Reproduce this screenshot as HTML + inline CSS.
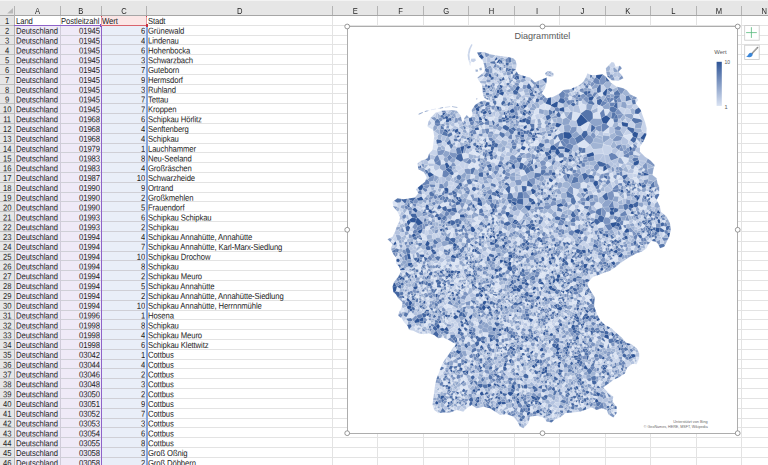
<!DOCTYPE html>
<html lang="de"><head><meta charset="utf-8"><title>Kartendiagramm</title>
<style>
html,body{margin:0;padding:0;}
body{width:768px;height:465px;overflow:hidden;background:#fff;position:relative;font-family:"Liberation Sans",sans-serif;font-size:7.7px;color:#1c1c1c;}
.abs{position:absolute;}
#hdr{left:0;top:0;width:768px;height:15.4px;background:#e6e6e6;}
#topstrip{left:0;top:0;width:768px;height:1px;background:#f3f3f3;}
#rowhdr{left:0;top:15.4px;width:14.3px;height:450px;background:#e6e6e6;}
.ch{transform:scaleY(1.15);position:absolute;top:6.5px;height:9.8px;line-height:9.8px;text-align:center;font-size:7.6px;color:#262626;}
.rh{position:absolute;left:0;width:14.3px;text-align:center;font-size:7.6px;color:#262626;height:9.82px;line-height:12.4px;overflow:hidden;transform-origin:0 4.7px;}
.c{letter-spacing:-0.08px;position:absolute;height:9.82px;line-height:12.6px;white-space:nowrap;overflow:hidden;transform-origin:0 4.7px;}
.d{letter-spacing:-0.11px;}
.r{text-align:right;}
.vl{position:absolute;width:1px;background:#e3e3e3;top:15.4px;height:450px;}
.hl{position:absolute;height:1px;background:#e3e3e3;left:14.3px;width:754px;}
.hvl{position:absolute;width:1px;background:#b4b4b4;top:6.3px;height:9.1px;}
.rhl{position:absolute;height:1px;background:#bdbdbd;left:0;width:14.3px;}
</style></head>
<body>
<div class="abs" style="left:14.3px;top:25.22px;width:86.9px;height:439.78px;background:#efeaf7"></div>
<div class="abs" style="left:101.2px;top:25.22px;width:45.7px;height:439.78px;background:#e9eef8"></div>
<div class="abs" style="left:101.2px;top:15.4px;width:45.7px;height:9.82px;background:#fbe6e6"></div>
<div class="vl" style="left:13.8px"></div>
<div class="vl" style="left:60.1px"></div>
<div class="vl" style="left:100.7px"></div>
<div class="vl" style="left:146.4px"></div>
<div class="vl" style="left:332.0px"></div>
<div class="vl" style="left:377.45px"></div>
<div class="vl" style="left:422.9px"></div>
<div class="vl" style="left:468.35px"></div>
<div class="vl" style="left:513.8px"></div>
<div class="vl" style="left:559.25px"></div>
<div class="vl" style="left:604.7px"></div>
<div class="vl" style="left:650.15px"></div>
<div class="vl" style="left:695.6px"></div>
<div class="vl" style="left:741.05px"></div>
<div class="hl" style="top:24.72px"></div>
<div class="hl" style="top:34.54px"></div>
<div class="hl" style="top:44.36px"></div>
<div class="hl" style="top:54.18px"></div>
<div class="hl" style="top:64.00px"></div>
<div class="hl" style="top:73.82px"></div>
<div class="hl" style="top:83.64px"></div>
<div class="hl" style="top:93.46px"></div>
<div class="hl" style="top:103.28px"></div>
<div class="hl" style="top:113.10px"></div>
<div class="hl" style="top:122.92px"></div>
<div class="hl" style="top:132.74px"></div>
<div class="hl" style="top:142.56px"></div>
<div class="hl" style="top:152.38px"></div>
<div class="hl" style="top:162.20px"></div>
<div class="hl" style="top:172.02px"></div>
<div class="hl" style="top:181.84px"></div>
<div class="hl" style="top:191.66px"></div>
<div class="hl" style="top:201.48px"></div>
<div class="hl" style="top:211.30px"></div>
<div class="hl" style="top:221.12px"></div>
<div class="hl" style="top:230.94px"></div>
<div class="hl" style="top:240.76px"></div>
<div class="hl" style="top:250.58px"></div>
<div class="hl" style="top:260.40px"></div>
<div class="hl" style="top:270.22px"></div>
<div class="hl" style="top:280.04px"></div>
<div class="hl" style="top:289.86px"></div>
<div class="hl" style="top:299.68px"></div>
<div class="hl" style="top:309.50px"></div>
<div class="hl" style="top:319.32px"></div>
<div class="hl" style="top:329.14px"></div>
<div class="hl" style="top:338.96px"></div>
<div class="hl" style="top:348.78px"></div>
<div class="hl" style="top:358.60px"></div>
<div class="hl" style="top:368.42px"></div>
<div class="hl" style="top:378.24px"></div>
<div class="hl" style="top:388.06px"></div>
<div class="hl" style="top:397.88px"></div>
<div class="hl" style="top:407.70px"></div>
<div class="hl" style="top:417.52px"></div>
<div class="hl" style="top:427.34px"></div>
<div class="hl" style="top:437.16px"></div>
<div class="hl" style="top:446.98px"></div>
<div class="hl" style="top:456.80px"></div>
<div class="abs" style="left:14.3px;width:132.6px;top:34.54px;height:1px;background:#cfcfd6"></div>
<div class="abs" style="left:14.3px;width:132.6px;top:44.36px;height:1px;background:#cfcfd6"></div>
<div class="abs" style="left:14.3px;width:132.6px;top:54.18px;height:1px;background:#cfcfd6"></div>
<div class="abs" style="left:14.3px;width:132.6px;top:64.00px;height:1px;background:#cfcfd6"></div>
<div class="abs" style="left:14.3px;width:132.6px;top:73.82px;height:1px;background:#cfcfd6"></div>
<div class="abs" style="left:14.3px;width:132.6px;top:83.64px;height:1px;background:#cfcfd6"></div>
<div class="abs" style="left:14.3px;width:132.6px;top:93.46px;height:1px;background:#cfcfd6"></div>
<div class="abs" style="left:14.3px;width:132.6px;top:103.28px;height:1px;background:#cfcfd6"></div>
<div class="abs" style="left:14.3px;width:132.6px;top:113.10px;height:1px;background:#cfcfd6"></div>
<div class="abs" style="left:14.3px;width:132.6px;top:122.92px;height:1px;background:#cfcfd6"></div>
<div class="abs" style="left:14.3px;width:132.6px;top:132.74px;height:1px;background:#cfcfd6"></div>
<div class="abs" style="left:14.3px;width:132.6px;top:142.56px;height:1px;background:#cfcfd6"></div>
<div class="abs" style="left:14.3px;width:132.6px;top:152.38px;height:1px;background:#cfcfd6"></div>
<div class="abs" style="left:14.3px;width:132.6px;top:162.20px;height:1px;background:#cfcfd6"></div>
<div class="abs" style="left:14.3px;width:132.6px;top:172.02px;height:1px;background:#cfcfd6"></div>
<div class="abs" style="left:14.3px;width:132.6px;top:181.84px;height:1px;background:#cfcfd6"></div>
<div class="abs" style="left:14.3px;width:132.6px;top:191.66px;height:1px;background:#cfcfd6"></div>
<div class="abs" style="left:14.3px;width:132.6px;top:201.48px;height:1px;background:#cfcfd6"></div>
<div class="abs" style="left:14.3px;width:132.6px;top:211.30px;height:1px;background:#cfcfd6"></div>
<div class="abs" style="left:14.3px;width:132.6px;top:221.12px;height:1px;background:#cfcfd6"></div>
<div class="abs" style="left:14.3px;width:132.6px;top:230.94px;height:1px;background:#cfcfd6"></div>
<div class="abs" style="left:14.3px;width:132.6px;top:240.76px;height:1px;background:#cfcfd6"></div>
<div class="abs" style="left:14.3px;width:132.6px;top:250.58px;height:1px;background:#cfcfd6"></div>
<div class="abs" style="left:14.3px;width:132.6px;top:260.40px;height:1px;background:#cfcfd6"></div>
<div class="abs" style="left:14.3px;width:132.6px;top:270.22px;height:1px;background:#cfcfd6"></div>
<div class="abs" style="left:14.3px;width:132.6px;top:280.04px;height:1px;background:#cfcfd6"></div>
<div class="abs" style="left:14.3px;width:132.6px;top:289.86px;height:1px;background:#cfcfd6"></div>
<div class="abs" style="left:14.3px;width:132.6px;top:299.68px;height:1px;background:#cfcfd6"></div>
<div class="abs" style="left:14.3px;width:132.6px;top:309.50px;height:1px;background:#cfcfd6"></div>
<div class="abs" style="left:14.3px;width:132.6px;top:319.32px;height:1px;background:#cfcfd6"></div>
<div class="abs" style="left:14.3px;width:132.6px;top:329.14px;height:1px;background:#cfcfd6"></div>
<div class="abs" style="left:14.3px;width:132.6px;top:338.96px;height:1px;background:#cfcfd6"></div>
<div class="abs" style="left:14.3px;width:132.6px;top:348.78px;height:1px;background:#cfcfd6"></div>
<div class="abs" style="left:14.3px;width:132.6px;top:358.60px;height:1px;background:#cfcfd6"></div>
<div class="abs" style="left:14.3px;width:132.6px;top:368.42px;height:1px;background:#cfcfd6"></div>
<div class="abs" style="left:14.3px;width:132.6px;top:378.24px;height:1px;background:#cfcfd6"></div>
<div class="abs" style="left:14.3px;width:132.6px;top:388.06px;height:1px;background:#cfcfd6"></div>
<div class="abs" style="left:14.3px;width:132.6px;top:397.88px;height:1px;background:#cfcfd6"></div>
<div class="abs" style="left:14.3px;width:132.6px;top:407.70px;height:1px;background:#cfcfd6"></div>
<div class="abs" style="left:14.3px;width:132.6px;top:417.52px;height:1px;background:#cfcfd6"></div>
<div class="abs" style="left:14.3px;width:132.6px;top:427.34px;height:1px;background:#cfcfd6"></div>
<div class="abs" style="left:14.3px;width:132.6px;top:437.16px;height:1px;background:#cfcfd6"></div>
<div class="abs" style="left:14.3px;width:132.6px;top:446.98px;height:1px;background:#cfcfd6"></div>
<div class="abs" style="left:14.3px;width:132.6px;top:456.80px;height:1px;background:#cfcfd6"></div>
<div class="abs" style="left:60.1px;width:1px;top:25.22px;height:439.78px;background:#cfcbd8"></div>
<div id="hdr" class="abs"></div><div id="topstrip" class="abs"></div><div id="rowhdr" class="abs"></div>
<div class="abs" style="left:0;top:14.8px;width:768px;height:1px;background:#a6a6a6"></div>
<div class="abs" style="left:13.700000000000001px;top:6.3px;width:1px;height:459px;background:#b4b4b4"></div>
<svg class="abs" style="left:0;top:0" width="15" height="16"><polygon points="13,8 13,13.5 7.2,13.5" fill="#b9b9b9"/></svg>
<div class="ch" style="left:14.3px;width:46.30px">A</div>
<div class="hvl" style="left:60.0px"></div>
<div class="ch" style="left:60.6px;width:40.60px">B</div>
<div class="hvl" style="left:100.60000000000001px"></div>
<div class="ch" style="left:101.2px;width:45.70px">C</div>
<div class="hvl" style="left:146.3px"></div>
<div class="ch" style="left:146.9px;width:185.60px">D</div>
<div class="hvl" style="left:331.9px"></div>
<div class="ch" style="left:332.5px;width:45.45px">E</div>
<div class="hvl" style="left:377.34999999999997px"></div>
<div class="ch" style="left:377.95px;width:45.45px">F</div>
<div class="hvl" style="left:422.79999999999995px"></div>
<div class="ch" style="left:423.4px;width:45.45px">G</div>
<div class="hvl" style="left:468.25px"></div>
<div class="ch" style="left:468.85px;width:45.45px">H</div>
<div class="hvl" style="left:513.6999999999999px"></div>
<div class="ch" style="left:514.3px;width:45.45px">I</div>
<div class="hvl" style="left:559.15px"></div>
<div class="ch" style="left:559.75px;width:45.45px">J</div>
<div class="hvl" style="left:604.6px"></div>
<div class="ch" style="left:605.2px;width:45.45px">K</div>
<div class="hvl" style="left:650.05px"></div>
<div class="ch" style="left:650.65px;width:45.45px">L</div>
<div class="hvl" style="left:695.5px"></div>
<div class="ch" style="left:696.1px;width:45.45px">M</div>
<div class="hvl" style="left:740.9499999999999px"></div>
<div class="ch" style="left:741.55px;width:45.45px">N</div>
<div class="ch" style="left:787.0px;width:45.45px">O</div>
<div class="rh" style="top:15px;transform:translateY(0.55px) scaleY(1.13) rotate(0.03deg)">1</div>
<div class="rhl" style="top:24.72px"></div>
<div class="rh" style="top:25px;transform:translateY(0.37px) scaleY(1.13) rotate(0.03deg)">2</div>
<div class="rhl" style="top:34.54px"></div>
<div class="rh" style="top:35px;transform:translateY(0.19px) scaleY(1.13) rotate(0.03deg)">3</div>
<div class="rhl" style="top:44.36px"></div>
<div class="rh" style="top:44px;transform:translateY(1.01px) scaleY(1.13) rotate(0.03deg)">4</div>
<div class="rhl" style="top:54.18px"></div>
<div class="rh" style="top:54px;transform:translateY(0.83px) scaleY(1.13) rotate(0.03deg)">5</div>
<div class="rhl" style="top:64.00px"></div>
<div class="rh" style="top:64px;transform:translateY(0.65px) scaleY(1.13) rotate(0.03deg)">6</div>
<div class="rhl" style="top:73.82px"></div>
<div class="rh" style="top:74px;transform:translateY(0.47px) scaleY(1.13) rotate(0.03deg)">7</div>
<div class="rhl" style="top:83.64px"></div>
<div class="rh" style="top:84px;transform:translateY(0.29px) scaleY(1.13) rotate(0.03deg)">8</div>
<div class="rhl" style="top:93.46px"></div>
<div class="rh" style="top:93px;transform:translateY(1.11px) scaleY(1.13) rotate(0.03deg)">9</div>
<div class="rhl" style="top:103.28px"></div>
<div class="rh" style="top:103px;transform:translateY(0.93px) scaleY(1.13) rotate(0.03deg)">10</div>
<div class="rhl" style="top:113.10px"></div>
<div class="rh" style="top:113px;transform:translateY(0.75px) scaleY(1.13) rotate(0.03deg)">11</div>
<div class="rhl" style="top:122.92px"></div>
<div class="rh" style="top:123px;transform:translateY(0.57px) scaleY(1.13) rotate(0.03deg)">12</div>
<div class="rhl" style="top:132.74px"></div>
<div class="rh" style="top:133px;transform:translateY(0.39px) scaleY(1.13) rotate(0.03deg)">13</div>
<div class="rhl" style="top:142.56px"></div>
<div class="rh" style="top:143px;transform:translateY(0.21px) scaleY(1.13) rotate(0.03deg)">14</div>
<div class="rhl" style="top:152.38px"></div>
<div class="rh" style="top:152px;transform:translateY(1.03px) scaleY(1.13) rotate(0.03deg)">15</div>
<div class="rhl" style="top:162.20px"></div>
<div class="rh" style="top:162px;transform:translateY(0.85px) scaleY(1.13) rotate(0.03deg)">16</div>
<div class="rhl" style="top:172.02px"></div>
<div class="rh" style="top:172px;transform:translateY(0.67px) scaleY(1.13) rotate(0.03deg)">17</div>
<div class="rhl" style="top:181.84px"></div>
<div class="rh" style="top:182px;transform:translateY(0.49px) scaleY(1.13) rotate(0.03deg)">18</div>
<div class="rhl" style="top:191.66px"></div>
<div class="rh" style="top:192px;transform:translateY(0.31px) scaleY(1.13) rotate(0.03deg)">19</div>
<div class="rhl" style="top:201.48px"></div>
<div class="rh" style="top:201px;transform:translateY(1.13px) scaleY(1.13) rotate(0.03deg)">20</div>
<div class="rhl" style="top:211.30px"></div>
<div class="rh" style="top:211px;transform:translateY(0.95px) scaleY(1.13) rotate(0.03deg)">21</div>
<div class="rhl" style="top:221.12px"></div>
<div class="rh" style="top:221px;transform:translateY(0.77px) scaleY(1.13) rotate(0.03deg)">22</div>
<div class="rhl" style="top:230.94px"></div>
<div class="rh" style="top:231px;transform:translateY(0.59px) scaleY(1.13) rotate(0.03deg)">23</div>
<div class="rhl" style="top:240.76px"></div>
<div class="rh" style="top:241px;transform:translateY(0.41px) scaleY(1.13) rotate(0.03deg)">24</div>
<div class="rhl" style="top:250.58px"></div>
<div class="rh" style="top:251px;transform:translateY(0.23px) scaleY(1.13) rotate(0.03deg)">25</div>
<div class="rhl" style="top:260.40px"></div>
<div class="rh" style="top:260px;transform:translateY(1.05px) scaleY(1.13) rotate(0.03deg)">26</div>
<div class="rhl" style="top:270.22px"></div>
<div class="rh" style="top:270px;transform:translateY(0.87px) scaleY(1.13) rotate(0.03deg)">27</div>
<div class="rhl" style="top:280.04px"></div>
<div class="rh" style="top:280px;transform:translateY(0.69px) scaleY(1.13) rotate(0.03deg)">28</div>
<div class="rhl" style="top:289.86px"></div>
<div class="rh" style="top:290px;transform:translateY(0.51px) scaleY(1.13) rotate(0.03deg)">29</div>
<div class="rhl" style="top:299.68px"></div>
<div class="rh" style="top:300px;transform:translateY(0.33px) scaleY(1.13) rotate(0.03deg)">30</div>
<div class="rhl" style="top:309.50px"></div>
<div class="rh" style="top:310px;transform:translateY(0.15px) scaleY(1.13) rotate(0.03deg)">31</div>
<div class="rhl" style="top:319.32px"></div>
<div class="rh" style="top:319px;transform:translateY(0.97px) scaleY(1.13) rotate(0.03deg)">32</div>
<div class="rhl" style="top:329.14px"></div>
<div class="rh" style="top:329px;transform:translateY(0.79px) scaleY(1.13) rotate(0.03deg)">33</div>
<div class="rhl" style="top:338.96px"></div>
<div class="rh" style="top:339px;transform:translateY(0.61px) scaleY(1.13) rotate(0.03deg)">34</div>
<div class="rhl" style="top:348.78px"></div>
<div class="rh" style="top:349px;transform:translateY(0.43px) scaleY(1.13) rotate(0.03deg)">35</div>
<div class="rhl" style="top:358.60px"></div>
<div class="rh" style="top:359px;transform:translateY(0.25px) scaleY(1.13) rotate(0.03deg)">36</div>
<div class="rhl" style="top:368.42px"></div>
<div class="rh" style="top:368px;transform:translateY(1.07px) scaleY(1.13) rotate(0.03deg)">37</div>
<div class="rhl" style="top:378.24px"></div>
<div class="rh" style="top:378px;transform:translateY(0.89px) scaleY(1.13) rotate(0.03deg)">38</div>
<div class="rhl" style="top:388.06px"></div>
<div class="rh" style="top:388px;transform:translateY(0.71px) scaleY(1.13) rotate(0.03deg)">39</div>
<div class="rhl" style="top:397.88px"></div>
<div class="rh" style="top:398px;transform:translateY(0.53px) scaleY(1.13) rotate(0.03deg)">40</div>
<div class="rhl" style="top:407.70px"></div>
<div class="rh" style="top:408px;transform:translateY(0.35px) scaleY(1.13) rotate(0.03deg)">41</div>
<div class="rhl" style="top:417.52px"></div>
<div class="rh" style="top:418px;transform:translateY(0.17px) scaleY(1.13) rotate(0.03deg)">42</div>
<div class="rhl" style="top:427.34px"></div>
<div class="rh" style="top:427px;transform:translateY(0.99px) scaleY(1.13) rotate(0.03deg)">43</div>
<div class="rhl" style="top:437.16px"></div>
<div class="rh" style="top:437px;transform:translateY(0.81px) scaleY(1.13) rotate(0.03deg)">44</div>
<div class="rhl" style="top:446.98px"></div>
<div class="rh" style="top:447px;transform:translateY(0.63px) scaleY(1.13) rotate(0.03deg)">45</div>
<div class="rhl" style="top:456.80px"></div>
<div class="rh" style="top:457px;transform:translateY(0.45px) scaleY(1.13) rotate(0.03deg)">46</div>
<div class="rhl" style="top:466.62px"></div>
<div class="c" style="top:15px;transform:translateY(0.55px) scaleY(1.13) rotate(0.03deg);left:16.1px;width:44.199999999999996px">Land</div>
<div class="c" style="top:15px;transform:translateY(0.55px) scaleY(1.13) rotate(0.03deg);left:61.4px;width:39.4px">Postleitzahl</div>
<div class="c" style="top:15px;transform:translateY(0.55px) scaleY(1.13) rotate(0.03deg);left:102.4px;width:43.7px">Wert</div>
<div class="c d" style="top:15px;transform:translateY(0.55px) scaleY(1.13) rotate(0.03deg);left:147.9px;width:184px">Stadt</div>
<div class="c" style="top:25px;transform:translateY(0.37px) scaleY(1.13) rotate(0.03deg);left:16.1px;width:44.199999999999996px">Deutschland</div>
<div class="c r" style="top:25px;transform:translateY(0.37px) scaleY(1.13) rotate(0.03deg);left:60.6px;width:39.0px">01945</div>
<div class="c r" style="top:25px;transform:translateY(0.37px) scaleY(1.13) rotate(0.03deg);left:101.2px;width:44.1px">6</div>
<div class="c d" style="top:25px;transform:translateY(0.37px) scaleY(1.13) rotate(0.03deg);left:147.9px;width:184px">Grünewald</div>
<div class="c" style="top:35px;transform:translateY(0.19px) scaleY(1.13) rotate(0.03deg);left:16.1px;width:44.199999999999996px">Deutschland</div>
<div class="c r" style="top:35px;transform:translateY(0.19px) scaleY(1.13) rotate(0.03deg);left:60.6px;width:39.0px">01945</div>
<div class="c r" style="top:35px;transform:translateY(0.19px) scaleY(1.13) rotate(0.03deg);left:101.2px;width:44.1px">4</div>
<div class="c d" style="top:35px;transform:translateY(0.19px) scaleY(1.13) rotate(0.03deg);left:147.9px;width:184px">Lindenau</div>
<div class="c" style="top:44px;transform:translateY(1.01px) scaleY(1.13) rotate(0.03deg);left:16.1px;width:44.199999999999996px">Deutschland</div>
<div class="c r" style="top:44px;transform:translateY(1.01px) scaleY(1.13) rotate(0.03deg);left:60.6px;width:39.0px">01945</div>
<div class="c r" style="top:44px;transform:translateY(1.01px) scaleY(1.13) rotate(0.03deg);left:101.2px;width:44.1px">6</div>
<div class="c d" style="top:44px;transform:translateY(1.01px) scaleY(1.13) rotate(0.03deg);left:147.9px;width:184px">Hohenbocka</div>
<div class="c" style="top:54px;transform:translateY(0.83px) scaleY(1.13) rotate(0.03deg);left:16.1px;width:44.199999999999996px">Deutschland</div>
<div class="c r" style="top:54px;transform:translateY(0.83px) scaleY(1.13) rotate(0.03deg);left:60.6px;width:39.0px">01945</div>
<div class="c r" style="top:54px;transform:translateY(0.83px) scaleY(1.13) rotate(0.03deg);left:101.2px;width:44.1px">3</div>
<div class="c d" style="top:54px;transform:translateY(0.83px) scaleY(1.13) rotate(0.03deg);left:147.9px;width:184px">Schwarzbach</div>
<div class="c" style="top:64px;transform:translateY(0.65px) scaleY(1.13) rotate(0.03deg);left:16.1px;width:44.199999999999996px">Deutschland</div>
<div class="c r" style="top:64px;transform:translateY(0.65px) scaleY(1.13) rotate(0.03deg);left:60.6px;width:39.0px">01945</div>
<div class="c r" style="top:64px;transform:translateY(0.65px) scaleY(1.13) rotate(0.03deg);left:101.2px;width:44.1px">7</div>
<div class="c d" style="top:64px;transform:translateY(0.65px) scaleY(1.13) rotate(0.03deg);left:147.9px;width:184px">Guteborn</div>
<div class="c" style="top:74px;transform:translateY(0.47px) scaleY(1.13) rotate(0.03deg);left:16.1px;width:44.199999999999996px">Deutschland</div>
<div class="c r" style="top:74px;transform:translateY(0.47px) scaleY(1.13) rotate(0.03deg);left:60.6px;width:39.0px">01945</div>
<div class="c r" style="top:74px;transform:translateY(0.47px) scaleY(1.13) rotate(0.03deg);left:101.2px;width:44.1px">9</div>
<div class="c d" style="top:74px;transform:translateY(0.47px) scaleY(1.13) rotate(0.03deg);left:147.9px;width:184px">Hermsdorf</div>
<div class="c" style="top:84px;transform:translateY(0.29px) scaleY(1.13) rotate(0.03deg);left:16.1px;width:44.199999999999996px">Deutschland</div>
<div class="c r" style="top:84px;transform:translateY(0.29px) scaleY(1.13) rotate(0.03deg);left:60.6px;width:39.0px">01945</div>
<div class="c r" style="top:84px;transform:translateY(0.29px) scaleY(1.13) rotate(0.03deg);left:101.2px;width:44.1px">3</div>
<div class="c d" style="top:84px;transform:translateY(0.29px) scaleY(1.13) rotate(0.03deg);left:147.9px;width:184px">Ruhland</div>
<div class="c" style="top:93px;transform:translateY(1.11px) scaleY(1.13) rotate(0.03deg);left:16.1px;width:44.199999999999996px">Deutschland</div>
<div class="c r" style="top:93px;transform:translateY(1.11px) scaleY(1.13) rotate(0.03deg);left:60.6px;width:39.0px">01945</div>
<div class="c r" style="top:93px;transform:translateY(1.11px) scaleY(1.13) rotate(0.03deg);left:101.2px;width:44.1px">7</div>
<div class="c d" style="top:93px;transform:translateY(1.11px) scaleY(1.13) rotate(0.03deg);left:147.9px;width:184px">Tettau</div>
<div class="c" style="top:103px;transform:translateY(0.93px) scaleY(1.13) rotate(0.03deg);left:16.1px;width:44.199999999999996px">Deutschland</div>
<div class="c r" style="top:103px;transform:translateY(0.93px) scaleY(1.13) rotate(0.03deg);left:60.6px;width:39.0px">01945</div>
<div class="c r" style="top:103px;transform:translateY(0.93px) scaleY(1.13) rotate(0.03deg);left:101.2px;width:44.1px">7</div>
<div class="c d" style="top:103px;transform:translateY(0.93px) scaleY(1.13) rotate(0.03deg);left:147.9px;width:184px">Kroppen</div>
<div class="c" style="top:113px;transform:translateY(0.75px) scaleY(1.13) rotate(0.03deg);left:16.1px;width:44.199999999999996px">Deutschland</div>
<div class="c r" style="top:113px;transform:translateY(0.75px) scaleY(1.13) rotate(0.03deg);left:60.6px;width:39.0px">01968</div>
<div class="c r" style="top:113px;transform:translateY(0.75px) scaleY(1.13) rotate(0.03deg);left:101.2px;width:44.1px">6</div>
<div class="c d" style="top:113px;transform:translateY(0.75px) scaleY(1.13) rotate(0.03deg);left:147.9px;width:184px">Schipkau Hörlitz</div>
<div class="c" style="top:123px;transform:translateY(0.57px) scaleY(1.13) rotate(0.03deg);left:16.1px;width:44.199999999999996px">Deutschland</div>
<div class="c r" style="top:123px;transform:translateY(0.57px) scaleY(1.13) rotate(0.03deg);left:60.6px;width:39.0px">01968</div>
<div class="c r" style="top:123px;transform:translateY(0.57px) scaleY(1.13) rotate(0.03deg);left:101.2px;width:44.1px">4</div>
<div class="c d" style="top:123px;transform:translateY(0.57px) scaleY(1.13) rotate(0.03deg);left:147.9px;width:184px">Senftenberg</div>
<div class="c" style="top:133px;transform:translateY(0.39px) scaleY(1.13) rotate(0.03deg);left:16.1px;width:44.199999999999996px">Deutschland</div>
<div class="c r" style="top:133px;transform:translateY(0.39px) scaleY(1.13) rotate(0.03deg);left:60.6px;width:39.0px">01968</div>
<div class="c r" style="top:133px;transform:translateY(0.39px) scaleY(1.13) rotate(0.03deg);left:101.2px;width:44.1px">4</div>
<div class="c d" style="top:133px;transform:translateY(0.39px) scaleY(1.13) rotate(0.03deg);left:147.9px;width:184px">Schipkau</div>
<div class="c" style="top:143px;transform:translateY(0.21px) scaleY(1.13) rotate(0.03deg);left:16.1px;width:44.199999999999996px">Deutschland</div>
<div class="c r" style="top:143px;transform:translateY(0.21px) scaleY(1.13) rotate(0.03deg);left:60.6px;width:39.0px">01979</div>
<div class="c r" style="top:143px;transform:translateY(0.21px) scaleY(1.13) rotate(0.03deg);left:101.2px;width:44.1px">1</div>
<div class="c d" style="top:143px;transform:translateY(0.21px) scaleY(1.13) rotate(0.03deg);left:147.9px;width:184px">Lauchhammer</div>
<div class="c" style="top:152px;transform:translateY(1.03px) scaleY(1.13) rotate(0.03deg);left:16.1px;width:44.199999999999996px">Deutschland</div>
<div class="c r" style="top:152px;transform:translateY(1.03px) scaleY(1.13) rotate(0.03deg);left:60.6px;width:39.0px">01983</div>
<div class="c r" style="top:152px;transform:translateY(1.03px) scaleY(1.13) rotate(0.03deg);left:101.2px;width:44.1px">8</div>
<div class="c d" style="top:152px;transform:translateY(1.03px) scaleY(1.13) rotate(0.03deg);left:147.9px;width:184px">Neu-Seeland</div>
<div class="c" style="top:162px;transform:translateY(0.85px) scaleY(1.13) rotate(0.03deg);left:16.1px;width:44.199999999999996px">Deutschland</div>
<div class="c r" style="top:162px;transform:translateY(0.85px) scaleY(1.13) rotate(0.03deg);left:60.6px;width:39.0px">01983</div>
<div class="c r" style="top:162px;transform:translateY(0.85px) scaleY(1.13) rotate(0.03deg);left:101.2px;width:44.1px">4</div>
<div class="c d" style="top:162px;transform:translateY(0.85px) scaleY(1.13) rotate(0.03deg);left:147.9px;width:184px">Großräschen</div>
<div class="c" style="top:172px;transform:translateY(0.67px) scaleY(1.13) rotate(0.03deg);left:16.1px;width:44.199999999999996px">Deutschland</div>
<div class="c r" style="top:172px;transform:translateY(0.67px) scaleY(1.13) rotate(0.03deg);left:60.6px;width:39.0px">01987</div>
<div class="c r" style="top:172px;transform:translateY(0.67px) scaleY(1.13) rotate(0.03deg);left:101.2px;width:44.1px">10</div>
<div class="c d" style="top:172px;transform:translateY(0.67px) scaleY(1.13) rotate(0.03deg);left:147.9px;width:184px">Schwarzheide</div>
<div class="c" style="top:182px;transform:translateY(0.49px) scaleY(1.13) rotate(0.03deg);left:16.1px;width:44.199999999999996px">Deutschland</div>
<div class="c r" style="top:182px;transform:translateY(0.49px) scaleY(1.13) rotate(0.03deg);left:60.6px;width:39.0px">01990</div>
<div class="c r" style="top:182px;transform:translateY(0.49px) scaleY(1.13) rotate(0.03deg);left:101.2px;width:44.1px">9</div>
<div class="c d" style="top:182px;transform:translateY(0.49px) scaleY(1.13) rotate(0.03deg);left:147.9px;width:184px">Ortrand</div>
<div class="c" style="top:192px;transform:translateY(0.31px) scaleY(1.13) rotate(0.03deg);left:16.1px;width:44.199999999999996px">Deutschland</div>
<div class="c r" style="top:192px;transform:translateY(0.31px) scaleY(1.13) rotate(0.03deg);left:60.6px;width:39.0px">01990</div>
<div class="c r" style="top:192px;transform:translateY(0.31px) scaleY(1.13) rotate(0.03deg);left:101.2px;width:44.1px">2</div>
<div class="c d" style="top:192px;transform:translateY(0.31px) scaleY(1.13) rotate(0.03deg);left:147.9px;width:184px">Großkmehlen</div>
<div class="c" style="top:201px;transform:translateY(1.13px) scaleY(1.13) rotate(0.03deg);left:16.1px;width:44.199999999999996px">Deutschland</div>
<div class="c r" style="top:201px;transform:translateY(1.13px) scaleY(1.13) rotate(0.03deg);left:60.6px;width:39.0px">01990</div>
<div class="c r" style="top:201px;transform:translateY(1.13px) scaleY(1.13) rotate(0.03deg);left:101.2px;width:44.1px">5</div>
<div class="c d" style="top:201px;transform:translateY(1.13px) scaleY(1.13) rotate(0.03deg);left:147.9px;width:184px">Frauendorf</div>
<div class="c" style="top:211px;transform:translateY(0.95px) scaleY(1.13) rotate(0.03deg);left:16.1px;width:44.199999999999996px">Deutschland</div>
<div class="c r" style="top:211px;transform:translateY(0.95px) scaleY(1.13) rotate(0.03deg);left:60.6px;width:39.0px">01993</div>
<div class="c r" style="top:211px;transform:translateY(0.95px) scaleY(1.13) rotate(0.03deg);left:101.2px;width:44.1px">6</div>
<div class="c d" style="top:211px;transform:translateY(0.95px) scaleY(1.13) rotate(0.03deg);left:147.9px;width:184px">Schipkau Schipkau</div>
<div class="c" style="top:221px;transform:translateY(0.77px) scaleY(1.13) rotate(0.03deg);left:16.1px;width:44.199999999999996px">Deutschland</div>
<div class="c r" style="top:221px;transform:translateY(0.77px) scaleY(1.13) rotate(0.03deg);left:60.6px;width:39.0px">01993</div>
<div class="c r" style="top:221px;transform:translateY(0.77px) scaleY(1.13) rotate(0.03deg);left:101.2px;width:44.1px">2</div>
<div class="c d" style="top:221px;transform:translateY(0.77px) scaleY(1.13) rotate(0.03deg);left:147.9px;width:184px">Schipkau</div>
<div class="c" style="top:231px;transform:translateY(0.59px) scaleY(1.13) rotate(0.03deg);left:16.1px;width:44.199999999999996px">Deutschland</div>
<div class="c r" style="top:231px;transform:translateY(0.59px) scaleY(1.13) rotate(0.03deg);left:60.6px;width:39.0px">01994</div>
<div class="c r" style="top:231px;transform:translateY(0.59px) scaleY(1.13) rotate(0.03deg);left:101.2px;width:44.1px">4</div>
<div class="c d" style="top:231px;transform:translateY(0.59px) scaleY(1.13) rotate(0.03deg);left:147.9px;width:184px">Schipkau Annahütte, Annahütte</div>
<div class="c" style="top:241px;transform:translateY(0.41px) scaleY(1.13) rotate(0.03deg);left:16.1px;width:44.199999999999996px">Deutschland</div>
<div class="c r" style="top:241px;transform:translateY(0.41px) scaleY(1.13) rotate(0.03deg);left:60.6px;width:39.0px">01994</div>
<div class="c r" style="top:241px;transform:translateY(0.41px) scaleY(1.13) rotate(0.03deg);left:101.2px;width:44.1px">7</div>
<div class="c d" style="top:241px;transform:translateY(0.41px) scaleY(1.13) rotate(0.03deg);left:147.9px;width:184px">Schipkau Annahütte, Karl-Marx-Siedlung</div>
<div class="c" style="top:251px;transform:translateY(0.23px) scaleY(1.13) rotate(0.03deg);left:16.1px;width:44.199999999999996px">Deutschland</div>
<div class="c r" style="top:251px;transform:translateY(0.23px) scaleY(1.13) rotate(0.03deg);left:60.6px;width:39.0px">01994</div>
<div class="c r" style="top:251px;transform:translateY(0.23px) scaleY(1.13) rotate(0.03deg);left:101.2px;width:44.1px">10</div>
<div class="c d" style="top:251px;transform:translateY(0.23px) scaleY(1.13) rotate(0.03deg);left:147.9px;width:184px">Schipkau Drochow</div>
<div class="c" style="top:260px;transform:translateY(1.05px) scaleY(1.13) rotate(0.03deg);left:16.1px;width:44.199999999999996px">Deutschland</div>
<div class="c r" style="top:260px;transform:translateY(1.05px) scaleY(1.13) rotate(0.03deg);left:60.6px;width:39.0px">01994</div>
<div class="c r" style="top:260px;transform:translateY(1.05px) scaleY(1.13) rotate(0.03deg);left:101.2px;width:44.1px">8</div>
<div class="c d" style="top:260px;transform:translateY(1.05px) scaleY(1.13) rotate(0.03deg);left:147.9px;width:184px">Schipkau</div>
<div class="c" style="top:270px;transform:translateY(0.87px) scaleY(1.13) rotate(0.03deg);left:16.1px;width:44.199999999999996px">Deutschland</div>
<div class="c r" style="top:270px;transform:translateY(0.87px) scaleY(1.13) rotate(0.03deg);left:60.6px;width:39.0px">01994</div>
<div class="c r" style="top:270px;transform:translateY(0.87px) scaleY(1.13) rotate(0.03deg);left:101.2px;width:44.1px">2</div>
<div class="c d" style="top:270px;transform:translateY(0.87px) scaleY(1.13) rotate(0.03deg);left:147.9px;width:184px">Schipkau Meuro</div>
<div class="c" style="top:280px;transform:translateY(0.69px) scaleY(1.13) rotate(0.03deg);left:16.1px;width:44.199999999999996px">Deutschland</div>
<div class="c r" style="top:280px;transform:translateY(0.69px) scaleY(1.13) rotate(0.03deg);left:60.6px;width:39.0px">01994</div>
<div class="c r" style="top:280px;transform:translateY(0.69px) scaleY(1.13) rotate(0.03deg);left:101.2px;width:44.1px">5</div>
<div class="c d" style="top:280px;transform:translateY(0.69px) scaleY(1.13) rotate(0.03deg);left:147.9px;width:184px">Schipkau Annahütte</div>
<div class="c" style="top:290px;transform:translateY(0.51px) scaleY(1.13) rotate(0.03deg);left:16.1px;width:44.199999999999996px">Deutschland</div>
<div class="c r" style="top:290px;transform:translateY(0.51px) scaleY(1.13) rotate(0.03deg);left:60.6px;width:39.0px">01994</div>
<div class="c r" style="top:290px;transform:translateY(0.51px) scaleY(1.13) rotate(0.03deg);left:101.2px;width:44.1px">2</div>
<div class="c d" style="top:290px;transform:translateY(0.51px) scaleY(1.13) rotate(0.03deg);left:147.9px;width:184px">Schipkau Annahütte, Annahütte-Siedlung</div>
<div class="c" style="top:300px;transform:translateY(0.33px) scaleY(1.13) rotate(0.03deg);left:16.1px;width:44.199999999999996px">Deutschland</div>
<div class="c r" style="top:300px;transform:translateY(0.33px) scaleY(1.13) rotate(0.03deg);left:60.6px;width:39.0px">01994</div>
<div class="c r" style="top:300px;transform:translateY(0.33px) scaleY(1.13) rotate(0.03deg);left:101.2px;width:44.1px">10</div>
<div class="c d" style="top:300px;transform:translateY(0.33px) scaleY(1.13) rotate(0.03deg);left:147.9px;width:184px">Schipkau Annahütte, Herrnnmühle</div>
<div class="c" style="top:310px;transform:translateY(0.15px) scaleY(1.13) rotate(0.03deg);left:16.1px;width:44.199999999999996px">Deutschland</div>
<div class="c r" style="top:310px;transform:translateY(0.15px) scaleY(1.13) rotate(0.03deg);left:60.6px;width:39.0px">01996</div>
<div class="c r" style="top:310px;transform:translateY(0.15px) scaleY(1.13) rotate(0.03deg);left:101.2px;width:44.1px">1</div>
<div class="c d" style="top:310px;transform:translateY(0.15px) scaleY(1.13) rotate(0.03deg);left:147.9px;width:184px">Hosena</div>
<div class="c" style="top:319px;transform:translateY(0.97px) scaleY(1.13) rotate(0.03deg);left:16.1px;width:44.199999999999996px">Deutschland</div>
<div class="c r" style="top:319px;transform:translateY(0.97px) scaleY(1.13) rotate(0.03deg);left:60.6px;width:39.0px">01998</div>
<div class="c r" style="top:319px;transform:translateY(0.97px) scaleY(1.13) rotate(0.03deg);left:101.2px;width:44.1px">8</div>
<div class="c d" style="top:319px;transform:translateY(0.97px) scaleY(1.13) rotate(0.03deg);left:147.9px;width:184px">Schipkau</div>
<div class="c" style="top:329px;transform:translateY(0.79px) scaleY(1.13) rotate(0.03deg);left:16.1px;width:44.199999999999996px">Deutschland</div>
<div class="c r" style="top:329px;transform:translateY(0.79px) scaleY(1.13) rotate(0.03deg);left:60.6px;width:39.0px">01998</div>
<div class="c r" style="top:329px;transform:translateY(0.79px) scaleY(1.13) rotate(0.03deg);left:101.2px;width:44.1px">4</div>
<div class="c d" style="top:329px;transform:translateY(0.79px) scaleY(1.13) rotate(0.03deg);left:147.9px;width:184px">Schipkau Meuro</div>
<div class="c" style="top:339px;transform:translateY(0.61px) scaleY(1.13) rotate(0.03deg);left:16.1px;width:44.199999999999996px">Deutschland</div>
<div class="c r" style="top:339px;transform:translateY(0.61px) scaleY(1.13) rotate(0.03deg);left:60.6px;width:39.0px">01998</div>
<div class="c r" style="top:339px;transform:translateY(0.61px) scaleY(1.13) rotate(0.03deg);left:101.2px;width:44.1px">6</div>
<div class="c d" style="top:339px;transform:translateY(0.61px) scaleY(1.13) rotate(0.03deg);left:147.9px;width:184px">Schipkau Klettwitz</div>
<div class="c" style="top:349px;transform:translateY(0.43px) scaleY(1.13) rotate(0.03deg);left:16.1px;width:44.199999999999996px">Deutschland</div>
<div class="c r" style="top:349px;transform:translateY(0.43px) scaleY(1.13) rotate(0.03deg);left:60.6px;width:39.0px">03042</div>
<div class="c r" style="top:349px;transform:translateY(0.43px) scaleY(1.13) rotate(0.03deg);left:101.2px;width:44.1px">1</div>
<div class="c d" style="top:349px;transform:translateY(0.43px) scaleY(1.13) rotate(0.03deg);left:147.9px;width:184px">Cottbus</div>
<div class="c" style="top:359px;transform:translateY(0.25px) scaleY(1.13) rotate(0.03deg);left:16.1px;width:44.199999999999996px">Deutschland</div>
<div class="c r" style="top:359px;transform:translateY(0.25px) scaleY(1.13) rotate(0.03deg);left:60.6px;width:39.0px">03044</div>
<div class="c r" style="top:359px;transform:translateY(0.25px) scaleY(1.13) rotate(0.03deg);left:101.2px;width:44.1px">4</div>
<div class="c d" style="top:359px;transform:translateY(0.25px) scaleY(1.13) rotate(0.03deg);left:147.9px;width:184px">Cottbus</div>
<div class="c" style="top:368px;transform:translateY(1.07px) scaleY(1.13) rotate(0.03deg);left:16.1px;width:44.199999999999996px">Deutschland</div>
<div class="c r" style="top:368px;transform:translateY(1.07px) scaleY(1.13) rotate(0.03deg);left:60.6px;width:39.0px">03046</div>
<div class="c r" style="top:368px;transform:translateY(1.07px) scaleY(1.13) rotate(0.03deg);left:101.2px;width:44.1px">2</div>
<div class="c d" style="top:368px;transform:translateY(1.07px) scaleY(1.13) rotate(0.03deg);left:147.9px;width:184px">Cottbus</div>
<div class="c" style="top:378px;transform:translateY(0.89px) scaleY(1.13) rotate(0.03deg);left:16.1px;width:44.199999999999996px">Deutschland</div>
<div class="c r" style="top:378px;transform:translateY(0.89px) scaleY(1.13) rotate(0.03deg);left:60.6px;width:39.0px">03048</div>
<div class="c r" style="top:378px;transform:translateY(0.89px) scaleY(1.13) rotate(0.03deg);left:101.2px;width:44.1px">3</div>
<div class="c d" style="top:378px;transform:translateY(0.89px) scaleY(1.13) rotate(0.03deg);left:147.9px;width:184px">Cottbus</div>
<div class="c" style="top:388px;transform:translateY(0.71px) scaleY(1.13) rotate(0.03deg);left:16.1px;width:44.199999999999996px">Deutschland</div>
<div class="c r" style="top:388px;transform:translateY(0.71px) scaleY(1.13) rotate(0.03deg);left:60.6px;width:39.0px">03050</div>
<div class="c r" style="top:388px;transform:translateY(0.71px) scaleY(1.13) rotate(0.03deg);left:101.2px;width:44.1px">2</div>
<div class="c d" style="top:388px;transform:translateY(0.71px) scaleY(1.13) rotate(0.03deg);left:147.9px;width:184px">Cottbus</div>
<div class="c" style="top:398px;transform:translateY(0.53px) scaleY(1.13) rotate(0.03deg);left:16.1px;width:44.199999999999996px">Deutschland</div>
<div class="c r" style="top:398px;transform:translateY(0.53px) scaleY(1.13) rotate(0.03deg);left:60.6px;width:39.0px">03051</div>
<div class="c r" style="top:398px;transform:translateY(0.53px) scaleY(1.13) rotate(0.03deg);left:101.2px;width:44.1px">9</div>
<div class="c d" style="top:398px;transform:translateY(0.53px) scaleY(1.13) rotate(0.03deg);left:147.9px;width:184px">Cottbus</div>
<div class="c" style="top:408px;transform:translateY(0.35px) scaleY(1.13) rotate(0.03deg);left:16.1px;width:44.199999999999996px">Deutschland</div>
<div class="c r" style="top:408px;transform:translateY(0.35px) scaleY(1.13) rotate(0.03deg);left:60.6px;width:39.0px">03052</div>
<div class="c r" style="top:408px;transform:translateY(0.35px) scaleY(1.13) rotate(0.03deg);left:101.2px;width:44.1px">7</div>
<div class="c d" style="top:408px;transform:translateY(0.35px) scaleY(1.13) rotate(0.03deg);left:147.9px;width:184px">Cottbus</div>
<div class="c" style="top:418px;transform:translateY(0.17px) scaleY(1.13) rotate(0.03deg);left:16.1px;width:44.199999999999996px">Deutschland</div>
<div class="c r" style="top:418px;transform:translateY(0.17px) scaleY(1.13) rotate(0.03deg);left:60.6px;width:39.0px">03053</div>
<div class="c r" style="top:418px;transform:translateY(0.17px) scaleY(1.13) rotate(0.03deg);left:101.2px;width:44.1px">3</div>
<div class="c d" style="top:418px;transform:translateY(0.17px) scaleY(1.13) rotate(0.03deg);left:147.9px;width:184px">Cottbus</div>
<div class="c" style="top:427px;transform:translateY(0.99px) scaleY(1.13) rotate(0.03deg);left:16.1px;width:44.199999999999996px">Deutschland</div>
<div class="c r" style="top:427px;transform:translateY(0.99px) scaleY(1.13) rotate(0.03deg);left:60.6px;width:39.0px">03054</div>
<div class="c r" style="top:427px;transform:translateY(0.99px) scaleY(1.13) rotate(0.03deg);left:101.2px;width:44.1px">6</div>
<div class="c d" style="top:427px;transform:translateY(0.99px) scaleY(1.13) rotate(0.03deg);left:147.9px;width:184px">Cottbus</div>
<div class="c" style="top:437px;transform:translateY(0.81px) scaleY(1.13) rotate(0.03deg);left:16.1px;width:44.199999999999996px">Deutschland</div>
<div class="c r" style="top:437px;transform:translateY(0.81px) scaleY(1.13) rotate(0.03deg);left:60.6px;width:39.0px">03055</div>
<div class="c r" style="top:437px;transform:translateY(0.81px) scaleY(1.13) rotate(0.03deg);left:101.2px;width:44.1px">8</div>
<div class="c d" style="top:437px;transform:translateY(0.81px) scaleY(1.13) rotate(0.03deg);left:147.9px;width:184px">Cottbus</div>
<div class="c" style="top:447px;transform:translateY(0.63px) scaleY(1.13) rotate(0.03deg);left:16.1px;width:44.199999999999996px">Deutschland</div>
<div class="c r" style="top:447px;transform:translateY(0.63px) scaleY(1.13) rotate(0.03deg);left:60.6px;width:39.0px">03058</div>
<div class="c r" style="top:447px;transform:translateY(0.63px) scaleY(1.13) rotate(0.03deg);left:101.2px;width:44.1px">3</div>
<div class="c d" style="top:447px;transform:translateY(0.63px) scaleY(1.13) rotate(0.03deg);left:147.9px;width:184px">Groß Oßnig</div>
<div class="c" style="top:457px;transform:translateY(0.45px) scaleY(1.13) rotate(0.03deg);left:16.1px;width:44.199999999999996px">Deutschland</div>
<div class="c r" style="top:457px;transform:translateY(0.45px) scaleY(1.13) rotate(0.03deg);left:60.6px;width:39.0px">03058</div>
<div class="c r" style="top:457px;transform:translateY(0.45px) scaleY(1.13) rotate(0.03deg);left:101.2px;width:44.1px">2</div>
<div class="c d" style="top:457px;transform:translateY(0.45px) scaleY(1.13) rotate(0.03deg);left:147.9px;width:184px">Groß Döbbern</div>
<div class="abs" style="left:14.3px;top:24.82px;width:86.9px;height:1.1px;background:#8f63c9"></div>
<div class="abs" style="left:100.60000000000001px;top:24.82px;width:1.2px;height:450px;background:#8f63c9"></div>
<div class="abs" style="left:100.10000000000001px;top:24.32px;width:2.2px;height:2.2px;background:#7c4fc0"></div>
<div class="abs" style="left:146.1px;top:26.419999999999998px;width:1.5px;height:450px;background:#86a7de"></div>
<div class="abs" style="left:101.2px;top:24.82px;width:45.7px;height:1.4px;background:#d8636d"></div>
<div class="abs" style="left:101.0px;top:15.9px;width:0.7px;height:9.82px;background:#e29aa0"></div>
<div class="abs" style="left:146.4px;top:15.9px;width:0.7px;height:9.82px;background:#e29aa0"></div>
<div class="abs" style="left:100.60000000000001px;top:15.6px;width:1.4px;height:1.2px;background:#cf3e49"></div>
<div class="abs" style="left:145.70000000000002px;top:15.6px;width:1.8px;height:1.2px;background:#cf3e49"></div>
<div class="abs" style="left:145.6px;top:24.32px;width:2.3px;height:2.3px;background:#c9303c"></div>
<div class="abs" style="left:346.7px;top:26.0px;width:389.5px;height:405.7px;background:#fff;border:1px solid #adadad;box-sizing:content-box"></div>
<svg class="abs" style="left:0;top:0" width="768" height="465" viewBox="0 0 768 465">
<defs><filter id="bl" x="-5%" y="-5%" width="110%" height="110%"><feGaussianBlur stdDeviation="5"/></filter></defs><g transform="scale(0.1)" stroke="#fff" stroke-width="1.2" stroke-linejoin="round" filter="url(#bl)">
<path fill="#dae3f3" d="M5066 3630l37 5 0-1-16-31-1 0zM5827 2083l-32-18-21 23 27 9zM5552 2660l-16 13 0 2 28 14 2-18zM4994 1986l-5-15-26-11-2 3-4 26 7 7 15 3 14-10zM4444 1218l-21-13-21 13-2 11 6 17 25-8zM6046 2252l2-8-18-23-27 1-32 27 13 32 48-5zM4343 2077l-21 32 32-4 2-1 5-15zM4821 1192l-4 14 5 12 21 13 13-15-14-26-10-2zM5669 2416l-27-21-17 21 3 3 34 8zM6270 1967l-7-38-25-3-1 1-2 5 9 52 17 2zM4548 2660l-18 5-9 37 20 8 21-9 2-18zM6657 2339l-17-21-12 5 0 49zM4725 1873l-15-30-25 1-9 22 24 34 1 1 16-5zM5096 1490l-43-12-1 20 16 21 26 0zM5313 1196l44-6-8-42-11-8-3 1-24 33zM4740 2577l-2-3-13 0-7 5-4 8 11 10zM6456 2359l-6-19-9-11-2 1-7 4-15 22 4 19 12 4 15-3zM4561 2858l-2 28 13 11 20-12 0-2-25-28zM5764 3971l-15 16 2 14 4 4 24-5zM6178 3379l-14 5 2 14 20 2 1-11zM4950 2391l-24-25-17 16 19 14 20-3zM5193 834l-7 25 14 16 23 4 10-35-8-20-17-7zM5814 3879l-7-16-23 21-1 5 16 8zM4890 850l-15-25-8-3-9 15 20 20 12-4zM4565 3914l28 13 8-16-4-10-6-2zM5420 4035l-3 5 25 31 2-1 15-36-8-9-30 9zM4452 2765l-30 2-4 7 2 8 14 6 19-16zM5921 2644l9 0 4-17-13-8-1 1zM4786 2855l-1-1-30-3-4 4 28 27 7-9zM4445 3053l-11 12-1 6 25 27 24-25-15-27-3 0zM5405 3304l7-15-13-13-13 3-18 17 17 11 13 0zM5208 1253l10-11 2-16-23-6-14 19 5 7zM5912 2565l-13-11-27 10 2 7 9 7 11 4zM4815 1084l5 9 29-2 8-28-8-10-2 0-32 19zM4773 3907l1 10 25 19 9-19-6-11zM5052 3434l-13-9-10 5-1 1 21 32 17 2zM6143 673l34 33 13-46-32 7-5-11zM5262 3487l4-7-27-19-13 15 1 15zM4167 2513l2 6 3 1 53-27-16-18zM4635 3884l-2-3-26 4-10 16 4 10 16 2zM4788 3008l10-9-16-31-17 2-1 30zM5785 2972l-10 11 1 12 26 9 17-10-2-22zM4588 3698l5-7 4-17-20-12-10 20 6 17zM5948 3632l25 10 4-5-2-28-20-2zM5427 4143l-16 12-4 13 26 7 1 1 3-19-1-5-7-9zM4609 1380l-3-8-9-5-23 10-4 8 8 14zM4001 2148l7-26-15-17-19 11 1 1 16 35zM4516 2616l-6 22 14 25 6 2 18-5 4-11-6-26zM5485 3402l-21 16 26 14-4-30zM4984 987l1-2-6-9-33 8 1 18 15 8zM4739 3241l21-8 5-7-17-18-20 14zM4501 1956l-16-7-11 13 15 26 13-1zM6013 3396l-4 18 31 20 5-16zM5724 3399l-6 13 5 12 10 1 8-11-15-15zM6136 2187l-29 12-2 32 58-12-3-14zM6220 3595l10 13 7 0 17-16-2-12-30-17-1 1zM4468 2619l-12-22-4-2-28 30 33 21 2 0zM5290 3922l8-4 5-23-31-14-7 6 16 34zM6032 3377l22 34 30-2 2-16-47-21zM5885 2313l15-12 0-4-11-16-4 0-11 33zM5789 1058l21 75 53-38 0-45-44-15zM6561 1992l-31 13-5 12 24 21 26-22-8-16 2-5zM5789 1058l30-23-4-25-27 0-1 2-3 42zM5815 3151l-6 2-5 26 17 9 12-29zM4849 1289l1-1 2-41-9-11-20 16 5 36zM5150 3559l13 14 18-27-4-8-14-6-15 7zM5768 4026l20 10-6-36-2 0zM4725 1995l-25-48-8-4-5 3-19 42 1 3 51 13zM5319 2196l18 12 2 0 25-14 0-1 1-10-30-12-15 17zM5139 3166l9-36-12-7-14 4-7 17 1 12 22 10zM4710 1741l-2 1-7 46 4 2 40-11 6-25-21-12zM4658 1406l3-13-26-5 2 21 4 5zM4782 2833l-19-7-8 25 30 3zM6052 1157l15-1 32-48-6-17-55-2zM5214 3294l18-16-5-27-14-3-12 3-2 2-6 18 11 19zM5098 973l2 10 32 13 5-9-9-27zM5295 4076l7 17 26 2-2-32-19-3-5 5zM5341 3057l21-10-2-25-12-1zM4509 1489l-19-39-16-4-23 29 0 28 0 1 42 13zM4830 2306l-20 18 0 2 3 4 36 2 2-9zM4436 2674l-5-13-15-7-3 3-6 12 14 22zM5108 746l4 29 10 0 9-31-3-2-14-1zM4670 3400l11 15 18 4 9-8 7-19-15-16-13 0zM4851 1379l-24-8-10 15 8 20 1 0zM5018 3522l-11-10-3 0-10 9 7 10 15 0zM5221 3882l-17-1-10 4-3 32 1 1 20-2 7-4 10-19 2-9zM6493 1978l-4-9-24-3 0 21 6 6zM5001 4085l2 1 17-2 2-9-25-17-7 12zM6044 2706l-11-7-16 10 1 4 8 7 15-5zM5685 2090l42 21 6-1 20-19-11-44-16-3zM4349 1631l-10-32-34-6-25 20 4 19 63 4 2-2zM5863 2419l4 10 12 5 26-14 0-40-26-8zM5298 2726l4 1 20-8 1-2-1-22-8-12-2 0-16 39zM6396 2097l27-4-3-19-37-20-7 11zM5542 1443l52-32-42-16-12 1zM5585 1886l-8-11-25-2-14 16 5 8 41-11zM6393 1821l-10-28-18 10-7 20 12 14 17-7 6-6zM5144 3629l4 16 6 4 12 4 10-4 6-34-11-6zM4344 2932l12 7 14-1 11-23-11-19zM4607 2907l-13 11 9 15 6 0 5-7-3-16zM4794 2546l-29-11-10 15 9 24 16-2zM6365 1803l-29-4 10 23 12 1zM5579 2832l-33 15 26 33 13-10-1-33zM4906 3478l15 13 20-6-7-38-29 21zM6210 2253l8 33 20-11-6-24-3-2zM5719 2582l0 1 21 23 18-13-16-18zM5237 912l-48 14 28 33 28-12 1-16zM5573 1719l-10 16 22 9 13-20-9-11zM5709 3567l17-10-6-14-26 1-2 2zM4101 2147l-9-3-9 5 8 49 1 0 31-23zM5101 3654l-34-4-12 17 14 15 24-8 9-19zM4998 848l32 9 6-2-3-25-12-8zM5425 3997l-14-22-4 1-18 26 27 9zM4682 3255l-13 0-16 17 26 20 8-2zM5366 2686l-18-23-6-1-8 13 24 25zM4549 3152l-19-11-4 2 1 22 3 6 1 0zM6095 2602l-1 1 15 23 1 0 29-13 2-17-11-5zM4418 2834l-7-2-11 15 14 18 24-6-2-12zM6487 2143l20-11-1-13-9-4-13 13zM5061 4068l-35 0-4 7-2 9 9 13 0 1zM4256 2085l-2-12-27 1-1 3 23 13 5-1zM4973 2096l41-8 0-1-16-21-31 16-3 6zM4828 2669l30-5 1-1 3-15-19-22-18 11-6 13zM4217 2600l10 15 2 1 18-7-8-39-11 3zM5076 3937l-16 20 8 36 12 2 10-4 6-34zM4884 3092l-24-15-17 27 21 9 22-5zM5485 2131l-6-10-38 19 22 30 8 1zM5555 3599l-29 6 0 1 3 12 7 5 23-13zM5227 3092l-5-31-31-5 2 5 29 34zM4485 3212l-15-15-5-2-16 2 4 24 19 15zM5237 3926l-6 15 16 7 14-3 1-15-11-9zM4925 681l0 46 9 3 30-11-1-9-34-30zM5678 2719l19 23 12-8 1-4-4-15-4-2-21 1-3 4zM4666 3849l-31 15-2 17 2 3 21 16 24-2 7-6-14-38zM5891 3479l2 27 23-22zM4391 1769l4 1 14-1 13-6 9-54-34-23-40 23-12 40zM5295 3179l39 17 4-28-29-14-14 3-3 9zM5459 3289l19-6-5-19-10-1-6 23zM5647 2994l-8 21 19 3 6-18zM6066 3748l-20 13 4 16 18 9 15-20 0-9zM5442 1231l10-22-35-27-15 6 10 38 7 7zM5733 2521l26-6 1 0 2-18-32 1-4 19zM5954 2128l-41 12 5 36 27 10 11-54zM4661 2405l-36-11-6 29 39 8 5-3zM4661 2837l13-19-17-2zM4121 2273l31-49-44-1-23 31 18 20zM5320 1462l0 1 31-3-6-31-5-4-27 13zM5517 3246l-25-3-4 11 14 26 14 4 20-19zM4613 3587l-36 15 1 31 31-3 2-2zM5979 2576l-15 16-4 27 23 8 22-17-2-16zM5768 3041l3-30-1-5-24 5-12 21 1 3 26 10zM5666 3083l-6 1-3 14 12 4 9-9zM4277 2736l7 3 23-22-21-8zM3990 2588l18-17-16-16-17 0-14 10-3 7 9 11-1 5zM3959 2913l31 6 13-31-33-20zM5515 2296l-5 19 7 7 15-4 2-16zM6496 2011l15 12 14-6 5-12-18-22-1 0-6 2-10 20zM5003 3762l4-2 7-24-23-9-11 19zM4861 2761l-8-13-4-2-12 1-15 14 3 15 21 4 13-7zM4947 3065l6 7 7 0 7-11-13-16-11 6zM5309 1901l12-18 0-14-51-8-2 2-4 44zM5280 2408l1 11 17 9 4-24-4-2zM5557 2633l23-16-20-28-9 41zM4707 3008l-9 49 4 5 20-6 13-18zM4393 2509l-7 13 22 36 27-32 0-4zM5516 3218l-31 5-1 1 0 4 8 15 25 3 6-17zM5511 3409l-9 29 18 7 14-12 0-25zM5459 3289l-2-3-12-6-26 9 20 15zM5658 3936l-14-18-18 9-6 15 29 22 3-1zM6340 1709l41-5 2-11-2-2-32-30-15 35zM4511 2937l-25-5-3 0-1 8 8 10 2 0 10-3zM4482 4044l-6-25-6-2-26 26 3 13 18 6zM5326 995l17 31 13-5 4-29-29 0zM5435 3064l-13-11-13 18 2 3 3 2zM4430 3806l-4 4-3 7 11 11 16-1 9-7-4-13zM4945 2220l-9 26 35 2 1-4-17-25zM6232 2251l27-2 4-6-21-35-7 0-6 41zM5020 1751l0 14 21 11 15-19-7-14-17 0zM5928 1135l1 50 82 3 2-4-14-55-22-12zM5275 1002l6-4 2-17-29-10-3 6 3 24zM5849 3623l6 29 4 1 19-12-5-15zM5417 1274l34 6 1-2 8-29-18-18-23 2-9 27zM5590 4159l-2-1-14 11 4 14 21-8zM4664 3773l-19 8-8 24 14 15 9 4 17-17-3-25zM4691 4041l-18-4-19 15 14 30 29-19zM5462 1621l-8 31 18 22 3 1 45-27-4-8-39-25zM6347 1862l22 18 1 0 8-6-10-33-16 7-5 11zM4146 2539l2 39 25-2-14-44zM5520 3007l23 13 10-2 4-11-5-12-1 0-28 3zM5052 2103l8 18 29 0 15-23-20-24-14-5zM5726 3369l-1-2-5-2-22 6-7 21 30 0zM4362 1402l-24-6-5 37-2 16 37-9zM4962 632l-2 1 6 12 26 9 6-14-14-12zM5115 2581l-18 36 18 6 17-15-2-24-4-4zM5363 3159l6-5 6-19-20-9 5 32zM5448 2215l16 28 27-16 3-11-18-16zM5462 3529l-10 11-6 12 3 14 11 12 39-13 1-2-7-22-24-15zM5879 2372l26 8 20-4 5-15-8-13-19-9-28 20-2 3zM4311 3231l-3-23-1-2-21-5-9 3 10 27zM5714 997l6-27 0-3-29-6-10 14 6 24 14 3zM4181 2449l-19-1-9 10 12 25 24-23zM4274 3040l20 6 9-6-8-18-11 0-7 5zM6084 1723l-4-23-7-10-40 25-2 3 1 18 1 2zM5621 2920l-12 1 1 8 12 12 13-6zM4436 2019l-41 31 25 24 33-15-5-31zM4671 3328l-12-11-21 13-2 25 2 1 28-6zM4805 3036l20-1 2-11-27-25-2 0-10 9 1 18zM4833 2868l20-29-14-4-22 14 5 20zM5145 3685l1 1 23-10-3-23-12-4zM4682 2626l-9 16 0 1 17-6-1-10zM4635 3864l-21-18-1-1-18 22 12 18 26-4zM4944 2183l29 7 2-2-2-15-23-15-13 17zM5327 4035l20 11 2 0 3-18-6-13-18 5zM5778 1541l-5 19 20 2 5-8zM4364 2706l2-9-6-14-6-4-16 7-4 31zM5046 1889l-19 38 8 10 44 1 5-5-33-44zM5041 1148l-16 6-2 19 26 3 2-26zM5554 3162l-9-9-9 7 9 11 7-2zM4222 3278l-8 3-26 20 10 17 25-5 0-35zM4342 1749l2 0 1 0 12-40-19-24-32 6-2 31zM4752 1549l37-15-1-3-29-13-13 18 0 11zM4068 2398l-13-7-14 11-1 23 1 1 32-10zM5158 3731l17-6 5-15-9-7-20 1-6 11 0 4zM3995 2436l-9-29-12-3-16 11 8 28 11 8 13-3 3-3zM5206 2111l-19 47 33 28 22-47zM4719 2510l8-18-17-13-4 0-1 24zM4717 2842l-2-1-26 8 9 31 15 1 9-11zM5552 1321l20 26 5 1 32-18-26-29-11-1zM4892 1295l-1 23 33-5 1-15zM5716 1201l48 7 46-67-1-7-77-17-6 3zM6052 2543l-9 34 11 7 21-18 2-10 0-1-12-14zM4050 2959l-6 8 1 3 25 8-5-19zM5420 1991l3-13-9-23-18 31 10 12 6 0zM5999 3230l1 0 13-17-13-13-1-2-6 5 3 22zM5467 2616l-9-8-13-4-13 9 16 32 15-14zM5182 3305l18 22 3 0 13-19-2-14-10-4zM4416 1886l-14 38 14 14 27-43-1-14zM5347 3269l12-4 16-12 2-16-21-9-14 17 0 21zM5434 2745l21 13 12-20-5-14-10-4-1 0-12 8-5 15zM5592 1578l-8 34 5 5 42-22 1-20zM6074 3613l-4 9 2 16 19-1-5-27zM4126 2037l-9-1-19 9-3 5 5 18 10 1 15-20zM5339 1994l22-19-23-35-16-1-23 22-3 14zM5852 2910l-22-5-8 15 15 38 4 0 6-4 6-39zM5756 892l-11-6-15 30 9 4 20-10zM4455 2774l-2-2-19 16 6 11 6 0 11-14zM4017 2195l-22 4-1 5 16 37 3 0 8-4 10-16zM6092 1270l-62 51 0 1 61 8zM5397 1521l22 24 29-15 2-10-5-3-46-4zM4842 3711l9-14-5-17-21-11-1 0-13 23 27 19zM5223 3018l30 12 10-8-15-17-22 2-4 7zM6346 3621l2-1 1-24-20-6-2 15zM5599 2402l10-28-23-9-13 15 23 22zM5509 3084l3 0-11-44-7-3-7 2-2 31 5 5zM5027 733l-7-4-18 7 12 28 20 3 0-1 4-6zM6471 1941l2 0 16-23-1-3-29-7-6 10zM6106 1780l-12 19 13 24 1 0 30-6 18-25-24-20zM5685 2634l22-12 0-27-32-6-14 13zM4837 2054l32 13 13-16-19-23zM5164 3940l26-13 2-9-1-1-41-15-11 23zM5273 2510l0-1-20-16-19 13-2 9 3 8 37-10zM5200 1022l1-11-13-17-14 3-12 22 10 12 8 2zM4727 2717l11-18-14-9-17 8-2 10 9 9zM4931 3968l-24-17-2 0-10 29 0 1 4 3 32-11zM5531 1299l5 18 6 0 14-25-8-5-16 9zM5552 2549l-7 22 7 12 8 2 7-3 6-12-12-24zM6451 1691l-19-9-17 25 4 7 21 0zM5082 4094l-1-5-42 13 20 22 2 0zM5692 3099l12 8 15-16-6-7-21 14zM4458 3875l-6-13-17 9 9 21 12-8zM5836 3746l1-18-14-14-24 22 23 20zM4332 1270l-34-18-22 7-1 8 57 32zM4431 2661l26-15-33-21-8 3 0 26zM4913 3835l-3 8 7 16 0 1 18-8 4-22-4-7zM5594 1411l8 0-25-54-25 38zM5196 1525l3 4 49 1-7-24-33-19zM4657 2916l20 17 14-50-13-2-19 12zM6278 1881l-4 7 8 18 10-3 3-12-6-10zM5264 3199l-26-1-4 13 10 17zM5360 2289l27-11-2-13-33 12 1 5zM5466 4187l-5-7-8-5-17 3 23 29zM4675 2698l3 10 2 1 25-1 2-10-10-18-5 2zM6113 3353l-25 6 1 31 36-7 1-21zM4724 2227l-9 17 3 21 14 2 32-29-6-15zM4796 1254l-2-1-11 18 10 26 3 1 18-2 7-6zM6043 3446l-6 9 2 15 23 19 6-5 13-46zM5027 2726l23-3 1-2-28-32-4 7 1 21zM5382 2864l11 48 17-3 2-7-11-34-15-8zM5222 2606l12 13 23-14 7-23-17-4-15 7zM4942 3565l-1-1-22-6-15 8 0 1 3 12 23 12 6 0zM5200 2772l22 13 8-17-25-12-1 0zM5978 3608l28 23 10-12-5-29-15-3zM4292 1666l-10-16-34 39 3 9 18 1 24-20zM5083 4083l-2 6 1 5 14 25 7 3 18-15-8-30-27 4zM5692 2853l-15 20-1 3 10 15 2 1 21-31zM5465 1893l-26-4-3 4-7 17 4 5 30 10 12-21zM4336 2651l15 10 24-18 0-11-35 0zM6031 1718l-43-29-23 24 2 8 44 21 21-6zM5193 2289l-6-9-22-8-17 16 5 20 6 5 17 1zM4526 3143l4-2 14-17-20-19-9 15 5 19zM6303 1463l17 17 16-9-5-26-27 10zM4665 3758l-34-16-3 30 17 9 19-8zM4616 2896l-5-10-13 5 1 5 8 7zM5045 1096l5-15-4-15-22-12-6 0-9 11 10 34zM5787 4042l-4 5-8 27 5 7 28-11-1-3zM5163 2936l-15 2-6 14 4 6 23-6 3-9zM4051 2209l19 4 13-14-26-19-13 8zM4619 3938l17 3 3-2 5-13 0-4-25-7zM4899 2535l12-24-39-31-11 27 33 32zM4864 2316l-13 7-2 9 2 11 4 1 8-2 12-16zM5983 3391l-17-17-13 28 10 9 10-3zM5670 2937l1-13-22-18-2 0-1 2-8 27 4 4 23 1zM5184 4073l-7 6-9 29 15 9 15 3 9-41zM5722 1645l26-16-4-15-25-8-7 11zM5345 1429l39-12-3-11-28-5-15 13 2 11zM5044 3493l-20-15-9 12 8 13 18 1 4-5zM6181 2559l-15-12-7 5-11 31 1 6 26 0 9-17zM4403 1155l21-8 2-21-12-17-44 13 1 1zM4394 1079l-2 0-5 9 12-2zM6178 1796l29-35-9-10-28 1-6 39zM4520 2161l-8 39 35 8 16-18-18-38zM6118 4034l-29 2 2 22 2 2 14-1zM4063 2368l23 3 2-30-29 15zM6142 3567l16 23 10-2 16-13 1-3-7-19-10-7-24 17zM4913 1119l4 3 6 0 23-11-5-14-23-3-10 8zM4924 1722l-12-11-18-2-8 13 7 27 16 1zM5375 3654l-5 10 22 18 13-20-6-11zM5837 4046l-21 3-9 18 1 3 10 8 24-25zM5184 2216l37-30-1 0-33-28-10 4-10 37 4 8zM5495 2448l-14 12 3 18 5 5 21-1 5-17-15-17zM5613 1722l-14 2 16 32 14 9 14-19zM4231 2797l-12-14-19 2-6 18 5 10 9 6 23-17zM5930 2742l36 6-5-24-24-3-3 3-5 16zM4990 3723l14-15 2-6-16-21-17 30zM5300 2831l-6-36-23 8-4 18 22 17zM4470 3992l-4 13 4 12 6 2 15 0 11-7-10-30zM4275 3244l-17-13-18 5 2 30 16 1 16-13zM4799 1551l-6-13-4-4-37 15 18 16zM4671 3553l-12 10-1 20 24 15 11-5 6-13-9-23zM4601 2777l-23 8 10 21 22-12-2-15zM4748 1588l17 27 10-4 4-26-8-8zM5146 3388l-19-14-15 7 7 20 23-3zM5500 3603l-16 9 0 20 22 16 1 0 5-14zM5220 3500l2 31 18 0 7-12-3-9-19-14zM5360 2140l23 6 1-1 8-20-23-6-8 7zM5527 1885l11 4 14-16-14-9zM5911 3329l-9-15-21 2-2 2 9 24 18-4zM4736 3377l-11 11 32 31 11-7-1-17-14-18zM5045 3499l-4 5-1 2 6 16 22 5 7-17-2-3zM5887 2995l-9-10-19 1-13 20 22 13 11-3zM4239 1991l22-23 0-11-20-14-20 3-5 19 16 28zM4533 1780l23-15-21-19-14 6-1 25zM4650 3379l0 17 20 4 17-24-11-13-1 0zM5379 1235l-7-42-14-2-12 48 26 6zM5513 1236l3 1 21-13-18-36-1 0-16 37zM4286 2254l-30 13-8 26 5 3 28 8 19-13-1-10zM5977 3963l-45-5-3 16 38 14 3-1 8-23zM4124 2542l-24-8-3 1 13 56 6 3 13-6zM6142 4121l-7-4-17 9-2 3 31 29 5-7zM5966 3374l-1-3-22 4-8 26 18 1zM6518 2156l-9 14 28 10 9-4 0-14zM5784 2153l15 0 17-29-2-6-10-3-18 10zM6343 1890l-2 3-1 9 9 9 24-4-3-27-1 0zM4795 1140l5 27 4 1 23-12 5-15-4-6-17-3zM4182 2665l1 30 2 2 24-7 1-17zM4781 1648l-30-3-8 31 10 12 25 10 18-19-1-10zM4541 3702l4-8 0-5-15-21-15 25 12 16zM4691 2145l23 3 12-8 10-19-31-22-19 10zM4978 2146l6-19-6-4-29 4 1 22zM4478 3037l-11 9 15 27 36 4 10-20 0-2zM4997 1023l14 6 20-27-3-21-43 4-1 2zM5878 3970l13 22 3-1 12-16-10-13-15 3zM4011 2631l-26-9-4 1 2 23 19 0zM5457 2826l-6-27-1-1-30 14 25 31 2 0zM6054 2485l-7-1-20 19-1 1 3 11 29-6zM5814 2118l21-24 0-11-8 0-26 14 3 18zM4659 3314l-20-24-22 12-3 15 24 13 21-13zM4572 1226l-25 5-1 24 42 22 2-1 3-6-4-20zM5667 2786l8 4 17-7 3-19-4-9-1 0-25 10-4 13zM5578 1554l-7-1-20 21 2 30 5 5 26 3 8-34zM5992 1768l-35-16-15 12-1 24 8 17 29 4 16-19zM5394 2745l-17 31 11 12 23-3 7-9-5-17zM5745 4047l0 3 38-3 4-5 1-5 0-1-20-10-1 0zM4188 2950l-13 11-1 18 2 4 5 2 2 0 7-3 6-16-6-16zM4746 1536l13-18 0-8-14-19-19 4-5 13zM6352 995l7 46 6 2-7-10 25-33-13-21zM4550 1348l7-13 0-3-12-17-28-1-1 1-2 5 12 31 15 3zM5266 1600l0-13-5-7-40 1-17 45 28 6zM5202 3705l7 5 22-13-3-31-5-2-28 17zM4944 3528l-19-2-6 32 22 6 4-36zM5962 2696l8 18 17 1 14-19 0-2-30-12-7 8zM5011 2000l16-22-20-2-13 10-1 3zM4433 3158l-15 10 13 26 6 1 2-1zM6331 1177l75 16-22-54-35-1-16 12zM5052 3434l29 5 10-6-8-24-1-1-39 10-4 7zM5850 3447l-14-16-9 1-5 6 3 25 11 5 2-1zM6040 3434l3 12 38-8 4-2 6-7-7-20-30 2-9 7zM4111 2722l1 10 21 4 11-13-18-15-8-1-2 2zM4675 2047l-21-13-4 1-22 45 1 3 35 6 19-28zM4986 843l-37-1-4 20 22 3 19-21zM5137 786l-7 11-1 11 28 9 6-17-24-15zM4468 3346l-1 46 9 4 27-20 1-28-17-14zM5991 958l19 10 25-16-8-23-19-10-28 11zM4231 2517l-39 17 6 12 42-1zM4985 2338l-15-10-12 6 18 8 9-3zM5809 2203l-8 4-5 4 3 30 7 5 14 1 17-15-5-20zM5415 3358l21-7-6-14-24 2-7 9zM6292 2321l-1 2 2 27 37 5-8-32zM6055 3936l-3 6 13 33 20 4 4-5-20-45zM4485 2454l-5-6-43 18 5 16 47 6 5-3 1-2zM5796 2211l-37-5-13 16 10 26 24 5 19-12zM4955 2917l6-31-2-2-19 17 2 18zM4526 2331l-16-7-18 50 9 11 23-8zM4293 2204l18 9 12-26-21-18-12 4-5 9zM4825 1406l-8 7 1 22 13 3 11-22-1-2-15-8zM4545 1414l-1 5 11 16 17 2 17-14-11-14zM4566 2779l-10 16 26 32 6-21-10-21zM4968 2889l39-15-5-21-8-7-40 25 5 13 2 2zM4346 2127l-26 11 0 1 26 23 19-24zM5347 3431l3 5 18 5 15-6-1-16-23-8zM4569 2924l-32-14-4 7 8 23 28-15zM5832 3949l-1 1-2 3 3 25 5 7 15-4-1-21zM4788 1615l-13-4-10 4-16 21 2 9 30 3 18-15zM4955 3528l13 15 11-3 14-19-6-4-23 2zM5678 3250l-1 1 10 29 24-1 8-30-15-7zM6405 2281l24 3 18-16-28-15-17 23 1 3zM5423 2985l13-4 4-11-29-16-12 7-2 2 3 11 10 7zM4807 810l38-45-6-9-61 29 5 15 12 16zM6395 1430l-15 3-14 24 5 16 29 2 0-8 11-16zM4966 2208l1-8-26 1-7 8 11 11 10-1zM5537 4139l-13-4-4 0-2 1 4 40 5 3 20-13zM5070 3339l-34 16 10 27 28-1zM4760 2212l15-15 1-31-23 1-22 21zM5270 4246l13-13 6-24-16-5-4 1-17 18zM4854 2404l7-13-4-22-13-2-3 21zM5464 2694l21 4 1-2-18-28-14 12 0 5zM5426 2169l14-29-14-11-5 2-13 22 0 8zM5460 3846l9 6 28-4-9-24-16 2-12 11zM4798 3938l1-2-25-19-13 12 5 16zM4842 2468l29 8 6-8-10-30-19 3-7 13zM4897 2282l6-7-4-20-28 3 0 16 11 8zM5338 2698l-6-21-18 6 8 12zM6130 2591l11 5 8-7-1-6-11-17-16-6-8 4-1 4zM4628 3772l-23 5-2 5 8 14 23 9 3 0 8-24zM4531 1271l0-1-31-19-5 1-2 2-3 27 7 10 5 4zM5723 1717l-32-15-20 17-6 15 41 12 19-5 1-3zM5533 3191l-27-4-2 2-2 6 16 13zM5814 3812l26 0 11-19 1-3-18-8-19 18zM4318 1231l-20 21 34 18 17-23-2-17zM4063 2312l-10-44-1-1-21 6-5 5 21 42zM4869 2067l-3 15 8 13 10 9 31-21-18-34-15 2zM3977 2451l-16 32 28 10 18-11-17-34zM4452 2830l9 14 13-4-3-20zM4465 3195l2-23-13-7-10 30 5 2zM4622 3971l7 13 19 3 2-2 0-16-14-9-13 5zM5859 3466l6 5 9-4 3-9-12-4zM5536 2474l12-4 3-3-11-20-22 18zM4488 2889l6-5-1-6-31-10-1 1 1 23zM5259 2362l4-26-10-9-16 29 19 11zM5495 2711l-10-13-23 26 5 14 20 2zM5703 2395l2-5-35-22-6 9 12 29zM5376 3493l-17 4-8 26 26 8 9-31zM4552 2649l43-7-2-28-47 8 0 1zM5344 2320l-12-17-28-7-6 4 3 26 21 5zM4251 2669l1 4 7 6 16-7-2-7-18-3zM4083 2315l6 24 31 12 12-15-4-18-38-10zM4792 2919l-15-12-12 14 3 11 15 3 9-15zM4610 2794l6 5 24-4 2-2-1-2-19-18-6-1-8 7zM5246 2277l-22 36 27 9 15-17-18-28zM5148 1561l14 17 37-35 0-14-3-4-10-1zM4698 2522l26-3-5-9-14-7-3 1-6 13zM4065 2720l28 23 11 0 8-11-1-10-35-10zM6362 3567l-3 26 12 19 8 1 13-30 0-14zM4790 2388l-5-3-28 14 1 6 25 19 9-16zM4702 2447l-1-12-2-5-19 1-5 40 15 4 6-2zM6535 2273l24 1 2-1-3-32-9-7-27 10-7 9 3 3zM3983 2646l-2-23-19-11-4 21 18 18zM5900 2297l20-13-17-13-14 10zM5264 3022l-1 0-10 8-10 20 12 13 7-1 3-4 6-26zM4684 2562l-5 5 4 27 6 1 10-7 2-22zM5495 3438l-11 28 13 16 28-16-5-21-18-7zM5691 2846l1 7 17 8 21-1-15-30-13-1zM5642 3866l25-31-15-15-32 31 8 17zM6391 1557l8-13-47-35-18 6-2 30zM5454 2680l-15-8-4 19 3 4 4 0 12-10zM5453 3409l-15 0-14 24 0 5 14 0 18-12 2-7zM5347 2941l19 1 7-26-2-1-12 3-14 20zM4673 4037l18 4 11-24-14-16-25 17zM4763 3256l12 10 19-26-8-13-3-1-18 0-5 7zM5833 2336l-19 10 0 19 23 6 14-10zM4968 2975l0-14-38-12-1 2 27 28zM5730 2860l1 0 26-17-2-22-24-8-16 17zM5368 1341l-6 11 17 19 12-9 2-14zM4952 1054l2 3 6 3 39 7 10-2 9-11-7-25-14-6-32 11zM4268 2123l2 2 13-8 4-18-26-2-2 18zM6550 1870l-23 8-1 24 8 8 7 1 19-36zM4460 3596l-4 25 14 6 18-13zM5014 3394l8-6-11-33-10 6 1 28zM5394 2416l-4 25 11 7 13-2 6-19zM6038 1800l28 7 11-9-3-3-36-22-3 6zM4563 1766l21-22-5-22-41 7-3 17 21 19zM5434 3755l-10-12-4-2-9 34 21 1zM4511 3845l14-2 8-13-13-10-13 16 0 2zM5264 3887l-30-5-3 2-2 9 22 27zM4779 2469l12 19 29-4 2-4-13-21-19-3zM6088 2174l17-25-10-26-32-4-13 54zM4954 2871l40-25-6-18-1 0-37 9-9 23 1 4zM5927 1938l0 7 2 3 41 1 8-20-12-19zM4490 4109l-3-11-13-9-20 21 2 15 1 0zM5401 2448l-11-7-15 21 10 13 9-2 6-6zM6191 1670l14-1 20-28-34-6zM4287 3231l-10-27-5-1-11 10-3 18 17 13zM4968 2889l-7-3-6 31 8 2 18-7zM5381 3595l13 2 14-5 1-7-8-36-16-3-3 3-14 36zM6096 1733l-7 20 17 27 26-8 2-16-15-28zM5701 3516l-7 28 26-1 5-12-18-17-2 0zM5822 3360l4 22 9 2 7-20zM4212 2401l-29-18-12 3-7 13 13 13zM5092 3186l-2 3 4 8 31 8 1 0-7-21-7-4zM6380 2397l20-12-23-30-13 42zM4791 3418l2 25 17 10 7 0 7-20-18-22zM5338 3168l-4 28 6 2 25-12-2-27-3-1-13 1zM5273 2372l10-11-4-10-20 11-3 5zM4637 2885l-5 0-9 11 3 10 14-1zM4272 2406l1-1 2-6-13-39-8-3-33 22-2 20zM5040 3506l1-2-18-1-1 17 7 0zM4582 2828l0-1-26-32-14 6-2 15 38 16zM5837 2958l-15-38-29 12 28 35zM5340 2006l16 23 13 0 9-6-9-47-1-1-7 0-22 19zM5091 807l3-3-13-28-8 31zM6050 2434l6 15 14 1 1-1-14-16zM4923 2148l7 28 7-1 13-17-1-7zM5714 3187l-1 14 12 8 3-1-2-22zM5489 1822l-1 23 29 6 7-5-7-24-23-6zM5423 2469l1-1-5-16-5-6-13 2-1 19zM4666 2662l3 3 7 0 15-11-17-10zM5278 1440l-18-6-11 30 8 9 25-13zM4469 3938l-14 21 39 7 4-7zM5630 1463l-28-50-18 53zM4826 1456l10 10 7 0 6-18-17-9zM5998 1856l-10 34 13 5 24-28-6-11-4-2zM5402 3549l8-1 18-20-2-15-17 2zM5264 3022l7 10 19 12 6 1 12-3 2-15-38-12zM4793 1297l-39 5 13 35 8 3 7 0 14-42zM5930 2742l-1-2-33 4 14 46 23-23 1 0zM5911 3912l-6-24-18-8-13 24 25 16 10-5zM4434 3828l-4 19 23 5-3-25zM4606 3974l8 3 8-6 1-6-4-3-15 5zM5762 2018l6-1 33-16 3-17-43-28-21 7-1 2zM4434 1597l-28 6 4 41 39-3 9-13zM5260 3612l9 15 9 1 11-11-15-13-12 3zM4353 2807l-6-2-11 7 0 29 33 3 0-12zM5880 881l38 10 1-18-19-23-11 4-2 2zM5770 3471l10 6 23-1 3-7-13-17-19 10zM4119 3189l33-31-18-14-24 20 0 17zM4746 1536l-25-28-27 18-7 12 53 13 6-4zM5122 2971l12 3 12-12 0-4-4-6-11-1zM5131 744l13 1 23-29-9-16 1-4-29 19-2 27zM5202 2638l2-4-3-14-14-5-15 17 1 19 3 0zM5737 3459l20 12 2-1-4-18zM5084 2074l28-15-9-23-12-1-24 28 3 6zM5484 2592l8-23-21 13 1 7zM4971 878l-4-13-22-3-3 2 15 25zM4174 2623l-5 1-1 10 13 21 23-13-1-2zM4967 2200l6-10-29-7-3 18zM5960 3727l-8 30 6 7 26-1 9-11-9-17zM6397 1420l-32-33-10 29 25 17 15-3zM4517 2464l-32-10 10 29 14-1zM5303 3721l-15-16-14-3-8 3-4 4-3 26 26 19 24-12zM5530 2702l6-27 0-2-25-17-11 27zM4170 2748l-2 3 6 21 15 0 10-23-6-8zM5619 3210l32 4 2-1-1-13-21-12-13 16zM5806 3245l-20 8 3 17 9 9 15-2 2-13zM4813 2211l-38-14-15 15-2 11 6 15 22 13 27-39zM4201 2847l-3 0-22 11 0 2 0 2 28 11zM4318 1231l29-1 1-1 1-18-42-33-13 21zM4040 3115l2-5-5-29-20-6-8 14zM5513 2201l21-28-14-18-33 22zM4964 719l4 11 19 17 15-11-14-20zM4632 3653l-16-6-10 26 20 10 9-5 3-18zM6360 2226l-6-15-22-11-6 30 18 15zM5282 2872l20 12 16-22-29-14-7 11zM6401 2446l-11-18-13 5 10 17 11 0zM5065 2567l-22-16-10 12 8 15 20-7zM4966 1294l-23 42 49 5 9-23 0-5-33-20zM5354 1089l-10 16-6 35 11 8 38-12 2-2 3-50-2-3-20 0zM3951 2415l-13-9-14 16 3 9 8 7zM4331 1449l-5 41 41 14 13-34-12-30zM5977 1117l22 12 38-41-14-22-21-14-15-1-11 25zM4281 3160l-16-3-15 18 17 16 24-19zM4654 1292l-1 1 19 30 18 2 1-2 0-35zM5903 2328l17-15-20-12-15 12zM4586 3965l4-4-5-10-28 6 0 3 14 8zM5487 2177l33-22-2-9-33-15-14 40 6 5zM4584 2582l-22-3-6 5-10 38 47-8 4-8zM4812 2618l13 19 18-11 3-10-17-17zM5304 4126l21 4 13-18-6-14-4-3-26-2-8 22zM4625 2390l0 4 36 11 6-14-25-20zM4515 4074l-9 10 0 3 2 3 39 18 1-1-16-34zM4894 1596l-1 19 17 13 6-5 0-22-16-12zM6010 3752l7 10 26-4-5-19-21-11zM5556 1737l7-2 10-16-19-7-6 11zM5019 2921l13 14 17 1 0-19-23-16zM4126 3136l-14-23-9 0-19 26 0 1 1 1zM5209 1759l3 3 53-18 0-1-22-40-19-8-22-1-4 16 5 38zM5258 1478l-17 28 7 24 3 4 9 4 29-12-3-12-11-24zM5876 2946l-3 0-26 8-6 4 18 28 19-1 8-24zM5726 2464l-5-13-19-5-10 7-2 6 9 22 14 6zM4686 2381l14 7 7-7 6-27-11-13-15 4-6 15zM4277 2629l0-1-16-10-13 27 7 6 11-3zM4891 2374l-16-17-11 4-2 5 16 11zM6371 3612l-23 8-2 1-5 20 26 1 12-29zM4757 2633l-5 22 4 7 4 1 13-9 3-24-4-1zM4965 1034l32-11-13-36-22 23zM4359 2769l-11 5-8 9 7 22 6 2 18-11-6-26zM4501 2305l-18-6-3 2-18 22 8 21 37-24zM5207 3367l11-15 0-7-15-18-3 0-17 10-6 9zM4408 2894l4-5-2-11-42-6-2 3-1 11 5 9zM4969 2943l-5-9-31-4-3 11zM5258 3569l3-4-7-12-1-2-30 6 0 6 13 10zM4640 2859l4-13-14-11-5 0 0 1 0 1 10 23 1 0zM6306 2475l13 26 13 3 2-1 18-43-1-2-6-3-32 7zM4773 3823l20-24-18-18-14 27zM4609 1945l-33-16-3 2-1 1-4 35 20 6 13-5zM6154 2466l-13-19-6 1-1 6zM6423 2093l2 2 17 3 22-10 6-26-33-13-17 25zM5915 3848l-2 9 8 17 10-1 13-25-20-7zM6301 1402l29-36-8-25-89 14-3 8 57 43zM4736 1813l-13 8-1 7 34 15 11-4 8-16zM5037 3197l-12-18-1 0-14 25 20 4 2-1zM5330 872l12-22-40-41-11 8-2 12 28 46zM4602 1421l32 9 7-10 0-6-4-5-28-1zM5263 3424l-1 16 13 9 33-8 2-10-26-23-2 0-11 6zM4216 2374l5 5 33-22-7-9-34-17-14 7 0 3zM4574 3414l10-1 5-3 0-27-19-3zM5023 2689l28 32 24-29-3-9-49 3zM5109 3269l3 12 26 6-5-26-22 6zM4896 1004l-14-10-7 4 21 12zM4865 1021l30 2 1-11-37-5zM5346 1239l-2 1 0 43 2 1 10 3 14-9 9-20-7-13zM4938 1583l-22 18 0 22 29 2 15-32-1-1zM5154 2401l1 3 21 18 13-1 17-39-21-16-24 14zM4682 598l0 2 11 25 4 28 9 1-3-20 9-4-8-19zM5028 981l4-8-3-16-35-15-15 33 0 1 6 9zM5818 1554l38-26-1-1-40 4-1 18zM4534 3487l6 19 20 8 10-17-2-6-13-6zM5717 2301l24 9 9-10-4-38-40-6-4 4zM5564 3092l-11 11-2 8 1 7 12 18 15-6-5-35-7-5zM4448 2258l-1 8 11 8 15-3 2-4-18-15zM4420 3777l-8 7-3 10 17 16 4-4 3-26-2-1zM5017 3450l-26 4-2 5 11 17 20-7zM5774 882l18 17 2 1 12-13-11-22-15-6-5 2zM6073 3310l16 18 18-9-16-29-5 1zM5154 1917l-14-46-34 0-7 57 22 8zM4623 2896l-7 0-9 7 0 4 4 3 13-1 2-3zM5471 2582l-14-12-15 7 3 27 13 4 14-19zM5173 1440l-5 2-4 10 2 11 33 20 8 1 11-22-10-14zM5594 3172l1 15 23 17 13-16 1-6-25-19zM4802 3127l-3 6-3 9 12 18 17-22 0-2zM5827 1481l27 0 43-36-55-50-72 44-1 3 20 27zM5393 1348l-2 14 26 16 11-21-35-10zM6110 1182l-5 0-41 57 30 28 27-1 20-40-9-36zM4014 2988l11 18 18-4 3-5-7-16-15-2zM5430 2366l-14-27-10-1-2 2-17 28 28 14zM5747 2413l-18 26-1 5 21-1 7-10zM4226 2077l-5 5-1 5 18 19 11-16zM4036 3215l6 10 27 27 8-7 5-33-18-19zM5770 1695l-13-29-30 7 4 22 35 4zM5332 3768l31-3 0-22-14-8-26 12zM5413 2759l5 17 28 2 10-13-1-7-21-13zM6159 2373l20 3 18-9-2-13-15-9-20 7zM5059 815l6 14 30-1-4-21-18 0-14 7zM4633 2290l-8 33 27 4 4-3zM4438 3360l-14-8-12 26 21-3 6 3zM6453 2487l3 3 11-7 14-35-14-8-21 8zM5032 3701l-1-35-3-1-38 16 16 21zM5112 3180l7 4 19-18-22-10-6 4zM5552 2995l5 12 19-5 7-17 0-2-3-5-8-9-2 0-9 4zM4606 3835l28-30-23-9-12 34zM4597 2320l-18-7-6 10 16 23 14-7zM5390 1081l2 3 48 17 10-5 10-58-5-5-10-2-47 27zM5389 2838l-3 22 15 8 19 1 15-22zM4819 2650l6-13-13-19-9-1-12 16 9 14zM5981 3856l20 18 3-1 5-12-6-25-9-6-20 1zM6062 3683l0 6 24 4 7-9-1-14-15-5zM6229 1805l-48-5 4 32 33-1 10-13zM5584 2255l-5-16-32-9-3 30 23 9 11-4zM6093 3684l26 5 3-5 0-13-23-8-7 7zM5070 3876l1 1 1 0 15-38-2-3-34 8-1 1 0 1zM5152 2723l19 4 12-19-17-7zM5051 2184l23-6 0-4-21-37-32 10-4 13zM5284 1460l-2 0-25 13 1 5 17 12 22-16zM5517 3098l36 5 11-11-42-13-9 6zM4464 2652l0 26 13 6 17-7 4-8-10-17zM5030 3208l-7 26 16 6 13-18-20-15zM5602 2901l6-1 3-2 11-21-11-10-26 3-13 10-3 13zM4590 4033l-26 4 8 23 35-7 0-3zM4765 3506l-45 25 0 1 37 10 15-8 6-7zM5935 3904l-1-1-23 9-2 3 23 23 4-9zM4295 2876l-18 15 8 8 25-3 0-1zM6550 2387l-6-23-25 12 8 16zM4738 3656l4 1 15-9 2-2-11-38-2 0-3 1-19 20zM4723 3601l-8-20-16-1-6 13 13 16zM5027 4045l-1 23 35 0 1-1-6-28zM5120 4072l-7 5 8 30 12 4 10-14-17-25zM5391 2499l-8-17-24 11 12 23zM5702 2951l9-11-14-14-17 15 9 9zM5897 2202l0 11 9 17 22-16-30-13zM5532 3523l-11-10-2 0-26 28 7 22 6 0 27-13zM5563 4113l-3-11-17 0-19 33 13 4zM6096 3478l13 4 8-22-11-27-15-4-6 7zM5769 3896l-7 6 8 25 3 0 11-12-13-19zM6091 2440l13 0 11-6-3-13-16-7-7 25zM5347 1510l-17 29 22 11 25-18-20-23zM6384 1723l-2-19-1 0-41 5-9 23 44 14 2-2zM5449 3949l-11-23-18-5-11 9 8 37 16-2zM4083 2149l9-5-5-37-13-12-1 0-27 39 2 8 15 10zM6292 2235l-1-25-41-6-8 4 21 35zM4792 1423l22 15 4-3-1-22-20 0zM6501 2424l13-13-19-20-26 20 1 1zM4882 1466l-5-4-26 17-1 6 5 9 18 4 9-9zM6003 3836l16-4 10-23-23-2-12 23zM4450 3827l3 25 1 1 22-5 3-13-2-7-18-8zM4785 3578l7 6 29-1 8-10-5-21-22 0zM4175 2961l-16-12-14 16 1 2 28 12zM6337 3508l-2 32 17 5 11-17-13-21zM5797 916l19 28 23-10 0-1zM4560 2128l-15 24 18 38 32-2 6-13-2-30-4-6-24-17zM4656 3041l-39 19 3 14 3 2 35-12 4-13zM5818 3555l14 4 14-6-1-29-10-3-32 9zM5403 3116l-2-11-28-10-6 5 18 28 14 2zM6111 3774l-6 4-5 18 28 8 5-4 6-3zM5126 3575l-13 12 6 9 15 6 22-16zM5911 3537l-19 16 16 23 34-5-1-18zM5580 2617l7-2 6-13-8-12-18-8-7 3 0 4zM5004 1558l14-33-5-5-37-7-13 10 3 20 10 14 25 3zM4415 3742l15-2 4-25-19-13-17-2-3 8zM5087 3603l23-16-21-30-3 0-14 18 10 25 4 3zM5746 3011l-13-23-17 6 8 32 10 6zM6447 2268l5-2 1-3-3-13-28-19-5 8 2 14zM5583 3032l-5 4 24 18 3-14zM6030 1816l8-16-3-21-32 11zM5700 2209l-20-35-25 14-2 18 28 8zM4433 3670l12-22-9-17-7-3-12 22-6 17zM4448 2028l5 31 10 5 25-11 6-28-19-11zM4532 3766l31 13 5-25-28-13-10 9zM4526 3608l33-24-2-10-26-6-16 9-7 12 4 14zM5938 2598l2 10 19 11 1 0 4-27-18-2zM6604 2274l44 30 11-7 0-29-21-8-29 5zM5274 3604l4-6 2-19-13-13-6-1-3 4-6 23 10 15zM5713 3752l-10-2-19 17 2 23 2 1 27-1 5-19-3-12zM5450 3255l13 8 10 1 15-10 4-11-8-15-29 17zM5023 1226l12 30 20-7 5-17-4-17-29 3zM4422 3913l1-5-4-7-23-10-16 19 2 5 24 5zM5721 3459l-4 22 23 14 2-3 2-5-11-28-6-3-1 0zM4525 3660l4 5 46-7 2-24-41-8zM4647 3398l-10 27 10 12 19-1 15-21-11-15-20-4zM4952 1880l13 16 21-14-4-19-22-3-8 14zM4456 3253l-25 4-3 21 16 13 25-25-4-11zM5042 680l8 27 6 3 5-29-5-4zM4827 3638l-4-2-18 0-7 10 12 21 14 2 1 0zM4429 3227l-9 5 0 17 11 8 25-4-20-24zM5250 2388l15 12 2-1 13-15-7-12-17-5zM5501 4100l13 2 10-12 1-20-3-8-32 19zM5699 4037l-10 22 23 8 8-8-12-24zM4886 1199l0 4 8 6 25-2 10-4 21-32-4-5-4-2-54 9zM4707 2381l34-9-5-15-23-3zM4856 839l-51-9 15 20 0 3 29 8zM4452 1251l-16 19 6 25 13-3 5-5 7-34-6-4zM4903 2974l14 1 3-2 9-22 1-2-1-6-31-4-12 12zM5186 3196l-11-4-15 15 2 3 10 3 16-4zM5276 3255l16 5 9-6-5-27-20-1-7 7zM5239 3454l23-14 1-16-20-4-20 17zM4728 1678l15-2 8-31-2-9-33-19-20 23zM5306 4044l2-2-2-29-1-1-31 18 0 2zM4356 2104l16 21 13-14-22-22-2 0zM5028 2329l1 0 28-4 18-15-1-3-45-30-2 1-12 29zM4204 2642l-23 13-1 8 2 2 28 8 10-11 2-6 0-6zM4309 2757l-3 32 32-6-25-28zM5890 3815l-29-31-9 6-1 3 27 39zM4510 2324l16 7 22-3-3-41-21-10-23 28 6 15zM4287 3098l9-17 1-2-8-7-10-2-25 24 1 3zM5369 2119l23 6 4-2-1-22-13-11-13 10zM5821 3122l-6 29 18 8 5-1 11-20-18-18-9 1zM4395 2111l-10 0-13 14 1 11 16 8 20-17zM4611 3947l0-4-19-13-8 10 1 11 5 10 1 0zM6383 1793l1-2-17-19-34 3-8 11 2 5 9 8 29 4zM6149 3778l-5-9-31 2-2 3 28 23 10-5zM4663 2600l-10-3-19 20 0 13 15 11 12-6 6-18zM4703 1693l25-15-32-38-4 1-13 45zM5084 2564l4-19-11-18-8-2-26 17 0 9 22 16zM4604 3967l15-5-8-15-20 14 4 3zM5633 2579l3-34-2-6-14-3-13 32 12 9 10 2zM5604 2568l3 0 13-32-10-8-10 5-9 25 0 2zM4860 3736l-18-22-14 31 3 5 20 5zM4492 3982l10 30 4 1 12-5-3-21zM4664 1798l-6-4-30 32 16 19 30-13zM5456 2527l-5 12 13 15 16-21-18-7zM5636 3125l2 23 17-1 11-10 0-5-27-9zM5396 2668l-3-2-17-3 0 10 16 1zM5710 2410l-7-15-27 11-7 10 30 18zM4780 3361l9 12 19 3 6-8-13-29-9-2-5 2zM4908 1494l0-26-26-2 0 23zM4839 2984l13-22-9-12-12 3-13 20 3 8 12 6zM5969 3829l5 2 20-1 12-23-2-3-15-5zM5212 1167l13-19-3-6-15-3-20 13zM4155 3251l-11 19 12 30 11-4 13-23-2-14zM5596 2662l-8-7-1 0-21 16-2 18 1 2 29-1zM4205 3081l-4 6 10 26 10-17zM5615 1756l-30-2-10 19 21 13 32-19 1-2zM5934 4010l3 9 14-1 0-17-10 0zM4660 3637l2 13 10 11 25-20-6-11-16-8zM4527 3962l1 17 18 17 6-2 2-32zM5849 3042l-17 18 2 5 2 3 28 7 15-9 2-11-15-12zM5484 1848l-4 15 19 15 8-2 10-25-29-6zM4897 2335l9-12 1-4-2-3-12-5-1 0-11 14zM5801 2043l-7 11 1 11 32 18 8 0 4-4 5-19-36-21zM5073 3016l6-15 0-1-27 0 11 21zM5335 2151l18-5 7-6 1-14-19-13-18 28zM5082 771l-3-15-11-8-30 12-4 6 15 28 31-19zM5127 3048l-6-8-26-11-4 3 16 29 1 1zM4350 4071l-9-18-16-2 13 37zM4699 3419l7 32 42-18 1-4-41-18zM4961 2802l26 26 1 0 9-12-13-36-26 7zM5676 2406l-12-29-22 6 0 12 27 21zM5511 1061l-4-9-47-14-10 58 36 8 9-8zM4837 1586l9-17-2-3-20-13-19 3-3 24 2 2zM6215 2295l26 22 24-34-1-1-26-7-20 11zM5544 3869l10 36 6 1 13-23-4-10zM4336 3086l-4 1-6 18 24 10 9-14-8-11zM5880 2636l22 19 19-11-1-24zM4622 2665l-10-16-14-3-11 31 23 16 4-2zM5872 1840l-2-6-32-17-31 15 0 44 23 10 35-3zM4134 3144l-2-6-6-2-41 5 25 23zM5602 2748l1 14 32 8 1-1 0-2-11-26-11-4zM4048 2804l28-4 10-15-14-17-3-1-24 12 2 23zM5173 2651l-1-19-20-16-1 1-12 26 25 17zM4149 2676l5 16 29 3-1-30-2-2-31 12zM4962 632l26-39-9-4-31 20 0 1 11 23 1 0zM4631 1591l56-13-3-38-35-10-19 2-11 3-2 2zM5734 3032l-10-6-31-3-3 1 0 29 34 1 11-19zM5138 3287l2 4 15-3-1-33-19 4-2 2zM4669 3255l-9-13-23-1-1 28 6 6 11-3zM6465 2180l2 7 38-17-22-20-2 1zM5855 3327l-2-1-3 1-18 18 18 13 11-1zM4614 2926l-5 7 18 20 6-1 0-27-7-3zM4480 3749l-6 3-2 3 1 15 13 10 5 0 13-8-1-3zM5809 4031l-5 3 12 15 21-3-2-16zM5092 3186l20-6-2-20-18 1-4 7zM5271 1061l-28 23-3 10 22 7 24-19zM6139 3731l-22-18-8 26 28 3zM4818 2062l-43-15-3 16 23 29 22-10zM4785 2356l31 9 7-9-10-26-3-4zM5043 2228l43-15-10-33-2-2-23 6-17 21zM5132 849l9-5-15-33-9 4-8 14zM5065 3472l9 33 19-31-26-8zM5576 3002l-19 5-4 11 14 20 3 1 8-3 5-4 10-15 0-1zM4764 1935l28-29-1-1-31-5-18 14 3 13zM5081 2743l-11 0-8 38 12 10 10-8 4-23zM4983 4111l8 0 12-25-2-1-24 4zM4235 2842l-5 2-5 27 12 10 25-13 4-14-19-10zM4884 2169l-2 18 7 10 24-3 9-14-18-24zM4434 3715l18-8 2-6-4-14-9-5-26 20zM4223 3313l3 28 7 1 22-4-4-23zM4276 3001l13-5 6-18-8-16-2 0-24 13-1 4 9 21zM5557 3594l-2 5 4 11 6 6 15-11 4-10-2-6-5-4zM4942 2864l-1-4-28-19-9 33 33-6zM5973 3211l-5 0-10 20 1 7 2 1 25 1 13-10-3-5zM4788 2145l3-4 1-45-20 1-29 22zM4213 2920l3 16 22 6 12-13-10-11-23-2zM4963 2744l3 5 19 1 9-20-4-11-5-4-18 4zM5385 3379l-10 4 8 34 12-8 0-19zM4722 2925l34 23 12-16-3-11-24-15-12 2zM6148 4090l-8 3-5 24 7 4 25 0 0-31zM4931 3929l10 2 13-27-10-15-4 0-17 20 1 13zM5481 1361l-5 8 3 19 17 15 26-15-11-27zM6644 2229l13-7-4-20-2-2-23 3-5 20zM6107 2459l-13 5-3 4 22 15 8-18-6-5zM4825 1366l-29-3-2 16 18 7 5 0 10-15zM5245 2915l-20-27-17 10-4 16 7 11zM5966 3333l-8 15 8 20 31-11-17-23zM4674 2818l1-1-5-17-7 0-7 15 1 1zM5810 2731l6-10-4-15-3-1-10 1-4 15 5 10zM5588 1702l-10-12-25 12 1 10 19 7 16-6zM5737 2979l21-3-1-29-22-6-4 26zM5182 3615l-6 34 13 4 16-6-16-32zM6304 1868l2 18 11 2 4-5 1-4-1-4-2-4-11-5zM5080 863l-17 27 8 12 29-14 1-6zM5079 3715l21 8 12-16 3-10 0-1-12-7zM4420 3232l-6-4-32 6 0 1 17 26 21-12zM5254 3553l24-33-4-2-27 1-7 12 13 20zM6175 2589l-26 0-8 7-2 17 12 14 35-15zM4571 1472l1-35-17-2-10 19zM5244 3228l0 3 25 2 7-7-2-24-10-3zM4830 2306l21 17 13-7 1-10-15-13-18 8zM5189 2421l-13 1-12 21 8 14 26-2 8-19zM5615 3743l16 24 9-4 5-38-16-11-13 11zM6546 1914l-2 19 15 11 21-6-22-23zM6530 2005l31-13-15-20-19-1-15 12zM5298 1441l-2 10 24 11-7-24-3-2zM4990 3150l-9 20 11 15 4 1 15-12-8-21-10-3zM5202 3841l1-1 23-21 1-4-29-17-8 7-5 33zM4545 3813l27 2 4-1 0-23-13-11-25 20zM6263 1873l-7 16 2 2 16-3 4-7-8-8zM5480 2296l-45-23-8 18 10 26 18 8 25-23zM4191 2725l14-5 10-23-6-7-24 7-1 23zM5331 2914l-1-9-6-8-19-5-23 31 3 3 43-4zM4942 3093l0-7-12-13-8-3-13 8 8 18zM5242 1417l-16 44 23 3 11-30-9-23zM4261 2688l7 10 6 1 3-1 11-12-3-7-10-7-16 7zM5609 3006l11-10-10-10-10 6zM4843 1466l-7 0-19 12 6 13 27-6 1-6zM4463 3676l1-23-19-5-12 22 8 12 9 5zM6397 1863l-15 10 32 30 11-22-12-19zM4611 2315l-14 5 6 19 11 0 7-15zM4635 3678l-9 5-4 29 28-8 2-8-12-16zM5101 2960l-4 10 6 12 14 0 2-10-17-12zM5043 3251l24 13 4-1 13-32-20-14-12 5-13 18zM5374 3470l-12-6-15 1 4 27 8 5 17-4zM5304 1393l-22 14 8 13 16 4 5-7zM6018 2078l7-6-5-26-34-26-26 4-23 33 32 39zM4426 1194l-3 11 21 13 13-1 5-23-6-5zM5128 2743l-14-35-12 4-11 23 23 18 6-1zM4189 3252l-11 7 2 14 34 8 8-3-3-4zM5335 3517l-17 22 21 14 12-30zM6005 2407l10 16 24-7 0-1-21-22zM4377 2674l-17 9 6 14 28-2-1-7zM5608 1149l-6 20 26 24 32-17-21-48zM6489 1918l-16 23 7 1 26-13-1-3zM6047 2455l-8-2 0 19 16-5 0-2zM5722 2629l-15-7-22 12-5 18 20 15 21-7 5-13zM4278 1112l15-5-3-8-15 4zM4392 1079l-14 2 2 8 7-1zM4310 1103l52-11-2-8-52 11zM5920 1751l13-33-22-9-20 38zM4882 3325l-51-2 2 40 29 10 8-2 9-6 6-26zM5354 1595l-7-4-17 1 0 47 3 0 28-24zM4209 2983l9 14 16 0 3-5-2-4-15-19-2-1zM5397 2733l-3 11 0 1 19 14 21-14 0-2-16-12zM4945 1625l16 28 13-1 6-6 16-35-36-18zM4989 3398l0 19 26 4-1-27-12-5zM4934 3645l-18 18 9 12 19 7 9-38zM5309 3742l-24 12-2 28 0 1 18 10 29-15 2-10-9-21-9-4zM5124 3996l-4 35 15 1 8-13zM4487 2849l-13-9-13 4-9 19 9 6 1-1zM6139 995l-37 31 44-2zM5886 2961l-8 24 9 10 5 0 26-12-12-21-2-2zM6251 2505l8-31-25-10-12 17zM4015 3126l25-10 0-1-31-26-9 15zM4240 2918l10 11 18 2 1-8-7-25-13 1zM5761 1956l24-33 0-27-55-18 3 73 7 12zM6331 2161l10-16-1-1 0-1-36-5-13 11 18 14zM4661 2864l1 0 5-18-7-8-1 0-15 8-4 13zM4889 1397l-4-22-7-6-16 10 0 42 12 1zM5308 1314l17 24 18-13-10-14zM4848 2914l7 21 10 0 10-19 0-2-17-6zM4338 1685l-2-25-44 6 1 13 13 12zM5559 2636l28 19 1 0 8-27-1-4-8-9-7 2-23 16zM4369 2844l-33-3-17 11 0 1 7 12 40 10 2-3 4-22zM6052 2692l-20-12 1 19 11 7 9-4zM6144 3563l24-17-7-19-8-6-8 2-15 17zM5107 3241l-11-11-6-1-6 2-13 32 10 6 28 0 2-2zM5413 2511l3-23-7-1-18 12 15 13zM4021 2764l7 4 26-29-1-9-28 1zM5904 3039l13-2-2-10-23-32-5 0-8 21zM5529 1848l12-5 21-23-14-23-15 4-16 21 7 24zM5642 2819l17 0 0-1-11-19-12 1zM4925 3675l-8 19 10 12 4 0 17-10 1-9-5-5zM5230 4131l1 19 20 12 16-4 3-4-1-26-23-12-5 0zM5541 2953l4-19-36 5-2 3 17 23zM4110 3164l-25-23-1-1-21 32 3 13 44-4zM4838 3007l28 3 6-4-10-19-23-3-6 3zM4104 2938l-12 13 9 14 12 4 8-12-12-18zM4755 2550l10-15-4-10-17-8-16 6-2 7 9 21zM5655 3147l3 14 14 7 5-16-11-15zM6223 2420l7 6 23-13-1-10-24-2zM4664 2690l5-25-3-3-16-5-8 8 9 25zM4369 4079l-4 13 9 13 8-4 4-16-13-8zM5204 3501l-2 24 11 12 1 0 8-6-2-31zM5200 3327l-18-22-10-3-8 14 19 21zM5955 3138l-3 21 2 1 23-7-9-18zM6152 2380l-9-3-23 14 3 8 4 6 11 3 15-18zM5076 4133l-15-9-2 0-15 21 23-3 10 4zM6580 1938l12 2 0-25-24-20-10 20zM5916 3802l-26 13-12 17-1 1 1 5 37 10 9-7-6-38zM5953 3402l-18-1-11 5-3 11 32 19 6-4 4-21zM6072 3927l42 36 11-2-42-36-6-6zM5384 1417l-39 12 6 31 0 1 12 3 19-7 14-28zM5318 3690l15 0 9-5 1-1-25-20-9 11 0 1 2 8zM6134 4064l-7-5-13 5 2 6 18 15zM5835 1311l29-3 33-83-2-6-15-4-77 47zM4231 2731l19-13 1-10-11-10-7-2-8 3zM6110 3537l-8 5-4 16 17 16 7-32zM4893 1615l1-19-23 6-4 9zM3924 2422l14-16-10-12-9-1-12 26zM3996 2539l-19-11-2 27 17 0zM4867 3464l-16 19 5 12 12 7 14-6 0-2zM5794 919l0 25 13 9 9-9-19-28zM4534 3935l-10 24 3 3 27 0 3-2 0-3 0-4-13-20zM4710 3764l17-11-3-15-21-5-14 12zM5434 2743l5-15-13-7-8 10zM4946 1052l-19-30-31 1 0 23 18 15zM5546 3854l24-8-2-16-2-1-27 7zM5390 2311l1-5-29-12-10 29 9 11zM4753 3075l8-13-3-9-14-2-4 14 8 12zM4364 4118l19 15 16-3 0-1-27-19zM5310 2681l-7-16-25-3-2 29 2 1zM5490 2334l3-18-13-14-25 23 3 8 15 6zM6211 1579l31 54 15 6 24-25 7-25-4-9-51-15zM5246 1257l23-6 4-5-17-24-34 2-2 2-2 16zM5580 3256l8-7 6-16-21-19-20 19-3 21zM5745 3178l-5-14-14 5 2 14 4 1zM5814 3325l36 2 3-1-8-16-26 4zM5772 2697l7 27 16-3 4-15-13-10-11-1zM6135 1920l7 43 47 1 7-3-3-19-20-20zM3971 2028l-31-21-15 10 7 42 40 9zM4385 3757l20-4 10-11-20-34-3 9-14 38zM4488 2795l-5-16-17 13 2 11zM5003 2671l17 9 18-23-11-15-24 1-8 11zM5755 4013l-13 10-2 13 5 11 22-21z"/>
<path fill="#c7d3e9" d="M5728 3925l8 14 22-1 1-3-18-20-10 4zM5608 2406l22-33-2-2-19 3-10 28zM5860 2181l-5-27-8-1-25 14 1 16 27 4zM5457 4075l19-7 6-27-23-7-15 36zM4508 4090l-2-3-19 11 3 11 2 1 13-8zM6022 1485l14 53 2 2 5 2 43 4 30-19 7-39-17-27-73-19zM5493 3149l24-12-1-11-1-2-30 3-2 1zM4042 3110l29-28-3-17-31 16zM5937 2568l40 4 3-17-1-2-31-13-15 9-4 15zM5229 4008l-27 16 22 34 21-14-10-32zM5013 1803l29-16-1-11-21-11-15 10zM6001 2381l20-3-1-17-22 0-8 9zM5337 2208l-6 24 20 17 18-11-2-3-28-27zM5992 3680l14 1 11-27-9-7-10 8zM4862 775l-17-10-38 45 55-3 6-14zM6403 2279l-1-3-12-18-12-4-16 11 17 23zM5979 2388l-1-16-8-7-27 28 22 5zM5989 3681l3 25 20 12 2 0 14-18-2-4-20-15-14-1zM5557 2802l-17 33 6 12 33-15 0-8zM4900 970l6 23 14 2 4-5-6-25zM5446 2894l-5-11-10-1-19 20-2 7 5 5 10 1zM6372 2195l-18 16 6 15 14 4 11-4 8-16-5-18zM4521 2702l9-37-6-2-26 6-4 8 19 27zM6120 2437l-5-3-11 6 3 19 8 1zM5894 1820l-24 14 2 6 34 21 27-20-1-13zM5119 3409l-1-7-35 7 8 24 8 4zM4374 2331l21 28 16-13 0-15-5-5-31 4zM4882 1695l0-16-15-18-18 11-11 29 0 1 20 5zM4284 2739l-7-3-5-1-26 21 4 6 12 7 29-18zM5506 3333l17-3 5-12-13-19-29 14 0 3zM5269 4205l4-1 3-34-9-12-16 4-5 22zM5680 3583l1 15 7 5 5-2 3-23-2-1zM4609 2071l-49-1-1 3 13 48 46-42zM4050 2230l-8-9-11 0-10 16 22 10zM5279 2351l1-11-17-4-4 26zM5809 4031l8-25-2-5-14 0-5 33 8 0zM4706 3610l-15 20 6 11 1 0 26-12zM5033 830l3 25 10 3 18-9 1-20-6-14zM4576 3241l-33 8-9 26 7 1 38-23zM5742 3579l-32-1 4 16 29-7 1-5zM4739 3253l24 3-3-23-21 8zM5829 3953l2-3-21-10-10 8 7 18zM4561 2768l-3-8-8-7-14 0-10 8 2 20zM6017 3487l2-4-30-24-12 13 1 6 20 17zM5567 1971l44 4-3-32-28-1-2 2zM4373 1361l13-17-43-34-9 0 7 51zM4510 2638l6-22-4-4-29 10 9 23zM5231 3810l7-4 8-25-14-17-16 14zM4251 2708l-1 10 18 11 6-30-6-1zM4611 2446l2-19-20-8-27 22 4 9 21 8zM5206 2492l-5-5-17 6 0 10 3 2 16-3zM5418 2776l-7 9 9 27 30-14-4-20zM4767 1337l-19 8-1 33 5 8 15 0 8-46zM6236 1797l-17-35-12-1-29 35 3 4 48 5zM4632 3653l6 7 24-10-2-13-16-7zM5464 1819l-18 13 5 14 17-4 2-19zM4918 1094l-7-27-7 5-9 28 13 2zM6091 3637l5 6 5 3 19-8 3-6-1-4-32-22-4 4zM5769 3623l4-7-2-13-25-6-2 6 6 24zM5514 1925l-18 6-5 14 15 9 12-11-2-17zM5431 2022l11 3 4-14-10-19-16-1-8 7zM5521 747l-2 18 11 1 10-23-5-6zM5596 3770l-2-13-17-22-17 3-11 24 33 25zM6375 1746l-44-14-2 2 4 41 34-3zM5034 3047l1-8-18-9-3 14 8 8zM4047 2032l-31-29-13 23 10 26 29-3zM4057 2918l2 20 13 3 7-20-9-8zM5537 3828l-16-19-2 0-9 6 0 29 28-9zM5642 3297l16 15 23-4 1-20-35-5zM5213 3248l14 3 4-3 13-17 0-3-10-17-21-1-3 3zM5238 1300l3-8-8-18-25-3-6 9 1 5zM5680 3649l20-6 2-14-17-17-23 15zM5514 3978l-3 1-18 26 7 15 31-17zM4652 1631l-26-21-19 7-13 31 29 41 20 3zM6334 3507l-21 17-1 19 23-3 2-32zM4839 2186l1-2 0-17-52-20-2 7 37 41zM4999 3549l2-18-7-10-1 0-14 19zM5580 3605l13 14 19-2 1-1 0-4-29-17zM4399 3261l-7 25 1 1 35-9 3-21-11-8zM4711 615l25 7 24-16-8-21-42 3-1 25zM4704 611l-4-11-5-50 2-12-19 2-2 10 6 48zM5212 3596l-8 4-2 9 12 6 17-3 3-16zM4941 826l8 16 37 1-1-6-21-29-1-1-12 2zM5704 3107l4 6 18 4 10-19-1-4-16-3zM4546 3996l-7 9 8 30 14 0 3-11-7-28-5-2zM5411 4155l-17-15-14 21 27 7zM5561 2973l9-4 1-24-22-15-4 4-4 19 10 16zM5157 3239l-10-9-14-3-6 15 8 17 19-4 3-2zM4520 1919l6-15-13-14-28-3-1 42zM6277 1267l68 17 3-4 5-42-35-33-35 31zM4923 3909l-17-10-14 23 32 0zM5392 3687l-21 5-4 5-2 8 1 5 2 1 12 2 14-10 0-14zM5716 2413l31-4 4-7-30-31-16 19-2 5 7 15zM4589 1348l0 4 8 15 9 5 18-23-6-20-5 0zM4287 3098l4 15 28-2-23-30zM5605 3885l-1 1 2 28 20 13 18-9 1-3-20-41zM5190 1183l-26 12 17 16 10 1 7-18-6-10zM6307 1660l-46-10-2 7 24 46 25-17zM4400 3942l6-22-24-5-15 20 5 4zM4720 2559l-11 0 9 20 7-5zM4828 1925l-18-13-12 1 1 20 22 2 7-5zM4755 3336l-1 9 7 16 19 0 7-22zM4463 2955l2 15 10 5 10-6 5-19-8-10zM4262 3054l17 16 10 2 5-26-20-6-13 9zM5213 3210l-1-14-8-9-10 2-8 7 2 13 2 3 20 1zM5476 4068l-19 7 7 21 1 1 11-3 9-14zM4312 3236l31 11 7-26-4-10-35 20zM4517 1995l12-6 8-12-8-26-28 5 1 31zM5890 3554l-13 45 1 1 28-12 2-12-16-23zM5083 2396l27 11 5-8-14-24-14-2zM5626 3446l4-8-1-4-42-11-4 4-2 6 7 10 23 10zM4813 539l27 34 16-4-13-46-10-3-16 1zM4659 2893l19-12-16-17-1 0-16 20zM5884 3210l-6 7 1 27 9 10 24-15 1-16-7-6zM5719 3091l16 3 6-18-14-14-15 17 1 5zM4745 1491l12-18-1-5-26-16-21 11 0 12 17 20zM5903 2657l-1-2-22-19-1 1-16 42 26 6 3-1zM5549 1354l-31-18-1 0-6 25 11 27 8 1zM5862 4094l5-2 37-13-44-9zM6087 2470l9 30 18-14-1-3-22-15zM4241 1943l10-23-27-28-10 8 6 45 1 1zM4944 3984l26-28-15-11-6-2-18 25 0 5 2 4zM4874 3545l-7-17-23 14 15 15 12-6zM4863 2342l-8 2 9 17 11-4 1-8zM4265 2044l-5-9-28-15-20 27 14 14 37-15zM5844 3234l-5 19 15 4 7-10-9-18zM4528 3521l12-15-6-19-9-4-23 37zM4963 1523l13-10 3-31-5-8-30-2-14 41 1 1zM4460 3596l28 18 11-1 13-10-4-14-35-26-18 23zM5628 1767l-32 19 5 34 23 9 32-14zM4789 1425l-25 1-1 2 3 21 15 2 1 0 9-10zM4054 2494l11-14-11-25-26 5-15 23 14 13zM5807 2586l-22-9-7 0-10 17 7 18 29 2 11-12zM5511 2063l-4 15 34 38 21 0 8-6 4-44-8-17zM6139 942l1-17-15-14-23 9 1 20zM4373 1361l-32 0 1 6-4 29 24 6 13-10zM5551 2467l-3 3 3 31 3 1 1-1 16-24-1-7-3-2zM4116 2594l0 33 5 6 36-20-22-25-6 0zM5202 3841l2 40 17 1-13-37-5-5zM5259 2251l1-2-8-47-26 43zM6359 1041l-28 4-6 35 26 17 37-23-5-7-18-24zM5325 2519l0 1 14 7 6-4-4-21-8-1zM6019 1856l34-25-23-14-15 12 0 25zM5310 3477l-13 6-10 38 10 8 28-24 0-8zM5020 2455l9-10-15-13-21 21 1 5zM4849 3936l-12-28-12 7 16 35 3-1zM4556 1140l4 37 16 5 33-17-1-7-22-27zM5572 2969l8 9 19-13 0-6-1-2zM4959 2884l-5-13-12-7-5 4-13 26 16 7zM5433 4126l-10-13-24 4-1 4 29 22 2 0 5-10zM5806 887l23-4-12-31-22 13zM5717 2547l6 12 19-11-1-4-8-6-8 0zM5146 3686l5 18 20-1 5-23-7-4zM5341 3310l6-2 8-7 3-6-11-26-5-3-7 2-20 24 4 11 2 1zM5483 3319l5 40 1-1 17-25-20-17zM5896 2744l-12-2-7 2-13 15 5 29 31 12 10-10zM5116 2471l18-25-9-13-13-5-21 10 0 16zM5913 2140l-2-1-24 21 2 15 14 10 15-9zM4579 3253l-38 23 31 16 4 0 17-17 1-2zM4269 3301l9 33 5-1 25 7-5-24-7-8-25-9zM6134 1756l28-14 2-13-11-15-10-2-19 8-5 8zM5608 3291l-12-2-2 0-5 7 1 32 2 5 11-1 18-21 1-3zM5347 3465l15-1 6-23-18-5-8 26zM5459 3080l20 13 2-19zM6218 1831l6 25 13 4 11-5 9-12-29-25zM4954 2390l10-1 9-20-12-17-8-2-6 4zM4594 3273l-1 2 24 27 22-12 3-15-6-6-27-5zM5030 675l1 0 6-10-4-18-14-3-8 25zM4866 2082l-42 6 10 27 40-20zM6193 3655l-13 12 6 21 22-3 10-8-3-23zM4568 3099l3-15-43-27-10 20 1 9 4 7zM5767 2699l-10 10 0 22 17-1 5-6-7-27zM4666 3849l7 5 28-13-1-12-11-18-12-4-17 17zM5864 1541l1 1 65-23 0-26-29-48-4 0-43 36 1 46 1 1zM4997 2601l1-1-25-24-17 6 2 17 21 10zM6381 1691l6-40-3-6-35 13 0 3zM6001 1928l15 34 5 0 40-34-15-17-33 1zM4620 3204l-1 1 17 28 11-13zM5251 3921l11 9 19-9-16-34-1 0-13 33zM4983 2913l32-29-8-10-39 15 13 23zM5062 3749l4 0 11-34-11-11-26 7-3 9zM4922 3070l7-22-2-4-33 0 0 1-1 11 15 21 1 1zM6039 2453l-6-6-14 1-6 20 11 8 14-3 1-1zM4884 2759l-23 2-2 12 7 8 15 6 12-14zM5036 3355l-18-7-7 7 11 33 20 2 4-8zM5142 3810l-12-13-19 15 8 29zM4559 2886l2-28-13-2-23 26 0 7 12 11zM4886 1199l2-26-1-1-25-10-11 8 0 12zM5451 1846l-3 9 22 13 10-5 4-15-16-6zM5426 2721l-1-12-9-3-20 21 1 6 21-2zM6030 1322l3 31 62 8 4-15-8-16zM5448 2939l-34 11-3 4 29 16 8-5 2-20zM5814 1549l1-18-4-4-17 11 5 15zM5633 2507l-23 21 10 8 14 3 3-3 8-28-6-4zM4831 2953l12-3 4-8-19-20-10 4-3 3-1 6zM6151 3598l7-8-16-23-26 8-3 9 17 16zM5814 2365l-4 3 0 25 21 8 6-30zM6600 2442l35-4 2-27-19-32-1 0-15 14-2 4zM4923 3242l20-7 8-14-2-13-17-15-13 1-15 13zM4844 3900l-7 8 12 28 14-16zM4176 2858l22-11-13-18-19 2zM4771 2707l-4 15 9 21 23 7 6-20-4-12-13-11zM5090 3061l-15-16-9 2-5 10 14 21zM6325 2080l9 31 1 0 24-6-1-29-19-7zM4963 569l-6-16-3-1-27 28 18 21zM5929 3628l-6-12-12-3-10 8 0 26 6 7zM4558 2363l-9-35-1 0-22 3-2 46 25 4zM5884 2484l12-20-17-30-12-5-25 24 23 36 13-1zM4594 3411l19 24 9-7-10-26zM5642 1079l2 37 56 7 10-5-31-45zM5003 3153l19-7 2-2-11-34-4 0-4 2-12 38zM5385 2206l20-13-12-17-14-4-6 3-8 8-1 10zM5072 1107l10-6-4-15-28-5-5 15 7 11zM5831 2136l16 17 8 1 5-5 9-22-24-13-15 18zM4111 2685l-1-4-14-15-12-1-6 7 7 26zM5906 3975l19 3 4-4 3-16-2-9-24 0-6 5-4 8zM4298 1860l-29 29 6 22 19 12 20-10-4-39zM5751 4104l-10-10-15 2-6 17 2 11 28-2zM6106 674l-12 39 40-3-3-30zM4372 3939l-5-4-14 2 6 39 4 3 13-6 6-14zM4471 2090l45-6 2-5-6-14-24-12-25 11zM6527 2392l-8-16-4-2-20 6 0 11 19 20 3-3 3 1zM5332 3082l33 19 2-1 6-5 5-19-3-4-37-9zM5604 2568l-13-8-18 10-6 12 18 8zM4851 3186l-25 18 3 8 32 15 7-2-5-34zM5887 2012l-26-5-7 8-8 44 48 0 8-6-6-30zM6415 1734l3-1 1-19-4-7-33-3 2 19zM4710 2479l17-12-25-20-6 26 10 6zM5204 2713l7-1 15-31-3-10-8-1-5 1-3 2-8 36zM4287 3262l-13-8-16 13 14 25 19-13zM4177 1877l-19 15 19 30 17-20zM5363 3159l2 27 14 4 8-7-1-6zM5945 3664l28-14 0-8-25-10-9 28zM6199 3594l-15-19-16 13 18 34 7-3zM5748 947l-9-27-9-4-24 9 18 33zM5128 960l9 27 21-3 8-36-31-4zM6106 674l25 6 12-7 10-17-13-31-23-5-27 30-2 2zM5763 1597l17-4 3-9-15-15-6 28zM5966 2748l-36-6 4 25 36-12zM5038 2657l-18 23 3 6 49-3 3-14-28-14zM5763 3072l-2-27-26-10-11 19 3 8 14 14zM4429 2945l-7-1-16 9 20 20 5 0 6-19zM5329 3712l-12-6-14 15 6 21 5 1zM5922 2520l0 17 11 12 15-9 5-29-18-5zM5874 2274l11 7 4 0 14-10 1-6-20-15-1 0zM4407 2669l-5 2-9 17 1 7 9 10 7-1 10-11 1-2zM6168 3588l-10 2-7 8 5 28 8 3 21-6 1-1zM5425 3002l-2-17-13-4 5 31 2 1zM5110 3959l-14-2-6 34 18 6 14-3-4-26zM4764 2469l15 0 11-13-7-25-31 15-1 2zM4485 3315l3 10 44-16-3-32-3 0-38 25zM5371 2650l0-1-16-21-12-2-6 7-5 14 10 15 6 1zM5887 793l14-13-3-35-23-12-15 38zM4537 2900l-12-11-20 4-1 17 5 7 8 6 16-6 4-7zM4506 4084l9-10-5-13-12-2-12 13zM4548 4107l19-7 2 0-2-31-29-11-6 15zM4204 2873l-28-11 0 19 16 8 13-7 2-4zM4884 2117l-50 2-2 7 17 23 17-2 19-26zM4951 3102l21-11 0-1-12-18-7 0-11 14 0 7zM4406 2953l-3 0-15 27 7 12 11 0 20-19zM6018 2393l21 22 12-10-5-20-24-6zM4448 2705l-14 31 12 5 1-1 15-20-1-6zM4284 3022l11 0 6-12-12-14-13 5zM4823 2195l-37-41-10 12-1 31 38 14zM4661 1393l-3 13 14 14 8-5 4-7-2-5-15-14zM5586 3169l-21 9-7 21 15 15 22-27-1-15zM5844 3824l-6 12 16 14 22-8 2-4-1-5zM6154 1543l32 35 1 0 19-67-17-10zM5365 3186l-25 12 14 17 26-9-1-16zM5023 3503l-8-13-14 3 3 19 3 0zM6304 3446l12 38 10-5 11-20-20-17-9-3zM4682 3118l8-23-30-16-10 14 5 21zM4902 4025l-2 0-10 21 5 9 8 4 15-20-10-11zM5660 3595l21 3-1-15-9-6zM6042 3614l2-9-5-8-3-2-21-7-4 2 5 29 19 5zM6035 3624l-19-5-10 12-2 4 4 12 9 7 1 0 26-9 0-7zM5115 2623l-7 38 6 3 24-21zM5914 2601l19-6-7-25-15 29zM5110 1014l-11-29-19 19 9 15 15 4zM5336 3340l-5 7 3 28 1 0 22-4 3-11-6-18zM4406 2326l1-11-12-21-9-2-11 38zM4615 2759l10-9 0-19-14-2-6 22zM5342 3685l6 16 17 4 2-8-22-14-2 1zM5047 2998l1 1 2 0 14-17-8-13-16 17zM6047 2484l-9-11-14 3 3 27zM5193 2680l-17-2 9 29 8 0zM5819 3314l26-4 2-16-4-8-12-3-4 1-9 24zM4526 1904l5-1 28-26-1-4-27-25-8 6-10 36zM4504 2821l-2 20 35 0-2-19zM5768 2017l-6 1-15 25 47 11 7-11zM5337 2633l6-7-6-27-38 0-2 18zM5484 2617l11-13-11-12-12-3-14 19 9 8zM4960 1121l-14 45 4 5 28 10 17-32-7-31-7-3zM5311 3684l-2-8-29 15-6 11 14 3 10-5zM5143 1313l-11 27 17 11 23-8 4-29-17-12zM4856 3768l-5-13-20-5-8 22 2 1 29-3zM6493 1978l12 7 6-2-6-28-3-2-6 2-7 14zM5099 2324l-8-10-16-4-18 15 6 31 13 10 7 1 16-34zM5974 1349l19-31-32-20-15 35 13 26zM4957 3873l-13 16 10 15 16 3 19-10 0-4zM4069 2231l1-18-19-4-9 12 8 9zM4941 826l10-17-14-14-30 4-1 23 3 4 10 7zM4380 2222l7-19-11-10-22 9-3 4-2 14 2 1zM4287 2246l-1 8 13 27 27-29zM5970 2365l-4-13-1-1-10-3-25 13-5 15 16 17 2 0zM4603 2487l9-2 14-21-15-18-20 12 1 18zM4013 2322l-4 3-14 24 18 20 14-2 21-18-3-28zM4503 3004l-25-21-15 23 19 13 20-14zM5823 3411l-11-22-10-1-10 2-3 3 6 25 27-4zM4356 2335l10 40 26 1 3-17-21-28zM5391 3366l25 15 5-3-6-20-16-10-4 2-3 5zM4960 1860l22 3 12-13-15-28-25 21zM5973 3650l-28 14 5 10 17 9 12-5-2-22zM4908 2731l3-20-25-7-16 13 6 14 17 6zM5609 1330l23 0 11-11-5-64-18-15-31 33-6 28zM5749 3987l-17-4-6 5 1 20 0 1 24-8zM5921 3493l26 11 2-37-3-3-21 1-9 19zM4618 1329l8-9 3-17-39-27-2 1-6 9 1 27 30 16zM5517 3246l19 19 2 0 12-11 3-21-14-10-16 6zM6384 1139l22 54 23 21 18-5-22-59-13-37zM4667 2959l-20 40 7 20 53-11 5-9-2-19-21-29-5-2zM6212 1274l12-12-9-33-31 1-4 28zM5001 3361l-8 0-18 25 14 12 13-9zM5032 973l29 0 16-11-24-36-11 2-13 29zM5235 2523l-1 5 4 14 18-3 15-17 1-9zM5119 3401l-1 1 1 7 11 15 6 2 9-16-2-11-1-1zM6403 1782l33 21 4-3-4-38-27 3zM5834 2405l-37 34 31 19 14-5 25-24-4-10zM4900 1424l8-11-19-16-15 25 1 1zM5851 3960l1 21 5 2 21-13 3-5-13-21zM4442 2482l-5-16-14-9-37 29 7 23 42 13 1 0 7-31zM4489 2488l-47-6 1 9 38 16zM4517 2790l-18-19-11 0-5 7 0 1 5 16 13 14zM5120 2934l-21-3-6 18 8 11 1 0 26-11zM4683 2514l-1 16 14-1 2-7-2-5zM5590 3689l38 14 12-26-37-12-12 18zM5558 3199l7-21-13-9-7 2-9 13 0 6 8 7zM4861 2848l34-6 7-9-4-6-43 9-1 3zM5627 3383l-12-7-22 6 0 30 39-1zM4743 1978l34-3 3-2 2-19-18-19-19-8-10 14zM5488 1791l-28 5 4 23 6 4 19-1 5-6zM5670 3182l12 15 9-1 10-14-1-12-26 1zM5984 2281l-13-32-6-1-25 18-7 20 7 22 2 0 37-6zM4254 2357l8 3 23-17-4-39-28-8-6 52zM5839 2079l-4 4 0 11 10 20 24 13 18-11 1-2-7-17zM5411 2694l11-8 2-12-15-6-3 19zM5413 880l10 26 8 6 19-29 11-43zM4728 2040l13 5 32-5 3-15-3-5-53-16-1 12zM4978 2123l6 4 22-1 12-30-4-8-41 8zM4560 3148l27 21 9-40-30-10-10 9zM6361 1933l18-19-6-7-24 4-2 13 5 6zM4741 2906l24 15 12-14 3-18-2-6-19 5zM4666 2474l-20 0-5 31 21 4 7-5zM5481 2937l-7 16 11 22 20-32zM4382 3915l-2-5-14-16-21-5-3 28-2 15 13 5 14-2zM5597 1667l-21 5 2 18 10 12 32-17 0-1zM5795 3418l-4 15 1 2 30 3 5-6-5-18zM4195 1637l17 7 1-1 7-7-17-24-18 13zM5377 3531l8 15 16 3 1 0 7-34-15-16-8 1zM3971 2028l1 40 3 3 23 7 5-2 10-24-10-26zM5966 1893l-13-13-31 14-7 11 12 33 39-28zM5075 3045l15-13-17-16-10 5-7 11 10 15zM5036 1696l-22-28-24 7 2 24 43-2zM6425 1977l8-28-3-4-24 10 0 2zM5574 3568l-19-11-10 21 12 16 20-9zM6097 2406l26-7-3-8-9-9zM5258 3344l14-6-7-38-3-1-16 17-2 10zM4579 3232l-26-23-19 17 9 23 33-8zM5231 3248l-4 3 5 27 27 17 6-32zM5803 1608l20 2 6-14-1-5-16-15-12 0-2 3zM6478 2336l-28 4 6 19 13-2zM6144 3769l5 9 26-19-1-14-32 5zM6266 3550l20-12-8-36-29 10-8 21zM4594 3445l11 3 8-13-19-24-5-1-5 3zM4945 601l-18-21-19 2 0 34 40-6 0-1zM4922 2746l1 0 22-13 5-19-8-15-26 5-5 7-3 20zM6204 1963l-8-2-7 3-11 53 44-21 6-9zM6344 2259l6 5 12 1 16-11-4-24-14-4-16 19zM5431 3805l6-17-3-11-2-1-21-1-14 5-1 7 8 18zM6456 1961l6 0 9-20-18-23-22 5-1 22 3 4zM5026 622l17 6 14-4 1-1-5-18-29 9zM5472 3826l16-2 6-9-8-13-18 4zM4550 2510l18 23 12-30-10-7zM6197 2427l-1 4 6 16 29 6 3-5-4-22-7-6-13 0zM4839 755l23-31-15-24-10 25-17 13zM5508 3787l-18 3-4 12 8 13 16 0 9-6zM5521 747l-8-6-10 6 15 18 1 0zM4812 2410l3 5 26-4-24-15zM4366 2875l-40-10-5 20 22 11 22-10zM5655 2509l22-3 5-5-2-12-4-3-4 0-13 10-6 12zM4682 3118l-17 46 22 6 31-28 0-3zM6356 2400l11 31 10 2 13-5 5-9-15-22-16 0zM5235 2523l-3-8-20 0-7 14 29-1zM5022 1724l-28 7 3 9 23 11 12-8zM5205 2529l-7 7 38 9 2-3-4-14zM5959 774l2-24-41 0 3 18 25 12zM4518 3912l-22 20 7 14 19-22zM4824 2088l42-6 3-15-32-13-15 2-4 6-1 20zM6120 3318l25 30 2 0 18-17-29-29zM6091 2409l1 0 5-3 14-24-1-1-29 6-1 6zM5663 2876l-3 1-18 14 5 15 2 0 37-15-10-15zM4676 2665l16 17 5-2 1-1-3-23-3-2-1 0zM4878 1369l-3-27-19-11-28 8-3 27 2 5 24 8 7 1 4-1zM5693 4095l6 14 21 4 6-17-18-11-13 7zM5853 1987l35-35-7-9-21 1-22 31zM4709 1463l21-11 3-20-17-13-1 0-11 12 3 30zM5681 3791l5-1-2-23-16-9-16 9 5 11zM6419 2483l-2 0-4 19 8 12 35-24-3-3zM4608 2287l-13-20-26 3-6 13 18 18 25-12zM4663 3934l9 17 8-2 11-11-11-40zM5780 3550l-9-7-24 0-3 13 35 2zM6401 2457l21 3 7-10-27-5-1 1-3 4zM5111 3009l9-18-2-3-14 4zM5421 3378l16 2 5-2 2-24-8-3-21 7zM5388 1568l-2 17 21 25 25-11 1-13-20-27-21 5zM6142 776l5 29 36 4 11-6-3-22-19-17zM4275 2580l19-25-42-9-8 3-3 18zM4961 2802l-3-15-1-1-14-2-20 8 11 27 6 2zM4628 1942l23-13 2-11-20-25-19 4 11 44zM6182 1088l45 50 11 4 2 0 21-55-51-18zM5572 3656l-22 8 2 15 19 13 13 1 6-4 1-6zM6197 2455l-14 10 1 11 27 14 6-6zM5079 1371l-30-10-23 18-3 19 51 16 12-26zM6349 1911l-9-9-15 6 3 14 9 5 10-3zM6091 3290l16 29 7 1 6-2 16-16-19-19-16-8zM6159 2552l-12 1-10 13 11 17zM4849 3451l-20 13 0 4 9 11 6 3 7 1 16-19 0-1zM4520 3820l-6-16-7 1-11 6 11 25zM5715 3899l16 20 10-4 10-12-17-22-7 1zM5345 3683l22 14 4-5-10-24-6 0zM4741 3758l8 15 25 3 15-20 0-18-2-5-25 1zM6152 2380l1 10 20 14 7-2-1-26-20-3zM5002 736l-15 11-6 23 11 3 22-9zM4380 3043l-4 24 6 5 29-21-8-17 0-1zM5476 4163l6 17 11 2 7-7-1-20-18 2zM5540 2758l16 32 14-9-2-26-22-6zM5452 1364l24 5 5-8-3-22-15-15-21 27zM5453 4132l-19 1-5 10 7 9 23-3 3-7zM4651 2127l32 23 8-5-5-36-13-4zM5037 645l20 7 0-28-14 4zM5073 807l8-31-1-1-31 19 0 2 10 18zM5189 3653l3 27 3 1 28-17-14-16-4-1zM4392 3859l5-5-3-15-16-10-22-2-6 23-1 12zM5643 2341l28 24 19-19-7-21-39 15zM5445 3280l4-25-17-1-16 34 3 1zM4218 2427l-2-26-4 0-35 11 2 11 4 6zM5619 2817l-11 8-4 14 9 10 20-12 0-4zM5665 1734l6-15-11-35-1 0-13 7 5 32 10 13zM4637 1409l-2-21-1-2-21-2-4 24zM5496 1931l-10-26-3-2-8 1-12 21 1 10 17 13 10-3zM6111 2700l28-18-13-14-17 23zM6383 1693l35-23-31-19-6 40zM5778 3128l-5-19-12 7 9 20zM6108 2558l5 6 8-4 9-15 0-15-22 6-4 4 0 2zM4265 2044l10 2 14-17-5-35-15 9-9 32zM3958 2355l-30 39 10 12 13 9 7 0 16-11zM5199 3253l2-2-14-19-15-1-9 3-6 5 0 14 2 1zM5187 1152l20-13-13-31-4-2-15 2-1 1 8 43zM4937 4011l10-2-1-23-2-2-11-7-15 25 3 4 5 4zM5671 2999l1-26-7-3-23 4-1 1 0 6 6 13 17 6zM5316 3820l25 26 25-15-3-11-23-13zM4150 2431l11-31-24-5-10 19 6 19zM4807 3955l-9-17-32 7-6 8-1 15 3 3 2 1 29-4zM6173 868l-6-1-46-31-22 41 26 16 47-23zM4792 3337l-6-25-30 0-9 11 8 13 32 3zM4934 3444l1 1 18-1 18-15-21-30-17 4-2 3zM5746 1560l1-36-22-13-12 32 22 26zM5690 2346l-19 19-1 3 35 22 16-19 1-11zM6268 3648l-7 23 12 7 31-25zM4343 2077l18 12 2 0 5-3 21-38-4-6-25-4-20 20-3 10zM5602 4102l30 3 6-5 2-7-1-4-5-10-42 1zM5442 2465l1-20-3-3-21 10 5 16 16 0zM5909 3153l6-24-17-15-8-2-17 21 9 21 14 12 2-1zM5128 648l-6 11 5 23 32 11 8-43-1-2zM6347 2141l28 3-6-31-3-2zM4993 1350l-29 33 0 1 48 28 11-14 3-19zM5659 3376l6 11 17 11 2 0 7-6 7-21-20-23-16 6zM5234 3211l4-13-4-11-22 9 1 14zM5089 1632l-8 22 11 12 22-1 3-17zM5937 3125l-3-1-19 5-6 24 28-1zM4732 3127l-8-34-21-10-13 12-8 23 36 21zM5301 2484l-7-1-21 26 0 1 25 9 14-12 1-5zM5416 3404l16-4 5-20-16-2-5 3-3 5zM5177 2162l-40-11-9 21 17 24 22 3zM4767 1839l5 8 26 9 12-10-33-25-2 2zM4416 2654l0-26-30-17-11 21 0 11 4 6 34 8zM5056 3032l-9-2-12 9-1 8 10 17 17-7 5-10zM5225 1920l-10-62-5-7-34 4 8 67zM4875 2916l-10 19 15 17 6-1 12-12-3-9zM5210 1851l5 7 53 5 2-2 2-48-50 6zM5528 3318l-5 12 8 18 26 1 7-6-14-30zM4551 2749l-1 4 8 7 15-16-4-11zM5060 1801l0 2 5 20 28 22 21-35-20-28zM5620 2996l-11 10-3 6 21 11 6-4zM5278 3598l21 1 1-18-20-2zM6032 1668l-41-4-3 25 43 29 2-3zM4720 3532l0-1-7-16-53-12-3 3 14 47 19 4zM4903 1568l-10-12-29 13-1 1 7 13 29 1zM4388 1952l31-5-3-9-14-14-12-3-13 16zM4820 1093l-5-9-21 4-1 20 10 2 13-6zM4334 2618l-21-11-3 2-2 3 2 39 16 3 10-3 4-19zM4093 2382l-7-11-23-3-9 18 1 5 13 7zM6237 1550l-6-40-25 1-19 67 24 1 22-14zM5294 2623l17 29 21-5 5-14-40-16zM4518 3077l-36-4-24 25 1 4 19 10 41-26zM4979 3198l17 24 11-18-11-18-4-1zM5469 3526l24 15 26-28-25-21-20 11zM4008 2122l22-4 2-28-29-14-5 2-5 27zM5515 3124l-3-12-19-4-8 19zM4632 3729l-10-17-1 0-8 3-19 32 5 4 32-10zM4086 2984l16 23 6-1 8-8 4-15-7-14-12-4zM4722 2799l6-11-5-5-12 0zM5164 3316l8-14-4-9-13-5-15 3-11 21 26 9zM5046 1066l4 15 28 5 10-24-14-10zM4603 3995l4 8 4 0 7-11-7-4zM5508 2349l-18-15-17 5 8 26 11 10zM5820 1558l2 0 42-17-8-13-38 26zM4795 1443l-4-2-9 10 13 2zM5291 3319l-15-19-11 0 7 38 12 2 3-1zM6223 2338l18-20 0-1-26-22-25 5-2 2 23 37zM4340 2783l-2 0-32 6-2 3 8 22 24-2 11-7zM5478 3964l-10 26 25 15 18-26zM4291 3172l-24 19 5 12 5 1 9-3 13-25zM4906 993l-10 11 0 6 4 2-4 0-1 11 1 0 31-1 3-10-10-17zM5639 1609l-27 27 1 2 19 13 10-3 16-24-3-8zM6427 2206l-14-26-23 9-2 3 5 18 26 8zM5814 2118l2 6 14 8 15-18-10-20zM4485 1851l38 3 8-6 5-24-32-14-22 4zM5956 3348l-32 15 19 12 22-4 1-3-8-20zM4868 3502l-6 16 5 10 14-4 7-17-6-11zM5382 1393l-6-14-23 1 0 21 28 5zM4522 3797l-2-18-16-7-13 8 16 25 7-1zM4868 571l-12-2-16 4-21 21 6 6 10 29 26-1 8-5zM4689 3745l14-12-1-24-15-5-9 40zM4699 1219l-8-6-31 8 0 13 6 13 14 7 21-12zM5922 1894l-16-25-37 18 11 19 35-1zM5310 3819l6 1 24-13-1-16-9-13-29 15zM5707 3514l32-14 1-5-23-14-12 7 0 26zM5351 3492l-26 5 0 8 10 12 16 6 8-26zM4854 3988l22 11 12-14-23-13zM6059 2481l-4-14-16 5-1 1 9 11 7 1zM5864 2759l-23-4-23 19-1 11 2 4 3 2 27 6 20-9zM5401 2647l8 11 20-8-12-19-15 7zM4834 3637l13-11 6-18-28-4-3 5 1 27 4 2zM4254 3094l-4-2-14 1-15 37 1 3 16-3 17-28 0-5zM4465 2970l-21 12 2 19 3 4 14 1 15-23-3-8zM5543 4041l41 32 1 0 16-30 1-24 0-1-50 4zM6301 3622l-15-15-29 27 0 4 11 10 36 5 4-3zM5027 703l23 4-8-27-11-5-1 0zM5852 2866l-8 3-13 15-2 18 1 3 22 5 4-1 28-30zM5788 2642l9 22 22-17-15-17zM4778 3460l22 13 10-20-17-10zM4836 1835l-1 3 17 30 7 4 43-11 3-7 2-15-12-5zM4726 3733l-2 5 3 15 14 5 21-24-8-7zM4653 3217l-6-33-27 20 27 16zM5017 3300l9 28 20-14-8-12-6-2zM5620 3548l-7 2-5 20 13 4 1-1 1-23zM6599 2196l5 38 19-11 5-20-13-13zM4611 3988l3-11-8-3-6 7zM3996 2267l4-19-20-7-13 26-1 4zM5359 2918l12-3-12-26-29 16 1 9zM4694 1283l-12-15-24 9-4 15 37-4zM5216 4212l-5 22 6 6 16 0 11-16-16-18zM4459 2556l-24-30-27 32-3 9 2 4 40 17zM5439 2728l12-8-21-13-5 2 1 12zM5553 4169l9-4 6-15-2-6-29-5 10 27zM5468 3666l-2-24-26-12-1 0-1 4 1 15 13 20zM4358 4067l-2 2 13 10 4-2 7-16-3-3zM4576 3292l-4 0-23 38 2 16 24-5 10-33zM6472 2119l4-19-12-12-22 10 10 33 2 2zM4863 3146l8-7-7-26-21-9-3 1-1 9zM6146 725l-12-15-40 3 14 29 19 3zM4756 3286l19-14 0-6-12-10-24-3-11 13 6 10zM5430 2204l-26 39 31 30 29-27 0-3-16-28zM4428 2103l-9-27-22 16-2 19 14 16zM5144 3199l10 7 6 1 15-15-11-18-13 2zM5876 2946l10 15 18-1 3-26-18-8-1 1zM4958 2599l-17 17 10 21 19 1 9-29zM4261 1957l30-17 3-17-19-12-24 9-10 23zM4782 1340l2 0 36-5-6-39-18 2zM5425 2915l-10-1-1 36 34-11 1-7zM4050 2959l-2-18-12-4-13 17 21 13zM5330 2427l6 4 5-1 15-43-7-5-19 1-9 21zM5831 841l-12 0-2 11 12 31 7 2 15-11 1-10zM5572 4121l24-4 2-2 4-13-10-22-7-7-1 0-16 12-8 17 3 11zM4817 3453l12 11 20-13-2-17-23-1zM5541 2354l12-20-21-16-15 4-3 24zM4534 3487l21-2-1-16-6-5-8 0-15 19zM5552 2995l9-22-10-4-12 6 0 9 12 11zM5001 1313l0 5 47 18 21-27-43-27zM5794 3294l-7 8 22 29 5-6 5-11-1-6zM4598 2837l13 24 14-24 0-1zM4642 2793l8-1 13-18-10-17-8 3 0 1-4 30zM4992 654l8 16 10-1 1 0 8-25-3-6-5-2-13 4zM5031 3536l4-4-6-12-7 0-4 2-2 9 4 4 0 1zM4459 3820l18 8 13-16-10-13-21-3-4 11zM6269 1049l56-9-9-38-4-4-57 18-1 1zM4724 2690l0-1-15-13-11 3-1 1 10 18zM5960 3319l-30 11 1 4 25 14 2 0 8-15zM5326 2473l-25 11 12 18 17-4-2-21zM4377 1937l13-16-16-21-8 5-19 36zM5612 2461l23 3 2-1-9-44-3-3-8-1-16 31 2 7zM4872 3843l10-5 18-28 1-13-10-4-25 12 4 37zM5927 2490l-2-22-29-4-12 20 17 21zM5637 2243l-5 3-8 9 2 36 3 2 15 6 6-2 8-26-15-26zM5978 1929l-8 20 15 29 31-16-15-34zM5066 3749l15 13 25-26-6-13-21-8-2 0zM5409 2668l-1-2-12 2-4 6 2 10 12 3zM4949 1225l34-7 1-30-6-7-28-10-21 32zM4793 1978l26-8 0-15-3-3-25-5-9 7-2 19zM5476 2643l19-3-11-23-17-1-4 15zM5170 4176l3 16 20 3 12-16-27-15-7 10zM5813 3347l-7-7-3 1-22 20 11 29 10-2 12-39zM4870 1583l1 19 23-6 6-7-1-5zM5313 1280l-15-37-25 3-4 5-2 30 12 18 18 7zM5338 4112l21 0 18-17-9-17 0-1-18 4-18 17zM5556 1292l7 1 4-21-16-12-5 3 2 24zM5584 2837l1 33 26-3 2-18-9-10zM4849 3950l-5-1-3 1-2 1 6 39 9-2 11-16 0-6zM5145 3685l9-36-6-4-23 18 7 18zM6481 2334l1-1-23-23-2 0-9 5-7 14 9 11 28-4zM4965 2309l10-11-22-17-4 0-13 26 10 8 7 0zM5267 1281l-26 11-3 8 0 2 23 8 18-11zM5680 1632l7 18 30 6 5-11-10-28-21 0zM4871 2565l13-5 1-1 9-20-33-32-31 10-7 17 41 30zM5857 4065l3 5 44 9 1 0 1-10-8-11-9-5-29 2-4 3zM6036 1538l-14-53-92 8 0 26 11 24zM4334 2333l-16 16 6 35 12 10 11-2 19-17-10-40-11-5zM4609 2071l-9-27-39 9-1 17zM4880 981l3-4-22-16-1 22zM5458 1481l42-1 12-26-23-25-44 9-1 2-1 19zM4963 2526l-10-17-41 1-1 1-12 24 41 13zM4462 1130l8 3 26-33-42 4zM4502 1066l-2-4-52 8 2 8 52-8zM5035 3807l26 3 18-14-1 0-31-12zM5358 1191l14 2 30-5-15-52-38 12 8 42zM5394 4140l-2-9-26 3-3 6 6 19 11 2zM4891 2904l9-18-2-7-11-5-14 12 5 23zM6510 2310l5 29 11-12-11-17zM5533 735l-18-19-3 0-3 10 5 8zM4913 2194l-24 3-5 17 6 11 16 14 7 0 13-32zM4381 2915l22 6 1-1 4-26-38 1 0 1zM5735 3958l28 3-5-23-22 1zM5471 2171l-8-1-28 20-6 13 1 1 18 11 28-15 1-24zM4907 3177l3-16-9-8-22 17 1 9 4 3zM4940 3889l-12-7-22 13 0 4 17 10zM5162 2585l-5 2-4 28 28-13 0-12-1-3-3-3zM4949 3943l6 2 18-21-3-17-16-3-13 27zM4376 2193l-3-20-20-4 1 33zM5032 4145l-26-19-16 17 10 7 33-4zM5201 2958l12-29-2-4-7-11-14 5-11 23zM4928 1793l-11 37 37 13 25-21 2-8-29-32-18 5zM5929 2564l4-15-11-12-22 2-1 15 13 11 14 1zM5297 2108l-3-2-10 1-4 8 19 41 24-15zM5402 4052l10 29 4 1 21-6 5-5-25-31zM4138 2747l-8 9 8 19 11 1-1-25zM4529 3277l3 32 17 21 23-38-31-16-7-1zM4890 929l4 9 26 2 9-16-10-10-21-3zM4420 2693l26 10 8-20-18-9-15 17zM5147 3467l-19 5 1 3 25 14 7-6zM6253 2104l0 1 20 46 3 1 15-3 13-11 8-22-31-30zM5444 1396l35-8-3-19-24-5zM5901 3647l-23-6-19 12 21 34 19-6 9-21-1-6zM5291 817l11-8 12-20-14-14-41-10-9 19 11 24zM4772 2063l-17 12 17 22 20-1 3-4zM4156 3300l-12-30-27-4-27 29 2 5 41 8 14 7zM4496 1659l12-3 13-26-28-21-6 0-15 15zM5237 2666l-13 4-1 1 3 10 22 20 10-9-6-27zM6481 1791l2-39-43 5-4 5 4 38zM4301 3010l23-4 1 0 1-4-7-17-24-7-6 18zM5334 2846l0 11 5 6 22 10 21-9 4-4 3-22-1-5-7-8-19-4zM5687 1566l3-13-8-25-38-7-9 11 7 32 36 13zM4663 3164l-14 13 0 4 31 29 22-13-15-27-22-6zM4748 3208l17 18 18 0-9-36-14-10-3 1-4 5zM5632 1038l-52-18-6 49 18 15 41-13zM6460 1857l-5 19 7 14 1 0 30-12 6-11zM6430 1945l1-22-18-12-20 9-3 26 16 9zM5031 1635l20 2 27-25-37-19-20 19zM4723 1138l2 12-14 19 3 2 33-2 6-25zM4090 2308l38 10 17-25-24-20-18 1zM4047 2865l-7 0-8 17 17 15 10-5zM5374 3834l11 33 32-16 2-5-32-17zM4992 1699l-11 14 1 8 12 10 28-7 13-27zM4879 3365l-9 6 6 51 11 7 5 0 1-1 7-9-4-41zM6242 1143l72-6-14-45-34-9-5 4-21 55zM4203 2640l1 2 18 8 5-5 2-29-2-1-25 6zM4591 3899l6 2 10-16-12-18-20 4-1 8zM4571 1474l31-2 5-6-12-41-6-2-17 14-1 35zM5108 3775l16-31-2-4-16-4-25 26 5 16zM5378 3076l19-10 3-21-12-5-5 1-8 10 0 21zM3919 2393l9 1 30-39 0-4-16-18-17 34-26 13zM5303 3090l13 30 15 8 1 0 3-3-5-41zM4821 2283l11 18 18-8 3-12-8-9-19 0zM5797 911l-3-11-2-1-30 12 5 11 20 1 7-4 3-3zM4100 2911l24-6 12-18-5-14-15-9-28 8-2 1-3 9zM4990 2268l-18-16-19 29 22 17 4 0zM5040 3531l6-9-6-16-11 14 6 12zM6107 4104l11 22 17-9 5-24-3-2-25 1zM4850 1288l35-5 4-7-1-25-36-4zM4503 3208l-3-24-12-10-18 23 15 15zM5693 2514l-9 16 11 6 13-17zM5955 2348l-13-40-2 0-4 3-14 37 8 13zM5053 3281l5-2 9-15-24-13-23 20 15 9zM4644 2249l-1-24-14-13-11 1-6 27 14 9 17 1zM4585 1844l0-4-46-18-3 2-5 24 27 25zM4612 2866l-1-1-3 1-16 17 0 2 6 6 13-5 5-11zM4963 710l1 9 24-3 10-12-10-24-12 1zM4998 704l-10 12 14 20 18-7-1-22-4-3zM4444 3892l-3 6 31 20 6-23-22-11zM5021 2413l-9 8 2 11 15 13 11-1 2-25-2-1zM5211 3724l-2-14-7-5-22 5-5 15 16 18zM4258 3012l19 15 7-5-8-21-7-1zM5768 1271l-3 39 34 38 12 2 24-39-32-49-23-3zM6384 2110l19 20 16-12 6-23-2-2-27 4zM6038 3786l-6 11-1 11 20 10 13-7 4-24 0-1-18-9zM4968 3269l-25-34-20 7-11 13 14 19 37 4 3-3zM6124 2465l-3 0-8 18 1 3 12 7 9-9 2-5zM6270 1873l8 8 11 0 2-6-12-14zM5167 3120l-18 10 28 31 6-2 5-34-4-4zM4801 2718l4 12 22 0 6-17-10-4zM4544 3124l12 4 10-9 2-19 0-1-45-6 1 12zM4799 3489l4-6-3-10-22-13-19 8-3 9 7 11zM5700 3946l8-3 9-13-22-19-7 3-1 8zM5539 3223l14 10 20-19-15-15-14-2-7 16zM4741 2487l-11-20-3 0-17 12 17 13zM5700 2667l1 15 1 1 21 11 13-7 4-7 0-3-19-17zM5541 2445l12-10 0-20-35 2-5 9zM6511 2023l-8 33 18 14 21-2 7-30-24-21zM4745 1927l-3-13-25-18-16 5-9 42 8 4 35-6zM5094 941l-9 20 13 12 30-13 7-16zM5803 3087l31-22-2-5-13-9-22 6-8 19 4 6 7 5 1 0zM5220 3405l3-16-14-13-18 28 6 8 12 5zM4994 2040l4 26 16 21 32-39-4-7-30-9-16 5zM6020 2361l3-5 0-9-4-4-21-8-10 11 10 15zM4516 3225l18 1 19-17 0-15-16-10-34 24zM6243 2552l25-6 5-30-22-11-32 26 11 16zM4218 2905l-13-23-13 7-3 17 9 13 15 1 4-4zM5883 2250l1 0 4-13-6-11-10-2-3 20zM5500 2539l-12 21 4 9 18 9 6-7-10-32zM4614 2691l-4 2-9 17 4 14 6 5 14 2 11-4 4-10-2-16zM4920 680l5 1 4-1 19-40-42-5 0 19zM6186 3688l9 18 24 5-11-26zM4479 3835l-3 13 9 13 19 4 7-20-4-7zM5842 2565l-1 0-18 0-10 6-6 15 8 16 15 1 8-5zM6273 1742l4 17 24 27 24 0 8-11-4-41-52-3zM5552 3679l-13 16 14 26 18-29zM5033 830l26-15 0-1-10-18-33 13 5 13zM4531 2458l0-15-50 3-1 2 5 6 32 10zM5157 1382l-8-31-17-11-11 3 0 50 2 1 20 4 10-7zM5358 2700l-24-25-2 2 6 21 2 3 18 0zM4152 2073l-1 3 26 29 4-2 12-32-1-3-30-10zM5342 3266l0-21-18-13-19 22 30 14zM6304 1455l27-10 7-9 0-6-37-28-14 4-6 25zM5691 3963l11 10 28-10 1-3-23-17-8 3-8 10zM5884 2742l12 2 12-31-1-2-21-5-7 6zM4661 2837l-1 1 7 8 16-2 8-22-16-5-1 1zM5560 4102l8-17-43-15-1 20 19 12zM4430 3740l-15 2-10 11 15 24 11 2zM4191 2725l-7-5-12 2-2 26 23-7zM4925 1298l-1 15 14 25 0 1 5-3 23-42-34-7zM4697 538l9-48 20-42-12-8-26 50-10 50zM5384 2145l24 8 13-22-25-8-4 2zM4582 2828l-4 4-9 21 39 13 3-1 0-4-13-24zM4350 1170l16-47-4 1-4 1-49 49zM5115 3696l17-15-7-18-23-8-9 19 10 15zM5888 3342l-2 7 23 23 12-9 0-6-15-19zM4485 3212l-13 24-1 5 37 3 8-19-13-17zM4513 1890l10-36-38-3-16 24 16 12zM5911 1107l65-31 11-25-17-12-21 1-17 11-22 55zM5316 3463l-8-22-33 8-1 27 23 7 13-6zM4962 4019l14-32-1-1-29 0 1 23zM4790 1877l6 9 19-3 7-38-12 1-12 10zM5216 2606l-15 14 3 14 21 2 10-7-1-10-12-13zM4195 1637l-17 18 1 7 14 0 13-10 6-8zM5506 3563l-6 0-1 2 3 35 24 6 0-1 8-24zM6164 3469l21-21 1-3-40-21 1 38 7 10zM6039 3597l5 8 16-3-1-17zM5419 3893l17-5 5-21-19-5-5 29zM5899 3921l-18 17 19 16 6-5zM5970 1000l-11-19-16-9-2-1-20 37 28 32 21-1zM4603 3995l8-7-11-7-1 0-10 7 2 6zM5001 4085l-11-15-6 0-8 18 1 1zM4613 4068l-25 38 45 11 21-21zM4181 2985l-1 35 9 3 9-18-15-20zM5006 4126l-1-8-14-7-8 0-19 15 26 17zM4578 2832l-38-16-5 6 2 19 8 13 3 2 13 2 6-3 2-2zM5344 899l10 9 11 3 16-16 2-11-11-5-29 5zM5014 3826l16-6 3-12-15-13-4 0-8 7 0 1zM5711 2491l2-4-14-6-19 8 2 12 9 5 15-8zM5981 3856l-7-25-5-2-23 19 9 21 6 5zM4296 2554l5 0 20-22 0-6-12-27-1-1-34 5 0 13zM5879 3318l-24 9 6 30 4 4 21-12 2-7zM4172 2520l20 14 39-17 5-19-11-5zM6343 1955l23-4-5-18-9-3-10 20zM4582 1710l41-21-29-41-34 7-3 6 1 26zM4297 1542l61 18 18-9-4-40-5-7-41-14-1 10-33 33-1 3zM4738 2574l2 3 16 5 8-8-9-24-20 1zM6250 1187l-26 32 52 12zM4716 1419l17 13 18-7-9-28-13 2zM5856 1920l-19-4-4 9 7 11 13 1zM5420 3604l39-20 1-6-11-12-40 19-1 7zM4751 2448l1-2-10-22-33-8-10 14 2 5 37 19zM4078 2672l-15 4-15 20 0 4 12 21 5-1 11-8 9-14zM4511 3722l-14-27-6-2-5 6-1 18 16 18 1 0zM5056 2969l8 13 16 4 1-2-7-24-18 8zM5395 922l1-6-15-21-16 16 3 17 8 4zM5299 2156l-5 9 26 23 15-17 0-20-11-10-1 0zM5545 3578l-11 3-8 24 29-6 2-5zM5727 3882l7-1 8-9-16-25-11 2-6 12 1 4zM4698 3641l-1 0-25 20 0 1 21 14 3-1 6-9-1-20zM6082 2634l27-8-15-23-25 21zM4518 2054l28-19-36-16-1 1zM4434 1597l12-26-19-23-47 5 18 45 8 5zM6123 3632l21 0 12-6-5-28-21 2-8 28zM6216 2382l22-13-15-31-12 1-16 15 2 13 14 15zM4762 1878l13-5-3-26-5-8-11 4-9 25zM4643 1693l36-7 13-45-36-11-4 1-9 61zM4924 2320l-17-1-1 4 9 11 13-1zM4188 2950l-6-18-20-3-3 3 0 17 16 12zM4817 1386l-5 0-17 21 2 6 20 0 8-7zM4924 1994l33-5 4-26-50-16zM5754 3115l7 1 12-7 1-1-9-13-16 9zM5206 2382l-17 39 17 15 9 0 20-10-7-33-17-11zM6324 1336l-52-45-39 59 0 5 89-14zM5746 3752l-29 7 3 12 37 0-2-12zM6075 2566l-21 18 1 4 39 15 1-1 2-22zM5648 3467l-3-25-15-4-4 8 15 25zM5564 3343l-7 6 2 30 34 3-8-41zM5232 3759l5-13-26-22-20 19-2 10zM5774 882l-18 10 3 18 3 1 30-12zM5003 2643l24-1 12-18-4-13-31 27zM5172 2964l-11 10 9 17 9-1 11-15 1-5zM5508 2285l-19 1-9 10 0 6 13 14 17-1 5-19zM5490 3932l-5-23-10-8-37 25 11 23 28 4zM5562 1820l19 7 20-7-5-34-21-13-9 1-16 18-2 5zM6445 2202l6-7-16-20-21 4-1 1 14 26zM4435 3871l-18-8 2 38 4 7 18-10 3-6zM4475 2267l-2 4 10 28 18 6 23-28-4-17-4-3-40 9zM4482 3121l-11 25 8 6 15-4 4-9-1-10zM4366 3894l23-20 3-15-43 3-4 27zM4406 4071l-20 14-4 16 25 5 2-1 14-25zM5699 3430l0-16-15-16-2 0-9 22 16 11zM5041 1593l37 19 9 0 11-18 1-27-42-9-15 18zM5737 3245l12 9 26-10 2-21-20-16-3 1zM5485 2698l10 13 16 6 19-11 0-1 0-3-30-19-14 13zM4198 3318l-10-17-21-5-11 4-9 15 36 18 9 2zM5482 3306l4 7 29-14 1-15-14-4-19 7zM4040 3116l4 5 29 7 7-37-9-9-29 28-2 5zM5551 1107l-5 30 15 11 20-29zM5402 1188l15-6 27-27-6-12-49-9-2 2zM5500 4175l22 1-4-40-7 2-12 17zM6605 2129l-8 9 1 21 8 3 24-15 6-6-17-15zM5971 2682l0-11-7-11-16-4-12 16 28 18zM6276 1728l-47-23-8 5 5 46 47-14 4-11zM5009 3110l-10-29-15 1-12 8 0 1 12 21 21 0zM5396 1986l18-31 0-3-9-7-22 8-15 22 1 1zM4802 3292l-27-20-19 14 0 26 30 0zM5705 3488l-12-6-14 2 7 29 15 3 4-2zM4524 2517l-14-1-6 2-14 35 16 16 20-23 2-9zM5953 1880l0-11-20-28-27 20 0 8 16 25zM5226 3819l-23 21 5 5 28 12 12-13zM5830 2603l12 37 37-3 1-1-1-14-2-3-22-19-17-2zM5360 3022l23 19 5-1 2-21-18-8zM5404 1323l-16-15-15 0-8 21 39-5zM4564 2683l-2 18 8 9 31 0 9-17-23-16zM4801 3889l1 17 6 11 17-2 12-7 7-8 2-12-20-20-21 13zM4537 3184l-6-13-1 0-16 2-14 11 3 24zM4603 2933l-17 17 0 5 20 21 21-23-18-20zM5143 1719l0-29-12-3-30 12-7 28 8 12zM6395 2419l13 1 5-5-4-31-9 1-20 12zM4181 2103l21 4 18-20 1-5-28-11zM5124 3744l-16 31 22 9 15-11-1-13zM4824 1553l8-32-7-4-32 21 6 13 6 5zM5944 3599l-34-5 1 19 12 3zM5424 3743l10 12 25-6 2-17-5-3zM4435 3027l-17-3-15 10 8 17 23 14 11-12zM4560 3438l-9-11-5-2-9 5 21 12zM4548 3464l10-22-18 22zM5402 2548l20 18 20-25-16-17zM5384 1417l12 12 2-1 22-42-2-4-36 11-1 13zM5346 965l-15 27 29 0 11-12-4-11-16-8zM5391 2653l10-6 1-9-13-10-18 21 0 1 2 2zM5379 1675l-27 14-12 13-4 11 11 15 58 5 7-34-6-22zM6077 3665l15 5 7-7 2-17-5-3-24 12zM6604 2366l13 13 1 0 9-6 1-1 0-49-32-7-9 10zM5199 1483l-33-20-12 31 7 7zM5035 1256l-12-30-37-2 0 5 8 27 31 13zM4826 2591l3 8 17 17 20-10 5-41-7-1zM5448 2645l-1 4 19 12 10-18-13-12zM5446 3125l-13-5-15 19 27 7 3-15zM5176 2735l-5-8-19-4-7 20 6 9 13 0zM4825 3604l28 4-19-34-5-1-8 10zM4311 2709l1 6 15 8 3-1 4-5 4-31-11-3-5 1zM4363 2475l-30 4-8 10 29 19 17-25zM5442 2541l-20 25 20 11 15-7 8-14-1-2-13-15zM5565 3616l3 9 8 6 17-12-13-14zM4372 4110l2-5-9-13-27-3 4 11 22 18zM6484 2128l13-13-12-14-9-1-4 19zM6008 919l19 10 37-41-34-40-22-1zM4509 2201l-32-19-13 34 8 5 37-19zM4948 1920l17-21 0-3-13-16-36 19 8 22zM5491 2227l-27 16 0 3 17 15 27-7 4-7zM4418 1424l2 23 31 28 23-29-9-19-21-12-23 3zM4041 2426l-1-1-11 2-8 21 7 12 26-5 0-3zM4968 3777l-6-14-4 0-30 18 29 16zM4690 3892l-3 0-7 6 11 40 21 1 3-36zM5086 2463l-25 9 10 15 13 1 6-8zM6140 2148l5 7 40 14 18-4-1-26-20-26-36 17zM5266 3814l6 25 25-5 13-15-9-26-18-10zM4433 3780l7-1 9-23-15-15-4-1 1 39zM6429 1214l-1 1-18 70 14 31 22 15 18 3 3-51-17-66-3-8zM5517 3098l-5 14 3 12 1 2 35-15 2-8zM4420 3109l-4-24-19 3-1 5 7 18 13 0zM5708 2021l-36 6 7 26 37-18zM6053 4024l19 37 19-3-2-22-13-17zM5174 2548l20-12-27-14-16 5 1 6 21 15zM5672 3882l-30-16-14 2-3 6 20 41 23-15zM4117 2694l32-18 0-1-11-14-28 20 1 4zM5194 2536l-7-31-3-2-11 3-6 16zM4801 3339l13 29 19-5-2-40-2-1zM5536 1317l-18 16 0 3 31 18 23-7-20-26-10-4zM5283 3662l-2-4-10-1-15 9 10 39 8-3 6-11zM5252 3592l6-23-22 4-7 11 5 11zM5598 3649l3 4 27-5-16-26zM4206 1652l9 27 14-3-16-33-1 1zM6080 2439l9 0 7-25-4-5-1 0-15 10-2 9zM4900 3419l-7 9 41 16-3-38zM6032 3891l-7 21 30 24 14-7 3-2 5-8-34-34zM4481 2914l7-25-26 3-5 9 7 15 10 3zM5468 3896l-21-34-6 5-5 21zM5143 3399l2 11 19 10 6-14zM4560 1655l34-7 13-31-48-28-16 39zM5233 844l38 8 18-23 2-12-30-9-36 16zM5556 2382l17-2 13-15 2-7-11-27-23 2-1 1-12 20 6 22zM5221 1006l5-11 0-5-17-17-12 4-9 17 13 17zM5780 2253l-24-5-10 14 4 38 30-10zM5341 2959l30-3-5-14-19-1zM5418 1382l-1-4-26-16-12 9-3 8 6 14zM4813 3176l-1 17 14 11 25-18-18-17zM5513 2731l-19 16 3 10 3 2 20-4 3-17zM5979 3678l10 3 3-1 6-25-21 1zM4463 3006l-14-1-1 2 16 39 3 0 11-9 4-18zM4278 1795l14-20-18-36-9-1-12 9 14 28-8 19zM4524 3105l-1-12-4-7-41 26 4 9 15 8 18-9zM5774 3860l8-9-15-26-4 2-15 14 9 21zM4177 3067l-17-1-15 11 5 11 25-1zM5481 2937l-6-10-24 3-2 2-1 7 2 6 24 8zM5881 3965l15-3 4-8-19-16-13 3 0 3zM4702 3197l15 24 11 1 20-14 5-22-41 5zM5272 1137l-12 4-9 18 7 20 3 3 31-25 1-5zM4642 2665l-20 0-8 26 24 10 13-11zM5342 3245l14-17-2-13-14-17-6-2-16 22 6 14zM5536 3265l-20 19-1 15 13 19 22-5 7-8-3-18-16-22zM5594 2690l-29 1-4 9 5 22 9 5 17-13 5-21zM3945 2472l-7-20-4-2-13 2-13 31 2 4zM5417 2609l-6-27-22 5-2 11 8 12zM4962 3461l-9-17-18 1-1 2 7 38 4 1 11-1zM4219 3274l3 4 1 0 4-1 15-11-2-30-5-4-22 4zM4299 2057l-10 2-1 19 5 14 15 3 25-26zM4541 1354l-15-3-36 21 11 23 1 0 33 1 9-12zM4827 3024l11-17-5-20-12-6-21 18zM5265 3263l-6 32 3 4 3 1 11 0 18-13-2-27-16-5zM5740 2613l-2 8 11 7 24-11 1-4zM5842 4053l-24 25 6 15 33-28-1-7zM5837 3254l-6 29 12 3 16-16-5-13-15-4zM4985 2443l8 10 21-21-2-11-22-3zM5593 3954l-8 5 15 54 2 3 22-21 1-8-18-33zM5513 2426l5-9-4-27-20-9-11 30zM4653 2757l3-7 0-2-20-21-11 4 0 19 20 10zM5628 3648l-27 5 2 12 37 12 1 0-4-24zM5891 3385l-17-5-4 30 12 5 4-1zM5547 1944l9 7 22-7 2-2-19-20-2 0zM5485 2975l-11-22-24-8-2 20 27 17 10-4zM4397 3854l-5 5-3 15 7 17 23 10-2-38-3-4zM5042 2882l10-34-4-4-11-4-35 13 5 21 8 10 10 6zM4906 822l-31 3 15 25 19-24zM5688 3603l-3 9 17 17 14-16-6-10-17-2zM5134 2994l-3 18 13 12 16-4 0-18-18-11-4 0zM4472 3918l-31-20-18 10-1 5 9 14 38-1 4-6zM6396 1983l-25 29 0 1 14 13 37-3-3-39-19-3zM5558 1976l0 3 4 24 54-15-5-13-44-4zM4865 2306l9-5 8-19-11-8-18 7-3 12zM5946 2590l18 2 15-16-2-4-40-4zM5093 3674l-24 8-3 22 11 11 2 0 24-26zM6086 3693l5 19 25-3 5-10-2-10-26-5zM5621 2095l16-35-1-1-49 10zM5356 3583l-17-17-12 7 1 22 17 7zM5271 2522l24 42 13-8 0-22-10-15-25-9-1 3zM4984 2989l20-1 2-3 0-27-33-5-5 8 0 14zM5234 2554l2-9-38-9-2 0 4 15 7 9zM5621 2615l-26 9 1 4 24 10 12-13zM4013 2724l12 7 28-1 7-9-12-21-45 2 5 15-1 2zM5780 4094l-29 10-1 18 48-5zM5773 1615l17-1 2-1 1-2-13-18-17 4zM4864 3113l7 26 12-3 7-24-4-4zM5262 1101l4 9 15 7 19-17-4-14-10-4zM4801 2318l-3-9-32-21-12 6-5 16 24 17zM5001 1560l-25-3-17 35 1 1 36 18 3-2zM5385 4012l35 23 1-1-5-23-27-9-4 3zM6070 3260l-17-9-5 17 7 10 11 4zM6237 3608l20 26 29-27-1-4-31-11zM5677 2525l-14-2-6 14 12 13 15-20zM5634 3412l8 0 23-25-6-11-32 7 5 28zM4366 2530l0 2 11 27 28 8 3-9-22-36zM4379 1887l11-5 4-42-12-6-23 2-6 9 0 20zM5039 1818l7 16 19-11-5-20zM4045 2970l-6 11 7 16 18-5 8-12-1-1-1-1zM5861 3448l-4-3-7 2-12 20 21-1 6-12zM4043 2912l-13 7 6 18 12 4 11-3-2-20zM6513 2209l9 35 27-10 0-1-6-12-16-15zM5188 3125l-5 34 24 0 13-9 3-10-7-9zM4883 3769l11-28 0-2-34-3-9 19 5 13zM6130 1882l28-30-20-35-30 6zM6435 2175l9-15-21-11-12 4 3 26zM5794 3680l0 7 13 3 17-13-10-15-7 1zM5112 2428l13 5 30-29-1-3-29-8-10 6-5 8zM5570 2110l-8 6 8 45 32 11 21-41-3-10zM6400 1981l19 3 6-5 0-2-19-20zM6325 1908l-7-2-13 5-1 24 4 6 1-1 19-18zM4909 826l-19 24 0 3 9 7 20-21 0-6zM5518 3208l-16-13-14 14-3 14 31-5 3-7zM5085 961l-8 1-16 11 13 29 6 2 19-19 1-2-2-10zM5164 3585l1-3-2-9-13-14-22 7-2 9 30 11zM5742 1027l15 18 8-26-11-20-1-1-7 4zM4969 2943l3 2 18-20-7-12-2-1-18 7 1 15zM5708 3943l23 17 4-2 1-19-8-14-11 5zM5470 3441l-12 18 1 8 25-1 11-28-3-1zM4330 2722l-3 1-5 24 13 6 21-8 2-7zM4727 2717l-13 0-11 18 10 15 18-24zM4535 1396l-33-1 9 40 11 3 22-19 1-5zM5019 1525l36 25 13-31-16-21zM5371 3692l21-5 0-5-22-18-9 4zM5030 2358l-25 13 0 13 31-1 2-18zM4822 2761l15-14-10-17-22 0-6 20 2 4zM5404 1860l2 11 30 5 4-15-19-11zM4787 2252l-1-1-22-13-32 29 22 27 12-6 19-24zM5171 3843l14-5 5-33-25-7-10 15 14 30zM4064 3193l2-8-3-13-25-14-13 3-10 7-6 9 8 6 19 32zM5795 1518l-12-25-26 28 21 15 3-1zM4340 1898l26 7 8-5 5-13-26-22-8 6zM5110 2495l5 8 17-1 6-17-21-8-6 7zM4901 1436l3 6 11 7 4-8-3-28-8 0-8 11zM5335 3125l15-3 15-21-33-19-2 2zM5350 956l9-22-17-9-11 1 0 14zM5951 3514l-37 10 0 1-3 12 30 16 16-17zM5588 3825l-4-30-1-2-22 14 5 22 2 1zM4975 2188l-2 2-6 10-1 8 15 17 20-30zM5224 2313l22-36-26-9-11 23zM5413 1559l20 27 29-27-14-29-29 15zM4420 3777l-15-24-20 4 7 24 20 3zM5631 4130l12 9 7-6 19-2-3-15-28-16-6 5zM4623 1689l-41 21-3 12 5 22 24 12 40-36-5-27 0-1zM5035 577l6 11 13 5 27-17 4-5-18-4-28-3zM5323 2356l8-8-9-17-21-5-2 4 7 23zM4660 1221l31-8-2-36-49 17-1 8z"/>
<path fill="#b4c3df" d="M4281 2304l4 39 33 6 16-16-28-40-6-2zM5211 2328l13-15-15-22-16-2-17 25 21 18zM4928 1274l-39 2-4 7 7 12 33 3 7-11zM5516 3895l-31 14 5 23 41 15 6-36zM6081 2387l-6-13-14-4-15 15 5 20 4 1 25-13zM4329 3170l-17-2-1 1-8 6 7 18 29-6-1-5zM5233 4240l12 31 25-25-18-23-8 1zM4668 1384l15-8-1-21-28 6zM4953 2281l19-29-1-4-35-2-2 1-1 23 16 11zM4443 2358l-8 2-27 33 6 24 34-12 10-43zM6390 1946l3-26-14-6-18 19 5 18 8 4 7-2zM5801 3087l-1 0-4 26 3 6 22 3 1-1-3-16zM5644 2854l7 1 14-5 4-11-4-8-27 9zM5774 2088l21-23-1-11-47-11-5 4 11 44 9 1zM4902 1861l6 30 8 8 36-19 0-6-47-20zM4943 1401l8 20 5 7 27 11 27-12 2-15-48-28zM5270 4018l21-23-2-4-22-6-8 23zM5072 2848l4-1 8-31-9-10-15 5-12 33 4 4zM5499 1878l-19-15-10 5-5 25 10 11 8-1zM4422 1350l-12 49 11 19 23-3 25-52zM5500 4020l-2 16 24 17 21-12 9-19-9-17-12-2zM4605 2751l6-22-6-5-17 12-1 10 3 8zM4394 1296l10-6 2-39 0-1-33 15-2 26zM4987 3517l6 4 1 0 10-9-3-19-5-4-13 2zM5865 2489l-10 9 5 30 8 6 12-6-2-40zM6446 1331l-22-15-41 15-10 45 32 1zM5141 2844l37 21 11-14-8-22-16-4-25 13-1 4zM5490 2530l10 9 6 0 18-6 0-28-6-4-29 11zM4906 635l-5-8-32-4-8 5 9 40 36-14zM6291 1476l12-13 1-8-23-24-24 20 10 25zM5580 2978l3 5 21-7-5-11zM5153 3382l14 5 14-14-5-7-22 2zM4844 2411l-5 15 9 15 19-3 4-10-15-23-2-1zM5257 2605l-23 14 1 10 7 5 28 5 1-2zM4468 2803l-2-11-9-7-11 14 9 8 10 1zM4147 3111l-15 27 2 6 18 14 16 3 10-16-5-24-2-2zM4309 2652l1-1-2-39-31 16 0 1 13 22 6 3zM5057 1558l-2-8-36-25-1 0-14 33 38 18zM4998 2600l10-6 1-28-1 0-27-4-8 14zM6210 2420l13 0 5-19-12-19-5 0-3 6zM5028 3431l-11 19 3 19 3 3 20-5 6-4zM6617 2379l-13-13-32 2-6 16 36 9zM5398 1428l46 12 1-2-3-40-22-12zM3999 2604l-14 18 26 9 7-5 2-12zM6284 3495l8 0 24-11-12-38-17 9-6 33zM5488 1791l9-13 1-20-64 0 10 31 16 7zM5019 707l1 22 7 4 33-19-4-4-6-3-23-4zM5426 3513l2 15 24 12 10-11-29-22zM5132 2608l-17 15 23 20 1 0 12-26zM5685 4006l13-2 8-19-4-12-11-10-14 8zM4387 4029l-13 17 3 12 3 3 24 6-1-36zM5271 2918l11 5 23-31-3-8-20-12-17 16zM6012 3718l-20-12-30 10-4 6 2 5 24 8zM4621 1222l3-7-2-4-42-4-2 10 31 9zM5278 2662l-8-8-18 11 6 27 18-1zM4780 2572l-16 2-8 8 0 16 11 6 16-3 5-18zM4988 593l10 0 8-19-1-14-22-2-26-5 6 16 16 20zM5107 3061l-16-29-1 0-15 13 15 16zM5562 4165l12 4 14-11-1-2-19-6zM4947 2987l-27-14-3 2-1 34 14 6 17-27zM4359 4045l-4-2-14 10 9 18 6-2 2-2zM4687 3892l3 0 34-36-4-6-19-9-28 13zM4525 1224l16 3 11-47-3 0-15 6-15 29zM5027 2778l35 3 8-38-14-6-27 24-3 13zM5117 2982l1 6 2 3 14 3 4-3-4-17-12-3-3 1zM5790 3916l0 16 22-10 3-7-10-7zM5646 1489l-61 2 18 39 32 2 9-11zM5676 3222l-5-8-18-1-2 1-5 25 11 12 20 0 1-1zM5543 1897l-5-8-11-4-8 2-1 13 8 8 14 0zM4191 3092l1 19 19 3 0-1-10-26zM5727 4009l-4 20 17 7 2-13zM5366 2942l5 14 5 5 21 2 2-2-14-45-12 0zM5524 3874l19-7 3-13-7-18-1-1-28 9-6 7 2 6zM4654 4052l-3-2-38 15 0 3 41 28 13-13 1-1zM4543 2957l-4 8 2 5 15 15 6-1 12-24-22-5zM6121 1266l-27 1-2 3-1 60 8 16 47-20 5-28-10-17zM5401 3640l-11-11-23 3 8 22 24-3zM6011 1742l-44-21-10 31 35 16zM4644 1845l-16-19-11 2 4 34 18 2zM4761 3808l14-27-1-5-25-3-19 28 2 4 0 1zM5867 4026l13 2 7-4 4-7-10-18-15 1-5 18zM6027 1366l6-13-3-31 0-1-12-9-25 6-19 31zM4448 2705l-2-2-21 14 5 19 4 0zM5536 3056l31-18-14-20-10 2-19 25 8 10zM5253 2327l-2-5-27-9-13 15 20 29 6-1zM4613 3238l-13-17-21 11-3 9 3 12 15 20 15-9zM4599 3568l-8-27-6 0-27 25-1 8 2 10 1 1zM4331 4001l-3 25 22 2 17-21-2-3zM5516 3218l7 11 16-6-2-10-18-2zM4930 3015l1 2 28 18 15-8-4-16-6-1zM4930 1563l36-20-3-20-32-9-8 20zM6061 1928l11 3 50-27 0-3-51-43-26 19 1 34zM6115 3574l1 1 26-8 2-4-14-23-8 2zM5173 1266l3 11 26 3 6-9 0-18-20-7zM4760 3045l-16-9-6 3 6 12 14 2zM5151 4154l-28 9 10 4 11 13 9-13zM6466 2258l28 6 11-11-19-20-4-1zM4859 3557l-3 14 12 13 18-15-15-18zM5338 1035l5-9-17-31-5-1-22 21 0 19 17 9zM5212 2515l20 0 2-9-10-7-1 0-12 11zM4910 1143l28 17-15-38-6 0zM4324 2452l14-15-7-19-34 9 0 9zM5476 2430l19 18 5 0 13-22-30-15-3 1zM4611 3464l-2 10 10 39 38-7 3-3 4-19-22-23zM4625 2835l-1-14-7-6-35 13 16 9 27-1zM4511 3153l16 12-1-22-6-4-6 5zM6346 3621l-19-16-26 17 7 28 12-10 21 1zM6038 1540l-48 71 67 24-14-93zM6177 1088l5 0 28-19 4-47-37 4-2 2zM4237 2889l0-8-12-10-18 7-2 4 13 23zM4055 3025l22-9-13-24-18 5-3 5zM4223 3313l-25 5-6 17 34 6zM4786 1174l-2 0-25 12-8 22 35 2 6-9zM4626 1256l2 2 26 7 12-18-6-13-34 21zM4548 2660l16 23 23-6 11-31-3-4-43 7zM5026 3328l-9 15 1 5 18 7 34-16 5-7-1-8-7-6-21-4zM6189 1500l-33-25-33 13-7 39 38 16 35-42zM5941 922l28 0 1-40-49 10zM4794 1379l-17 11 18 17 17-21zM6156 1639l22-20 8-41-77 30 30 32zM4261 3049l13-9 3-13-19-15-2 1-4 30zM4628 2584l-25 22 31 11 19-20-4-9zM5585 3341l8 41 22-6 4-12-15-31-1-1-11 1zM6542 2068l-21 2-4 12 1 26 12 8 11 0 15-39zM4430 3740l4 1 29-11 0-5-11-18-18 8zM4711 2783l12 0 6-14-15-7-4 21zM5940 3125l15 13 13-3-1-2-7-20zM5984 2638l-1-11-23-8-1 0-6 8-6 26 1 3 16 4zM5493 745l1-9-14-19-19 36 13 6 4 1zM5661 2683l20 12 20-13-1-15-20-15-7 2zM4504 2962l-7 9 11 13 13-20-6-4-3-1zM4531 3876l-4 1-7 32 35-2 0-11zM4488 3174l12 10 14-11-12-12zM5092 3161l-3-17-6-8-27 10 0 1 5 16 27 5zM4653 3022l1-3-7-20-41-15-8 10 11 36zM4862 2366l2-5-9-17-4-1-15 14 8 10 13 2zM4880 3179l-17 12 5 34 3 2 26-20-13-25zM5460 4117l5-2 0-18-1-1-21 4 0 1 1 6zM5382 3881l-4 3-1 2 0 22 9 21 23 1 11-9-1-28-2-2zM5909 1315l4-73-16-17-33 83 9 10zM6086 1546l-43-4 14 93 5 6 15-5 31-28zM5226 3007l22-2 5-19-17-9-13 7 0 2zM4762 3734l25-1 2-8-1-11-25-23-13-1-2 1-3 7 2 14 7 15zM5251 977l3-6-7-21-2-3-28 12-8 14 17 17zM4697 2211l16-4 9-19-4-5-49 0 19 25zM6256 1889l-20 2-6 6 8 29 25 3 2-1 5-11-12-26zM5728 2444l-7 7 5 13 43 15 2-7-22-29zM5312 2507l-14 12 10 15 17-14 0-1zM4917 2975l-14-1-15 11-6 20 15 10 19-6zM4397 1686l-2-26-46-26-2 2-11 24 2 25 19 24zM4593 1270l33-14 0-1-5-33-12 4-20 24zM4828 925l3 20 25-1 7-19-4-7zM4017 2195l7-7-3-31-20-9-10 4 9 18-5 29zM4775 2047l-2-7-32 5 10 30 4 0 17-12zM6153 3679l13 21 2 0 18-12-6-21-12-5-4 1zM4746 3608l-12-35-19 8 8 20 20 8zM6159 1677l12-10-15-28-17 1-12 29 11 9zM3994 2204l-2 13-12 24 20 7 10-7zM6409 1835l29-14-3-15-42 15 0 3zM4832 1951l-13 4 0 15 29 15 1-15zM4816 3994l-3 23 13 11 10-10 6-23 0-2-22-3zM5653 3213l18 1 11-17-12-15-10 2-8 16zM4898 2461l18 18 32-10-2-22-43 3zM5399 1816l-3-5-43-20-5 53 16 3 15-5zM5959 3238l-28 24-1 9 16 17 28-13-13-36zM5451 4025l1-21-27-7-9 14 5 23zM5906 3217l7 6 22-4 3-27-11-9-6-1zM4752 1386l-10 11 9 28 12 3 1-2 9-36-6-4zM4377 2263l6 26 3 3 9 2 28-11 1-11-3-6-39-8zM6371 3491l-4-8-13-10-8 9 7 19zM4371 2483l-17 25 0 3 12 19 20-8 7-13-7-23zM5317 3706l12 6 2-1 2-21-15 0-2 15zM5098 831l-4 17 29 16 9-15-23-20zM4939 3129l-5-5-15-1-3 7 16 31 1 0 6-31zM4353 2169l-6-4-19 20 23 21 3-4zM5036 3891l-1 1 6 11 38 25 5-7-13-44-1-1zM4156 2897l5 8 28 1 3-17-16-8zM6439 2018l-12 7 10 24 33 13 9-6-6-31-10-8zM4549 3330l-17-21-44 16-1 9 17 14 47-2zM6363 3528l-11 17 5 20 5 2 30 2 0-36-4-9zM5202 3525l-15 0-10 13 4 8 9 3 23-12zM5030 857l-12 30 1 4 7 7 27-13-7-27-10-3zM6185 3495l-31 2-1 24 8 6 27-12 3-11zM5989 3799l15 5 4-23 0-1-3-1-21 12zM5744 3603l-24 12 13 21 13-4 4-5zM5208 1271l25 3 13-17-28-15-10 11zM5210 2671l-34-20-3 0-9 9 3 13 9 5 17 2 14-7zM5122 1086l9-2 10-21-7-13-38 5-8 7zM4889 3938l16 13 2 0 24-22-7-7-32 0-6 3 1 9zM4368 1440l12 30 25-5 15-18-2-23zM4862 1162l25 10 5-26-8-15-12-9-18 18zM5545 1966l-14-1-7 4 2 13 32-3 0-3-2-4zM5624 3269l-3-4-19-4-6 28 12 2zM4753 1144l1-1 7-38-3-3-37 22 2 14zM5225 2636l-1 34 13-4 5-32-7-5zM4148 3227l-34 24 3 15 27 4 11-19-4-21zM5832 2212l5 20 12 2 11-16-16-10zM5415 3012l-13 0-2 2 7 28 11 0 2-2 2-21-5-6zM6137 3742l-28-3-7 4 11 22 26-18zM6081 2470l-10-12-16 7 0 2 4 14 14-1zM5524 2965l-17-23-2 1-20 32 0 3 1 1 31-1 7-9zM5198 3567l-8-18-9-3-18 27 2 9 31-5 2-3zM5714 3594l-4 9 6 10 4 2 24-12 2-6-3-10zM4496 1208l-10 14 9 30 5-1 25-27-6-9-11-6zM5303 1475l9 0 8-12 0-1-24-11-12 9 13 14zM4651 1360l5-28-30-12-8 9 6 20 25 11zM5484 3176l20 13 2-2 6-17-22-14-5 3-2 11zM5830 1886l-23-10-22 20 0 27 21 11 27-9 4-9zM5087 1687l5-21-11-12-16 4-15 22-2 14 1 1zM5234 3596l-3 16 11 11 18-11 2-5-10-15-18 3zM5067 1450l-19 15 5 13 43 12 20-19 0-4zM4673 2642l-12-7-12 6 1 16 16 5 8-18-1-1zM5715 2994l-22 29 31 3-8-32zM4453 2947l-16 7-6 19 13 9 21-12-2-15zM4172 2722l-14-1-1 26 11 4 2-3zM4956 3485l-11 1-1 42 1 0 10 0 9-9 2-29zM5323 3932l14-8 1-2-3-28-13-11-19 12-5 23zM4189 2772l11 13 19-2 15-30-3-4-32 0zM4300 2466l24-14-27-16-10 21zM4298 1252l20-21-24-32-11 18-7 42zM6215 1229l5-9-17-32-21 0-6 37 8 5zM5078 1086l4 15 14 7 26-22-34-24zM5419 3846l2-2 3-10-21-23-16 18zM5839 1570l-17-12-2 0-8 18 16 15zM5552 4022l50-4 0-2-2-3-44-36-13 28zM5780 2939l-23 8 1 29 17 7 10-11zM5271 1061l15 21 10 4 19-15 1-28-17-9-5 2-23 22zM4700 2236l15 8 9-17-11-20-16 4-1 13zM6274 2446l0 23 7 5 25 1 7-13-9-25zM6405 2281l-2-2-24 9-5 10 5 13 28-4zM6644 2176l7 24 2 2 25-13-11-22-12-10zM6399 1544l-8 13-9 22 2 20 5 6 74 9 14-28-27-19-32-32zM4112 2444l-11 13 0 6 26 12 13-18-9-20zM5839 3009l-20-15-17 10 0 19 16 8 19-16zM4457 2901l-12-2-5 3-5 10 1 13 5 3 9 2 14-14zM4609 1226l-31-9-6 9 17 24zM5347 3402l-23 9-6 15 29 5 12-20-3-6zM4465 4062l-18-6-20 24 27 30 20-21 2-16zM5774 882l1-21-37 15 7 10 11 6zM6355 1416l-17 14 0 6 28 21 14-24zM6026 2720l-8-7-20 26 0 5 30-11zM6329 1734l2-2 9-23-6-13-26-10-25 17-7 25 1 3zM4919 3123l15 1 16-18 1-4-9-9-25 3-4 18zM5588 4158l2 1 16-8 0-9-13-5-5 5-1 14zM5802 3388l10 1 14-7-4-22-8-11zM4572 4060l-5 9 2 31 19 6 25-38 0-3-6-12zM4616 2772l6 1 23-12 0-1-20-10-10 9zM4737 2320l-19-1-16 22 11 13 23 3 5-16zM4320 3111l-1 0-28 2-1 1 0 15 7 7 17 1 9-4zM4721 1508l5-13-17-20-22 13 7 38zM4237 2221l8-41-9-17-14-6-43 21 50 50zM4903 736l15 30 20 4 8-8-12-32-9-3zM5390 1903l-16-15-17 14 2 21 5 2 24-5zM4555 3896l0 11 3 7 7 0 26-15-17-20zM4708 1279l-14 4-3 5 0 35 37-30zM4735 1250l12 12 29-22-29-28-4 1zM4193 2071l28 11 5-5 1-3-1-13-14-14-9 1-11 20zM5205 3647l4 1 8-15-3-18-12-6-13 6zM4791 2633l-10-3-5 0-3 24 18 2 9-9zM5475 1675l-3-1-18 25 5 23 24 2 10-27zM5135 944l-6-32-14-3-24 19 3 13zM5247 3397l-1-10-6-2-17 4-3 16 19 4zM4623 4037l5-14-2-8-4-1-13 4-2 32zM5483 2822l-26 4-10 17 12 15 10 3 18-27 0-7zM5670 3422l-26-8 9 24 11 1zM4153 2458l-13-1-13 18 8 18 25 8 5-18zM4832 1730l-1 36 37 0 1-4-9-21zM5991 3884l-3 15 21 22 16-9 7-21-28-18-3 1zM4504 3865l4 6 19 6 4-1 9-12-15-21-14 2zM6543 2221l6 12 16-26-13-5zM6087 4006l-2-27-20-4-35 19-3 27 26 3 23-5zM5260 2249l39-14-4-21-34-17-8 3-1 2zM4687 2345l15-4 16-22-7-8-39-1-6 11zM4220 2969l15 19 2-18zM4046 2134l-16-16-22 4-7 26 20 9 27-15zM4815 2585l11 6 38-27-41-30-7 3-3 2zM4376 3164l2-3-9-29-18-2-12 10 1 2 24 22zM5878 834l1-4-7-14-19 4-2 5 12 22zM5372 3011l18 8 10-5 2-2-9-23-20 10zM5068 1519l-13 31 2 8 42 9 20-20-4-10-21-18zM5724 958l-18-33-5-2-19 10 9 28 29 6zM5422 3019l17-2-2-16-12 1-8 11zM4478 1320l-1 14 1 6 36-20 2-5-11-13zM6147 3462l-30-2-8 22 5 8 35-6 5-12zM4216 2937l0-1-3-16-15-1-16 13 6 18 2 0 19-2zM5134 3602l10 27 27-20-7-24-8 1zM5643 3105l-8-11-12-4-17 18 3 15 27 2 3-2zM4284 1632l-4-19-30-21-3 2-19 40 18 14 34-5zM4773 2351l-15 17 27 16 0-28zM6184 2092l-2 21 20 26 51-34 0-1-13-13zM5502 1543l0 6 10 8 5 0 37-21-3-8-35-4zM5526 3606l-24-6-2 3 12 31 17-16zM5313 1196l-5 5-3 35 39 4 2-1 12-48-1-1zM5296 3045l-6-1-25 14-3 4 21 9zM4790 3064l15-28-16-10-6 5-2 3 0 24zM6250 3674l-3 0-4 3 2 18 15 9 1-4zM4570 2931l-1-6-28 15-1 8 3 9 9-2zM5348 2802l14 19 19 4 7-37-11-12-25-1zM5783 2153l18 54 8-4 14-20-1-16-18-13-5-1-15 0zM5441 2140l-1 0-14 29 9 21 28-20zM5466 2661l2 4 42-11 0-4-15-10-19 3zM5651 3818l1 2 15 15 6 1 14-9 1-36-2-1-5 1-28 20zM4683 2514l-7-10-7 0-7 5 5 24 7 4 8-7zM4684 1540l3-2 7-12-7-38-19-6-19 48zM5342 2080l10-9-6-29-31 6-3 8 0 2zM4566 1533l-6-41-40-9-11 6-16 28 3 4zM4777 2907l15 12 10-16-22-14zM5392 1564l21-5 6-14-22-24-18 11zM5610 2528l23-21-32-5zM5487 2834l-18 27 8 8 4 1 25-16-1-4zM5747 1524l10-3 26-28 6-24-20-27-31 13-22 44 9 12zM5183 1417l-10 23 35 8 6-24-10-12zM5789 3501l12 13 15-18-13-16zM5772 3507l-15-14-15-1-2 3-1 5 8 21 11 0 11-7zM5169 1985l14-63-29-5-33 19 15 38zM5702 2544l-6 16 22 18 5-19-6-12-14-3zM5784 3884l23-21 1-8-10-5-16 1-8 9zM4938 770l-1 25 14 14 12-2 14-36-17-9-14 0zM5780 3500l-13-15-10 8 15 14zM4753 3186l4-5-31-24-14 34zM6283 1236l35-31 0-8-65-33-3 23 26 44zM5905 2420l-26 14 17 30 29 4 2-2 15-30 0-1-8-13zM4782 1954l9-7 8-14-1-20-6-7-28 29zM6521 1955l6 16 19 1 3-16-22-12zM6127 1397l-27-15-65 47-3 11 1 2 73 19 27-52zM5492 2569l-4-9-23-4-8 14 14 12zM4066 2444l27 6-9-29-7-1zM4377 2559l-11-27-23 12 6 29zM5296 3227l8-7-16-26-14 8 2 24zM4339 1599l19-39-61-18 8 51zM5105 780l7-5-4-29-29 10 3 15zM5650 2297l20 4 13-33-25 3zM4892 3429l10 36 3 3 29-21 1-2-1-1-41-16zM5361 2336l0-2-9-11-8-3-22 11 9 17 21 1 9-11zM5147 4050l-15 19 29 12 16-2 7-6-11-25zM5347 1510l-11-12-16-2-24 32 18 14 16-3zM4504 1810l32 14 3-2 4-7-10-35-13-3-8 5zM4794 2796l25-7 6-13-3-15-21-7-13 21 3 19zM5218 1051l-1-9-17-20-20 11 14 28 9 2zM4882 758l-20 17 6 18 36 2 2-16zM5703 1046l-15 6-9 21 31 45 16 2 6-3 2-51-27-19zM4110 2788l6 24 23 2-17-30zM4483 2932l-9-13-10-3-14 14 3 17 10 8 19-15zM5975 3609l2 28 27-2 2-4-28-23zM4459 1220l-2-3-13 1-13 20 21 13 9-2zM4253 2296l-5-3-18 0-3 2-14 36 34 17zM4654 1361l28-6 2-3 7-26-1-1-18-2-16 9-5 28zM4048 2941l2 18 15 0 8-16-1-2-13-3zM5723 4029l4-20 0-1-21 2 3 24zM5997 3357l2 1 12-22-12-19-19 17zM5091 2035l-17-41-4-3-5 2-23 48 4 7 21 15zM6104 2524l4 12 22-6 4-7-3-8-20-2zM6179 720l-7 5 0 39 19 17 28-28-2-3-29-30zM5377 3908l-39 14-1 2 31 27 18-22zM4158 1979l8 6 50-20 5-19-1-1-39-10-28 36zM5484 2478l-22 7-7 10 24 11 2 0 8-23zM4933 3161l4 3 14-2 7-13-19-19zM6266 1083l34 9 25-12 6-35-6-5-56 9zM5970 3987l18 28 28 10 10-3 1-1 3-27-5-13-32-22-15 5zM4320 2024l27-6 5-24-17-16-26 22 5 19zM4836 1814l-10-44-33-3-4 33 45 17zM4996 4049l1 9 25 17 4-7 1-23-11-10zM5584 1612l-26-3-27 44 5 6 30 2 24-40-1-4zM6037 3849l-18-17-16 4 6 25zM5411 2582l11-16-20-18-10-3-10 34 7 8zM5530 2737l15 7 9-18-18-8zM5244 3510l18-19 0-4-35 4-2 5zM5421 792l-21 8-10 5 6 39 66-6 0-2zM5367 1645l12 30 27 2 8-14-16-38-20 2zM4651 2915l6 1 2-23-14-9-6 0-2 1 3 20zM6190 1886l3 3 13 1 8-30-35-10zM4992 773l-11-3-4 1-14 36 1 1 27-5 5-22zM5231 3612l-17 3 3 18 24-1 1-9zM5507 2899l-3 1-2 3 7 36 36-5 4-4 1-14zM4246 2692l-6 6 11 10 17-10-7-10zM5161 1501l-7-7-20-1-19 44 4 10 13 3 33-40zM4975 3834l-2 4 22 15 17-17-1-3-27-5zM4626 2906l-2 3 2 13 7 3 18-10-11-10zM4359 1836l-6-14-17-15-41 14 1 21 57 3zM5592 2295l34-4-2-36-40 0-6 10zM4029 2427l-7-3-27 12-2 9 28 3zM5660 3595l-7 3-3 21 4 5 8 3 23-15 3-9-7-5zM5464 3418l-6 1-2 7 14 15 22-4-2-5zM5726 2517l4-19-17-11-2 4 8 28zM5259 3735l3-26-31-12-22 13 2 14 26 22zM5150 1764l5 37 50-9 7-30-3-3-57 1zM4292 1666l44-6 11-24-63-4-4 11 2 7zM4929 680l34 30 13-29-9-8zM5441 4118l16 4 3-5-16-10zM4930 4039l9 7 17-7 11-12-5-8-15-10-10 2zM4008 2571l-18 17 9 16 21 10 7-6-12-38zM6248 2581l-26 17-2 22 30-20 14-9zM5815 3915l3-1 12-28-16-7-15 18 6 11zM4127 2475l-26-12-15 17 19 32 30-19zM5211 2510l12-11-11-9-6 2-3 10zM4516 1315l1-1 20-30-6-13-29 24 3 7zM4713 2207l11 20 34-4 2-11-29-24-9 0zM5451 3852l9-6 0-9-18-18-2-1-16 16-3 10zM4160 2501l-25-8-30 19-5 22 24 8 22-3 13-7 10-13-2-6zM5040 3760l-4 6 2 10 9 8 31 12 8-18-5-16-15-13-4 0zM5525 1112l21-13 2-21-37-17-16 35zM6073 3613l-16 4-10 19 23-14 4-9zM5699 3205l3 14 2 3 18-5 3-8-12-8zM4649 2540l-23-16-11 7 6 25 28 7zM5100 3437l30-13-11-15-20 28zM5726 2647l-5 13 19 17 12-9 2-13-4-7zM4599 3104l3-19-20-11-11 10-3 15 0 1zM4220 2087l-18 20 21 24 15-19 0-6zM4220 1636l8-2 19-40-39 14-5 4zM5558 4189l20-6-4-14-12-4-9 4zM6114 3963l-25 11-4 5 2 27 12 2 29-10 5-31-8-6zM4872 1783l-5 11 28 40 12 5 10-9 11-37zM4419 2916l-12 4 14 12 15-7zM5322 2947l11 16 3 1 5-5 6-18-2-3-15-9zM6187 3483l-23-14-10 3-5 12 5 13 31-2zM6203 1302l30 48 39-59 2-21-50-8-12 12zM4897 2346l4 5 1 0 10-9 3-8-9-11-9 12zM5089 2121l12 19 35 8 6-33-23-18-15 1zM5722 2706l10 9 12-8-8-20-13 7zM5493 1988l-14 16 2 18 20 21 20-38-2-5zM5181 2487l-20-6-6 2 2 12 16 11 11-3 0-10zM5936 2311l4-3-7-22-13-2-20 13 0 4 20 12zM3991 3137l22-8 2-3-15-22-8 13-4 19zM5404 1932l14-19-13-12-15 2-2 17zM6228 3708l-5 5 0 2 8 7 22 2 5-14zM5604 2976l5 1 12-9-5-10-17 1 0 6zM4601 2777l7 2 8-7-1-13-10-8-15 3-1 3zM5349 4046l19 31 0 1 19-23-14-12zM5953 4065l-26-9-21 13-1 10 12-4 29 15zM4490 2553l-8-3-23 6-12 32 5 7 4 2 50-18 1-3-1-7zM5171 4174l7-10-1-12-13-8-6-1-7 11 2 13zM6124 1720l-11-22-33 2 4 23 12 10 23-5zM5155 1733l43-23 4-16-13-14-36 3-10 7 0 29 11 14zM5677 3152l-5 16 2 3 26-1 2-2-9-18zM5144 3760l1 13 18 9 22-12 1-13-28-10zM5074 1414l3 10 31 3 15-33-2-1-35-5zM4910 1143l-18 3-5 26 1 1 54-9-4-4zM4340 3932l-6 46 25-2-6-39zM4533 1455l-13 28 40 9 11-18 0-2-26-18zM4923 2746l10 8 27 2 6-7-3-5-18-11zM4423 2457l-12-32-24 1-28 19 4 30 8 8 15 3zM4728 2604l17 3 11-9 0-16-16-5-15 20zM4753 3075l-5 2-2 5 16 28 9-3 13-21zM5770 2565l23-24-2-6-21-5-12 28zM4394 1840l20-3-5-68-14 1-13 64zM4950 2837l37-9-26-26-21 19zM4211 3114l-19-3-19 10 5 24 41-6 3-6-1-3zM5782 2841l6-6-6-21-16-6-11 13 2 22zM5690 3024l3-1 22-29-16-11-16 22zM5008 3602l3-12-35-8-9 16 10 17zM5209 3417l-12-5-24 23 4 9 20 8 19-18zM6154 2466l8-7-15-15-6 3zM5609 3123l-2 6 6 24 22-2 3-3-2-23zM5708 2518l-2-20-15 8 2 8 15 5zM5434 1949l-20 3 0 3 9 23 26-8-8-19zM3977 2451l-11-8-28 9 7 20 14 11 2 0zM4724 3664l-8 21 1 1 31 5 2-1-8-33-4-1-9 3zM5359 3265l-12 4 11 26 10 1 18-17zM4533 3830l4 0 3-3 5-14-7-13-16-3-8 7 6 16zM5049 2936l4 4 9-1 15-26-6-5-22 9zM5035 3892l-21 18 14 20 3-1 10-26zM4991 4111l14 7 24-21-9-13-17 2zM5993 3203l-20 8 23 14zM5626 3772l-30-2-14 17 1 6 1 2 25 7 8-1 9-15zM5851 3793l-11 19 4 12 33 9 1-1zM4977 3615l-10-17-21 2-3 9 10 35 25-19zM5834 3782l18 8 9-6 1-28-26-10-14 10-3 10zM5006 1891l-4 28 25 8 19-38-21-12zM4970 2638l-19-1-2 2 5 41 31-29zM6066 3282l-11-4-10 6 7 21 15-21zM5029 2277l12-25-3-9-29-6-12 30 30 11zM4195 1637l-10-12-10 8 3 22zM5004 3050l10-6 3-14-6-12-27 15 2 10zM5753 3694l-15 10 9 23 18-2 2-26-4-2zM6277 2514l26 0 16-13-13-26-25-1zM4216 2401l2 26 6 13 27 4 21-38-53-7zM5756 3450l-6-13-8 0-15 19 6 3 4 0 18-7zM5410 1321l3-4-1-35-22 7-2 19 16 15zM4350 4071l-12 17 0 1 27 3 4-13-13-10zM4260 2979l-23 13-3 5 7 11 15 5 2-1 11-12zM5422 3053l-4-11-11 0-7 3-3 21 12 5zM5645 3725l27 1 7-4 0-1 4-31-13-14-29 1-1 0-12 26 1 11zM6071 1858l51 43 3-4 5-15-22-59-1 0-36 29zM4591 3828l8 2 12-34-8-14-27 9 0 23zM4793 1108l-10 5 4 21 8 6 16-8-8-22zM4675 2253l-16-8-15 4-1 1 7 28 9 3zM4678 2881l13 2 7-3-9-31-6-5-16 2-5 18zM5213 2929l28 16 18-24-14-6-34 10zM4887 3429l-11-7-24 4-5 8 2 17 18 12zM6177 2314l7-10-50-29-10 1-5 13 23 36zM5672 1975l-19 16 9 30 10 6 36-6 3-40zM4789 3725l-2 8 2 5 39 7 14-31 0-3-4 0zM4961 3197l-12 11 2 13 43 9 2-8-17-24zM6180 2084l12-37-18-26-43-7 9 59 4 5zM5208 1396l-10-16-20 26 5 11 21-5zM4997 2731l20 8 10-13-7-9zM4269 3301l-12 4-6 10 4 23 23-4zM6606 2162l-8-3-17 11 0 20 1 1 17 5 16-6 3-8zM3958 2351l37-2 14-24-33-26-19-2-7 20-8 16zM4658 1277l24-9-2-14-14-7-12 18zM5582 2419l14-17-23-22-17 2-3 32zM5022 3939l-13 2-6 20 27 13 9-12zM4664 3484l-4 19 53 12 12-31-23-23-19 5zM6000 3304l41 9-14-35-30 14 0 6zM5635 3151l8 21 15-11-3-14-17 1zM5758 1047l-24 19-2 51 77 17 1-1-21-75-5-4zM4556 2795l10-16-2-8-3-3-33 13-3 7 17 13zM6413 2180l1-1-3-26-11-8-19 6-4 9 13 29zM4531 2496l-1-1-21-13-14 1-1 2 16 31 14 1 8-11zM6072 3573l1-11-10-19-16 1-17 17 0 2 19 14 12 3zM5006 2199l28 6 17-21-34-24-1 1-13 34zM6052 3305l-1 4 22 1 13-19-19-7zM4517 2923l-8-6-23 15 25 5 2-1zM5494 3697l6-10-9-20-19 1-1 27 0 1zM6319 1827l8-36-2-5-24 0-10 18 13 19zM5953 2511l-5 29 31 13 3-22-28-21zM4571 2723l-22 12 2 14 18-16 2-9zM4404 2198l-17 5-7 19 9 17 13-4 8-6zM5500 2683l11-27-1-2-42 11 0 3 18 28zM5216 2845l-1 1 15 35 15-3 10-25-7-14zM5483 2798l-32 1 6 27 26-4zM5541 2629l-20 9-11 12 0 4 1 2 25 17 16-13 7-24-2-3-6-3zM5563 1293l9 7 11 1 6-28-22-1zM4905 2316l10-16-17-15-5 26zM5052 1107l-7-11-26 3-7 13 5 6 6 3 12 4 14-8zM5696 2560l-19 5-2 24 32 6 12-12 0-1-1-4zM5611 3453l-23-10-1 29 21 14 10 1zM5436 1876l3 13 26 4 5-25-22-13-8 6zM5459 3080l22-6 4-4 2-31-2 0-28 12-5 9 6 20zM6145 1414l23 42 46-13-4-39zM4313 2921l-28-11-16 13-1 8 2 3 3 2zM4860 1422l-18-6-11 22 1 1 17 9 4-2zM5962 3190l-24 2-3 27 23 12 10-20-5-21zM6305 2418l20-36-16-1-27 8 6 20zM5566 1774l9-1 10-19 0-10-22-9-7 2-5 14zM5405 2034l-16 32 40 4-20-35zM4662 2563l17 4 5-5 0-14-9-9zM4359 4045l-1 22 19-9-3-12zM4710 2980l47-17-1-15-34-23-33 26zM5342 2085l0-5-30-22-8 33zM4762 2801l0 1 0 23 1 1 19 7 17-13-5-24-3-2zM5119 1441l-11-14-31-3-10 26 49 17 5-8zM4953 2340l0 10 8 2 15-10-18-8zM4366 1123l-16 47 16 21 13-2-8-66-1-1zM5128 648l-9-24-5-3-25 9-4 28 37 1zM4042 2221l9-12-7-21-20 0-7 7 14 26zM5795 2721l-16 3-5 6 4 6 16 5 3-1 3-9zM5820 2247l-14-1 1 53 28-23 2-12zM5875 2359l28-20 0-11-18-15-11 1-7 2zM5489 2286l-8-25-17-15-29 27 45 23zM6411 1451l18-28-22-9-3 0-7 6-2 10zM5524 3045l19-25-23-13-18 9-8 21 7 3zM4640 3680l12 16 16-4-3-19zM4039 2560l14-13-32-27-9 5-4 9 15 30zM5197 2749l-4-7-17-7-12 17 8 9zM5410 2981l-10-7-7 15 9 23 13 0zM4285 2182l5-9-19-22-1 0-34 12 9 17 20 8zM5690 1243l25 28 53 0 12-12-16-51-48-7-11 4zM5016 3299l-17 16 4 14 14 14 9-15-9-28zM4748 3608l11 38 13-7 12-21-32-11zM4696 2529l9 12 21-11 2-7-4-4-26 3zM6602 2393l-36-9-11 7 5 23 40-17zM4231 2749l3 4 12 3 26-21-4-6-18-11-19 13 0 1zM6184 2572l-9 17 11 23 23 15 11-7 2-22-9-23zM5899 1655l-5 31 12 8 31-12 4-22zM4854 2404l2 1 38-5 4-17-6-8-1-1-13 3-17 14zM4385 2764l-20 6 6 26 17 0 2-25zM4738 3039l-3-1-13 18 18 9 4-14zM5088 2760l-4 23 26-1-2-15zM5228 4206l16 18 8-1 17-18-23-21-17 11zM5244 3231l-13 17 34 15 11-8-7-22zM4968 3543l-13-15-10 0-4 36 1 1 26-1zM6038 3739l5 19 3 3 20-13-1-21-12-1zM4106 2836l8 9 28-30-3-1-23-2-11 4 0 1zM4871 2428l-4 10 10 30 21-7 5-11-3-25zM4952 1782l1-2 3-28-27-31-5 1-15 28 25 37zM5938 1559l11 45 22 17 19-10 48-71-2-2-95 5zM5180 1155l10 28 2 1 21-14-1-3-25-15-5 0zM6306 2003l11-10 2-21-13-15-36 10-9 19 1 3zM5925 3987l-13 21 22 2 7-9zM6211 2382l-14-15-18 9 1 26 6 2 22-16zM5231 3810l-4 5-1 4 22 25 22-2 2-3-6-25-28-8zM5019 2696l-29 23 4 11 3 1 23-14zM5653 4053l-17 10-2 16 5 10 27-18zM5861 3247l18-3-1-27-24 6-2 6zM4802 3517l29 22 1-1 7-20-3-9-2-3-7-3-21 6zM5153 2308l-5-20-26-12-31 38 8 10 22 1zM4719 3712l26-14 3-7-31-5-9 21zM5645 3346l-41-13 15 31zM5671 1909l5-18-57-23-24 20 22 40 44-6zM4679 2779l0 13 15 9 9-17-17-12zM4884 892l-25 10-1 0 1 16 4 7 27 4 8-18-2-5zM5572 3916l22-28-21-5-13 23 11 10zM5091 928l-22-13-16 11 24 36 8-1 9-20zM5418 3139l-11 4 0 6 8 13 35-7-5-9zM6037 2300l13 11 33-5-37-54-14 24 0 11zM4493 2878l8-23-2-6-12 0-25 19zM5589 1115l19 34 31-21 3-9-49-11zM5927 1938l-12-33-35 1-1 2 2 35 7 9 5 1 34-8zM5629 2348l-1 23 2 2 12 10 22-6 6-9 1-3-28-24zM5569 3873l4 10 21 5 10-2 1-1-23-28zM5330 1639l-15 5-2 6 27 52 12-13-7-41-12-9zM5099 1222l-39 10-5 17 34 20 10-21 2-23-1-2zM6119 3689l2 10 25 5-2-22-22 2zM4986 1224l-3-6-34 7-8 25 11 4 34-25zM4855 1494l-5-9-27 6-6 15 8 11 7 4 11-1zM5305 3254l19-22-6-14-14 2-8 7 5 27zM4457 2646l-26 15 5 13 18 9 10-5 0-26-5-6zM5442 2541l9-2 5-12-11-24-19 15 0 6zM5879 1350l28 6 12-33-1-2-9-6-36 3zM5513 2731l-2-14-16-6-8 29 7 7zM5057 1990l8 3 5-2 9-53-44-1-8 17 6 22zM6551 2201l1 1 13 5 8-2 9-14-1-1-27-4zM5014 764l-22 9 4 8 17 14 21-28zM4850 2244l18 9 22-28-6-11-25 6-14 18zM4908 3527l-12 19 8 20 15-8 6-32-10-6zM4733 3938l-14 7 1 25 6 4 33-6 1-15zM5522 4053l0 9 3 8 43 15 16-12-41-32zM5771 2472l-2 7 1 5 43 19 6-6 9-39-31-19-3 0zM5564 2689l-28-14-6 27 0 3 31-5 4-9zM4122 2784l17 30 3 1 8 1 7-11 1-22-9-7-11-1-13 5zM5122 3127l-31-12-8 21 6 8 26 0zM4983 4111l-6-22-1-1-18-4-9 32 1 1 14 9zM5438 3634l-25 29 13 10 13-24zM5399 3276l-2-11-22-12-16 12 27 14zM6527 2206l16 15 9-19-1-1-17-2zM4796 1886l-5 19 1 1 6 7 12-1 18-16-2-7-11-6zM5125 2393l29 8 7-21-25-18-9 3zM5539 2975l12-6-10-16-17 12 0 4zM5722 1645l-5 11 6 13 4 4 30-7 6-6 5-15-11-13-9-3zM6268 3648l-11-10-18 11 8 25 3 0 11-3zM4714 2762l-3-5-21 7-3 4-1 4 17 12 7-1zM5242 1341l-4 36 10 17 6 4 22-34-4-18-14-6-15 0zM4597 3344l-22-3-24 5 1 11 12 20 6 3 19 3 19-8 3-12zM4176 3089l-1-2-25 1-5 17 2 6 24 8zM5518 1593l-6-3-28 11-7 14 39 25 10-39zM6507 1848l-33-14-16 12 2 11 39 10 7-3zM4375 2632l11-21-18-9-34 16 6 14zM6172 725l-26 0-19 20 6 26 9 5 30-12zM4923 1122l15 38 4 4 4 2 14-45-14-10zM4501 3735l-21 14 23 20 8-25-9-9zM5759 3470l10 1 1 0 4-9-7-13-11 1-1 2zM4599 2145l40-3 9-15-17-21-36 33zM4180 3020l-24 3-5 9 35 26 4-1 2-2 4-24-7-8zM4772 3639l-13 7-2 2 25 20 10-19zM5011 3833l1 3 5 7 2 1 31 1 1-1-2-8-19-16-16 6zM5399 3348l7-9 4-22-5-13-7 3-15 30 12 13zM5657 3098l3-14-7-3-18 13 8 11 4 0zM4765 1146l-11-3-1 1-6 25 12 17 25-12zM5080 1004l-6-2-22 12 3 15 17 12 17-22zM5837 2264l-2 12 14 10 21-11 1-1-19-16zM4448 3007l-13 20 10 26 19-7zM5807 1642l-24-4-9 6 35 27 6-4-3-22zM4241 3008l-7-11-16 0-4 6 1 23 4 2 11-3zM4273 2665l2-7-9-10-11 3 0 11zM4037 2657l-28 4-10 27 1 4 33-16zM4929 2951l-9 22 27 14 9-8zM5228 1187l30-8-7-20-26-11-13 19 1 3zM5143 4019l-8 13 12 18 26-2 2-6-14-26-4-1zM5266 3480l8-4 1-27-13-9-23 14 0 7zM4422 1763l-13 6 5 68 17 7 31-41-11-25zM4068 2893l15-11 3-9-30-12-9 4 12 27zM5875 2359l-8-43-5-2-9-2-17 6-3 18 18 25 22 1zM4894 3044l0-2-32-14-11 17 43 0zM5380 2539l-35 23 5 17 32 0 10-34-5-4zM6091 2409l-11-16-25 13 21 13zM6137 3663l11-5-4-26-21 0-3 6 8 24zM4494 2884l-6 5-7 25 23-4 1-17zM4411 3051l-29 21 4 8 11 8 19-3 17-14 1-6zM6205 1669l24 21 30-33 2-7-4-11-15-6-17 8zM5280 1612l-14-12-34 32 9 12 23 12 23-31zM6001 2694l7-13-1-4-16-12-20 6 0 11zM6349 3596l10-3 3-26-5-2-30 14 2 11zM5173 4192l-10 10 12 15 7 14 1 0 13-24-3-12zM5092 1857l14 14 34 0 23-19-15-42-34 0-21 35zM4418 3140l19-22-17-9-4 2-6 20 7 9zM4979 2298l-4 0-10 11 5 19 15 10 6-33zM4151 3032l-1 5 10 29 17 1 9-9zM5611 3229l11 9 24 1 5-25-32-4zM5510 1047l57-31-43-47-14 4zM5412 1282l1 35 43-8-5-29-34-6zM6003 3936l0-1 6-14-21-22-24 12 2 7zM5550 3957l6 5 29-3 8-5-6-31-15-7-1 0zM5468 4162l-7 18 5 7 16-7-6-17zM5203 1748l-5-38-43 23zM4437 3195l-6-1-26 4 9 30 6 4 9-5zM4079 2921l18-5 3-5-17-29-15 11 2 20zM6180 2345l-3-31-35 11 0 4 4 12 14 11zM5937 2057l-22 2 3 36 39 18 12-17zM4287 3231l-12 13-1 10 13 8 22-7 3-19-1-5zM4548 2856l-3-2-33 6 13 22zM4600 3221l6-15-19-33-34 21 0 15 26 23zM5129 808l-3 3 15 33 3 0 13-21 0-6zM6400 2346l17 10 15-22-27-10-5 5zM4990 1769l-37 11-1 2 29 32 31-8 1-3-8-28zM4140 2457l13 1 9-10-7-14-5-3-17 2-2 4zM5212 3916l-20 2-2 9 6 14 9 5 18-4zM4432 2810l-27-2 6 24 7 2 19-13zM4039 2840l-5 18 6 7 7 0 9-4 4-20zM5506 1907l-20-2 10 26 18-6zM5064 849l-18 9 7 27 10 5 17-27-1-5zM5337 1414l-21-35-1 0-11 14 7 24zM4664 2690l11 8 17-16-16-17-7 0zM4392 2376l16 17 27-33-24-14-16 13zM6139 1640l-30-32-1 0-31 28 38 36 1 1 11-4zM4313 2755l25 28 2 0 8-9-13-21-13-6zM6418 1670l7 0 6-18-41-26-6 19 3 6zM4530 2495l4-32-3-5-14 6-8 18zM6212 3503l-6-3-15 4-3 11 17 18 12 1zM5845 4019l-9 6-1 5 2 16 5 7 14 5 4-3 7-29-6-8zM5444 3093l11-7 3-6-6-20-17 4-2 23zM6282 2389l27-8-19-27-15 9 4 24zM5680 2489l19-8-9-22-8 4-6 23zM4083 2199l8-1-8-49-20 3-6 28zM4546 1255l1-24-6-4-16-3-25 27 31 19zM5177 2162l10-4 19-47-1-5-28-10-35 19-6 33 1 3zM5041 3903l-10 26 45 8 3-9zM4092 2784l18 4 12-4 3-4-11-22-4-2zM3927 2431l-3-9-17-3-3 2 11 11zM5670 3570l1 7 9 6 14-6-9-11zM5394 3499l23-26-7-19-9-2-27 18 2 23 10 7zM4784 1340l-2 0-7 0-8 46 6 4 4 0 17-11 2-16zM4881 2787l4 19 10 6 24-21-10-17-16-1zM4474 1962l11-13-3-13-34 2-16 19 21 12zM5181 2487l3 6 17-6-2-10-14 4zM6463 1890l31 9 3-2-4-19zM5371 3739l-8 4 0 22 3 3 26 6 2-28-16-8zM5134 2974l4 17 4 0 14-18-10-11zM5481 1948l-17-13-23 16 8 19 5 5 1 1 19-7zM5955 3869l-17 8 1 12 20-5 2-8 0-2zM4800 2999l21-18-3-8-22-14-14 9 16 31zM4423 2912l-4 4 17 9-1-13zM4121 2633l3 10 13 11 31-20 1-10-7-9-5-2zM5757 3862l-9-21-12-2-10 8 16 25 12-5zM4488 3302l38-25-13-12-43 2zM5461 3799l15-13-13-17-5 25zM5710 2730l-1 4 17 16 1 0 16-15-10-11zM6110 2381l1-6-9-16-15 3-12 12 6 13zM5419 3289l-3-1-4 1-7 15 5 13 23 9 11-9-5-13zM5200 2551l-4-15-2 0-20 12 5 20zM4686 1377l17-9 1-2-20-14-2 3 1 21zM4885 2559l-1 1 21 43 12 4 9-32zM5165 1510l-33 40 16 11 38-37zM4328 3289l3-20-18-8-8 21 17 9zM5026 898l4 17 12 13 11-2 16-11 2-13-8-12-10-5zM4866 2147l18 22 20-13 4-10-9-17-14-8zM5868 3711l1-13-29-10-18 24 1 2 14 14zM4796 4059l6 16 31-8 7 2-8-26-5-6-23 10zM5620 3535l-27-5-3 12 3 7 20 1 7-2zM4672 3661l-10-11-24 10-3 18 5 2 25-7 7-11zM5173 4192l-3-16-23 7 16 19zM5625 2416l17-21 0-12-12-10-22 33 9 9zM5429 2070l7 4 11-21-2-25-3-3-11-3-22 13zM5762 911l-3-1-20 10 9 27 2 0 15-11 2-14zM4447 2295l1 25 14 3 18-22zM6605 2129l14-3-11-9-8-47-21 11 0 13zM4397 2092l-29-6-5 3 22 22 10 0zM5323 3747l26-12 0-11-8-10-10-3-2 1-15 31zM4823 1252l-27 2 25 36 7-2zM6207 940l-8 11-2 17 20 51 37-2 1-1 2-53-36-25zM4995 2654l8-11 1-5-7-37-18 8-9 29 15 13zM6231 3722l-8-7-21 23 14 18 18-12zM5621 2615l0-1-20-14-8 2-6 13 8 9zM5015 2307l12-29-30-11-7 1-11 30 12 7zM6246 3411l-14-18-3 4 1 16zM4974 3571l2 11 35 8 17-13-5-6-22-15zM5091 3433l-10 6-15 26 1 1 26 8 14-15-2-13-5-9-1 0zM5629 3488l12-17-15-25-15 7 7 34 6 3zM5455 1157l-11-2-27 27 35 27 14-8zM6188 1672l3-2 0-35-13-16-22 20 15 28zM5330 2427l-9-23-19 0-4 24 2 3zM4205 3081l-15-24-4 1-9 9-2 20 1 2 15 3 10-5zM4933 4071l23 8 9-14-9-26-17 7zM5200 875l-21 37 5 13 5 1 48-14 2-16-16-17zM5352 2349l-3 33 7 5 11 1 20-20-26-30zM4821 2256l-34-4-2 12 20 20 16-1 5-11zM5720 3771l-5 19 11 12 13-4 21-22-3-5zM4829 3573l5 1 22-3 3-14-15-15-12-4-1 1-7 13zM6281 1431l6-25-57-43-5 4-15 37 4 39 3 4 40 4zM5543 4102l-19-12-10 12 6 33 4 0zM5387 3183l24 5 6-6-2-20-8-13-13 7-8 21zM5918 891l-12 18-2 23 21 18 16-28-20-30zM5183 4231l28 3 5-22-20-5zM6005 3779l-18-11-5 22 2 1zM5568 4150l19 6 1-14-15-8-7 10zM5366 3831l-25 15-3 9 40 29 4-3 3-14-11-33zM4964 3010l6 1 14-22-16-14-12 4-9 8 0 1zM4836 1166l-9-10-23 12 17 24 11-4zM5527 4179l1 15 10 10 12-12 8-3-5-20-6-3zM5061 3163l-4 11 3 16 3 4 27-5 2-3-4-18zM6109 3739l8-26-1-4-25 3-6 9 14 21 3 1zM5383 3417l-1 2 1 16 18 17 9 2 14-16 0-5-13-21-16-3zM5145 3851l6 47 27-22-7-33-2 0zM5916 2253l24 13 25-18-22-22-29 18zM5959 3884l5 27 24-12 3-15-30-8zM5753 998l0-16-33-12-6 27 1 0 31 5zM4511 3744l19 6 10-9 1-8-15-18-15 7-9 13zM5646 2908l1-2-5-15-18-14-2 0-11 21 11 11zM5025 2952l7-17-13-14-16 9 4 26zM5680 4069l-12 2 0 17 9 12 16-5 2-3zM5840 3109l-9 11 18 18 22-5-20-28zM4085 2698l-9 14 35 10 5-13zM4118 2101l0 34 42 0 1-4-37-34zM5527 3657l-12 29 13 12 11-3 13-16-2-15-10-8zM4236 3093l-2 0-13 3-10 17 0 1 10 16zM5870 3410l-15 15 5 8 17-2 5-16zM5209 3967l-4-21-9-5-14 22 22 12zM4845 2238l14-18-20-34-16 9-10 16 0 1 27 25zM5474 3503l20-11 3-10-13-16-25 1-7 13zM5912 778l-11 2-14 13 1 5 29 22 12-1 4-15zM4684 3993l-17-37-17 13 0 16zM4244 2549l8-3 22-30 0-13-18-13-20 8-5 19 9 28zM4935 3823l4 7 31 13 3-5 2-4-18-26-21 13zM4544 3933l13 20 14-15-13-21zM6435 1806l1-3-33-21-19 9-1 2 10 28zM4790 1516l22-11-14-13-17 7-1 4zM5081 2984l-1 2 2 8 6 1 12-4 3-9-6-12zM4672 2300l34-23 2-6-12-4-35 15zM5232 1987l1 62 9 15 1 0 16-8 32-42-7-29-50-1zM4907 3998l-5 27 19-19-3-4zM6549 2234l9 7 25-9-10-27-8 2-16 26zM4615 2285l11-36-14-9-13 5-4 22 13 20zM4997 1740l-3-9-12-10-26 31-3 28 37-11zM6148 3706l18-6-13-21-7 2-2 1 2 22zM4394 2695l-28 2-2 9 10 19 21-3 8-17zM5361 1615l-28 24 12 9 22-3 11-18zM5612 1636l-22-15-24 40 10 11 21-5 16-29zM5815 1667l-6 4-9 11-2 6 18 51 2 0 34-11 8-29-15-28zM5351 3492l-4-27-5-3-26 1-6 14 15 20zM4339 3187l4 12 4 4 16-4 16-20-3-15-12 0-26 18zM4104 2743l6 13 4 2 16-2 8-9-5-11-21-4zM5046 3619l-31 7-7 10 20 29 3 1 5-2 11-43zM5188 758l3 34 13 10 21-21-2-26-27-9zM6431 1652l32-33 0-5-74-9 1 21zM4138 2661l11 14 31-12 1-8-13-21-31 20zM6297 2241l29-11 6-30-3-3-4-1-31 8-3 6 1 25zM5193 2707l-8 0-2 1-12 19 5 8 17 7 11-29-5-4zM5871 2274l-1 1-8 39 5 2 7-2 11-33-11-7zM4447 2588l-40-17-21 40 30 17 8-3 28-30zM5107 792l23 5 7-11-15-11-10 0-7 5zM5567 1016l12 3 22-38-15-41-53 27-9 2zM4329 2966l-10 19 7 17 29-17 3-10-2-2zM4689 2627l1 10 4 6 16-8-19-10zM5269 1021l6-19-21-1-4 4-2 15 6 6zM4254 2073l9-27-37 15 1 13zM5726 3117l2 6 17 8 9-16-5-11-13-6zM4894 1209l0 34 36 10-11-46zM4624 2909l-13 1 3 16 12-4zM5814 2365l0-19-21-12-10 6-1 26 28 2zM4535 4044l12-9-8-30-15 4 4 33zM5110 3012l1-3-7-17-4-1-12 4 20 18zM4105 3241l9 10 34-24-6-14-18-8-14 10zM6255 3469l-1-13-21 2-6 16 12 9zM4782 2504l34 33 7-3 7-17-10-33-29 4zM5392 2412l-12-5-26 26 1 1 35 7 4-25zM5234 2195l-13-9-37 30 1 4 22 22zM5959 981l32-23-11-28-4-2-33 44zM5816 4049l-12-15-8 0-8 3-1 5 20 25zM4821 1935l-22-2-8 14 25 5zM4192 2068l11-20-24-24-17 17 0 17zM5863 1050l10-16-45-45-1 0-12 21 4 25zM5648 3797l5 14 28-20-24-13zM4810 1846l12-1 13-7 1-3-2-18-45-17-7 6-5 15zM6153 1714l10-11-4-26-21 1 5 34zM4532 2506l-8 11 4 20 36 0 4-4-18-23zM4943 1670l18-17-16-28-29-2-6 5-4 9 17 33zM4720 3850l4 6 22 8 14-7 5-5-31-40zM4747 2387l-38 25 0 4 33 8 16-19-1-6zM5456 3195l3 19 25 10 1-1 3-14-15-19-9 0zM4844 3482l-10 24 2 3 20-14-5-12zM5299 953l-52-3 7 21 29 10 18-13 1-6 0-5zM4693 3593l-11 5-7 19 0 5 16 8 15-20 0-1zM4945 2574l1 0 28-25-4-20-7-3-23 22 2 23zM5516 2246l19-21-23-20-18 11-3 11 21 20zM5398 1058l47-27-20-27-30-5-12 25zM5785 3695l9-8 0-7-16-22-9 2 13 35zM4851 3186l7-33-16 1-9 15zM4508 3244l5 21 13 12 3 0 5-2 9-26-9-23-18-1zM5395 3350l-12-13-12-5-11 5-6 5 6 18 32-5zM5658 3018l6 8 26-2-7-19-12-6-7 1zM4999 3865l18-22-5-7-17 17zM5567 2269l-23-9-8 3-5 11 15 20 5 0zM5556 3977l44 36-15-54-29 3zM4760 3045l-2 8 3 9 20-4-17-16zM6261 1986l-17-2-16 3-6 9 9 51 29-11 2-47zM5676 3058l11-1 3-4 0-29-26 2-10 17 17 14zM6321 1875l1 4 16-3 3-10zM4537 1284l15 10 30-8 6-9-42-22-15 15 0 1zM5400 2297l27-6 8-18-31-30-11 0-8 22 2 13zM5518 1943l-12 11 2 6 16 9 7-4 4-21zM5335 1141l3-1 6-35-43-3 12 33zM4381 2915l-11 23 9 7 19 2 5-26zM4152 2073l-27-24-15 20 16 20 25-13zM5673 2076l-36-16-16 35-1 25 62-31zM4820 3990l22 3 3-3-6-39-27 6zM6148 4063l12-4-14-17-4 4 3 16zM4694 3317l-4-25-3-2-8 2-20 22 0 3 12 11 15 1zM4772 2350l1 1 12 5 25-30 0-2-9-6-28 9zM5006 574l29 3 4-13-34-4zM4644 3599l14-16 1-20-24-4-23 23 1 5zM5343 1325l7 1 6-38 0-1-10-3-13 27zM4522 1707l16 22 41-7 3-12-24-23-35 17zM5546 2294l-15-20-20 7-3 4 7 11 19 6zM4899 2129l24-11-3-34-5-1-31 21 0 13 1 4zM5582 3857l23 28 20-11 3-6-8-17-9-9-7-3-2 0-20 14zM5090 3032l1 0 4-3 3-7-19-21-6 15zM5513 2787l2 37 3 1 5 0 12-34-10-5zM5530 1687l23 15 25-12-2-18-10-11-30-2zM6281 1614l-24 25 4 11 46 10 22-18zM5817 2972l2 22 20 15 7-3 13-20-18-28-4 0-16 9zM6205 3533l-27 20 7 19 36-8 1-1 5-24-10-5zM4688 2063l13 18 23-14-2-15zM4901 627l7-11 0-34-21-19-19 8 1 52zM5483 2411l11-30-2-3-35 11-3 10 2 5 24 8zM6158 1852l20-4 7-16-4-32-3-4-14-5-8 1-18 25zM6047 3636l-3 2 0 7 6 5 16 0 6-12-2-16zM5525 3754l18 10 6-2 11-24-6-8-38-8-7 4 6 16zM5701 2209l25-35-21-23-21 3-4 20 20 35zM5367 2235l2 3 15 1 1-33-21-13 0 1zM6521 1876l-22 22 13 9 14-5 1-24zM4648 4030l-20-7-5 14 26 8zM5089 2501l-6 19 29-7 3-10-5-8zM5356 1288l-6 38 15 3 8-21zM6463 1890l-1 0-3 18 29 7 6-16zM4703 2784l-9 17 8 14 4 1 2-1 2-32zM5156 1205l-23 3 7 28 17 1 4-4zM5189 3402l2 2 18-28-2-9-22 7zM4734 1344l-9 20 2 9 20 5 1-33zM6379 2288l-17-23-12-1-3 35 27-1zM6352 1509l47 35 19-9-18-18 0-42-29-2-11 10zM4953 3644l29 28 14-35-18-12zM4483 2622l-15-3-9 27 5 6 24 0 4-7zM4898 2670l-11 3-8 20 7 11 25 7 5-7-12-31zM5132 996l0 5 13 19 17-1 12-22-16-13-21 3zM5537 3213l7-16-8-7-3 1-15 17 1 3zM5784 3915l-11 12 13 11 4-6 0-16zM5912 4008l0 1 4 17 11 7 10-14-3-9zM6352 2460l-18 43 36 2 7-8 3-14-10-14zM6469 2410l0 1 26-20 0-11-5-6-31 10zM5429 2650l9 4 9-5 1-4-16-32-7 1-8 17zM4682 2530l-8 7 1 2 9 9 20-3 1-4-9-12zM5845 1671l15 28 34-13 5-31-5-8-43 14zM4589 1352l0-4-32-13-7 13 18 12zM5086 1151l-3-18-8-1-13 17zM4756 1843l-34-15-12 15 15 30 22-5zM5738 3681l-15 21 15 2 15-10-6-12zM5367 969l17-18-8-19-8-4-9 6-9 22 1 5zM5855 2826l-4 8 2 4 22 4 13-26zM4497 1141l19-26-8-14-8-1-4 0-26 33 3 5z"/>
<path fill="#a1b4d4" d="M4013 2369l-3 21 31 12 14-11-1-5-27-19zM4708 1362l2-29-19-7-7 26 20 14zM6459 2384l31-10-2-9-19-8-13 2-8 17zM5776 3432l-9 17 7 13 19-10-1-17-1-2zM5291 3645l28 15 11-13-10-16-16 0zM5849 3042l-12-27-19 16 1 20 13 9zM5375 1885l-11-38-16-3-17 5-10 20 0 14 36 19 17-14zM5164 4144l13 8 14-8 7-24-15-3zM5775 4074l-28-8-6 28 10 10 29-10 0-13zM4026 2278l5-5-18-32-3 0-10 7-4 19 11 15 3 2zM4599 2896l-1-5-6-6-20 12 5 17 3 0zM5685 3566l9 11 2 1 11-4 2-7-17-21zM4621 2556l-6 12 13 16 21 4 3-21-3-4zM5077 2913l7 2 14-25 0-6-32 7 5 17zM6248 1855l-11 5-1 31 20-2 7-16zM4913 2239l-7 0-7 16 4 20 23-1 7-4 1-23zM5286 1514l3 12 7 2 24-32-8-21-9 0zM6213 3473l3-31-19-6-11 9-1 3 15 25 6 2zM5864 3595l-8 2-8 25 1 1 24 3 9-15-4-11-1-1zM4391 3135l-17-8-5 5 9 29 16-7zM5463 3769l0-3-29 11 3 11 21 6zM5003 2195l13-34-34-3-9 15 2 15 26 7zM4693 1431l-13-16-8 5-4 7 0 8 12 11zM4653 3022l-44 8-7 13 15 17 39-19zM5596 2662l19-5 5-19-24-10-8 27zM6335 2111l5 32 0 1 7-3 19-30-7-6zM5292 1157l19 17 24-33-22-6-7 3-13 14zM4359 1836l23-2 13-64-4-1-38 53zM4340 3142l-1-2-16-7-9 4-2 31 17 2zM5639 1128l21 48 6 0 34-53-56-7-2 3zM4360 2999l-5-14-29 17-1 4 21 14zM4790 1877l8-21-26-9 3 26zM5087 3839l-15 38 40-8 7-19-1-2zM5302 2884l3 8 19 5 15-34-5-6-16 5zM4533 1780l10 35 27-23-7-26-7-1zM4639 1455l29-20 0-8-27-7-7 10zM5751 2736l-8-1-16 15 17 26 16-1 3-8zM5810 2731l-10 0-3 9 15 20 6-22zM4964 1383l-26-44 0-1-2 2-18 35 22 26 3 0 21-17zM4887 3528l21-1 7-7-27-13-7 17zM5676 1891l30-34 1-18-28-22-23-2-32 14-5 39zM5084 2915l13 10 18-19-17-16zM5593 2207l0-1-38-6-12 25 4 5 32 9zM5275 3867l41-2-19-31-25 5-2 3zM4001 2797l-17 16 27 20 8-9-11-24zM5182 3963l-4 0-4 16 18 13 13-10-1-7zM6255 3469l26 19 6-33-20-8-11 4-2 5zM6111 3506l3-16-5-8-13-4-28 6-6 5 0 8 11 18 32-3zM6331 2426l24-26-22-21-8 3-20 36 4 8zM4088 2872l28-8-2-19-8-9-28-1zM4490 1281l-30 6-5 5 20 15 22-16zM6283 1703l-24-46-30 33 0 15 47 23zM4990 2418l22 3 9-8-2-8-15-19-24 15 0 2zM4444 1415l21 12 36-32-11-23-17-10-4 1zM4021 2237l-8 4 18 32 21-6-9-20zM5794 3687l-9 8 8 15 23-2-9-18zM6286 3538l23 7 3-2 1-19-21-29-8 0-6 7zM4871 3227l20 31 21-3 11-13-19-35-7 0zM5747 2413l0-4-31 4 13 26zM4150 2816l-8-1-28 30 2 19 15 9 9-8 14-42zM5775 2612l-7-18-10-1-18 13 0 7 34 0zM4698 2880l-7 3-14 50 7 16 5 2 33-26 7-17-16-27zM4764 3000l1-30-8-7-47 17 2 19 42 9zM5212 2809l-11-3-15 10-5 13 8 22 26-5 1-1-1-30zM4908 1891l-6-30-43 11 2 25 7 13zM5394 3746l19-12 0-11-30 2-5 13zM5827 3284l-14-7-15 2-4 15 24 14zM4909 2774l13-28-14-15-15 6-9 22 9 14zM5560 3488l-13-7-3 0-23 32 11 10 28 1 11-15zM5271 2637l-1 2 0 15 8 8 25 3 8-13-17-29zM4449 3005l-3-4-28 2 0 21 17 3 13-20zM5006 1891l-20-9-21 14 0 3 32 23 5-3zM5475 1675l18 22 26 2 11-12 6-28-5-6-11-5zM4568 3754l13-11-1-2 0-1-30-14-9 7-1 8zM5644 3414l-2-2-8 0-5 22 1 4 15 4 8-4zM5770 3006l6-11-1-12-17-7-21 3-4 9 13 23zM4909 2382l-11 1-4 17 9 21 11-3 14-22zM5290 3646l-9 12 2 4 26 13 9-11 1-4-28-15zM6507 1930l-5 23 3 2 16 0 6-11-1-7-3-4zM5698 2982l9-16-5-15-13-1-10 22zM5259 2056l53 0 3-8-6-21-18-13zM6244 1984l-9-52-31 31 24 24zM5194 3189l-11-30-6 2-13 13 11 18 11 4zM5436 1893l3-4-3-13-30-5-3 6 3 8zM4566 2441l27-22-12-21-23-3-13 34zM4862 3518l-23 0-7 20 12 4 23-14zM5500 1480l-42 1-7 37 31 0 21-28zM5420 968l9-23-7-7-14 2-11 12 8 17zM4866 3805l-17-5-2 1-25 18-1 15 6 9 43-1zM5761 3776l-1 0-21 22 32 16 8-13zM4555 3485l13 6 9-12-5-19-18 9zM5670 2301l15 14 32-14-15-41-12 1-7 7zM4953 3644l-10-35-23 16 14 20zM5394 2473l-9 2-2 7 8 17 18-12zM5740 2677l0 3 27 19 5-2 3-2-2-20-21-7zM5504 3851l-7-3-28 4 8 36 29-31zM5284 3340l-12-2-14 6-3 12 4 4 20 4zM5825 3463l-19 6-3 7 0 4 13 16 9 2 14-17-3-13zM5132 2608l19 9 1-1 1-1 4-28-27-3zM5412 3289l4-1 16-34-9-11-17 1-9 21 2 11zM5677 3251l-20 0-14 22 4 10 35 5 5-8zM5346 2042l6 29 29 0 3-3-15-39-13 0zM5658 1624l-16 24 30 18 15-16-7-18zM4048 2085l-16 5-2 28 16 16 27-39zM5909 3280l21-9 1-9-19-23-24 15-1 20zM4983 1439l-9 35 5 8 33-1 25-20-27-34zM4625 1941l-11-44-14-8-16 8-8 32 33 16zM5690 2459l2-6-31-15-14 22 4 2 31 1zM5392 2674l-16-1-7 12 17 5 8-6zM4701 3977l-21-28-8 2-4 4-1 1 17 37 3 2zM4618 3992l2 1 9-9-7-13-8 6-3 11zM6543 2326l12-11-3-7-22-8-11 9zM5705 3899l-10 12 22 19 11-5 3-6-16-20zM5726 2750l-14 13 18 22 14-9-17-26zM5282 1407l-28-6-3 10 9 23 18 6 7-5 5-15zM4443 2862l-5-3-24 6-4 13 2 11 25-6zM4991 3727l-1-4-17-12-6 1-4 23 12 12 5-1zM5907 2934l-3 26 2 2 26-15-11-16zM5104 2098l15-1 12-33-19-5-28 15zM5450 1520l1-2 7-37-15-22-32 22 34 36zM4703 2655l14 10 5-2 6-13-7-14 0-1zM6527 1944l22 12 10-12-15-11-18 4zM4382 3072l-6-5-7 0-18 23 8 11 7 1 20-22zM6221 3380l-4-5-21-17 3 20 13 10zM6383 1331l41-15-14-31-62-5-3 4-3 30zM5053 3087l-12-17-12 4-1 24 20 1zM6266 2436l8 10 30-9 5-11-4-8-17-9-22 17zM5010 3204l-3 0-11 18-2 8 4 7 25-3 7-26zM4472 2221l-8-5-9-1-10 22 12 7 18-8zM4560 2238l-6-3-34 25 4 17 21 10 18-4 6-13zM4645 2761l-23 12 19 18zM4558 2395l23 3 20-20-1-3-14-19-28 7-9 18zM4937 3164l-5 29 17 15 12-11 5-23-15-12zM5127 682l-5-23-37-1 0 18 3 7 26 8zM5512 2205l23 20 8 0 12-25-10-25-11-2-21 28zM5114 2753l-23-18-10 8 7 17 20 7zM6399 2477l18 6 2 0 3-23-21-3zM4982 3672l0 1 8 8 38-16-20-29-12 1zM5029 3074l12-4 3-6-10-17-12 5-5 18zM5903 2339l19 9 14-37-16 2-17 15zM4765 4026l-6-9-10-6-16-1-10 8 4 18 15 12zM4714 2148l-23-3-8 5-18 30 4 3 49 0zM5977 3472l12-13 6-17-36-10-6 4-7 28 3 3zM5183 2470l-11-5-11 16 20 6 4-6zM4846 2616l-3 10 19 22 14-10 5-20-15-12zM5851 3593l-25-3-8 5-5 9 15 20 20-2 8-25zM4716 1254l-15-12-21 12 2 14 12 15 14-4zM5528 3698l-12 24 38 8-1-9-14-26zM4453 3221l-4-24-5-2-5-1-2 1-8 32 7 2zM5774 2871l-17-28-26 17 2 15 34 11zM4611 1987l8 7 26-16-17-36-3-1-16 4-8 23zM6071 2458l-1-8-14-1-9 6 8 10zM5998 2335l-9-24-6-4-18 44 1 1 22-6zM5459 4034l23 7 16-5 2-16-7-15-25-15-8 4-8 10-1 21zM4664 2743l18-1 8-8-10-25-2-1-12 11zM5022 3146l7 24 27-23 0-1-6-5-26 3zM4203 2048l9-1 20-27-6-14-45 2-2 16zM5350 4081l18-4-19-31-2 0-19 17zM4870 1996l2-1 27-47-28-13-6 5-16 30-1 15 5 13 2 1zM6183 2465l14-10 5-8-6-16-17 3-8 23zM4589 4005l-8 3-2 6 11 17 9-18 0-1zM4644 2815l-4-3-16 9 1 14 5 0 16-5zM5310 4011l16-19-17-27-1 0-19 26 2 4 14 17 1 1zM5735 1569l0 6 17 23 10-1 6-28-2-4-20-5zM5242 3637l-7 25 21 4 15-9-8-17zM6013 3391l-30 0-10 17 25 20 11-14 4-18zM4385 2760l-17-26-10 4-2 7 3 24 6 1 20-6zM4934 730l12 32 14 0 8-32-4-11zM5630 3551l16-9-21-14-5 7 0 13 3 2zM4735 4062l26 17 3-16-22-11zM5657 3251l-11-12-24-1-1 27 3 4 19 4zM4836 1043l11 10 2 0 16-32-6-14-19-2-18 5zM4660 2838l1-1-4-21-1-1-12 0 2 15 13 8zM5151 3962l4 1 11-7-2-16-25-15-2 1-3 9 3 8zM4591 3828l-25 30 9 13 20-4 18-22-7-10-7-5zM4396 3891l-7-17-23 20 14 16zM5166 3430l-25 8 1 7 10 11 14 1 11-13-4-9zM5466 3604l-26 26 26 12 18-10 0-20zM5537 1224l25 6 7-3-4-42-46 3zM6291 1875l-2 6 6 10 11-5-2-18-4 0zM4458 2274l-11-8-23 6-1 11 6 7 16 3zM5061 4068l-32 30 4 2 6 2 42-13 2-6-21-16zM5506 3648l-15 19 9 20 15-1 12-29-20-9zM5891 3992l-10 7 10 18 21-8 0-1-18-17zM5900 2539l-11-11-9 0-12 6 0 26 4 4 27-10zM5661 2756l12-11-6-10-16 1 0 16zM5815 3800l19-18-15-16-16 10zM5394 3703l19 19 11-9-2-23-28-1zM6058 968l-2-8-21-8-25 16-2 16 17 26 6-2 26-34zM4390 1921l12 3 14-38-26-4-11 5-5 13zM4789 3026l-1-18-24-8-10 8 1 11 1 1 27 11zM5460 2900l17-31-8-8-10-3-18 25 5 11 12 7zM5162 3084l-21 3-7 6 2 30 12 7 1 0 18-10-2-32zM5320 3326l16 13 5-29-20-6zM5446 2501l5-5-11-28-16 0-1 1-5 18zM4761 3177l-1 3 14 10 37 4 1-1 1-17-6-10-23-1zM4424 3352l14 8 29-14-26-18-21 17zM5626 1692l-6-7-32 17 1 11 9 11 1 0 14-2 13-16zM5027 1978l6-2-6-22-22 2 2 20zM5530 1389l-8-1-26 15-7 26 23 25 27-3 3-8-2-47zM5543 3867l1 2 25 4 13-16 0-4-12-7-24 8zM6195 3706l-5 29 12 3 21-23 0-2-4-2zM5731 2352l-9 8-1 11 30 31 8-2 17-23 0-3zM6306 2273l0-2-9-30-5-6-29 8-4 6 5 33 1 1 22 3zM4248 1689l34-39-2-7-34 5-9 29zM5624 3490l-6-3-10-1-30 24 13 13 32-14zM4512 2200l8-39-25-19-28 24 2 6 8 10 32 19zM6094 2603l-39-15-6 24 19 12 1 0zM4266 2214l6 3 21-13-8-22-20 6zM4116 2998l-8 8 16 23 27 3 5-9-2-18zM5416 2339l21-22-10-26-27 6-9 9-1 5 16 27zM5164 3420l-19-10-9 16 5 12 25-8zM5044 1846l-1-7-24-12-8 26 12 12zM4749 4011l13-40-3-3-33 6 7 36zM6070 4107l12-23-17-7 3 24zM4419 1346l-17-5-16 3-13 17 2 31 35 7 12-49zM4600 2375l1 3 24 12 17-19 1-12 0-1-21-7zM4789 1800l4-33-11-18-31 5-6 25 5 13 32 14zM6129 2461l-5 4 13 14 13-8zM5642 2939l-4-4-3 0-13 6-3 4-3 13 5 10 20 7 1-1zM5909 3372l-2 6 17 28 11-5 8-26-19-12-3 0zM5844 3869l10-19-16-14-15 10-1 3zM5787 923l-9 15 5 7 11-1 0-25zM4851 870l-2-9-29-8 3 29 25-5zM5333 3690l-2 21 10 3 7-13-6-16zM4697 2609l21 7 10-12-3-7-11-10-15 1-10 7zM5212 1762l-7 30 17 27 50-6 14-11 2-9-23-49zM5661 1922l-44 6-9 15 3 32 5 13 2 2 35 1 19-16zM5502 3280l-14-26-15 10 5 19 5 4zM4788 2775l-28-11-6 2 8 35 29-7zM5693 3150l9 18 15-6 4-13-4-7-19-6zM5777 3158l21-9-5-22-15 1-8 8-1 1zM5393 877l20 3 48-40 1-2-66 6-5 7zM5082 2851l4 1 27-14-11-22-18 0-8 31zM4498 3139l-4 9 8 9 9-4 3-9zM4557 3953l0 4 28-6-1-11-13-2zM5702 3830l24-24 0-4-11-12-27 1-1 36zM4215 3026l-19 5-4 24 22-2 8-11-3-14zM5118 4032l-13-23-17 20-1 3 3 3 21 3zM4602 3043l-5 1-15 12 0 18 20 11 18-11-3-14zM4751 1754l31-5 9-23-13-28-25-10-23 54zM4666 3350l-28 6 12 23 25-16zM5127 3242l6-15-9-13-28 16 11 11zM6064 817l-34 31 34 40 7 3 28-14 22-41-4-3-4-4-19-13zM4010 2284l-3-2-31 17 33 26 4-3zM5138 2485l13-4-9-31-8-4-18 25 1 6zM5050 2635l-11-11-12 18 11 15 9-2zM5444 3354l-2 24 7 3 28-12 6-8-10-7-22-4zM4897 2346l0-11-16-10-4 1 6 19zM6348 3620l23-8-12-19-10 3zM6062 3497l0-8-23-19-20 13-2 4 9 29zM5442 3819l20-18-1-2-3-5-21-6-6 17 9 13zM5283 3071l-21-9-7 1-7 27 41-5zM4860 2695l-8 13 18 9 16-13-7-11zM4841 2411l3 0 10-7-13-16-26-4 2 12zM5023 3571l5 6 3 0 5-9 1-11-6-21-11 0zM5315 1379l-39-15-22 34 0 3 28 6 22-14zM4348 2575l-25 8-10 24 21 11 34-16zM4875 2916l20 14 7-14-11-12-13 5-3 5zM6221 938l36 25 31-11 9-14-30-38-16-8zM5860 2218l5-1 8-15-12-20-1-1-10 6-6 21zM6009 3414l-11 14-3 14 42 13 6-9-3-12zM4657 2435l1-4-39-8-6 4-2 19 15 18 12 2zM4008 2534l4-9-24-14-13 14 2 3 19 11zM5025 1877l21 12 5 0 31-29-38-14-21 19zM4764 1426l25-1 3-2 5-10-2-6-18-17-4 0zM4873 1498l9 24 34-15-8-13-26-5zM5229 3893l-10 19 18 14 14-5 0-1zM5161 2380l24-14 0-3-30-23-15 10-4 12zM6317 1993l50 14-4-20-24-24-20 9zM4849 3950l16 16 11-6 13-22-2-4zM6229 3397l3-4-11-13-9 8 0 5zM4866 4027l1-2-25-30-6 23zM5043 2542l-33-22-3 2 1 44 1 0 24-3 10-12zM5859 3270l27 5 1-1 1-20-9-10-18 3-7 10zM5241 3632l1 5 21 3 6-13-9-15-18 11zM4781 3034l2-3-27-11 10 20zM5299 1961l23-22-13-38-45 6-5 5zM5324 3411l-5-21-16-2-19 20 26 23 8-5zM5225 2794l-3-9-22-13-10 11 11 23 11 3zM5610 2029l8-39-2-2-54 15-5 8 10 37zM6094 713l12-39-18-22-30 31 4 32zM5696 3328l-18 20 20 23 22-6-23-37zM5505 2850l1 4 19 10 21-17-6-12-17-10-5 0zM5231 3941l6-15-18-14-7 4 11 26 3 1zM5799 3897l-16-8-12 7 13 19 6 1 15-8zM6318 1832l2-3-1-2-15-4-12 14 3 4zM4859 2220l25-6 5-17-7-10-42-3-1 2zM4996 3249l-28 20-2 6 21 15 23-6 4-12zM5552 1873l25 2-2-12-34-20-12 5 9 16zM4828 2922l19 20 8-7-7-21-12-2zM4285 2899l0 11 28 11 2 0-5-25zM6353 2174l-14 8-10 15 3 3 22 11 18-16zM5633 2579l29-20-26-14zM4271 2799l-26-8-14 6 0 5 7 10 24 0 8-5zM5933 2595l5 3 8-8-9-22-8-4-3 2 0 4zM6290 2354l19 27 16 1 8-3 2-19-5-5-37-5zM5059 4035l-3 4 6 28 21 16 3-2 4-46-3-3zM4720 2004l-51-13-15 43 21 13 44-31zM5523 2738l-3 17 8 6 12-3 6-9-1-5-15-7zM5159 2799l6 26 16 4 5-13-22-19zM4540 2816l2-15-17-13-8 2-16 19 0 6 3 6 31 1zM4225 2871l5-27-13-5-16 8 3 26 3 5zM6145 1414l-12-5-27 52 17 27 33-13 12-19zM5056 2598l25-8 6-20-3-6-19 3-4 4zM5969 3506l-18 7 0 1 6 22 29 11 12-9 2-9-6-13zM4423 2005l-24-2-7 8-7 31 4 6 6 2 41-31-3-6zM5290 1420l-5 15 13 6 12-5-4-12zM4124 2542l5 46 6 0 13-10-2-39zM4831 2806l17-3-2-23-21-4-6 13zM5782 2759l12-18-16-5-3 24zM5467 3151l3-18-22-2-3 15 5 9 1 1zM4886 3925l-14-45-26 8-2 12 19 20zM5179 2942l11-23-23-8-4 25 9 7zM5817 852l2-11-6-7-30 24-3 1 15 6zM4951 2440l34 3 5-25-10-15zM6487 1745l-4 7-2 39 6 8 49 15 2 0 30-22-1-9-42-33 2-10zM5941 2393l-16-17-20 4 0 40 29 2zM4810 3802l6-27-27-19-15 20 1 5 18 18zM5795 3418l-6-25-26 6-4 13 4 12 13 8 15 1zM6352 1848l16-7 2-4-12-14-12-1-10 11zM6291 1804l10-18-24-27-29 37 24 20zM5436 4152l1 5 17 8 7-7-2-9zM5146 2767l-10 8-7 20 5 4 25 0 5-2 11-14-2-5zM5895 3452l14-4 4-25-27-9-4 1-5 16 3 9 10 11zM5435 2691l-13-5-11 8 5 12 9 3 5-2 8-12zM5060 714l-33 19 11 27 30-12 0-29zM4706 3776l4-12-21-19-11-1-5 1-8 13-1 15 10 9zM5650 3043l-16-24-1 0-6 4-6 11 3 10 16 6zM5666 3132l0 5 11 15 16-2 5-14-1-3-19-8-7 1zM5174 3508l-11 5 0 19 14 6 10-13-2-7zM4133 3069l12 8 15-11-10-29zM4779 1585l23-5 3-24-6-5-29 14 1 12zM4394 1296l-23-5-28 19 43 34 16-3zM4503 3004l-1 1 29 46 9-7 11-22-4-12-25-14-13 1zM5479 2004l-16-7-17 14-4 14 3 3 36-6zM5159 1255l-20 17 21 24 16-19-3-11zM4783 2601l3 3 13 4 13-21-24-4zM4694 1587l17 10 21-15 8-31-53-13-3 2 3 38zM4405 1465l17 32 29 6 0-28-31-28zM5561 3305l-4 0-7 8 14 30 21-2 7-8-2-5zM5911 1709l-5-15-12-8-34 13-8 29 30 22 9-3zM5251 3104l-6-11-18-1-5 3-2 1-4 35 7 9 21-5zM5479 2121l1-22-41-16-4 6-9 40 14 11 1 0zM5081 3386l21-11 2-29-29-14-5 7 4 42zM6306 1886l-11 5-3 12 13 8 13-5-1-18zM4884 892l2-7-13-16-22 1-3 7 11 25zM4328 4026l-3 24 0 1 16 2 14-10-5-15zM4472 3236l-19-15-17 8 20 24 9 2 6-14zM5797 2740l-3 1-12 18 33 12-3-11zM5167 2911l-4-4-25 11 10 20 15-2zM6306 2003l1 32 22 8 42-30 0-1-4-5-50-14zM5156 1205l8-10-10-17-31 9 1 16 9 5zM5901 3621l-19-10-9 15 5 15 23 6zM5812 3922l-2 18 21 10 1-1 9-25-23-10-3 1zM4540 3864l-9 12 24 20 19-17 1-8-9-13-8-3-2 0zM4379 1189l3 0 21-16 0-18-32-32zM5101 2375l14 24 10-6 2-28-5-1zM6413 2502l-16 6 2 15 18-6 4-3zM5320 1595l4-5-12-16-46 13 0 13 14 12zM5512 1557l0 33 6 3 26-20-27-16zM5367 969l4 11 20 12 14-23-8-17-13-1zM6466 2190l11 13 29-5 1-27-2-1-38 17zM5309 3675l-26-13-3 29 29-15zM6025 1867l20 10 26-19 0-6-15-20-3-1-34 25zM4459 3102l-12 14 7 29 17 1 11-25-4-9zM4917 3694l-31 4 0 1 11 29 30-22zM4814 1438l-22-15-3 2 2 16 4 2 15 2zM4601 3911l-8 16-1 3 19 13 8-5 0-23-2-2zM5799 3119l-3-6-19-6-3 1-1 1 5 19 15-1zM4979 1482l-3 31 37 7-1-39zM5288 925l-42 6-1 16 2 3 52 3-4-20zM5924 3709l-22 35 11 20 39-7 8-30-2-5-33-13zM4870 3371l-8 2-21 29 11 24 24-4zM5006 2985l23-4 8-20-12-9-18 4-1 2zM5540 3656l10 8 22-8 8-10-4-15-8-6-24 15zM4834 3574l19 34 17-6-2-18-12-13zM6024 1395l3-29-53-17-15 10-4 12zM6019 3832l18 17 11 1 3-32-20-10-2 1zM5009 2237l-3-3-24 1-10 9-1 4 1 4 18 16 7-1zM5119 624l9 24 38 0-8-38zM5698 3136l19 6 11-19-2-6-18-4-11 20zM4556 3855l2 0 2-25-20-3-3 3zM5651 2855l-7-1-4 9 20 14 3-1zM3952 2833l24-12 3-7-17-22-20 25-3 8zM4305 2827l7-13-8-22-25-2-1 1-7 8-1 8 13 22zM5835 3080l-5 11 10 18 11-4 2-5zM5460 1796l-16-7-19 28 21 15 18-13zM6074 2428l2-9-21-13 7 22zM4137 2395l-13-19 0-1-25 9 1 31 27-1zM5738 3681l9 1 7-19-30-5 2 12zM5900 1993l-13 19 9 11 46-12-9-29zM5122 2276l-13-36-33 21-2 46 1 3 16 4zM5853 820l19-4 16-18-1-5-27-22-2 4-17 29zM4645 1978l23 10 19-42-36-17-23 13zM6341 1866l6-4 0-3-17-9-5 4 0 8zM5856 2247l-7-13-12-2-17 15 17 17 15-6zM5170 4176l1-2-18-7-9 13 3 3zM5776 3160l17 22 11-3 5-26-11-4-21 9zM5708 2518l0 1-13 17 7 8 1 0 13-16 0-7zM5343 1026l-5 9 32 46 20 0 8-23-15-34-27-3zM5683 2090l-1-1-62 31 0 1 3 10 30 14 19-1zM5090 2480l-6 8 5 13 21-6 1-11zM5100 3723l6 13 16 4 11-13-21-20zM6196 3358l-4-4-10 8-4 17 9 10 12-11zM4480 2754l2-10-35-4-1 1 6 23zM5980 2555l-3 17 2 4 24 18 24-20-9-25zM6266 2426l22-17-6-20-3-2-24 7-3 9 1 10zM5282 2167l-14 14-7 16 34 17 24-18 1-8-26-23zM6015 1829l-37-20 3 39 17 8 17-2zM6027 3278l-1-14-22-5-7 3-7 18 7 12zM4799 2820l8 4 18-4 6-14-12-17-25 7zM4848 1985l-29-15-26 8 26 36 34-16zM5998 3655l10-8-4-12-27 2-4 5 0 8 4 6zM4868 2966l-16-4-13 22 23 3zM4878 1434l23 2-1-12-25-1zM4214 3281l-34-8-13 23 21 5zM4896 3546l-11-3-11 2-3 6 15 18 18-2 0-1zM4860 959l1-5-5-10-25 1 2 13 7 12zM4798 705l22-5-5-24-23 6zM4758 719l24-3-4-22-25 2zM4037 3081l31-16-22-21-24 0-5 31zM4512 1782l8-5 1-25-28-11-11 18zM4003 2888l-13 31 6 4 32-5-7-31-10-3zM4688 2208l-19-25-4-3-4 1-1 37 8 8 6 0zM4238 3049l-7 16 17 11 14-22-1-5-9-6-1 0zM5010 2520l6-19-27-25-29 7-7 26 10 17 7 3 37-7zM5687 4059l-14-16-17-1-3 11 13 18 2 0 12-2zM4177 2105l-16 26-1 4 14 43 5 0 43-21 2-16-1-10-21-24-21-4zM5819 841l12 0 20-16 2-5-12-16-8 13-20 17zM5226 995l-5 11 11 15 16-1 2-15zM4270 2125l0 26 1 0 37-17-25-17zM4547 3010l4 12 18-3 23-23-30-12-6 1zM5485 3402l-6-6-22 0-4 13 5 10 6-1zM5443 4101l0-1-6-24-21 6 10 23zM5779 2668l-6 7 2 20 11 1 16-21-6-10zM4823 2709l10 4 15-5-21-36-12 10zM5835 3384l-9-2-14 7 11 22 20-9-4-15zM5687 1650l-15 16-1 8 20 16 32-21-6-13zM5089 1269l4 15 13 0 27-13-2-22-32-1zM4402 2235l21 24 11-17 0-1-10-12-14 0zM4812 2587l3-2-2-46-19 7-14 26 8 11zM4455 3586l-5 6-21 36 7 3 20-10 4-25zM4512 2612l-6-33-50 18 12 22 15 3zM5908 3576l-2 12 4 6 34 5 3-2 1-18-6-8zM5208 3179l-1-20-24 0 11 30 10-2zM4964 3856l-5 5-2 12 32 20 10-16zM6363 3528l25-4-17-33-18 10-3 6zM6035 1429l-11-34-69-24-20 20-8 30 105 19zM6269 2547l38 2-4-35-26 0-4 2-5 30zM4993 1350l-1-9-49-5-5 3 26 44zM5894 1647l0-29-12-9-33 21 2 31zM5179 2990l-9 1-10 11 0 18 19 13 1-1 1-3 6-29zM4830 2517l31-10 11-27-1-4-29-8-20 12-2 4zM4796 4059l-19-7-13 11-3 16 6 4 35-8zM4705 2099l31 22 5-2 2-38-12-4-26 21zM5733 3459l11 28 13-16-20-12zM5678 3125l19 8 11-20-4-6-12-8zM5518 2146l23-30-34-38-27 21-1 22 6 10zM5800 3087l-7-5-16 25 19 6zM5733 2538l8 6 18-29-26 6zM5011 3018l6 12 18 9 12-9-3-6-21-12-10 0zM5636 2769l-1 1-7 17 3 11 5 2 12-1 19-13-6-8zM5656 1018l-2 0-22 20 1 33 9 8 37-6 9-21zM5668 4088l-28 5-2 7 28 16 11-16zM5828 1966l-22-32-21-11-24 33 43 28 25-12zM5521 3513l23-32-19-15-28 16-3 10 25 21zM5629 3815l-18 27 9 9 32-31-1-2zM4997 3932l3-21-11-14-19 10 3 17 18 9zM5288 925l3-32-23-11-29 14-2 16 9 19zM4873 2886l14-12-2-5-19-12-16 25 0 2 6 3zM5352 1550l3 10 33 8 4-4-13-32-2 0zM4151 3230l4 21 23 8 11-7 8-25-2-3zM5016 3531l-15 0-2 18 2 5 19-19zM3934 2450l1-12-8-7-12 1 10 10-4 10zM4792 4021l-23 8 8 23 19 7 8-12-10-26zM4988 1118l7 31 18 0 4-31-5-6zM4631 2106l17 21 3 0 22-22-9-16-35-6zM5036 3568l35-23-3-6-19 0-12 18zM4129 2940l10 5 18-13-27-7-5 7zM4581 4008l-22-13-2 1 7 28 15-10zM5706 4010l-8-6-13 2-4 3 6 23 12 5 9-2 1-1zM6132 2514l26-17-23-13-9 9zM5357 2984l19-23-5-5-30 3-5 5 9 21zM5998 3538l32 23 17-17-21-27-26 12zM6349 1138l2-41-26-17-25 12 14 45 19 13zM5234 2195l19 5 8-3 7-16-26-42-22 47 1 0zM4924 2894l13-26-33 6-6 5 2 7 16 11zM4974 3429l17 25 26-4 11-19 1-1-14-9-26-4zM6006 3807l23 2 2-1 1-11-24-16-4 23zM5709 3861l6-12-13-19-15-3-14 9 9 22zM5217 1042l15-21-11-15-20 5-1 11zM5256 2539l18 39 12 0 9-14-24-42zM5770 3136l-9-20-7-1-9 16 3 6 21 0zM5398 3307l-13 0-14 18 0 7 12 5zM4727 1373l-6 7-1 9 9 10 13-2 10-11-5-8zM4804 4047l23-10-1-9-13-11-19 4zM5330 2383l19-1 3-33-21-1-8 8 6 26zM5096 4119l-14-25-21 30 15 9zM5385 3210l-5-4-26 9 2 13 21 9 6-3zM6224 1219l26-32 3-23-11-21-2-1-2 0-35 46 17 32zM5863 3907l11-3 13-24-1-4-7-8-22 6zM5031 1635l-4 12 23 33 15-22-14-21zM4303 3316l5 24 17 5 31-35-28-21-6 2zM5312 2993l-5-19-21-15-9 8-5 12 8 19 26 3zM5827 3201l-23 15 8 21 7 2 12-8-2-30zM6101 4140l-13-35-18 2 13 35 11 7zM4293 2686l18 23 11-25-13-6zM5621 3311l-18 21 1 1 41 13 4-1-1-9zM4339 2281l12 22 32-14-6-26-18-3-14 6zM4525 2882l-13-22-11-5-8 23 1 6 11 9 20-4zM5090 3229l6 1 28-16 1-9-31-8zM6166 1356l-20-30-47 20-4 15 5 21 27 15zM6650 2452l17-35 5-11-35 5-2 27zM4936 960l18-10 6-18-17-12-14 4-9 16 8 17zM5506 3386l-19-26-4 1-6 8 2 27 6 6 1 0 13-4zM5187 3000l-6 29 22-24-3-5zM4850 2882l16-25-5-9-7-9-1 0-20 29zM6039 2416l-24 7-4 15 8 10 14-1 10-14zM5452 3060l5-9-13-12-24 1-2 2 4 11 13 11zM4538 4058l-3-14-7-2-5 0-13 19 5 13 17-1zM4960 1121l21-6 0-1-21-54-6-3-13 40 5 14zM6319 1871l6-9 0-8-11-5-4 3-2 14zM5146 1642l7 41 36-3 12-53-19-9zM5525 3360l-36-2-1 1-1 1 19 26 23-5zM4252 2546l42 9 2-1-22-38zM4572 2897l-13-11-22 14 0 10 32 14 8-10zM5612 3622l16 26 9 5 17-29-4-5-37-3-1 1zM5115 2503l-3 10 10 15 23-7-13-19zM6681 2324l20 7 6-27-24-3-6 4zM4237 2970l-2 18 2 4 23-13 1-4-14-13zM6579 2081l-23-4-15 39 13 14 13 0 12-36zM5906 1861l-34-21-7 43 4 4 37-18zM5436 2667l-12 7-2 12 13 5 4-19zM6374 2298l-27 1-9 9 27 27 13-16 1-8zM5439 3649l-13 24 4 7 10 1 12-12zM4949 2151l1 7 23 15 9-15-4-12-28 3zM5528 2538l0 27 17 6 7-22zM5318 3539l-18-4-4 12 14 27 2 0 15-1 12-7 2-9-2-4zM5091 2454l0-16-11-4-29 18 2 17 8 3 25-9zM5110 2782l-26 1-10 8 1 15 9 10 18 0 25-21zM6166 2547l-1-13-31-11-4 7 0 15 17 8 12-1zM5029 2806l-5-5-27 15-9 12 6 18 8 7 35-13zM5963 3411l-4 21 36 10 3-14-25-20zM5500 2448l15 17 3 0 22-18 1-2-28-19zM5450 1096l-10 5-2 42 6 12 11 2 35-10-4-43zM5653 3438l-8 4 3 25 19-2 6-12-9-14zM5312 2683l-2-2-32 11 7 21 11 9zM4867 1726l-9-19-20-5-13 19 7 9 28 11zM5903 2598l-24 24 1 14 40-16 1-1 0-2-7-16-3-2zM5789 3735l10 1 24-22-1-2-6-4-23 2zM5406 3244l17-1 7-22-12-7-16 14-3 9zM5473 2771l13 24 8-2 12-7-6-27-3-2zM4005 2756l9 8 7 0 4-33-12-7zM5166 3457l-14-1-5 11 14 16 1-1 6-13zM4687 3376l13 0 10-25-3-6-10-4-21 22zM4676 2504l7-5 7-24-15-4-6 1-3 2 3 30zM5822 2845l-3 2-6 22 18 15 13-15zM5420 1819l-21-3-20 26 25 18 17-10zM6026 2316l15 18 3-1 6-22-13-11zM4946 900l-3 20 17 12 7-3 3-26-15-8zM5798 1688l2-6-37-22-6 6 13 29zM4781 1060l23-5 4-10-16-23-16 11zM4769 993l4 0-6-8zM4677 3807l12 4 29-17-12-18-32 6zM5088 3099l20-14 0-23-1-1-17 0-15 17 1 7zM4204 2463l-15-3-24 23-5 18 7 12 42-38zM5512 1749l-11 4-3 5-1 20 36 23 15-4 2-5-35-43zM6119 4033l12 14 11-1 4-4-16-19zM5751 4001l-24 8 15 14 13-10 0-8zM5564 3136l-12-18-12 22 6 5 17-1zM5710 3865l-1-4-27-3-8 23 21 3zM4146 2967l-7 10 16 23 21-17-2-4zM5906 2962l12 21 9 3 22-4 1-7-18-28zM5307 1714l-42 29 0 1 23 49 53-17 6-48-11-15zM4770 1565l-18-16-6-2-6 4-8 31 16 6 23-11zM4882 994l14 10 10-11-6-23-5-2-12 9-3 4zM5326 4063l2 32 4 3 18-17-22-18zM5081 3269l10 37 16-4 5-21-3-12zM3998 2078l-23-7-19 23 18 22 19-11zM4878 1453l26-11-3-6-23-2zM5744 2322l-13 30 45 22 6-8 1-26zM4658 3064l2 15 30 16 13-12-1-21-4-5-36-6zM5687 3093l-9 0-9 9-2 15 4 9 7-1 14-26 0-1zM4679 2792l0-13-16-5-13 18 13 8 7 0zM6108 4087l8-17-2-6-7-5-14 1-1 15 9 9zM4407 3958l25-5-1-26-9-14-16 7-6 22 7 15zM4440 2902l-16-2-1 12 12 0zM4676 3363l21-22-11-12-15-1-5 22 9 13zM4569 1078l4 1 2-8-2 0zM4542 1129l14 11 30-9-19-23-13-2zM5669 2839l-4 11 12 23 15-20-1-7zM5719 3249l17-5-14-27-18 5 0 20zM6115 1672l-42 18 7 10 33-2 3-25zM5331 3128l-22 26 29 14 9-9-15-31zM4394 1982l-15-8-27 20 40 17 7-8zM4403 4031l1 36 2 4 17 9 4 0 20-24-3-13-17-16-12-2zM5443 2445l-1 20 22-3 3-3-7-15zM4810 1452l0-7-15-2 0 10 4 6zM6163 3383l1-19-10-6-8 24zM4032 2882l-11 5 7 31 2 1 13-7 6-15zM5032 2935l-7 17 12 9 11-2 5-19-4-4zM5489 3762l-3 2 2 24 2 2 18-3 3-5-7-14-7-5zM5613 1638l-16 29 23 17 11-22 1-11zM5056 2968l18-8 6-8-18-13-9 1-5 19zM4713 2750l0 1 24-3-1-18-5-4zM5730 916l-11-32-19 8-4 1 5 30 5 2zM5302 3090l-6 1-15 24 3 17 1 0 31-12-13-30zM5532 2598l-20-5-7 8 16 37 20-9zM5053 605l1-12-13-5-24 15 7 11zM4846 2780l2 23 9 5 9-27-7-8zM6332 1642l7-21-18-26-33-6-7 25 48 28zM4246 2960l-6-6-10 3-12 11 2 1 17 1 10-8zM5575 2727l3 14 24 7 12-11-1-6-21-17zM6312 2116l22-5-9-31-6 1zM4510 1180l6-23-9-3-25 19 1 9zM5060 2811l-31-5 8 34 11 4zM5001 3554l-2-5-20-9-11 3 0 21 6 7 27-15zM4760 3154l1 23 23-12 0-18-9-8zM6007 2677l7-26-23-5 0 19zM5924 3363l32-15-25-14-10 23 0 6zM5070 1126l2-19-20 0-3 10 7 11zM4788 1615l11 18 6 2 20-12-3-13-16-8zM5684 2154l21-3 22-40-42-21-2 0-11 54zM5645 2727l13-17-9-21-12-1-11 10 0 6zM4979 1999l17 38 16-5 3-23-4-9-18-11zM6185 3623l-21 6 4 33 12 5 13-12zM5566 3829l-5-22-2 0-22 21 1 7 1 1zM4468 3346l-1 0-29 14 1 18 28 14zM4871 2476l1 4 39 31 1-1 4-31-18-18-21 7zM4310 1874l4 39 26-15 5-27zM5757 1632l16-17-10-18-1 0-10 1-8 16 4 15zM4015 3126l-2 3 12 32 13-3 6-37-4-5zM4886 1722l8-13-12-14-24 12 9 19zM5231 3697l31 12 4-4-10-39-21-4-7 4zM5718 3432l-17 0-1 22 21 5 5-3zM5704 2793l20 1 6-9-18-22-17 1-3 19zM5765 3725l11 11 8 1 5-2 4-25-8-15-3 0-15 4zM5215 1566l0 5 6 10 40-1-1-42-9-4zM4359 2260l-8-39-2-1-22 5-1 27 19 14zM4613 3435l-8 13 6 16 31-3 5-24-10-12-15 3zM4346 3211l1-8-4-4-35 9 3 23zM4716 3263l-16-15-6 0-12 7 5 35 3 2 8-2zM4690 3892l25 11 7-1 20-15 4-23-22-8zM5575 1170l-10 15 4 42 51 13 8-47-26-24zM6188 3515l-27 12 7 19 10 7 27-20zM5855 3402l15 8 4-30-5-3zM4040 2425l1-23-31-12-4 6 16 28 7 3zM5653 2206l-9 5-7 32 6 2 25 0 13-31zM6294 2204l31-8-16-33-18-14-15 3zM4954 552l-54-10-5-2-8 23 21 19 19-2zM5417 3851l5 11 19 5 6-5 4-10-30-8-2 2zM4708 1742l-44-2-11 47 5 7 6 4 37-10zM4319 2035l1-11-6-5-25 10-14 17 14 13 10-2zM4076 2800l4 19 25-2 0-1-16-31-3 0zM4924 1994l-3 34 25 12 6-1 12-43-7-7zM5754 3663l9-5 0-2-17-24-13 4-13 18 4 4zM4315 3074l17 13 4-1 12-31-5-8-20 2zM4539 2965l-18-1-13 20 1 13 13-1 19-26zM4377 2263l5-5 7-19-9-17-29-1 8 39zM6096 3643l-5-6-19 1-6 12 6 5zM4786 3227l25-33-37-4 9 36zM5637 2463l-2 1-2 24 6 16 6 4 8 0 6-12-21-33zM5465 3301l17 5 1-19-5-4-19 6zM4337 2068l3-10-21-23-20 22 34 12zM5085 658l-27-4-2 4 0 19 5 4 24-5zM5458 2901l-12-7-21 21 24 17 2-2zM5442 2695l9 9 13-10-10-9zM5451 2704l1 16 10 4 23-26-21-4zM4715 2841l-9-25-4-1-11 7-8 22 6 5zM4862 807l-55 3-12 6 10 14 51 9 2-2 9-15zM5452 1278l-1 2 5 29 6 7 34-12 4-9 0-18zM4347 1941l-1 2 32 24 10-15-11-15zM4897 2651l-21-13-14 10-3 15 28 10 11-3zM4492 2950l-2 0-5 19 12 2 7-9zM5025 1154l-1-1-11-4-18 0-17 32 6 7 28-1 11-14zM5927 1421l-26 24 29 48 92-8 11-43-1-2zM5812 2760l3 11 3 3 23-19-3-23-1 0-19 6zM5133 3261l2-2-8-17-20-1 4 26zM5209 1759l-6-11-48-15-1 0-2 27zM6184 1230l-8-5-35 1-20 40 20 15 39-23zM6129 2461l21 10 3-1 1-4-20-12zM5522 1266l0-1-6-28-3-1-26 16 14 24zM5650 3070l-11-6-19 13 3 13 12 4 18-13zM5654 4037l-52-18-1 24 35 20 17-10 3-11zM5911 1107l17 28 49-18-1-41zM5621 3574l-9 21 2 7 28-18-1-6-19-5zM4749 3429l8-10-32-31-10 4-7 19zM5741 3732l-17 1-11 19 4 7 29-7zM5804 2154l18 13 25-14-16-17zM4426 2306l-19 9-1 11 5 5 25-4 1-2zM5029 4097l-24 21 1 8 26 19 1-45-4-2zM5350 3122l5 4 20 9 10-7-18-28-2 1zM4334 2333l11-3 6-27-12-22-33 12zM5302 3090l6-48-12 3-13 26 6 14 7 6zM5494 3697l-23-1-2 32 20 2 14-6zM5510 2482l8 19 6 4 14-5-2-26-18-9-3 0zM5312 1475l8 21 16 2 15-37 0-1-31 3zM5589 2932l-12 11 20 12 6-13-5-6zM4451 1778l11 25 20 11 22-4 8-28-30-23zM5423 2469l-23-2-6 6 15 14 7 1 2-1zM5717 3718l-38 3 0 1 24 28 10 2 11-19zM5169 2952l3 12 19 6 10-12-22-16-7 1zM5518 1188l-7-8-34 23 8 19 17 3zM4196 2966l-6 16 19 1 9-15-4-5zM4930 3015l34-5-17-22zM5004 3075l7-5-7-20-18-7-3 9zM5641 3578l1 6 11 14 7-3 11-18-1-7-5-5-9-3-11 8zM4595 1425l12 41 31-7 1-4-5-25-32-9zM5778 2736l-4-6-17 1-6 5 12 31 12-7zM5266 2305l30-6-16-27-20-9-12 14zM6286 3607l15 15 26-17 2-15-2-11-2-1-38 20-2 5zM5183 1922l1 0-8-67-13-3-23 19 14 46zM5996 2406l9 1 13-14 4-14-1-1-20 3-11 13zM5548 1723l6-11-1-10-23-15-11 12 5 24zM5114 621l5 3 39-14 0-2-25-25-23-6zM6517 2082l4-12-18-14-24 0-9 6-6 26 12 12 9 1zM5676 3222l26-3-3-14-8-9-9 1-11 17zM4084 2421l16-5 0-1-1-31-6-2-25 16 5 18 4 4zM4030 2823l9 17 21 1 5-7-20-21zM5607 3163l25 19 11-9 0-1-8-21-22 2zM5465 2433l-5 11 7 15 14 1 14-12-19-18zM5509 3726l7-4 12-24-13-12-15 1-6 10 9 27zM5330 2498l3 3 8 1 17-9-1-1-29-15zM5858 3911l5-4-6-33-13-4-10 15zM6145 3523l8-2 1-24-5-13-35 6-3 16zM4936 892l-12 2-5 20 10 10 14-4 3-20zM6534 1910l-11 23 3 4 18-4 2-19-5-3zM4773 2654l-13 9 13 14 16-7 2-14zM6627 2373l59 6 1-1-19-38-11-1-29 33zM5442 1398l2-2 8-32-10-13-9 1-5 5-11 21 1 4 2 4zM5009 2566l-1 28 28 11 2-2 3-25-8-15zM6291 1854l-12 4 0 3 12 14 9-7zM5668 2245l22 16 12-1 4-4 7-32-12-15-1 0-19 5zM5133 1041l1 9 7 13 18-3 13-29-10-12-17 1zM5518 1900l-12 7 8 18 2 1 6-3 4-15zM4027 2367l27 19 9-18-4-12-11-7zM6528 2287l7-14-17-17-9 32zM4012 2525l9-5 6-24-14-13-6-1-18 11-1 18zM5074 1414l-51-16-11 14-2 15 27 34 11 4 19-15 10-26zM4295 2876l-1-12-25-11-3 1-4 14 7 22 8 1zM5320 3631l10 16 10 0 20-19-1-4-13-12-22 6zM5893 3506l21 19 0-1 7-31-5-9zM4558 1687l-1-26-36 7-3 28 5 8zM5842 2453l-14 5-9 39 36 1 10-9zM4832 1900l-4-4-18 16 18 13 7-7zM5387 4055l-19 23 9 17 13 3 22-17-10-29-2-1zM4736 2787l7-17-14-1-6 14 5 5zM4683 2594l-20 6 4 17 15 9 7 1 2-2 6-16-8-14zM4471 3649l-7 4-1 23 26 6 10-24-4-4zM5111 4038l-21-3-4 46 27-4 7-5zM4372 4110l27 19 8-23-25-5-8 4zM5597 2955l-20-12-6 2-1 24 2 0 26-12zM5003 3877l-4 0-10 16 0 4 11 14 14-1 21-18zM6088 4105l13 35 15-11 2-3-11-22-17-1zM5540 3794l0-24-29 12-3 5 11 22 2 0zM5186 3757l-1 13 14 14 17-6 16-14 0-5-43-6zM4730 2467l11 20 6 2 7-3 10-17-13-21-13 6zM4667 2533l-5-24-21-4-6 4-9 15 23 16zM5768 1645l6-1 9-6 7-24-17 1-16 17zM6261 2356l14 7 15-9 3-4-2-27-33 7zM5748 3841l15-14-35-18 8 30zM5867 1559l-2-17-1-1-42 17 17 12zM5728 3208l24 0-20-24-4-1-2 3zM6026 2720l2 13 20-7-7-11zM5003 3153l8 21 13 5 1 0 4-4 0-5-7-24zM4936 3591l-6 0-18 20 2 11 6 3 23-16 3-9zM5047 3605l-9-23-7-5-3 0-17 13-3 12 7 24 31-7zM4262 2360l13 39 49-15-6-35-33-6zM5007 3204l3 0 14-25-13-5-15 12zM4056 2861l30 12 2-1-10-37-3-2-10 1-5 7zM5233 4240l-16 0-14 28 30 15 12-12zM4508 3871l-12 21 10 15 12 5 2-3 7-32zM4835 1938l-7-8-7 5-5 17 3 3 13-4zM5511 3782l29-12 3-6-18-10-21 14zM5300 2831l-11 7 0 10 29 14 16-5 0-11-16-17zM4078 2835l28 1-1-19-25 2-5 14zM5544 1573l7 1 20-21-17-17-37 21zM6022 2379l24 6 15-15-3-8-35-6-3 5 1 17zM5883 3479l-11 9 2 9 11 10 8-1-2-27-1-1zM5191 3088l2-27-2-5-6-6-1-1-10 8-12 27 3 4 5 1zM5956 2132l-11 54 2 3 29 2 15-35zM4861 1897l-2-25-7-4-26 21 2 7 4 4zM5227 3996l-22-14-13 10-4 11 12 21 2 0 27-16zM6243 3677l-15 4 3 19 14-5zM4331 2418l5-24-12-10-49 15-2 6 24 22zM5411 3074l-10 14 4 12 4-2 8-17-3-5zM4801 3339l28-17-12-30-15 0-16 20 6 25zM4568 2533l11 3 27-9-12-23-14-1zM5105 1340l-24-34-12 3-21 27 1 25 30 10zM6092 3827l1 2 35-25-28-8zM6057 2433l14 16 9-10-6-11-12 0zM5345 2985l-9-21-3-1-26 11 5 19 28-1zM6140 925l36-27-4-28-47 23 0 18zM5661 2683l12-29-21-6-23 17 8 23 12 1zM6338 2308l9-9 3-35-6-5-38 12 0 2 29 35zM4841 2454l7-13-9-15-22 11zM5668 3758l16 9 19-17-24-28-7 4zM5112 2881l-13 2-1 1 0 6 17 16 11-2 2-12zM5644 2299l0 41 39-15 2-10-15-14-20-4zM5087 3106l4 9 31 12 14-4-2-30-26-8-20 14zM5310 3819l-13 15 19 31 6 5 16-15 3-9-25-26zM5481 2870l-4-1-17 31 26 10 16-7 2-3zM6173 1922l20 20 15-17-5-9-23 0zM6466 1624l10 64 65-15 1-5zM4853 1998l-34 16-1 3 4 39 15-2 26-26-8-29zM6437 2444l-8 6-7 10-3 23 34 4-7-39zM4559 2024l17-14 0-4-19-29-20 0-8 12zM5603 2762l-10 21 35 4 7-17zM4409 2127l32 26 15-40-28-10zM5816 2721l14 3-3-18-15 0zM5202 3705l-7-24-3-1-16 0-5 23 9 7zM5100 2991l4 1 14-4-1-6-14 0zM5385 2265l8-22-9-4-15-1-18 11-7 17 8 11zM5385 3307l-17-11-10-1-3 6 16 24zM6146 2341l-15 18 0 7 12 11 9 3 7-7 1-21zM6001 1895l12 17 33-1-1-34-20-10zM5546 1137l-18-2-28 18 10 21 52-23-1-3zM4917 889l-6-16-7-2-18 14-2 7 12 14zM4258 3267l-16-1-15 11 30 28 12-4 2-2 1-7zM4485 3717l-22 8 0 5 11 22 6-3 21-14zM6222 1996l-44 21-4 4 18 26 38 0 1 0zM6288 1589l33 6 18-20-12-22-32 5-11 22zM5079 3796l-18 14-12 26 2 8 34-8zM5509 726l-15 10-1 9 10 2 10-6 1-7zM5830 3091l-1 0-10 14 3 16 9-1 9-11zM5284 2107l-41-43-1 0-37 42 1 5 36 28 25-9 13-15zM4642 1295l-14-37-2-2-33 14-3 6 39 27zM4942 864l-4 1-2 27 10 8 9-5 2-6zM4285 1988l17-28-11-20-30 17 0 11zM4790 1516l-2 15 1 3 4 4 32-21-8-11-5-1zM5499 4202l29-8-1-15-5-3-22-1-7 7zM4891 3793l-8-24-27-1-2 2-5 30 17 5zM6085 3721l6-9-5-19-24-4-3 4 11 30zM4884 2104l-10-9-40 20 0 4 50-2zM4778 3134l4-17-11-10-9 3-9 11 22 16zM4991 803l-27 5 21 29 18-26zM5423 906l-10-26-20-3-10 7-2 11 15 21zM5048 3099l-20-1-12 11 33 15 6-10zM4615 2568l-28 10-3 4 13 24 6 0 25-22zM5587 3134l-7 24 6 11 8 3 13-9 6-10-6-24zM4225 2493l11 5 20-8 5-28-10-18-27-4-20 23 5 12zM4423 2741l-28-19 0 29 24-1zM5306 1424l4 12 3 2 27-13-2-11-1 0-26 3zM4462 2720l-15 20 35 4 5-8zM5398 1625l9-15-21-25-32 10 7 20 17 12zM4279 3070l-17-16-14 22 2 16 4 2zM4954 1702l-11-32-20 0-2 2-9 39 12 11 5-1zM5403 3811l1-6-8-18-28 16-5 17 3 11 8 3 13-5zM4528 2537l-2 9 31 16 7-25zM6377 1744l-2 2-8 26 17 19 19-9 6-17-4-8zM5355 2434l9 27 11 1 15-21zM5317 3958l6-26-25-14-8 4 0 21 14 20 4 2 1 0zM5296 3547l4-12-3-6-10-8-9-1-24 33 7 12 6 1zM5894 1647l5 8 42 5 30-30 0-9-22-17-55 14zM5655 1616l3 8 22 8 11-15-10-35-2-3zM6572 2368l32-2-17-40-2 0-26 29zM4802 3552l22 0 7-13-29-22-17 10zM5190 3549l8 18 21-15-5-15-1 0zM5238 3806l28 8 17-31 0-1-37-1zM4876 2349l-1 8 16 17 1 1 9-24-4-5-14-1zM6021 1962l-5 0-31 16 0 1 1 41 34 26 31-40z"/>
<path fill="#8ea4ca" d="M6068 3787l-4 24 28 16 8-31zM6210 1069l51 18 5-4 3-34-15-32-37 2-3 3zM5452 3480l7-13-1-8-20-21-14 0-14 16 7 19 19 10zM5248 3090l7-27-12-13-8 0-13 11 5 31 18 1zM5725 1511l-9-12-4 1-30 28 8 25 23-10zM4781 1499l-8-20-16-6-12 18 14 19 21-7zM6339 2182l-8-21-22 2 16 33 4 1zM4339 3140l12-10-1-15-24-10-6 6 3 22zM5378 2023l12-1 16-24-10-12-27-10zM4711 1597l5 20 33 19 16-21-17-27-16-6zM5862 3756l21-17-15-28-31 17-1 18zM4372 2125l-16-21-2 1-8 22 19 11 8-2zM5822 2920l8-15-1-3-31-8-25 13 0 1 12 24 8 0zM5049 3124l1 17 6 5 27-10 8-21-4-9-32 8zM4796 1679l14-1 17-17-2-4-16-10-14 22zM5572 2880l-26-33-21 17-1 12 41 20 2-1 2-2zM5647 3105l-4 0-4 18 27 9 5-6-4-9zM5531 3947l-41-15-13 21 1 11 33 15 3-1 20-27zM4895 2930l3 9 31 4 1-2 3-11-17-20-14 6zM6373 1907l6 7 14 6 20-9 1-8-32-30-4 1-8 6zM5519 1188l46-3 10-15-13-19-52 23 1 6 7 8zM5684 2154l-12-10-19 1-6 32 8 11 25-14zM6202 3738l-12-3-10 1-6 9 1 14 11 15 14-7 16-11zM4520 1156l16-26-20-15-19 26 10 13 9 3zM6091 1030l-3-4-3 0-7 1-55 39 14 22 1 1 55 2 11-23zM5299 2156l-19-41-13 15 15 37 12-2zM5015 704l4 3 8-4 3-28-19-6-1 0zM5803 1744l-24 32 8 44 20 12 31-15 2-8-22-70-2 0zM5088 4029l-8-34-12-2-12 8-2 16 5 18 28-3zM4863 2028l19 23 15-2 14-16-41-37-15 3zM4261 2618l16 10 31-16 2-3-34-21-19 24zM4920 3625l-6-3-25 15-3 12 9 12 21 2 18-18zM5368 2618l20 7 7-15-8-12-18 6zM5373 3095l28 10 4-5-4-12-23-12zM4597 2606l-4 8 2 28 3 4 14 3 22-19 0-13-31-11zM5906 1694l5 15 22 9 24-8-20-28zM5390 2704l-3 11 9 12 20-21-5-12zM4595 2139l36-33-2-23-1-3-10-1-46 42-1 1zM5289 3991l19-26-4-2-37-1-5 15 5 8zM5645 2508l-8 28 20 1 6-14-8-14-2-1zM5368 3585l14-36-41 8-2 9 17 17zM4867 1918l1-8-7-13-29 3 3 18zM5771 3307l16-5 7-8 4-15-9-9-9 4-14 26zM4363 3979l2 25 2 3 4 2 33-20-2-5-26-11zM5783 1584l15-5 2-3-7-14-20-2-7 5 2 4zM4431 3927l1 26 14 12 9-6 14-21 0-12zM4229 1718l13 7 11 22 12-9-19-33zM6099 3663l23 8 6-9-8-24-19 8zM5539 2984l0-9-15-6-7 9 5 9zM5372 879l-18-33-12 4-12 22 13 12zM5776 3736l-11-11-18 2-6 5 5 20 9 7zM4269 2003l-30-12-7 2-6 13 6 14 28 15zM4822 2480l20-12-1-14-24-17-8 22zM5074 2307l2-46-35-9-12 25zM5084 2488l-13-1-11 24 9 14 8 2 6-7 6-19zM4944 3682l5 5 33-14 0-1-29-28zM4785 2385l0-1-27-16-13 6 2 13 10 12zM5215 4077l8 5 35-2 9-7-8-26-14-3-21 14zM6497 2115l9 4 12-11-1-26-32 19zM6126 2667l7-14-23-24-9 21 6 13zM5052 3000l-2-1-2 0-4 25 3 6 9 2 7-11zM4262 2898l7-8-7-22-25 13 0 8 12 10zM4832 4043l28-10 6-4 0-2-30-9-10 10 1 9zM6368 1841l10 33 4-1 15-10-10-33-17 7zM4906 3899l0-4-21-21-6-1-7 7 14 45 6-3zM5016 2501l-6 19 33 22 26-17-9-14-31-16zM4042 2049l-29 3-10 24 29 14 16-5 0-30zM5307 4060l19 3 2 0 19-17-20-11-19 7-2 2zM4817 1478l19-12-10-10-10 2-1 18zM4589 3988l-3-2-15 0-12 9 22 13 8-3 2-11zM4910 1628l-17-13-26-4-6 6-5 12 13 21 37-13zM4951 2685l3-5-5-41-19 10-4 14zM5098 3022l-3 7 26 11-5-25-6-3-2 1zM5003 3877l32 15 1-1-2-25-14-5zM4189 3252l30 22-6-38-16-9zM5163 3782l-18-9-15 11 0 13 12 13 13 3 10-15zM5133 3966l4-23-3-8-24 24 8 9zM4588 2806l-6 21 0 1 35-13-1-16-6-5zM4339 3187l-29 6-3 13 1 2 35-9zM4398 3155l12 13 8 0 15-10 2-3-17-15-1 0zM4790 3996l2 25 2 0 19-4 3-23-23 0zM4166 2831l19-2 14-16-5-10-37 2-7 11 4 7zM4821 3834l1-15-12-17-17-3-20 24 2 19zM6233 1355l0-5-30-48-52-4-5 28 20 30 59 11 5-4zM5554 2502l-3-1-13-1-14 5 0 28 3 2 26-10zM4552 1180l8-3-4-37-14-11-6 1-16 26 29 24zM5385 2916l8-4-11-48-21 9-2 16 12 26 2 1zM4728 3266l11-13 0-12-11-19-11-1-17 27 16 15zM5702 2951l5 15 24 1 4-26-4-6-20 5zM5113 3587l13-12 2-9-11-23-10-2-18 16 21 30zM6102 920l-30-26-5 54 32-2 4-6zM5911 3613l-1-19-4-6-28 12 4 11 19 10zM5140 1128l-30 2-5 22 15 12 24-16zM4073 3128l11 11 19-26-11-19-12-3zM4809 1647l-4-12-6-2-18 15 14 21zM5787 1820l-80 19-1 18 24 21 55 18 22-20 0-44zM5085 1174l7-16-6-7-24-2-2 1 17 24zM4831 1766l-5 4 10 44 31-20 5-11-4-17zM4246 1705l5-7-3-9-11-12-8-1-14 3-5 3-3 23 22 13zM6518 2156l28 6 2-3-3-18-23 1-1 1zM4063 2024l11 10 16-4 7-9-2-20-11-16-13 2zM6122 1124l-23-16-32 48 38 26 5 0zM4245 2791l5-29-4-6-12-3-15 30 12 14zM4515 2960l1-20-3-4-2 1-9 10 10 12zM6415 1707l17-25-7-12-7 0-35 23-2 11 1 0zM6112 4092l25-1-3-6-18-15-8 17zM4472 1158l1-20-3-5-8-3-5 1-20 25 3 9 7 3zM5083 2367l-7-1-16 14-3 10 13 17 13-11 4-23zM5778 3658l16 22 13-17-22-10zM5425 1817l19-28-10-31-4-5-14-4-14 18-6 44 3 5 21 3zM6339 1963l4-8-1-5-8-9-25-1-1 1-2 16 13 15zM5203 3327l15 18 26-19 2-10-30-8zM4410 3168l-8 25 3 5 26-4-13-26zM5173 2506l-16-11-12 26 6 6 16-5zM6024 2476l-11-8-31 13 3 5 41 18 1-1zM4540 3044l-9 7-3 4 0 2 43 27 11-10 0-18zM5842 2565l26-5 0-26-8-6-28 4 9 33zM6257 1451l-40-4 0 2 19 56 23-5 8-24zM5978 3478l-1-6-28-5-2 37 4 9 18-7zM4916 2910l17 20 9-11-2-18-16-7-8 3zM5758 1047l26 7 3-42-22 7-8 26zM4025 3006l-11-18-31-5 35 35zM5490 4081l32-19 0-9-24-17-16 5-6 27 9 12zM5340 2105l4-8-2-12-38 6-10 15 3 2zM4410 1644l-15 16 2 26 34 23 24-11 6-12-12-45zM4133 2736l5 11 10 4 9-4 1-26-1-1-13 3zM5119 3184l7 21 18-6 7-23-12-10-1 0zM4999 3315l-11-6-33 15 1 15 47-10zM5832 3345l-19 2 1 2 8 11 20 4 8-6zM5127 2172l-51 8 10 33 19 16zM5067 3650l34 4 2-19-37-5-1 0zM5449 1970l-26 8-3 13 16 1 18-17zM4760 2663l-4-1-11 13-3 22 29 10 2-30zM4569 3019l-18 3-11 22 42 12 15-12zM4476 2266l40-9-9-17-31-3zM5928 2214l11-1 8-24-2-3-27-10-15 9-5 16zM5020 1765l0-14-23-11-7 29 15 6zM4521 1630l22-2 16-39-2-8-32-3-32 31zM4409 3794l-8 6 6 23 16-6 3-7zM6314 1137l-72 6 11 21 65 33 13-20 2-27zM4864 1569l29-13 1-9-14-19-10 3zM5666 2829l18-11-9-24-16 24 0 1zM4573 3699l-6-17-22 7 0 5 20 12 5-3zM4893 2737l-17-6-23 17 8 13 23-2zM5433 3507l29 22 7-3 5-23-22-23-16 3zM6254 3456l2-5-11-13-19-2-6 5 13 17zM5379 1258l31 2 9-27-7-7-33 9-7 10zM4531 3568l26 6 1-8-16-22-11 5zM5103 3634l0 1-2 19 1 1 23 8 23-18-4-16-32 0zM4643 2225l17-7 1-37-1 0-31 31zM4829 3322l2 1 51 2 2-7-9-34-43-11-15 19zM5477 3369l-28 12 8 15 22 0zM4766 2288l32 21 7-25-20-20zM5101 882l-1 6 15 21 14 3 19-17-25-31zM5532 2318l21 16 1-1-1-37-2-2-5 0-12 8zM4540 3827l20 3 12-15-27-2zM5887 4024l16 11 13-9-4-17-21 8zM4823 882l2 18 2 12 9-9zM4918 4039l-15 20 13 21 17-9 6-25-9-7-3-1zM4815 2682l12-10 1-3-9-19-19-3-9 9-2 14 18 14zM4388 2796l10 11 7 1 15-26-2-8-28-3zM4090 2951l-19 28 1 1 14 4 15-19-9-14zM5540 1908l-14 0-4 15 12 4 12-10zM5571 3692l-18 29 1 9 6 8 17-3 9-9-2-33zM5164 3174l13-13-28-31-1 0-9 36 12 10zM5878 3217l6-7-5-15-26-7-17 13 18 22zM5220 3032l15 18 8 0 10-20-30-12zM4545 3694l-4 8 12 17 9-5 3-8zM6135 2448l-10-11-5 0-5 23 6 5 3 0 5-4 5-7zM5573 4134l-1-13-9-8-26 26 29 5zM6600 2070l0-3-25-51-26 22-7 30 14 9 23 4zM4927 3706l-30 22 0 4 40 1-6-27zM5708 4085l4-18-23-8-2 0-7 10 15 23zM5444 3020l10-5-6-21-4-1-7 8 2 16zM4519 1215l15-29-19-2-7 25zM5150 3991l-10-2-17 6 1 1 19 23 14-4zM4365 4004l-2-25-4-3-25 2-1 5-2 18zM5427 3112l-24 4-4 14 8 13 11-4 15-19-3-6zM4793 3994l23 0 4-4-8-33-5-2-14 13zM4894 2400l-38 5 15 23 29-3 3-4zM5593 4137l13 5 10-9-18-18-2 2zM6000 3529l26-12 0-1-9-29-19 8-4 21zM4539 1822l46 18 14-18-3-20-26-10-27 23zM6119 4033l-20-25-12-2-11 13 13 17 29-2zM4728 2650l24 5 5-22-8-6-28 9zM5927 4056l26 9 10-5-3-26-30 3zM4990 4070l7-12-1-9-12-3-10 17 10 7zM4967 673l9 8 12-1 12-10-8-16-26-9zM4917 3860l0-1-32 15 21 21 22-13zM6032 3797l6-11-23-17-7 11 0 1zM5178 1406l20-26-2-9-39 11-4 9zM5359 841l32 10 5-7-6-39-26 13zM5808 4070l-28 11 0 13 18 23 2 0 26-10-2-14-6-15zM4220 3075l-15 6 16 15 13-3zM5877 882l-4 27 3 3 30-3 12-18-38-10zM4642 1295l-13 8-3 17 30 12 16-9-19-30zM4650 3969l17-13 1-1-29-16-3 2 0 19zM4967 4027l1 0 39-18 1-5-32-17-14 32zM4450 2930l-9-2-12 17 8 9 16-7zM4629 2212l31-31-5-3-54-3-6 13 2 4 21 21zM5094 848l-15 10 1 5 21 19 22-18zM4789 1243l-13-3-29 22 5 15 31-6 11-18zM5643 1319l51 3 21-51-25-28-52 12zM4647 3184l2-3 0-4-30-15-31 7-1 4 19 33 13-1 1-1zM6230 2426l4 22 32-12 0-10-13-13zM4778 1698l13 28 34-5 13-19 0-1-28-23-14 1zM5112 2059l19 5 18-9-33-27-13 8zM5042 2041l23-48-8-3-42 19-3 23zM5019 644l14 3 4-2 6-17-17-6-10 16zM5284 1460l12-9 2-10-13-6-7 5 4 20zM5239 3461l0-7-16-17-7-3-19 18 2 15 27 9zM5935 1978l50 1 0-1-15-29-41-1zM5299 2777l-24-24-16 3-3 5-1 24 16 18 23-8 7-6zM6225 1641l17-8-31-54-24-1-1 0-8 41 13 16zM4553 3719l-3 7 30 14-4-12-14-14zM4907 3177l12 17 13-1 5-29-4-3-1 0-22 0zM4918 1375l18-35-56-2-5 4 3 27 7 6zM4913 3835l22-12 1-2-22-27-13 3-1 13zM4702 3197l-22 13-4 7 18 31 6 0 17-27zM6142 2325l-23-36-29 20-1 7 19 29 1 0 33-16zM6334 3507l3 1 13-1 3-6-7-19-20-3-10 5zM6193 1942l3 19 8 2 31-31 2-5-29-2zM4410 3131l-10-5-9 9 3 19 4 1 19-15zM4981 1814l-2 8 15 28 17 3 8-26-2-13-5-8zM5753 3379l14-20-17-24-4 0-21 32 1 2zM4839 756l0-1-19-17-45 37 3 10zM4467 3172l-2 23 5 2 18-23-8-9zM5534 3951l-20 27 17 25 12 2 13-28 0-15-6-5zM4967 2082l31-16-4-26-26 4zM5925 3978l-19-3-12 16 18 17 13-21zM4650 2657l-1-16-15-11-22 19 10 16 20 0zM6027 4021l-1 1 14 51 22-1 10-11-19-37zM5586 2365l23 9 19-3 1-23-6-4-35 14zM5473 2339l-15-6-10 28 33 4zM4705 2708l-25 1 10 25 13 1 11-18zM5123 864l25 31 1 0 20-33-25-18-3 0-9 5zM5835 3080l1-12-2-3-31 22 26 4 1 0zM4048 2349l11 7 29-15 1-2-6-24-20-3-16 8-2 1zM5294 4147l-24 7-3 4 9 12 22 5 2-8 10-1zM5391 2653l-18-1 3 11 17 3zM5847 3423l8 2 15-15-15-8-11 1zM5050 3141l-1-17-33-15-3 1 11 34zM5177 3279l16-8 6-18-40 1zM6379 2311l-1 8 22 10 5-5 3-15-1-2zM5154 1733l-11-14-41 20-2 19 50 6 2-4zM6339 1575l43 4 9-22-59-12-5 8zM5566 2722l-12 4-9 18 1 5 22 6 10-14-3-14zM5462 1621l15-6 7-14-12-39-10-3-29 27-1 13zM6109 2691l17-23 0-1-19-4-13 16zM6448 2159l17 21 16-29-23-8zM6288 952l23 40 25-32-36-18-3-4zM5115 909l-15-21-29 14-2 13 22 13zM5036 3766l4-6-14-30-5 1-7 5-7 24zM5585 2321l1-15-33-10 1 37 23-2zM4304 1722l2-31-13-12-24 20 19 23zM5934 2724l-26-11-12 31 33-4zM4607 4050l0 3 6 12 38-15-2-5-26-8zM4778 3134l-3 3 0 2 9 8 12-5 3-9zM6306 2271l38-12 0-14-18-15-29 11zM5392 2545l10 3 24-24 0-6-13-7-7 1-19 29zM5485 3159l5-3 3-7-10-21-7-2-6 7-3 18zM4324 3006l-23 4-6 12 8 18 12 1zM6041 2663l-10 16 1 1 20 12 18-22zM5445 2843l-10 4-15 22 11 13 10 1 18-25-12-15zM5020 3271l23-20-4-11-16-6-25 3-2 12 18 23zM5301 2789l-7 6 6 36 18-2 6-21-16-16zM5150 3900l0 2 41 15 3-32-16-9-27 22zM5125 3205l-1 9 9 13 14 3 7-24-10-7-18 6zM6030 1817l23 14 3 1 10-25-28-7-8 16zM5041 2389l-1 29 2 1 26-7 2-5-13-17zM5143 1398l3 22 22 22 5-2 10-23-5-11-25-15zM6476 1688l-3 3 10 47 4 7 40-5 6-40 8-27zM4997 2816l27-15 3-23-1-4-32-6-10 12zM5030 3820l19 16 12-26-26-3-2 1zM4694 1587l-7-9-56 13-5 19 26 21 4-1zM5099 2931l-2-6-13-10-7-2-15 26 18 13 13-3zM4531 3549l11-5 3-9-17-14-26-1-6 10 19 17zM5433 1352l9-1 21-27-1-8-6-7-43 8-3 4zM4805 2284l-7 25 3 9 9 6 20-18 2-5-11-18zM6370 2505l-36-2-2 1 3 16 17 21 15-8 6-2zM4822 2869l-5-20-5-3-26 9 0 18 30 2zM6034 3278l14-10 5-17-3-1-20 6-4 8 1 14zM5412 1226l-10-38-30 5 7 42zM5261 1580l5 7 46-13 2-32-18-14-7-2-29 12zM4470 2344l-3 16 25 14 18-50-3-4zM5324 2141l18-28-2-8-43 3 26 33zM5342 3018l6 3 12 1 12-11 1-12-16-15-12 1-5 7zM4431 1844l13 34 25-3 16-24-3-37-20-11zM4392 3286l-15 4-13 18 25 36 15-5 10-30-21-22zM4505 4102l-13 8 8 15 17-6zM4494 3966l-39-7-9 6 24 27 22-10zM5315 3605l-13-1-7 13 9 14 16 0 4-13-6-12zM6142 3750l32-5 6-9-3-3-31-10-7 8-2 11 2 5zM5631 3767l-5 5 0 14 22 11 9-19-5-11-12-4zM5716 1344l4 24 28 15 51-35-34-38zM5822 2791l-3-2-21 21 4 19 23 4zM5986 3240l-25-1 13 36 16 5 7-18zM4685 1844l-11-12-30 13-5 19 7 9 10 2 20-9zM5179 2990l8 10 13 0 4-10-14-15zM5536 2263l8-3 3-30-4-5-8 0-19 21zM6665 2227l9 31 29 2-3-27-9-18zM6017 2709l-16-13-14 19 11 24 20-26zM4980 2693l23-22-8-17-10-3-31 29-3 5zM3976 2299l31-17-11-15-30 4-9 26zM6410 1285l18-70-75 23-5 42zM4445 2237l-11 4 0 1 14 16 9-6 0-8zM4210 2673l-1 17 6 7 10 2 8-3 3-16-16-18zM4805 3636l-15-20-6 2-12 21 20 10 6-3zM5850 2187l-27-4-14 20 23 9 12-4zM5298 2402l4 2 19 0 9-21-1-1-21-5-11 18zM6137 2479l-2 5 23 13 7-2-12-25-3 1zM5577 2511l20-12-1-7-25-15-16 24zM4922 2180l8-4-7-28-2-1-13-1-4 10zM5762 2497l8-13-1-5-43-15-13 23 17 11zM5773 2617l1 19 3 5 11 1 16-12 0-16-29-2-1 1zM5918 1321l1 2 27 10 15-35-8-16zM4567 4069l5-9-8-23-3-2-14 0-12 9 3 14zM6121 3699l-5 10 1 4 22 18 7-8 2-17-2-2zM6168 3700l9 33 3 3 10-1 5-29-9-18zM4994 1256l-22 18-4 19 33 20 25-31-1-13zM5230 2881l-5 7 20 27 14 6 12-3-6-30-20-10zM5354 1089l16-8-32-46-22 8-1 28zM4194 2803l6-18-11-13-15 0-16 11-1 22zM4462 2323l-14-3-11 5-1 2 7 31 15 4 9-2 3-16zM3995 2349l-37 2 0 4 16 49 12 3 20-11 4-6 3-21zM5289 3617l-11 11 12 18 1-1 13-14-9-14zM5999 3358l19 24 14-5 7-5 10-28-5-8-33 0zM4707 1461l-3-30-11 0-13 15 3 8zM5665 2850l-14 5 12 21 13 0 1-3zM5223 3563l-7 11 4 7 9 3 7-11zM5072 1041l-17-12-31 25 22 12 28-14zM4619 2423l6-29 0-4-24-12-20 20 12 21 20 8zM5554 3162l-2 7 13 9 21-9-6-11-14-7zM4624 1349l-18 23 3 8 4 4 21 2 15-26zM5599 4175l1 0 18-15-12-9-16 8zM4374 3127l17-9-5-11-14 1zM5502 3600l-3-35-39 13-1 6 7 20 18 8 16-9zM4352 1994l-5 24 13 20 25 4 7-31zM5984 3763l3 5 18 11 3 1 7-11 2-7-7-10-17 0zM5162 3482l-1 1-7 6-4 13 13 11 11-5 2-3-1-16zM5330 3778l9 13 20-3 7-20-3-3-31 3zM5731 2935l10-20-15-25-30 9zM4753 3121l-14 6 21 27 15-15 0-2zM5957 1752l10-31-2-8-8-3-24 8-13 33 22 13zM4291 3279l-19 13-1 7 25 9 3-25zM5769 3660l9-2 7-5 6-12-19-12-9 27 0 2 3 2zM5131 2951l11 1 6-14-10-20-1 0-17 16 8 15zM5762 2092l-9-1-20 19 29 48 21-5 1 0 2-28zM5053 1478l-5-13-11-4-25 20 1 39 5 5 1 0 33-27zM4536 3626l41 8 1-1-1-31-17-17-1-1-33 24zM4082 3212l-5 33 28-4 5-26zM4999 3877l4 0 17-16-1-17-2-1-18 22zM4731 2188l22-21-27-27-12 8 4 35 4 5zM5839 3387l4 15 1 1 11-1 14-25-2-3zM4041 2647l-23-21-7 5-9 15 7 15 28-4 2-3zM4861 3227l-31 37 2 9 43 11 16-26-20-31-3-2zM5653 3542l0-1-1-18-26-5-1 10 21 14zM6342 1950l10-20-5-6-10 3-3 14zM5529 3618l-17 16-5 14 20 9 13-1 4-16-8-17zM6026 3517l21 27 16-1 7-12 3-16-11-18-36 19zM4741 2341l-5 16 5 15 4 2 13-6 15-17-1-1zM5948 780l-25-12-11 10 21 26zM5913 3764l-11-20-19-5-21 17-1 28 49-6zM5921 892l49-10 25-36-44-9-32 36-1 18zM4617 1778l36 9 11-47-16-20-40 36zM5115 1537l19-44-18-22-20 19-2 29zM5478 760l12 3 28 2-15-18-10-2zM4489 3682l-26-6-13 11 4 14 32-2 5-6zM5642 3297l5-14-4-10-19-4-16 22 14 17zM4812 3243l18 21 31-37-32-15zM4634 1386l1 2 26 5 6-4 1-5-14-23-3-1-2 0zM5684 2530l-15 20 1 7 7 8 19-5 6-16-7-8zM4674 2226l-6 0-9 19 16 8 5-1 4-11-5-10zM4822 1610l3 13 15 7 16-1 5-12-24-29zM5570 2161l-8-45-21 0-23 30 2 9 14 18 11 2zM5141 3438l-36 8 2 13 18 8 17-22zM4671 3553l-14-47-38 7-3 3-1 2 20 41 24 4zM5547 1944l-5 1 3 21 11 6 0-21zM5706 1746l-26 54-1 17 28 22 30-73-12-25zM4596 3714l-16 27 1 2 13 4 19-32zM6211 2339l-23-37-4 2-7 10 3 31 15 9zM5021 1612l20-19 1-17-38-18-3 2-2 49zM4351 2206l-23-21-5 2-12 26 1 3 15 9 22-5zM4910 2836l24-17-11-27-4-1-24 21 3 15 4 6zM4614 1897l19-4 13-20-7-9-18-2-16 7-5 20zM5571 2477l25 15 16-31-9-8-33 17zM5060 1717l34 10 7-28-14-12-38 8zM5130 3048l14-24-13-12-15 3 5 25 6 8zM5063 3194l1 23 20 14 6-2 4-32-4-8zM5197 2332l-21-18-17-1-4 27 30 23zM6101 2650l9-21 0-3-1 0-27 8 0 19zM5583 2985l-7 17 17 14 5-24zM5102 2960l17 12 3-1 9-20-3-2zM5457 3051l28-12-18-22-13-2-10 5 0 19zM5261 3945l3 5 26-7 0-21-9-1-19 9zM6131 2014l43 7 4-4 11-53-47-1-19 46zM4801 2754l-2-4-23-7-16 21 28 11zM5303 2665l7 16 2 2 2 0 18-6 2-2 8-13-10-15-21 5zM5141 2844l-2-2-17 1-10 18 5 9 17 1zM5742 3527l-17 4-5 12 6 14 12 6 6-7 3-13zM5141 3087l21-3 12-27-40-5zM5056 4001l12-8-8-36-21 5-9 12-1 14zM5673 4043l14 16 2 0 10-22-12-5zM4027 2608l-7 6-2 12 23 21 29-18-4-20-15-6zM5211 2249l9 19 26 9 2 0 12-14-1-12-33-6zM4758 1102l-4-19-18-11-19 28 4 24zM5511 2281l-3-27-27 7 8 25 19-1zM4596 1802l3 20 18 6 11-2 30-32-5-7-36-9zM4494 2677l-17 7 1 15 30 10 5-5zM6269 2547l-1-1-25 6 5 29 16 10 15-10zM4308 2095l13 15 1-1 21-32-6-9-4 1zM5422 3690l8-10-4-7-13-10-8-1-13 20 0 5 2 2zM4275 1103l-30 9 5 8 28-8zM4182 1146l13-1 35-18-5-8-35 15zM5606 3108l-32-13 5 35 8 4 20-5 2-6zM5370 1278l20 11 22-7 5-8-7-14-31-2zM6377 2497l20 11 16-6 4-19-18-6-19 6zM5619 1868l5-39-23-9-20 7-6 36 2 12 8 11 10 2zM4749 2310l-12 10 4 21 31 9 1-23zM5340 3807l23 13 5-17-9-15-20 3zM5534 1927l1 17 7 1 5-1 12-22-13-5zM5793 1562l7 14 12 0 8-18-2-4-4-5-15 4-1 1zM6164 1729l30-5 7-10-14-17-24 6-10 11zM5208 817l17 7 36-16-11-24-25-3-21 21zM5408 2161l0-8-24-8-1 1-4 26 14 4zM4576 1929l8-32-25-20-28 26 42 28zM5907 2711l1 2 26 11 3-3 0-20-11-12-12 6zM4750 1792l-5-13-40 11 18 31 13-8zM5190 3805l8-7 1-14-14-14-22 12 2 16zM5172 2465l0-8-8-14-22 7 9 31 4 2 6-2zM4924 990l20-8-8-22-8-3-10 8zM4928 957l-8-17-26-2-5 15 6 15 5 2 18-5zM5813 2020l-12-19-33 16 33 26 7-4zM5331 4143l-6-13-21-4-10 21 16 19 18-3zM4603 2339l-14 7-3 10 14 19 22-24-8-12zM4735 1250l-19 4-8 25 20 14 11 3 7-2 6-17-5-15zM5087 3106l1-7-12-14-23 2-5 12 7 15zM6107 3319l-18 9-11 17 10 14 25-6 1-33zM5040 3531l9 8 19 0 0-12-22-5zM3995 2436l27-12-16-28-20 11zM5494 3037l8-21-16-37-1-1-10 4-1 1-7 34 18 22 2 0zM5272 3881l31 14 19-12 0-13-6-5-41 2zM5021 3731l5-1 11-10 3-9-8-10-26 1-2 6zM5248 1020l-16 1-15 21 1 9 9 2 28-7-1-20zM5914 2695l12-6 3-12-26-20-11 27zM5100 1758l-6 10 0 14 20 28 34 0 7-9-5-37zM5640 3763l12 4 16-9 4-32-27-1zM5386 3929l-18 22 0 5 39 20 4-1 6-8-8-37zM4760 3857l17 31 24 1 4-8-37-31-3 2zM5424 2674l12-7 2-13-9-4-20 8-1 8 1 2zM4996 3637l12-1 7-10-7-24-31 13 1 10zM5308 2377l-8-8-17 15 14 11zM5767 2786l-1 22 16 6 16-4 21-21-2-4zM5328 3595l-1-22-15 1 3 31 3 1zM5081 3386l1 22 1 1 35-7 1-1-7-20-10-6zM6051 2006l-31 40 5 26 6 2 52-6 40-59-39-15zM5275 2753l24 24 24-21-21-29-4-1zM4110 2591l-30 0-14 18 4 20 4 3 42-5 0-33zM6653 2202l4 20 8 5 26-12-13-26zM4706 2479l-10-6-6 2-7 24 19 5 3-1zM5351 3523l-12 30 2 4 41-8 3-3-8-15zM5953 2627l-19 0-4 17 17 9zM4008 2800l11 24 11-1 15-10 3-9-1-2-29-8zM6217 2484l-6 6-6 26 11 13 3 2 32-26-29-24zM4617 2815l7 6 16-9 0-17-24 4zM5285 3132l10 25 14-3 22-26-15-8zM4098 2045l19-9-20-15-7 9zM5387 2598l2-11-7-8-32 0-2 7 21 18zM4955 895l15 8 16-8-3-10-12-7-14 11zM4928 3781l30-18-19-18-16 19zM5223 3437l20-17-4-11-19-4-11 12 7 17zM4661 2282l35-15-16-15-5 1-16 28zM4831 3750l-3-5-39-7 0 18 27 19 7-3zM6405 2324l27 10 7-4-29-21-2 0zM5579 2824l0 8 5 5 20 2 4-14-17-12zM5190 3212l-3 20 14 19 12-3-3-35zM5721 3149l22-1 5-11-3-6-17-8-11 19zM4959 3386l16 0 18-25-37-21-8 9zM4717 3686l-1-1-20-10-3 1-7 28 1 0 15 5 6-2zM6251 2505l22 11 4-2 4-40-7-5-15 5zM5797 3215l7 1 23-15-6-13-17-9-11 3-4 7zM6099 946l10 32 26 0 11-24-7-12-36-2zM5607 3954l18 33 24-23-29-22zM4963 3278l-13 38 5 8 33-15-1-19-21-15zM5387 2368l17-28-43-4 0 2zM6004 3873l28 18 11-6-10-10 22-17-7-8-11-1-28 12zM5631 4130l-10 3-2 26 24-20zM6130 3540l15-17-34-17-6 6 5 25 12 5zM5716 2035l-37 18-6 23 9 13 1 1 2 0 41-46zM4822 1610l15-22 0-2-33-4 2 20zM5593 4137l3-20-24 4 1 13 15 8zM4970 2328l-5-19-12 6 5 19zM5041 588l-6-11-29-3-8 19 4 5 15 5zM5608 2825l11-8 1-7-24-10-5 13zM4747 1169l-33 2 18 38 11 4 4-1 4-4 8-22zM5673 3420l9-22-17-11-23 25 2 2 26 8zM5291 3319l-4 20 18 7 5-17-10-10zM5934 3896l-16-15-13 7 6 24 23-9zM4684 2548l0 14 17 4 7-7-4-14zM5873 2202l-8 15 7 7 10 2 15-13 0-11zM4701 2081l4 17 26-21-7-10zM5329 2464l-2-8-36-6-9 6 12 27 7 1 25-11zM5813 2869l-16 1 1 24 31 8 2-18zM5263 3640l8 17 10 1 9-12-12-18-9-1zM6242 2208l8-4 19-50-64 13 11 33 19 8zM5600 2501l1 1 32 5 6-3-6-16zM4659 2245l9-19-8-8-17 7 1 24zM5023 3012l21 12 4-25-1-1zM6230 2047l-38 0-12 37 4 8 56-1zM5099 3915l17-35-4-11-40 8-1 0 13 44zM4960 2756l-27-2 10 30 14 2zM5648 2799l11 19 16-24 0-4-8-4zM5771 3814l-32-16-13 4 0 4 2 3 35 18 4-2 4-7zM4739 3127l-7 0-14 12 0 3 8 15 31 24 3-1 1-3-1-23zM5016 809l-13 2-18 26 1 6 0 1 9 5 3-1 23-26zM4831 1438l-13-3-4 3-4 7 0 7 6 6 10-2 6-17zM5442 4071l-5 5 6 24 21-4-7-21-13-5zM5330 911l14-12-1-15-13-12-13 3-8 9zM5609 2921l-1-21-6 1-6 21zM4070 2978l1 1 19-28-17-8-8 16zM5338 1940l23 35 7 0 15-22-19-28-5-2zM5199 2477l2 10 5 5 6-2 4-6-3-12-10-3zM5925 3709l33 13 4-6 5-33-17-9zM5285 2926l4 22 33-1 8-18-2-7zM4702 3461l23 23 31-7 3-9-11-35-42 18zM5011 2000l4 9 42-19-24-14-6 2zM6213 2575l9 23 26-17-5-29-13-5zM5353 2740l-2-9-29-12-20 8 21 29 21 4zM4005 2756l8-32-6-5-16 32zM6095 1361l-62-8-6 13-3 29 11 34 65-47zM5851 874l-15 11 4 26 1 1 32-3 4-27zM5918 3881l3-7-8-17-27 19 1 4 18 8zM5682 3858l-9-22-6-1-25 31 30 16 2-1zM5512 716l-32-3 0 4 14 19 15-10zM5164 4110l-14 21 8 12 6 1 19-27-15-9zM5832 3978l-24-8 8 30 19-11 2-4zM5200 3000l3 5 13 8 6 1 4-7-3-21-19 4zM6151 2627l2 17 17 14 30-25 9-6-23-15zM4568 3491l2 6 46 19 3-3-10-39-32 5zM4930 1253l-36-10-6 8 1 25 39-2 4-21zM5832 3345l18-18-36-2-5 6-3 9 7 7zM4574 1377l-6-17-18-12-9 6 3 30 26 1zM5846 3006l-7 3-2 6 12 27 17 1 2-24zM5440 1101l-48-17-3 50 49 9zM5857 3874l22-6-3-26-22 8-10 19 0 1zM5049 2917l22-9-5-17-2-2-22-7-17 8 1 11zM4682 3118l-27-4-19 12 27 38 2 0zM4144 2723l13-3-4-26-27 14zM5369 2685l7-12 0-10-3-11-2-2-23 13 18 23zM4703 1368l3 7 15 5 6-7-2-9-17-2-4 4zM5450 3155l-35 7 2 20 20 3 14-23 0-6zM4527 3165l-16-12-9 4 0 4 12 12 16-2zM5430 3337l3-11-23-9-4 22zM5011 1853l-17-3-12 13 4 19 20 9 19-14-2-12zM4487 1609l-17-37-24-1-12 26 24 31 14-4zM4978 3142l-11 1-9 6-7 13 15 12 15-4 9-20zM4773 3579l-21 28 32 11 6-2 3-7-1-25-7-6-2-1zM4558 3566l27-25-24-16-16 10-3 9zM6420 2074l17-25-10-24-5-2-37 3-2 28zM6113 3584l3-9-1-1-17-16-25 4-1 11 21 23zM4713 2881l16 27 12-2 18-18-21-23-16 5zM6062 4072l-22 1-8 15 35 12 1 1-3-24zM4480 2448l1-2 3-31-36-10-34 12-3 8 12 32 14 9zM5551 1260l11-30-25-6-21 13 6 28 24-2zM5215 2670l-13-32-26 13 34 20zM5156 2973l-14 18 18 11 10-11-9-17zM5766 1726l37 18 13-5-18-51-28 7-4 4zM5463 1324l15 15 39-3 1 0 0-3-22-29-34 12zM6487 1799l-13 35 33 14 29-34zM5701 3182l-10 14 8 9 14-4 1-14zM4054 2452l0 3 11 25 21 0 15-17 0-6-8-7-27-6zM4179 2423l-2-11-13-13-3 1-11 31 5 3zM4620 3074l-18 11-3 19 8 15 14 1 9-32-7-12zM5749 2628l4 10 21-2-1-19zM4689 1177l2-3-24-24-25 33-2 11zM4397 3120l-6-2-17 9 17 8 9-9zM5185 3518l2 7 15 0 2-24-2 0zM4015 2570l12 38 24-5-12-43-16 4zM5270 2654l0-15-28-5-5 32 15-1zM5649 3345l13 9 16-6 18-20-15-20-23 4-10 24zM4522 1438l11 17 12-1 10-19-11-16zM4045 2779l24-12-15-28-26 29 1 1zM4566 3858l25-30-15-14-4 1-12 15-2 25zM5988 2439l23-1 4-15-10-16-9-1-15 14zM4817 3292l15-19-2-9-18-21-18-3-19 26 0 6 27 20zM6108 2345l-19-29-14 19 12 27 15-3zM6349 1661l0-3-17-16-3 0-22 18 1 26 26 10zM4986 844l-19 21 4 13 12 7 14-15-2-21zM4564 2771l2 8 12 6 23-8-12-20zM4355 2985l5 14 19 10 8-2 8-15-7-12-15-6-15 1zM4748 2856l3-1 4-4 8-25-1-1-23 3-4 7zM5951 3513l-4-9-26-11-7 31 37-10zM5799 1553l-5-15-13-3-3 1 0 5 20 13zM5157 817l0 6 36 11 15-17-4-15-13-10-14 2-14 6zM4456 3621l-20 10 9 17 19 5 7-4-1-22zM6013 1250l15-20-17-42-82-3-34 34 2 6 16 17 38 26zM4389 2239l-7 19 39 8 2-7-21-24zM5396 2123l25 8 5-2 9-40-40 12zM6107 2199l29-12 9-32-5-7-35 1-17 25zM4495 3654l4 4 26 2 11-34-10-18-14-5-13 10zM5177 2096l28 10 37-42-9-15-66-14-11 18zM5832 2532l-15 14 6 19 18 0zM5145 2196l-17-24-1 0-22 57 5 8 9-2zM5292 3260l2 27 21 5 20-24-30-14-4 0zM5927 2466l-2 2 2 22 8 16 18 5 1-1 22-27zM5905 834l12-14-29-22-16 18 7 14zM5553 1604l-2-30-7-1-26 20 8 8zM5660 1176l-32 17-8 47 18 15 52-12 15-38-39-29zM5981 2481l-5 2-22 27 28 21 12-11-9-34-3-5zM5477 1203l-11-2-14 8-10 22 18 18 13-4 12-23zM4656 2748l8-5 2-24-26-2-4 10zM3958 2486l1-3-14-11-35 15 10 25zM5416 3381l-25-15-6 13 10 11 18-4zM5861 2182l28-7-2-15-27-11-5 5 5 27zM6404 1414l6-27-5-10-32-1-8 5 0 6 32 33zM5042 2882l22 7 8-41-20 0zM4616 2022l34 13 4-1 15-43-1-3-23-10-26 16zM5133 1041l12-21-13-19-22 13-6 9 2 3zM4851 3186l12 5 17-12-1-9-19-18-2 1zM6417 2239l-16 2-11 17 12 18 17-23zM4573 1071l-53-9 0 8 49 8zM4516 1115l20 15 6-1 12-23-46-5zM6564 1876l27-10-16-33-7-41-30 22 12 56 10 5zM6077 2555l0 1 31 2-4-16-12 0zM4910 3843l3-8-13-25-18 28zM5035 1125l-12-4 1 32 1 1 16-6zM4708 2559l1 0 11 0 15-8-9-21-21 11-1 4zM4651 3820l-37 26 21 18 31-15-6-25zM4084 2665l-10-33-4-3-29 18-2 7 24 22 15-4zM4795 1140l-8-6-22 12 19 28 2 0 14-7zM4724 3093l8 34 7 0 14-6 9-11-16-28zM5547 2376l-6-22-27-8-6 3-16 26 0 3 2 3 20 9zM5776 2377l-17 23 30 26 11-30zM5867 3374l2 3 5 3 17 5 16-7 2-6-23-23-21 12zM4336 1807l17 15 38-53-46-20-1 0zM5510 2822l5 2-2-37-7-1-12 7zM4883 977l12-9-6-15-28 1-1 5 1 2zM5471 4139l4-19-10-5-5 2-3 5-4 10 9 10zM5383 3234l-6 3-2 16 22 12 9-21-7-7zM5559 1922l2 0 23-36-41 11-3 11 6 9zM5029 2981l-23 4-2 3 9 24 10 0 24-14-7-12zM4237 2221l-8 7 0 2 12 10 40 0-9-23-6-3zM4599 3981l-4-17-4-3-1 0-4 4 0 21 3 2zM5052 1014l22-12-13-29-29 0-4 8 3 21zM5176 2422l-21-18-30 29 9 13 8 4 22-7zM5463 1925l-30-10 1 34 7 2 23-16zM4649 1530l19-48-5-10-19-8-14 68zM4366 1905l-26-7-26 15 33 28zM6179 720l-2-14-34-33-12 7 3 30 12 15 26 0zM6245 3695l-14 5-3 8 30 2 2-6zM4075 2045l-1-11-11-10-16 8-5 17 6 6 22 0zM6099 4008l20 25 11-10-5-6 3-19zM5893 3084l-14-18-15 9-4 20 29 14zM5524 1969l-16-9-15 25 0 3 26 12 7-18zM5652 3963l-3 1-24 23-1 8 33 9 8-33zM4981 2225l1 10 24-1 0-35-3-4-2 0zM5838 2732l3 23 23 4 13-15-27-21zM5291 893l-3 32 7 8 26-13-27-28zM4540 3864l16-9-19-25-4 0-8 13zM5554 3287l29-9-3-22-30-2-12 11zM5158 984l16 13 14-3 9-17-29-30-2 1zM5806 2246l-7-5-19 12 0 37 27 9zM6105 2108l-7-27-15-13-52 6 32 45 32 4zM4693 3676l-21-14-7 11 3 19 13 11 5 1zM4125 2956l13 2 1-13-10-5zM4040 2865l-6-7-24-5 1 31 10 3 11-5zM4982 3464l-20-3-6 24 10 5 10-2zM5932 1051l-58-17-1 0-10 16 0 45 47 11zM4952 1254l-11-4-9 3-4 21 4 13 34 7 2-1 4-19zM5855 2600l19-29-2-7-4-4-26 5-4 33zM4836 1835l59-1-28-40-31 20-2 3zM5124 1203l-1-16-2-3-30 0-5 19 13 19 1 1zM5283 2384l-3 0-13 15 13 9 18-6-1-7zM5853 2838l-1 28 32 13 5-1-6-11-8-25zM5982 3790l-21 0-8 13 16 26 20-30-5-8zM5933 1982l9 29 18 13 26-4-1-41-50-1zM5626 2698l-29-5-5 21 21 17 13-27zM5176 3505l25-5-9-16-17 5zM4343 1310l28-19 2-26-24-18-17 23 0 29 1 1 1 10zM5029 3988l1-14-27-13-6 4 11 39zM6089 759l19-17-14-29-32 2 0 5 9 37zM4277 2891l-8-1-7 8 7 25 16-13 0-11zM5612 2461l-16 31 1 7 3 2 33-13 2-24zM5910 3305l-1-25-22-6-1 1-9 25 4 16 21-2zM4495 1252l-9-30-27-2 2 29 6 4 26 1zM4897 3207l7 0 15-13-12-17-23 5zM5889 4053l9 5 5-23-16-11-7 4zM5099 1248l32 1 6-12-36-12zM5300 1100l1 2 43 3 10-16-39-18-19 15zM4891 693l-1 37 4 5 9 1 22-9 0-46-5-1zM5348 2586l2-7-5-17-7-5-30-1-13 8-9 14 13 21 38 0zM6459 1908l3-18-7-14-30 5-11 22-1 8 18 12 22-5zM4404 3339l-15 5-13 33 7 6 29-5 12-26-4-7zM4640 2795l0 17 4 3 12 0 7-15-13-8-8 1zM4870 3602l-17 6-6 18 29 24 10-1 3-12-15-33zM4238 2942l-22-6 0 1 14 20 10-3zM5374 3470l27-18-18-17-15 6-6 23zM4414 2417l-6-24-16-17-26-1-19 17 40 34 24-1zM5756 3391l-3-12-27-10-5 23 3 7 2 0zM6079 2697l-21 7 5 16 25-8zM5461 753l19-36 0-4-5-1-25 20 9 21zM4380 1470l-13 34 5 7 50-14-17-32zM6079 2697l9 15 12-4 11-8-2-9-15-12-14 0zM4946 3350l2-1 8-9 0-1-1-15-5-8-27-11-39 13-2 7 3 14zM5301 968l20 26 5 1 5-3 15-27-44-3zM5580 1942l28 1 9-15-22-40-10-2-1 0-23 36zM6393 2210l-8 16 16 15 16-2 5-8 0-1-3-12zM4891 3258l-16 26 9 34 39-13 3-31-14-19zM6358 2076l1 29 7 6 3 2 15-3 12-13-20-32zM5510 3844l0-29-16 0-6 9 9 24 7 3zM5237 1097l-33-25-14 34 4 2 36 1zM5192 1184l6 10 22 4 8-11-15-17zM4039 2654l-2 3-4 19 15 20 15-20zM6313 2554l-6-5-38-2 10 34 21-14 16-8zM4403 2921l-5 26 5 6 3 0 16-9-1-12-14-12-3 0zM4727 4036l-11 15 1-1 18 12 7-10 0-4zM4214 2963l4 5 12-11-14-20-7 11zM5696 3578l-3 23 17 2 4-9-4-16-3-4zM5499 4202l-6-20-11-2-16 7-7 20 8 10 24 4zM4493 1517l-42-13-24 44 19 23 24 1 24-28 2-23zM5418 3214l-9-12-13 7 6 19zM5716 2413l-6-3-11 24 3 12 19 5 7-7 1-5zM5345 2523l26-2 0-5-12-23-1 0-17 9zM6090 3606l3-10-21-23-11 7-2 5 1 17 13 11 1 0 12-3zM5476 3786l12 2-2-24-22 0-1 2 0 3zM5157 3253l-3 2 1 33 13 5 9-14-18-25zM4849 1672l18-11 2-11-13-21-16 1-15 27 2 4zM5417 3081l13 7 3-1 2-23-21 12zM5840 1809l-2 8 32 17 24-14 1-32-14-19zM4821 1290l-7 6 6 39 8 4 28-8-7-42-21-1zM4691 2822l11-7-8-14-15-9-9 8 5 17zM5789 2426l-30-26-8 2-4 7 0 4 9 20 37 5zM6013 2468l6-20-8-10-23 1-11 15 4 27 1 0zM4851 3045l-8 6 17 23 33-18 1-11zM4786 2154l2-7 0-2-45-26-2 0-5 2-10 19 27 27 23-1zM5081 2628l12-11-12-27-25 8-4 4zM5276 2691l-18 1-10 9-2 17 39-5-7-21zM4944 3889l13-16 2-12-24-9-18 8 11 22 12 7zM4870 668l-5 12 26 13 29-13-14-26zM4886 3699l0-1 9-37-9-12-10 1-17 10-13 20 5 17zM4373 4077l13 8 20-14-2-4-24-6zM5168 947l29 30 12-4 8-14-28-33-5-1zM5189 3109l9-12-7-9-21 1zM6048 3268l-14 10 11 6 10-6zM5331 926l11-1 12-17-10-9-14 12-3 9zM6326 3479l20 3 8-9-17-14zM4972 3957l7 8 18 0 6-4 6-20-12-9-6 1zM5438 3409l15 0 4-13-8-15-7-3-5 2-5 20zM4573 3448l21-3-10-32-10 1-23 13 9 11zM5422 3019l-2 21 24-1 0-19-5-3z"/>
<path fill="#7b94c0" d="M5113 699l-30 17 24 10 9-18zM5288 1793l-2 9 45 47 17-5 5-53-4-9-8-6zM5747 3521l-8-21-32 14 18 17 17-4zM4650 2035l-34-13-9 3-7 19 9 27 9 8 10 1zM5442 1398l3 40 44-9 7-26-17-15-35 8zM4730 3360l6 17 17 0 8-16-7-16zM4782 3668l-25-20-15 9 8 33 13 1 19-21zM4419 1346l20-42 1-6-36-8-10 6 8 45zM6230 3608l-10-13-21-1-6 25 24 5zM5082 3600l-10-25-34 7 9 23zM5093 2949l-13 3-6 8 7 24 16-14 4-10zM6045 2175l-15 46 18 23 54-5 3-8 2-32-19-25-38-1zM5094 804l7-3 6-9-2-12-23-9-2 4 1 1zM6013 2152l32 23 5-2 13-54-32-45-6-2-7 6zM5172 3302l10 3 22-15-11-19-16 8-9 14zM4474 2840l13 9 12 0 3-8 2-20-3-6-29 4-1 1zM4445 2899l-8-16-25 6 12 11 16 2zM6070 1759l4 36 3 3 17 1 12-19-17-27zM5181 2602l6 13 14 5 15-14-12-12-23-4zM6335 2308l-29-35-19 13 5 35 30 2zM4926 2663l4-14-19-13-2 1-12 14 1 19 6 3zM6387 2450l-10-17-10-2-16 27 1 2 18 9zM4942 864l3-2 4-20-8-16-22 7 0 6 9 24 10 2zM6061 3580l-12-3-13 18 3 2 20-12zM6156 1792l8-1 6-39-8-10-28 14-2 16zM5588 2358l35-14-11-16-27-7-8 10zM6084 1723l-51 15 7 13 30 8 19-6 7-20zM6600 2442l0-45-40 17-1 4 24 24 4 10zM4444 3195l10-30-6-13-13 3-2 3 6 36zM4894 3042l3-27-15-10-10 1-6 4-4 18zM4633 2925l0 27 34 7 17-10-7-16-20-17-6-1zM4857 1063l-8 28 5 13 17 15 17-19-9-23-18-14zM4849 2149l-9 18 0 17 42 3 2-18-18-22zM4480 3799l6-19-13-10-17 16 3 10zM6205 2516l-26-1-14 19 1 13 15 12 35-30zM4210 1682l-5-2-23 5 1 7 24 13zM5056 1757l38 11 6-10 2-19-8-12-34-10-11 26zM4916 2704l26-5 9-14-25-22-22 10zM4979 1999l-15-3-12 43 16 5 26-4 2-3zM5624 3044l-3-10-11 0-5 6-3 14 3 10 3 1zM4297 3079l18-5 8-25-8-8-12-1-9 6-5 26zM5169 3676l7 4 16 0-3-27-13-4-10 4zM5379 1842l-15 5 11 38 28-8 3-6-2-11zM6090 4103l17 1 5-12-4-5-7-3-10 13zM5212 2575l-8 19 12 12 6 0 10-21zM4412 3784l-20-3-6 15 15 4 8-6zM5903 2185l-14-10-28 7 12 20 24 0 1-1zM5144 844l25 18 17-3 7-25-36-11zM5466 3604l-7-20-39 20 9 20 10 6 1 0zM4279 2790l25 2 2-3 3-32-16-5zM5610 2929l-12 7 5 6 16 3 3-4zM5882 1609l-7-16-46 3-6 14 4 10 22 10zM5235 3050l-15-18-35 18 6 6 31 5zM5291 2450l36 6 9-25-6-4-30 4zM6083 3766l-15 20 0 1 32 9 5-18zM4841 1414l17-34-7-1-25 27zM5915 2059l-13-6-8 6-13 38 7 17 30-19zM5781 998l7-22-17-10-6 0-12 16 0 16 1 1zM6014 3718l-2 0-28 17 9 17 17 0 7-24zM4791 1905l5-19-6-9-15-4-13 5-2 22zM5392 3774l5 6 14-5 9-34-7-7-19 12zM6102 3743l-3-1-16 15 0 9 22 12 6-4 2-3 0-6zM5064 2982l-14 17 2 1 27 0 3-6-2-8zM6419 2118l12 16 21-3-10-33-17-3zM4937 3733l-40-1-3 7 0 2 29 23 16-19 0-9 0-2zM5629 2579l-10-2-18 23 20 14zM4190 2950l6 16 18-3-5-15zM5594 3757l2 13 30 2 5-5-16-24zM6337 1927l-9-5-19 18 25 1zM4413 2657l-34-8 3 17 20 5 5-2zM4049 2897l-6 15 14 6 13-5-2-20-9-1zM5642 2891l18-14-20-14-16 14zM4978 2123l-5-27-9-8-14 1-5 35 4 3zM5501 2043l-20-21-36 6 2 25 55-6zM4221 2239l9 54 18 0 8-26-15-27-12-10zM5036 3891l34-15-20-30-16 20zM5409 3585l40-19-3-14-36-4-8 1-1 0zM5176 3366l5 7 4 1 22-7-30-21zM5715 1271l-21 51 22 22 49-34 3-39zM4739 2828l23-3 0-23-19-1-14 10zM4349 1211l17-20-16-21-41 4-1 1-1 3zM5124 3996l-1-1-1-1-14 3-3 12 13 23 2-1zM5946 3848l-2 0-13 25 7 4 17-8zM5767 3699l15-4-13-35-3 0-3 37zM4152 3158l-33 31 5 16 18 8 33-33-7-19zM4785 3527l17-10 4-8-7-20-36-1 2 18 13 21zM5216 3308l30 8 16-17-3-4-27-17-18 16zM4967 929l-7 3-6 18 25 25 15-33-4-10zM5461 4158l-7 7-1 10 8 5 7-18zM5515 3742l-6-16-6-2-14 6 0 32 8 1zM5922 2520l13-14-8-16-26 15 0 9zM5235 3182l3-6-18-26-13 9 1 20zM5994 800l6 44 8 3 22 1 34-31-14-56-21-16zM5199 1483l-38 18 4 9 21 14 10 1 12-38-1-3zM5017 1814l2 13 24 12 3-5-7-16zM5424 3834l16-16-9-13-27 0-1 6zM4754 2486l22 19 6-1 9-16-12-19-15 0zM4928 2396l-14 22 29 13 5-38zM5412 1699l42 0 18-25-18-22-40 11-8 14zM4494 2025l15-5 1-1 7-24-15-8-13 1-14 12 0 14zM4550 2753l1-4-2-14-9-13-13 13 9 18zM5164 4110l4-2 9-29-16 2-16 16zM5715 3849l11-2 10-8-8-30-2-3-24 24zM4136 2887l-12 18 6 20 27 7 2 0 3-3-1-24-5-8zM4268 2931l-18-2-12 13 2 12 6 6 24-26zM3977 2528l-2-3-14-2-9 5 9 37 14-10zM4193 2615l-19 8 29 17-1-19zM4973 2953l33 5 1-2-4-26-13-5-18 20zM4386 2292l-3-3-32 14-6 27 11 5 18-4 1-1zM4648 4030l10-12-13-16-15 7-4 6 2 8zM4065 2834l10-1 5-14-4-19-28 4-3 9zM5364 1925l19 28 22-8-1-13-16-12zM5513 3085l9-6 10-24-8-10-23-5 11 44zM5165 1233l16-22-17-16-8 10 5 28zM5394 2684l-8 6 4 14 21-10-5-7zM4333 1969l-31-9-17 28 1 3 23 9 26-22zM5110 1130l-10-9-17 12 3 18 6 7 13-6zM5750 947l15 19 6 0 12-21-5-7-13-2zM5316 1379l4-5 1-19-35-20-14 11 4 18 39 15zM4386 3796l-2 1 18 31 5-5-6-23zM5875 1593l1-19-9-15-28 11-11 21 1 5zM5242 2139l26 42 14-14-15-37zM4352 3030l12-1 15-20-19-10-14 21zM5727 3062l-3-8-34-1-3 4 5 14 20 8zM5099 2333l-16 34 4 6 14 2 21-11zM5805 972l22 17 1 0 34-28-23-27-23 10-9 9zM5158 3986l6 0 10-7 4-16-12-7-11 7zM5107 3302l21 11 1-1 11-21-2-4-26-6zM4515 3577l16-9 0-19-16-2zM5411 2954l3-4 1-36-5-5-17 3-8 4 14 45zM5445 3222l10 23 29-17 0-4-25-10zM5703 2544l14 3 8-9-9-10zM4290 3129l0-15-25 1 3 20zM5117 815l9-4 3-3 1-11-23-5-6 9zM5577 2529l23 4 10-5-9-26-1-1-3-2-20 12zM5797 3057l22-6-1-20-16-8-8 5-7 14zM5895 1788l-1 32 38 8 17-23-8-17zM4534 3935l10-2 14-16 0-3-3-7-35 2-2 3 4 12zM4888 2985l15-11-17-23-6 1-12 14zM5988 1890l-22 3 0 17 12 19 23-1 12-16-12-17zM4981 2225l-15-17-11 11 17 25 10-9zM5687 999l-6-24-32-9-12 17 17 35 2 0zM4441 2153l-32-26-20 17 1 17 27 18 25-24zM5462 3801l6 5 18-4 4-12-2-2-12-2-15 13zM6153 2644l-20 9-7 14 0 1 13 14 11-7 20-17zM5937 1682l20 28 8 3 23-24 3-25-20-34-30 30zM5115 3697l30 18 6-11-5-18-1-1-13-4-17 15zM5678 1577l-36-13-10 11-1 20 8 14 16 7 24-37zM5692 3071l-5-14-11 1-10 25 12 10 9 0zM4494 2025l-6 28 24 12 6-11-9-34zM5140 1236l-3 1-6 12 2 22 6 1 20-17-2-18zM6450 2250l3 13 13-5 16-26-6-7-24 17zM6177 706l2 14 9 0-3-3 34-34-19-25-10 2zM3975 2071l-3-3-40-9 1 8 23 27zM5819 3644l-5 18 10 15 11 3 11-24-24-13zM5702 2829l13 1 16-17-7-19-20-1-8 28zM5695 2764l17-1 14-13-17-16-12 8-6 13zM4939 3736l24-1 4-23-11-5-17 27zM5683 3005l16-22-1-1-19-10-7 1-1 26zM5183 1239l14-19-6-8-10-1-16 22zM5274 3388l8 20 2 0 19-20-6-19-14-1zM4047 2320l-21-42-16 6 3 38 32-1zM4517 2110l-23 17 1 15 25 19 25-9 15-24zM5384 951l13 1 11-12-13-18-19 10zM4666 2321l6-11 0-10-11-18-2-1-9-3-18 12 1 0 23 34zM6143 3421l-37 12 11 27 30 2-1-38-2-2zM5700 1123l-34 53 39 29 11-4 10-81-16-2zM4840 4069l9 2 11-38-28 10zM4726 3725l-7-13-11-5-6 2 1 24 21 5 2-5zM5083 2396l-13 11-2 5 12 22 11 4 21-10-2-21zM4976 1557l-10-14-36 20-1 4 9 16 21 9zM6438 2415l-3 4 2 25 9 4 21-8 3-28-1-1 0-1zM5801 3514l2 16 32-9-10-23-9-2zM5874 1034l14-26-6-32-19-15-1 0-34 28 45 45zM4397 3088l-11-8-20 22 6 6 14-1 10-14zM3919 2393l-20-13-24 12 29 29 3-2zM4069 2542l-15-48-27 2-6 24 32 27zM6190 2300l-4-30-28-12-24 17 50 29 4-2zM5584 1466l18-53 0-2-8 0-52 32-3 8 31 29 1 0zM4326 2252l-27 29 1 10 6 2 33-12 6-15zM6313 2462l32-7-14-29-22 0-5 11zM5560 2589l0-4-8-2-20 15 9 31 10 1zM3952 2833l11 28 7 5 24-17-18-28zM5041 2578l-3 25 14-1 4-4 5-27zM4230 3025l-11 3 3 14 16 7 13-6zM6138 1678l-11-9-11 4-3 25 11 22 19-8zM5915 3129l19-5-4-31-32 21zM5014 3736l7-5-17-23-14 15 1 4zM4198 3005l16-2 4-6-9-14-19-1-7 3zM5536 2263l-20-17-4 1-4 7 3 27 20-7zM5202 1280l-26-3-16 19-1 6 17 12 24-1 3-28zM4792 2408l-9 16 0 5 30 3 2-17-3-5zM4835 629l7 21 7 38 16-8 5-12-9-40zM5798 3830l-27-12-4 7 15 26 16-1zM6039 3950l13-8 3-6-30-24-16 9-6 14zM5243 3420l20 4 8-10-24-17-8 12zM5408 940l14-2-5-5 14-21-8-6-27 10-1 6zM4747 3712l-21 13 0 8 28-6zM4292 1775l-14 20 17 26 41-14 8-58-2 0zM4229 1856l3 14 37 19 29-29-3-17zM5195 3472l4-5-2-15-20-8-11 13 2 12zM5598 1724l-13 20 0 10 30 2-16-32zM5201 2958l-10 12-1 5 14 15 19-4 0-2-18-24zM4411 2331l0 15 24 14 8-2-7-31zM4346 2162l-26-23-18 30 21 18 5-2 19-20zM5302 809l40 41 12-4 5-5 5-23-14 7-36-36zM5033 3808l2-1 12-23-9-8-20 19zM4635 3559l-20-41-24 23 8 27 13 14zM5174 1109l-24 2-10 17 4 20 14 13 22-6 2-3zM4427 4027l17 16 26-26-4-12-24 0zM5623 2131l-21 41 2 4 43 1 6-32zM5255 1046l16 12 23-22-25-15-15 5zM5672 2973l7-1 10-22-9-9-10-4-5 3 0 30zM4592 2996l6-2 8-10 0-8-20-21-12 5-12 24zM5433 982l-8 22 20 27 10 2 26-53-14 3-11-11zM5560 3524l-28-1 1 27 22 6 6-13zM5630 3551l15 19 11-8-3-20-7 0zM6104 982l5-4-10-32-32 2-11 12 2 8zM5386 2690l-17-5-3 1-8 14 0 1 3 9 26 5 3-11zM4761 3929l-11-8-11 3-6 14 27 15 6-8zM5176 1855l34-4 12-32-17-27-50 9-7 9 15 42zM5335 2171l30 12 8-8-20-29-18 5zM5514 2346l3-24-7-7-17 1-3 18 18 15zM5199 1529l0 14 16 23 36-32-3-4zM5614 3602l-1 10 0 4 37 3 3-21-11-14zM5135 1604l-37-10-11 18 43 18zM4503 3769l1 3 16 7 12-13-2-16-19-6zM5826 3590l6-31-14-4-17 16 17 24zM4285 2962l2 0 33-18 6-14-11-9-2 0-40 15zM5148 3539l15-7 0-19-13-11-16 6 3 27zM6166 1356l-39 41 6 12 12 5 65-10 15-37zM6308 1941l-4-6-39-7-2 1 7 38 36-10zM5184 3121l4 4 28 6 4-35-22 1-9 12zM4967 3061l-7 11 12 18 12-8-6-24zM4949 2127l-4-3-10 0-14 23 2 1 26 3 1-2zM5793 3452l13 17 19-6-3-25-30-3zM4046 3044l9-19-12-23-18 4-7 12 7 7-3 19zM5889 2685l-3 21 21 5 7-16-22-11zM5194 1061l-23 6 4 41 15-2 14-34-1-9zM4269 2003l15-9 2-3-1-3-24-20-22 23zM5222 1142l10-27-2-6-36-1 13 31zM5730 1878l-24-21-30 34-5 18 62 42zM6564 1876l4 19 24 20 0-48-1-1zM5827 2706l22-16 0-2-14-13-21 5-5 25 3 1zM4645 2884l16-20-21-5-4 1 3 24zM5446 2778l4 20 1 1 32-1 3-3-13-24-17-6zM4787 1134l-4-21-22-8-7 38 11 3zM5943 2393l-2 0-7 29 8 13 32-17-9-20zM4476 4073l-2 16 13 9 19-11 0-3-20-12zM4589 1423l6 2 7-4 7-13 4-24-4-4-31 19 0 10zM4507 1154l-10-13-24-3-1 20 10 15zM4964 2389l16 12 24-15 1-2 0-13-12-13-20 11zM4691 3938l-11 11 21 28 19-7-1-25-7-6zM5223 879l16 17 29-14 3-30-38-8zM4817 2849l22-14-14-15-18 4 5 22zM5720 970l33 12 12-16-15-19-2 0-24 11-4 9zM5451 3350l22 4-2-29-17-2zM6269 2154l-19 50 41 6 3-6-18-52-3-1zM5251 977l-25 13 0 5 24 10 4-4zM4815 2415l-2 17 4 5 22-11 5-15-3 0zM5598 2992l-5 24 0 1 2 0 11-5 3-6-9-14zM4434 2241l11-4 10-22-11-10-9-2-11 26zM5185 2366l21 16 5 0 20-25-20-29-14 4-12 31zM5318 3426l-8 5-2 10 8 22 26-1 8-26-3-5zM5013 1803l-1 3 5 8 22 4 21-15 0-2-18-14zM6060 3602l-16 3-2 9 15 3 16-4zM4702 3666l22-2 5-5-28-13zM5067 2063l-21-15-32 39 0 1 4 8 34 7 18-34zM5454 1652l8-31-30-22-25 11-9 15 16 38zM5517 1851l-10 25 12 11 8-2 11-21-9-16-5-2zM4763 3691l25 23 11-20-6-19-11-5zM4924 1921l-8-22-8-8-40 19-1 8 4 17 28 13 12-1zM5354 2433l26-26-13-19-11-1-15 43zM5849 2286l-14-10-28 23 1 1 28 18 17-6zM4747 1212l29 28 13 3 4-8-7-25-35-2zM5675 2794l9 24 12 3 8-28-12-10-17 7zM4510 4061l13-19-9-4-15 3-4 4 3 14zM4891 1318l-11 20 56 2 2-2-14-25zM4320 2139l0-1-1-1-11-3-37 17 19 22 12-4zM4698 3057l9-49-53 11-1 3 3 19 6 10zM5444 3093l0 4 10 18 12-3 1-9-12-17zM5810 2393l-10 3-11 30 4 12 1 1 3 0 37-34-3-4zM5226 3962l0-19-3-1-18 4 4 21zM4622 3428l15-3 10-27-31-9-4 13zM6212 3388l-13-10-12 11-1 11 9 12 1 1 10-6 6-14zM5557 2011l-36-6-20 38 1 4 9 16 55-14 1-1zM5207 2673l-14 7 0 27 6 2zM6407 1414l30-13-27-14-6 27zM5609 3802l-5 37 7 3 18-27-12-14zM6035 1779l3-6 2-22-7-13-1-2-21 6-19 26 2 22 9 0zM4496 3932l-16-11-7-1-4 6 0 12 29 21 5-4 0-9zM5681 2714l21-1 0-30-1-1-20 13zM6084 1994l39 15 19-46-7-43-13-16-50 27zM6438 1821l10 19 10 6 16-12 13-35-6-8-41 9-4 3-1 3zM6116 4129l-15 11-7 9 39 26 14-17zM4743 3609l-20-8-17 8 0 1 18 19zM5803 3776l16-10 3-10-23-20-10-1-5 2 2 28 15 11zM6030 2639l-16 12-7 26 1 4 23-2 10-16-7-20zM5762 2158l-13 16 10 32 37 5 5-4-18-54zM4580 2503l14 1 9-17-11-11-23 8 1 12zM5713 3084l-1-5-20-8-5 22 5 5zM5314 1542l-2 32 12 16 6 2 17-1 8-31-3-10-22-11zM6057 974l-26 34 47 19 7-1zM5363 4140l-32 3-3 20 39-5 2 1zM5406 2512l-15-13-20 17 0 5 9 18 7 2zM4658 4018l5 0 25-17-1-6-3-2-34-8-2 2-3 15zM6109 2345l22 14 15-18-4-12zM4926 4010l-5-4-19 19 6 3 14-10zM5567 3087l-31-31-4-1-10 24 42 13 3-2zM6259 2474l15-5 0-23-8-10-32 12-3 5 3 11zM5454 2399l-27 1 1 24 9 4 14-7 5-17zM5706 2715l4 15 23-6-1-9-10-9zM5876 3842l3 26 7 8 27-19 2-9-37-10zM6208 1892l22 5 6-6 1-31-13-4-10 4-8 30zM5945 3159l7 0 3-21-15-13-3 0 0 27zM5083 716l-8-1-7 4 0 29 11 8 29-10 6-5-7-15zM4589 1348l-9-31-23 15 0 3zM5702 2683l0 30 4 2 16-9 1-12zM4877 2326l-2 0-12 16 13 7 7-4zM4959 3128l-20 1 0 1 19 19 9-6zM4805 1072l-16 10 5 6 21-4 0-12-1-1zM5966 3368l-1 3 1 3 17 17 30 0 5-9-19-24-2-1zM4825 3773l22 28 2-1 5-30zM5393 1347l35 10 5-5-23-31-6 2 0 1zM5244 3135l-21 5-3 10 18 26 18-5 3-3-7-28zM5427 2400l27-1 3-10-14-23-13 0-15 16 0 7zM6206 1511l25-1 5-5-19-56-28 51 0 1zM5960 2024l-18-13-46 12 6 30 13 6 22-2zM6287 1524l0-3-28-21-23 5-5 5 6 40zM4572 3460l5 19 32-5 2-10-6-16-11-3-21 3zM5697 3328l23 37 5 2 21-32-23-18zM4874 2301l18 10 1 0 5-26-1-3-15 0zM4404 3989l-33 20 16 20 16 2 12-6-5-32zM5135 4032l-15-1-2 1-7 6 9 34 6 0 6-3 15-19zM5122 3740l2 4 20 16 14-13 0-16-13-12-12 8zM4199 2338l-24-18-21 19 7 22 3 1 26-11 9-10zM4656 1875l8 30 36-5-24-34zM5053 2469l-21 21-3 5 31 16 11-24-10-15zM6217 1019l-20-51-31 25 11 33 37-4zM5173 2548l-21-15-4 11 4 15 10-1zM5681 1582l37 14 17-21 0-6-48-3-9 11 1 2zM5203 3005l-22 24-1 3 36-19zM5029 3175l-4 4 12 18 23-7-3-16zM4757 3542l-37-10 15 40 20-4zM4312 2216l-1-3-18-9-21 13 9 23 6 6zM6286 3538l-20 12 0 9 20 14 24-17-1-11zM6357 2167l-16-22-10 16 8 21 14-8zM5706 2256l40 6 10-14-10-26-33 2zM4116 2709l2-2-1-13-6-9-26 13zM4876 2638l21 13 12-14-27-19-1 0zM4198 2567l-11 12 10 17 20 4 11-27zM4911 2636l19 13 19-10 2-2-10-21-13-5-7-1zM5240 2954l1-1 0-8-28-16-12 29 4 2zM5951 4018l-14 1-10 14 3 4 30-3 1-3zM6259 1500l28 21 16-10-12-35-24 0zM6113 3765l0 6 31-2-2-19-3-3zM5171 3609l11 6 7 0 13-6 2-9-8-23-31 5-1 3zM5373 4043l14 12 13-4-19-30-2 1zM4909 1750l-16-1-24 13-1 4 4 17 56 10 6-6zM6321 1875l20-9-16-4-6 9zM6065 2541l12 14 15-13-7-13-16 3zM4534 1186l15-6-29-24-4 1-6 23 5 4zM5645 3346l-26 18-4 12 12 7 32-7 3-22-13-9zM5119 1547l-20 20-1 27 37 10 28-15-1-9 0-2-14-17-16-11zM6145 4062l-3-16-11 1-4 12 7 5zM5091 807l4 21 3 3 11-2 8-14-16-14-7 3zM6336 1833l10-11-10-23-9-8-8 36 1 2 12 5zM4681 3415l-15 21 17 30 19-5 4-10-7-32zM5529 3381l-23 5-7 12 12 11 23-1 9-14 0-2zM5770 1439l-22-56-28-15-30 25 1 39 47 23 31-13zM5725 1741l12 25 42 10 24-32-37-18-40 12zM5606 4151l12 9 1-1 2-26-5 0-10 9zM5231 4150l-1-19-32-11-7 24 26 15zM5134 2235l-15 0-9 2-1 3 13 36 26 12 17-16 1-14-4-10zM4431 1238l-25 8 0 4 0 1 30 19 16-19zM6483 1738l-10-47-22 0-11 23 2 11zM6602 2238l-19-6-25 9 3 32 38 5 5-4 5-9zM5265 2888l17-16 0-13-27-6-10 25zM5473 2771l24-14-3-10-7-7-20-2-12 20 1 7zM4648 1720l16 20 44 2 2-1-7-48-24-7-36 7zM4641 1420l27 7 4-7-14-14-17 8zM4700 1947l25 48 18-17-8-37zM4494 1544l31 34 32 3 18-38-9-10-70-12zM6203 1188l35-46-11-4-53 11 7 38 1 1zM4989 2476l27 25 13-6 3-5-12-35-26 3zM4720 1389l1-9-15-5-6 13 5 5zM4528 3521l17 14 16-10-1-11-20-8zM4711 2311l-5-34-34 23 0 10zM4895 540l-52-17 13 46 12 2 19-8zM5299 2599l-13-21-12 0-10 4-7 23 14 32 23-14 3-6zM4653 1918l11-13-8-30-10-2-13 20zM4277 2698l9 11 21 8 5-2-1-6-18-23-5 0zM6465 1987l-19 5-7 26 24-1 8-23 0-1zM6029 2515l-4 10 1 4 26 14 13-2 4-9-5-21-6-2zM5893 3506l-8 1-10 18 17 28 19-16 3-12zM4721 2810l8 1 14-10-7-14-8 1-6 11zM5476 2200l18 16 18-11 1-4-26-24-10-1zM4660 2181l1 0 4-1 18-30-32-23-3 0-9 15 16 36zM5029 3170l0 5 28-1 4-11-5-16zM5234 3187l1-5-27-3-4 8 8 9zM5793 2932l-8 0-5 7 5 33 32 0 4-5zM4124 3029l-17 27 12 14 14-1 17-32 1-5zM4274 2699l-6 30 4 6 5 1 9-27-9-11zM4652 3696l-2 8 10 12 21-13-13-11zM5133 4111l9 18 8 2 14-21-19-13-2 0zM5361 2126l8-7 0-19-25-3-4 8 2 8zM5046 3382l-4 8 1 28 39-10-1-22-7-5zM5868 3941l-15-20-12 3-9 25 19 11 17-16zM5175 1108l-4-41-12-7-18 3-10 21 19 27 24-2zM5987 3768l-3-5-26 1 3 26 21 0zM4898 2827l-3-15-10-6-26 6-4 24zM6058 2704l-5-2-9 4-3 9 7 11 2-1 13-5zM5029 2329l1 29 8 7 5 0 20-9-6-31zM5555 3557l0-1-22-6-27 13 28 18 11-3zM4198 2546l-6-12-20-14-3-1-10 13 14 44 8 4 6-1 11-12zM4966 3490l-2 29 23-2-4-26-7-3zM5559 3379l-2-30-26-1-6 12 4 21 14 11zM5804 2848l-8-14-8 1-6 6 11 17zM4989 3811l-9-10-22 0-1 7 18 26 9-6zM4589 3410l5 1 18-9 4-13-8-14-19 8zM5682 3288l-1 20 15 20 1 0 26-11 3-12-4-16-11-10-24 1zM5925 3465l21-1 7-28-32-19-8 6-4 25zM6113 2564l-5-6-31-2-2 10 22 14 15-12zM5019 1099l-10-34-10 2-18 47 0 1 7 3 24-6zM4424 2229l11-26-18-17-13 12 6 31zM6423 2149l8-15-12-16-16 12-3 15 11 8zM5657 4004l5 6 19-1 4-3-8-35-12 0zM4267 3191l-17-16-14 2-1 32 26 4 11-10zM5480 2533l-16 21 1 2 23 4 12-21-10-9zM4876 3960l19 20 10-29-16-13zM6409 1765l27-3 4-5-10-20-12-4-3 1-10 23zM5937 2701l0 20 24 3 9-10-8-18zM5816 3708l6 4 18-24-5-8-11-3-17 13zM5438 2695l-8 12 21 13 1 0-1-16-9-9zM4842 3714l18 22 34 3 3-7 0-4-11-29-35-2-9 14zM4520 3139l-5-19-18 9 1 10 16 5zM5829 1972l-25 12-3 17 12 19 41-5 7-8-8-20-15-12zM4433 3071l-17 14 4 24 17 9 10-2 12-14-1-4zM4469 2172l-25 33 11 10 9 1 13-34zM5371 3325l-16-24-8 7 13 29 11-5zM5573 3214l21 19 17-4 8-19-1-6-23-17zM5133 1208l-9-5-24 20 1 2 36 12 3-1zM4541 1227l6 4 25-5 6-9 2-10-4-25-16-5-8 3zM4312 2814l-7 13 14 25 17-11 0-29zM4808 3160l-1 6 6 10 20-7 9-15-17-16zM4860 3152l19 18 22-17-1-7-17-10-12 3-8 7zM5358 2493l1 0 24-11 2-7-10-13-11-1-7 6 0 25zM6070 3531l-7 12 10 19 25-4 4-16zM4941 1097l13-40-2-3-6-2-32 9-3 6 7 27zM6419 1984l3 39 5 2 12-7 7-26-8-11-13-2zM6052 2692l1 10 5 2 21-7 1-18-10-9zM5290 3943l-26 7 3 12 37 1zM5224 2499l5-14-13-1-4 6 11 9zM4343 2544l-22-12-20 22 22 29 25-8 1-2zM5490 3075l-5-5-4 4-2 19 1 1 6 3zM5744 2707l13 2 10-10-27-19-4 7zM6187 1697l1-25-17-5-12 10 4 26zM5251 2486l27-31-17-14-1 0-23 27 4 10zM4849 2708l0 38 4 2 23-17-6-14-18-9zM5131 1687l-17-22-22 1-5 21 14 12zM3993 2445l-3 3 17 34 6 1 15-23-7-12zM4860 983l1-22-1-2-20 11 5 10 12 7zM4378 3829l3-31-17-5-8 34zM5485 4117l-10 3-4 19 4 2 30-6zM5152 2559l-25 15-1 6 4 4 27 3 5-2zM4965 4065l9-2 10-17-16-19-1 0-11 12zM4747 2387l-2-13-4-2-34 9-7 7 9 24zM6435 2419l-22-4-5 5 2 12 27 12zM5107 3541l-4-19-12-9-16-3-7 17 0 12 3 6 15 12 3 0zM5755 2558l-13 17 16 18 10 1 10-17-8-12-12-7zM5691 1702l0-12-20-16-11 10 11 35zM6454 2133l-2-2-21 3-8 15 21 11 4-1 10-16zM6191 781l3 22 40-20-15-30zM5930 3949l3-8-1-3-23-23-10 5 0 1 7 28zM6073 3515l-3 16 32 11 8-5-5-25zM5851 2361l-14 10-6 30 3 4 29 14 16-47-6-10zM4153 2224l-1 0-31 49 24 20 16 0 19-35zM4897 3596l-23 8 15 33 25-15-2-11zM4855 2836l4-24-2-4-9-5-17 3-6 14 14 15 14 4 1 0zM5696 893l-63 7-5 5 22 25 32 3 19-10zM5916 3484l9-19-16-17-14 4-5 26 1 1zM4162 2448l19 1 2-20-4-6-24 11zM4270 2125l-2-2-44 18-2 16 14 6 34-12zM4684 2241l-4 11 16 15 12 4 10-6-3-21-15-8zM6475 2224l2-21-11-13-15 5-6 7 6 17zM6188 1672l-1 25 14 17 20-4 8-5 0-15-24-21-14 1zM5637 2688l-8-23-14-8-19 5-2 28 3 3 29 5zM4576 1182l4 25 42 4-5-11-8-35zM5643 1746l-14 19-1 2 28 48 23 2 1-17-20-62zM6200 3473l-15-25-21 21 23 14zM5548 1287l-2-24-24 2 0 1 10 30zM4813 2330l10 26 13 1 15-14-2-11zM6008 984l2-16-19-10-32 23 11 19zM4512 2065l6 14 41-6 1-3 1-17-7-18-8 0-28 19zM4623 3965l13-5 0-19-17-3-8 5 0 4 8 15zM5114 2753l-6 14 2 15 17 13 2 0 7-20-16-23zM6108 742l-19 17 15 27 29-15-6-26zM6577 2167l4 3 17-11-1-21-27-5 0 24zM5769 3514l-11 7 13 22 9 7 16-17zM4784 3086l-13 21 11 10 17 2 7-15-21-19zM4710 2783l-2 32 13-5 1-11-11-16zM5516 1524l35 4 4-28-41 0zM5132 1637l14 5 36-24-19-29-28 15-5 26zM6260 2036l27 14 20-15-1-32-44-14zM4837 1588l24 29 6-6 4-9-1-19-7-13-17-1-9 17zM4227 2645l21 0 13-27-4-6-10-3-18 7zM5917 3037l-13 2-23 16-2 11 14 18 41-8 8-8 0-1 0-17zM4227 3277l-4 1 0 35 28 2 6-10zM4229 1676l8 1 9-29-18-14-8 2-7 7zM5348 2802l-24 6-6 21 16 17 28-25zM6453 2268l-1-2-5 2-18 16 5 18 14 13 9-5zM4326 2654l1 29 11 3 16-7-3-18-15-10zM5662 2021l-9-30-35-1-8 39 25 24zM4825 3138l17 16 16-1 2-1 3-6-24-32-14 22zM5828 3624l-6 19 24 13 9-4-6-29-1-1zM5161 4016l16-13-13-17-6 0-8 5 7 24zM5177 3346l6-9-19-21-9 5 0 24zM4773 2020l4-45-34 3-18 17-5 9zM6089 2505l7-3 0-2-9-30-6 0-8 10 4 23zM5479 2506l-24-11-4 1-5 5-1 2 11 24 6-1zM5665 2940l-23-1 0 35 23-4zM4690 2637l-17 6 1 1 17 10 1 0 2-11zM4369 3067l-21-12-12 31 15 4zM5385 3128l-10 7-6 19 25 2 13-7 0-6-8-13zM5048 1694l2-14-23-33-7 4-6 17 22 28zM6174 1089l-23 36 9 17 14 7 53-11-45-50-5 0zM6220 3595l1-31-36 8-1 3 15 19zM4052 2267l1 1 31-14-15-23-19-1-7 17zM5349 1782l4 9 43 20 6-44zM5726 3169l14-5 6-8-3-8-22 1-4 13zM5780 3477l-10-6-1 0-2 14 13 15zM5626 3518l26 5 9-10-3-12-29-13-5 2-1 19zM4124 2375l-4-24-31-12-1 2-2 30 7 11 6 2zM6171 2457l8-23-17-9-7 1 0 1 10 30zM5289 4209l9-34-22-5-3 34zM4573 2323l-24 5 9 35 28-7 3-10zM4493 1254l-26-1-7 34 30-6zM4322 2684l5-1-1-29-16-3-1 1 0 26zM5438 3438l20 21 12-18-14-15zM4359 2445l-21-8-14 15 9 27 30-4zM5066 2891l32-7-14-15-20 20zM5959 1359l-13-26-27-10-12 33 28 35 20-20zM4968 3564l-26 1-6 26 10 9 21-2 9-16-2-11zM4815 2384l-2-2-23 6 2 20 20 2 5-14zM5255 3356l3-12-14-18-26 19 0 7 17 8zM5681 975l10-14-9-28-32-3-1 36zM5447 2053l-11 21 3 9 41 16 27-21 4-15-9-16zM5005 1956l22-2 8-17-8-10-25-8-5 3-9 14 12 18zM5100 983l-1 2 11 29 22-13 0-5zM5131 2064l-12 33 23 18 35-19-21-43-7 2zM5359 3967l9-11 0-5-31-27-14 8-6 26zM4173 3121l19-10-1-19-15-3-5 30zM4858 2908l17 6 3-5-5-23-17 1zM5256 2367l-19-11-6 1-20 25 17 11 22-5zM6311 992l1 6 4 4 36-7 18-16-3-4-31-15zM4325 3006l-1 0-9 35 8 8 20-2 9-17-6-10zM4560 1655l-17-27-22 2-13 26 13 12 36-7zM4179 2024l2-16-15-23-8-6-27 34 0 19 31 9zM5112 2861l-9 1-4 21 13-2 5-11zM5991 2665l0-19-7-8-20 22 7 11zM5882 1609l12 9 55-14-11-45-62 15-1 19zM5196 1371l4-9 0-4-28-15-23 8 8 31zM4839 3114l1-9-16-7-18 6-7 15 3 8 23 9zM4871 1935l-4-17-32 0-7 7 0 5 7 8 30 2zM5692 3546l2-2 7-28-15-3-12 4 2 22 6 5zM5487 1252l-14-7-13 4-8 29 48-1 1-1zM4414 3309l-10 30 16 6 21-17-3-19zM5311 3027l-1 0-2 15 30 20 3-5 7-36-6-3zM4914 1061l-18-15-35 17 18 14 25-5 7-5zM5325 1338l-1 13 22-2 4-23-7-1zM5032 3300l6 2 15-21-18-1zM6069 2532l16-3 5-5 1-1-2-18-12-2-13 8zM4700 3829l32-24-2-4-12-7-29 17zM6041 2334l-15-18-7 3 0 24 4 4zM4368 2734l6-9-10-19-30 11-4 5 28 16zM5803 3476l-23 1 0 23 9 1 14-21zM5951 837l-22-18-12 1-12 14-5 16 19 23zM6054 2584l-11-7-16-3-24 20 2 16 24 15 20-13 6-24zM6466 1624l-3-5-32 33-6 18 7 12 19 9 22 0 3-3zM5700 3643l-20 6-10 27 13 14 10-2 24-35zM5344 2097l25 3 13-10-1-19-29 0-10 9 0 5zM4933 2930l31 4-1-15-8-2-13 2zM4721 3302l13-26-6-10-12-3-18 27zM4402 3828l-18-31-3 1-3 31 16 10zM5955 3607l20 2 3-1 18-21-13-18-35 10-1 18zM5530 2705l0 1 6 12 18 8 12-4-5-22zM5238 2542l-2 3-2 9 13 24 17 4 10-4-18-39zM5228 1922l6 62 50 1 12-10 3-14-40-49zM4682 3598l-24-15-14 16 1 4 30 14zM4477 2684l-13-6-10 5-8 20 2 2 13 9 16-12 1-3zM5757 3771l3 5 1 0 25-11-2-28-8-1-21 23zM4326 2930l-6 14 9 22 27 7 0-34-12-7zM4110 2069l-10-1-18 10-8 17 13 12 31-6 6-4 2-8zM5127 2365l9-3 4-12-19-25-22-1 0 9 23 31zM5567 2444l20-6-5-19-29-5 0 1 0 20zM4631 3742l0-1-32 10 6 26 23-5zM5687 3922l1-8-20-14-23 15-1 3 14 18 7 0zM5535 1944l-4 21 14 1-3-21zM4486 3699l-32 2-2 6 11 18 22-8zM4799 1459l-4-6-13-2-1 0 11 20 1 0zM5662 4010l-8 27 2 5 17 1 14-11-6-23zM4451 1503l-29-6-50 14 4 40 4 2 47-5 24-44zM4953 2509l7-26-12-14-32 10-4 31zM6251 892l-18-9-60-15-1 2 4 28 31 42 14-2zM5157 1237l2 18 14 11 15-20-5-7-18-6-4 0zM6142 776l-9-5-29 15-1 3 14 13 30 3zM6094 816l19 13-17-20zM6030 3994l35-19-13-33-13 8-14 31zM4992 1699l-2-24-16-23-13 1-18 17 11 32 27 11zM6032 2287l0-11-48 5-5 21 4 5 6 4 15-1zM4696 3675l20 10 8-21-22 2zM4702 2504l-19-5-7 5 7 10 13 3zM5522 1266l-21 10-1 1 0 18 31 4 1-3zM5935 1391l-28-35-28-6-38 42 1 3 55 50 4 0 26-24zM6101 4084l-9-9-9 8 8 14zM6507 1930l-1-1-26 13 16 13 6-2zM5312 2507l13 12 8-18-3-3-17 4zM4722 3902l-7 1-3 36 7 6 14-7 6-14zM5985 2486l9 34 31 5 4-10-3-11zM5285 2713l-39 5-7 11 20 27 16-3 23-27-2-4zM5860 1944l21-1-2-35-23 12-3 17zM5736 3098l13 6 16-9 4-19-6-4-22 4-6 18zM5121 4107l-18 15 9 22 30-15-9-18zM6122 3628l8-28-17-16-20 12-3 10zM4538 3800l25-20 0-1-31-13-12 13 2 18zM5721 3392l-30 0-7 6 15 16 19-2 6-13zM5492 2375l-11-10-33-4-5 5 14 23 35-11zM5583 3278l11 11 2 0 6-28-14-12-8 7zM5238 1377l-38-15-4 9 2 9 10 16 40-2zM5395 3390l0 19 16 3 5-8-3-18zM4606 2976l0 8 41 15 20-40-34-7-6 1zM5214 1424l-6 24 10 14 8-1 16-44zM4855 1494l-12 26 12 9 15 2 10-3 2-6-9-24zM5556 1951l0 21 2 4 9-5 11-27zM4626 1255l34-21 0-13-21-19-6 31-9-18-3 7zM5724 3658l-4-4-3-1-24 35 22 6 11-24zM5918 2095l-30 19-1 2 24 23 2 1 41-12 3-15zM6050 2311l-6 22 17 10 14-8 14-19 1-7-7-3zM4513 3265l-5-21-37-3-6 14 4 11 1 1zM5053 2137l7-16-8-18-34-7-12 30 15 21zM5011 3833l3-7-8-23-17 8-5 17zM6238 2369l23-13-3-26-17-12-18 20zM4567 2855l25 28 16-17-39-13zM4978 3058l6 24 15-1 5-6-21-23zM4764 3042l17 16 0-24-15 6zM5964 3911l-5-27-20 5-5 7 0 7 1 1 27 7zM5031 675l11 5 14-3 0-19-19 7zM6644 2176l11-19-19-16-6 6-6 32zM4881 2325l11-14-18-10-9 5-1 10 11 10 2 0zM5889 854l-11-20-15 13 0 3 24 6zM4236 2680l-3 16 7 2 6-6 3-17zM4145 3105l-21-3-12 11 14 23 6 2 15-27zM5405 3662l8 1 25-29 1-4-10-6-28 16-2 11zM4403 1173l-21 16 20 29 21-13 3-11-4-13zM4868 793l-6 14 5 15 8 3 31-3 1-23-3-4zM5091 2735l11-23-27-20-24 29-1 2 6 14 14 6 11 0zM4851 1170l11-8-8-22-22 1-5 15 9 10zM4928 863l-17 10 6 16 7 5 12-2 2-27zM6463 1614l0 5 3 5 76 44 5-18-39-42-31-22zM5780 4000l2 0 11-3 1-22-24-12-4 1-2 7 15 29zM5719 2519l-8-28-5 7 2 20 8 3zM5621 3311l27 25 10-24-16-15-20 11zM5121 3494l-17-3-13 22 12 9 22-18zM4786 2604l-3-3-16 3 5 25 4 1 5 0zM4615 2531l-1 0-26 34-1 13 28-10 6-12zM5433 3120l13 5 8-10-10-18-14 17zM4909 2637l2-1 10-26-4-3-12-4-23 15zM4916 2910l0-13-16-11-9 18 11 12zM5794 3975l-1 22 8 4 14 0 1-1-8-30-1-2zM5827 989l-22-17-17 4-7 22 7 12 27 0zM5631 2798l-11 12-1 7 14 16 9-14-6-19zM4746 3864l-4 23 14 15 13 1 8-15-17-31zM5705 3488l12-7 4-22-21-5-2 1-5 27zM5416 3404l-5 8 13 21 14-24-6-9zM4614 2339l8 12 21 7 9-31-27-4-4 1zM5054 4017l2-16-27-13-21 16-1 5 6 10zM6330 2355l5 5 29-16 1-9-27-27-3 0-13 15zM5369 1494l-6-30-12-3-15 37 11 12 10-1zM6013 1250l-62 18 2 14 8 16 32 20 25-6zM5774 2636l-21 2-3 10 4 7 18-3 5-11zM5659 2496l13-10-21-24-4-2-9 3zM4928 2333l-13 1-3 8 18 5 1-12zM5951 4001l16-13-38-14-4 4 0 9 16 14zM5273 2372l7 12 3 0 17-15-1-3-16-5zM5942 2435l0 1 35 18 11-15-7-19-7-2zM4309 2000l-23-9-2 3 5 35 25-10z"/>
<path fill="#6884b6" d="M6064 2511l13-8-4-23-14 1-5 4 4 24zM6025 3981l14-31-36-15 0 1-10 23zM4718 2616l2 18 1 1 0 1 28-9-4-20-17-3zM5561 2546l12 24 18-10 0-2-21-21-4 2zM5657 3098l-10 7 20 12 2-15zM5000 3476l-4 13 5 4 14-3 9-12-1-6-3-3zM6672 2406l14-27-59-6-9 6 19 32zM5783 1584l-3 9 13 18 10-3-5-29zM4502 4012l-11 7 8 22 15-3-8-25zM6331 1445l5 26 24 12 11-10-5-16-28-21zM4612 3582l-13-14-39 17 17 17 36-15zM5347 3159l13-1-5-32-5-4-15 3-3 3zM5072 2848l-8 41 20-20-2-18-6-4zM5656 3562l9 3 17-21-6-5-23 2 0 1zM5997 3292l-7-12-16-5-28 13 0 7 14 17 37-14zM5665 2765l-4-9-10-4-15 15 0 2 25 9zM5346 3612l13 12 22-29-13-10-12-2-11 19zM6230 3413l-2 2-2 21 19 2 7-20-6-7zM5340 2701l-2-3-16-3 1 22zM4384 3214l21-16-3-5-23-14-16 20zM5731 1695l-8 22 3 21 40-12 0-27zM4798 1492l1-16-6-5-1 0-19 8 8 20zM5291 3995l-21 23 4 12 31-18zM4255 2651l-7-6-21 0-5 5 0 6 29 13 4-7zM4453 1969l-21-12-5-1-4 49 10 8 22-30zM4833 2713l-6 17 10 17 12-1 0-38-1 0zM5155 3345l0-24-26-9-1 1-8 28 15 10 12 1zM5781 3361l22-20-36-20-17 14 17 24zM6142 4121l10 30 15-18 0-12zM4426 1956l-32 26 5 21 24 2 4-49zM6094 1267l-30-28-36-9-15 20 5 62 12 9 62-51zM5184 4073l23 6 8-2 9-19-22-34-2 0-25 18-2 6zM5362 1352l-6 2-9 22 6 4 23-1 3-8zM4645 4002l3-15-19-3-9 9 10 16zM5473 3190l11-14-1-6-22 3 3 17zM5976 928l-7-6-28 0-16 28 1 9 15 12 2 1zM5182 4231l18 36 3 1 14-28-6-6-28-3zM4503 3946l0 9 21 4 10-24-12-11zM5352 2323l10-29-2-5-7-7-21 21 12 17zM5152 762l1-2-9-15-13-1-9 31 15 11 2-1zM5987 4067l-24-7-10 5-7 25 21 10 28-9zM6192 3354l-25-21-2-2-18 17 7 10 10 6 18-2zM4518 3912l-12-5-26 14 16 11zM4256 2267l30-13 1-8-6-6-40 0zM4637 3805l-3 0-28 30 7 10 1 1 37-26zM4667 2391l19-10-5-21-38-1-1 12zM5877 3431l-17 2-3 12 4 3 19-8zM5798 2894l-1-24-5-4-18 5-7 15 6 21zM5405 1945l9 7 20-3-1-34-4-5-11 3-14 19zM5473 3354l10 7 4-1 1-1-5-40-12 6zM5746 1560l20 5 7-5 5-19 0-5-21-15-10 3zM5536 3160l-12-3-5 9 17 18 9-13zM4652 2327l-9 31 0 1 38 1 6-15-21-24-10 3zM4493 1741l-1-14-37-29-24 11-9 54 29 15 31-19zM4919 839l-20 21 5 11 7 2 17-10zM4898 911l21 3 5-20-7-5-21 17zM6526 1902l-14 5-7 19 1 3 1 1 16 3 11-23zM5575 1863l6-36-19-7-21 23zM4697 2211l-9-3-14 18 5 5 17-7zM4319 2985l10-19-9-22-33 18 8 16zM6162 1742l8 10 28-1-4-27-30 5zM5916 2253l-2-9-2-2-28 8 20 15zM4140 2865l36-5 0-2-10-27-12-8zM6377 2355l0-2-13-9-29 16-2 19 22 21 1 0 8-3zM5983 2307l-4-5-37 6 13 40 10 3zM6221 3647l-4-23-24-5-7 3-1 1 8 32 22-1zM5551 2501l-3-31-12 4 2 26zM5209 2248l-2-6-22-22-23 28 4 10 38-7zM4715 1419l-11-9-20-2-4 7 13 16 11 0zM6543 2326l-17 1-11 12-2 6 2 2 25 3zM5236 2977l17 9 19-7 5-12-36-14-1 1zM4013 3129l-22 8 24 31 10-7zM4611 3628l-2 2 7 17 16 6 12-23-5-6zM6006 3681l20 15 6-19-14-23-1 0zM5797 2664l-1 1 6 10 12 5 21-5-3-25-13-3zM5845 4019l-10-30-19 11-1 1 2 5 19 19zM5444 3317l7 3 14-19-6-12-20 15zM4434 2788l-14-6-15 26 27 2 8-11zM4993 2347l0 11 12 13 25-13-1-29-1 0zM5288 3705l15 16 14-15-1-1-18-5zM5335 3375l-1 0-3 1-12 14 5 21 23-9zM5983 3569l13 18 15 3 4-2 15-25 0-2-32-23-12 9zM5701 3432l17 0 5-8-5-12-19 2 0 16zM5386 1585l2-17-33-8-8 31 7 4zM5389 2628l13 10 15-7 8-17-8-5-22 1-7 15zM4262 2769l-12-7-5 29 26 8 7-8zM6097 2580l-2 22 35-11-18-23zM4576 3728l4 12 0 1 16-27-5-4-11 5zM5982 2531l-3 22 1 2 38-6 8-20-1-4-31-5zM5634 2539l2 6 26 14 8-2-1-7-12-13-20-1zM4285 2679l3 7 5 0 16-8 0-26-13 2zM6102 2239l-54 5-2 8 37 54 7 3 29-20 5-13zM5697 2926l-4-22-22 20-1 13 10 4zM4335 2753l13 21 11-5-3-24zM5840 1936l-12 30 1 6 9 3 22-31-7-7zM5512 2593l-2-15-18-9-8 23 11 12 10-3zM5075 2669l9-10-4-28-30 4-3 20zM5981 1848l-28 21 0 11 13 13 22-3 10-34zM5119 1441l2 18 43-7 4-10-22-22zM5816 2124l-17 29 5 1 27-18-1-4zM5714 997l-13 5 2 44 4 1 19-22-11-28zM4994 1256l-8-27-34 25 20 20zM5849 1630l-22-10-15 25 3 22 30 4 6-10zM6615 2190l13 13 23-3-7-24-20 3-6 3zM5844 2060l2-1 8-44-41 5-5 19zM6421 2375l-12 9 4 31 22 4 3-4-5-36zM5123 2681l1 20 3 1 32-12 8-17-3-13zM5003 2930l16-9 7-20-1-11-10-6-32 29 7 12zM6448 1840l-10-19-29 14 9 18zM5534 3408l0 25 34 6 13-6 2-6-40-33zM4602 3043l7-13-11-36-6 2-23 23 28 25zM5180 2587l1 3 23 4 8-19-5-7zM5404 2340l2-2-16-27-29 23 0 2zM5363 3159l23 18 8-21-25-2zM5259 4008l8-23-5-8-21 1-14 18 2 12 6 4zM5869 2244l3-20-7-7-5 1-11 16 7 13zM6023 1066l55-39-47-19-6 2-23 42zM5347 3308l-6 2-5 29 0 1 18 2 6-5zM5936 2672l-7 5-3 12 11 12 25-5 2-6zM6284 1580l11-22-8-34-50 26-4 15zM5075 1132l8 1 17-12-4-13-14-7-10 6-2 19zM4000 2953l-20 25 3 5 31 5 10-9-5-24zM5261 1182l1 1 46 18 5-5-2-22-19-17zM5932 3938l1 3 28-4 5-19-2-7-2 0-26 18zM4945 2733l18 11 4-25-17-5zM4825 1657l15-27-15-7-20 12 4 12zM4652 2567l10-4 13-24-1-2-7-4-18 7 0 23zM5863 961l19 15 44-17-1-9-21-18-25 7zM4845 2272l5-28-5-6-5-1-19 19 5 16zM4301 2554l-5 0-2 1-19 25 1 8 34 21 3-2 10-24zM4502 3005l-20 14-4 18 50 18 3-4zM6123 2009l-40 59 15 13 42-8-9-59zM4980 3801l6-17-1-4-17-3-11 20 1 4zM4118 2135l0-34-31 6 5 37 9 3zM4360 2038l-13-20-27 6-1 11 21 23zM5429 2203l6-13-9-21-18-8-15 15 12 17zM6507 2171l-1 27 7 11 14-3 7-7 3-19-28-10zM5312 2993l-6 8 5 26 31-9-2-26zM5856 2909l-4 1 1 5 20 31 3 0 12-19zM6145 2155l-9 32 24 18 25-36zM5626 3927l-20-13-19 9 6 31 14 0 13-12zM4828 1339l-8-4-36 5 12 23 29 3zM5426 4105l-10-23-4-1-22 17 9 19 24-4zM4333 1969l2 9 17 16 27-20-1-7-32-24zM4950 2837l-10-16-6-2-24 17 3 5 28 19zM5056 658l2-4-1-2-20-7-4 2 4 18zM5085 3836l2 3 31 9 1-7-8-29-32-16zM4680 2431l19-1 10-14 0-4-9-24-14-7-19 10-6 14 2 23zM4474 3752l-11-22-29 11 15 15 23-1zM6073 2660l-10-18-29 1 7 20 29 7zM5604 2189l-11 17 0 1 39 39 5-3 7-32zM5735 2941l22 6 23-8 5-7-12-24-32 7-10 20zM5641 3677l29-1 10-27-18-22-8-3-17 29zM4472 2819l29-4 0-6-13-14-20 8-3 5zM4879 1077l9 23 7 0 9-28zM6285 3603l2-5-1-25-20-14-14 21 2 12zM6146 3424l40 21 11-9-1-23-1-1zM5757 3471l-13 16-2 5 15 1 10-8 2-14-10-1zM4297 3136l-3 10 17 23 1-1 2-31zM5134 3093l7-6-7-35-4-4-3 0-19 14 0 23zM6541 1911l5 3 12 1 10-20-4-19-4-1zM4073 2416l-32 10 13 26 12-8 11-24zM4815 1883l11 6 26-21-17-30-13 7zM6463 2017l10 8 23-14-1-6-24-11zM4589 4005l10 7 8-9-4-8-12-1zM4996 1611l-16 35 40 5 7-4 4-12-10-23-22-3zM4743 2119l29-22-17-22-4 0-8 6-2 38zM6390 2189l-13-29-20 7-4 7 19 21 16-3zM6659 2268l15-10-9-31-8-5-13 7-6 31zM4658 3723l-26 6-1 12 0 1 34 16 8-13zM6056 1832l15 20 36-29-13-24-17-1-11 9zM4942 3086l11-14-6-7-17 8zM5457 3286l6-23-13-8-1 0-4 25zM6272 1816l-24-20-12 1-7 8-1 13 29 25 5-3 9-12zM5329 2382l-6-26-17-3-7 13 1 3 8 8zM4051 2603l15 6 14-18-11-49-16 5-14 13zM5455 2495l7-10 2-23-22 3-2 3 11 28zM5640 3050l-16-6-16 21 12 12 19-13zM5989 3177l-12-24-23 7 8 30 1 0zM4305 3282l-6 1-3 25 7 8 19-25zM5269 4128l20-13-16-14-15 1-12 14zM4873 869l5-12-20-20-2 2-7 22 2 9zM5797 3215l-20 8-2 21 11 9 20-8 6-8-8-21zM4379 2649l-4-6-24 18 3 18 6 4 17-9 5-8zM4190 2351l-1 25 27-2-17-33zM5782 2366l-6 8 0 3 24 19 10-3 0-25zM5877 3458l-3 9 9 12 7-1 5-26-5-1zM5151 4154l7-11-8-12-8-2-30 15-3 14 14 5zM5840 911l-4-26-7-2-23 4-12 13 3 11zM4426 1126l31 5 5-1-8-26-37 4-3 1zM4399 1086l33-5-2-8-36 6zM4093 2450l8 7 11-13-12-28-16 5zM4949 2281l-16-11-7 4-4 25 12 8 2 0zM3979 2814l-3 7 18 28 10-2 7-14-27-20zM5849 2286l4 26 9 2 8-39zM5199 1543l-37 35 0 2 53-9 0-5zM5880 3440l-19 8 4 6 12 4 13-7zM5476 4094l11 15 14-9-11-19-5-1zM3976 2775l-14 17 17 22 5-1 17-16-7-13zM5974 2418l7 2 15-14-6-12-11-6-14 10zM5455 3086l12 17 13-9-1-1-20-13-1 0zM6062 1641l-4 10 15 39 42-18-38-36zM6408 2309l2 0 24-7-5-18-24-3 2 26zM6378 2319l-13 16-1 9 13 9 23-7 0-17zM5800 3948l10-8 2-18-22 10-4 6 2 6zM6154 3358l-7-10-2 0-19 14-1 21 7 6 14-7zM6518 2256l-3-3-10 0-11 11-2 11 12 16 5-3zM5550 1792l16-18-15-23-36-2zM4953 2315l-7 0-6 15 13 10 5-6zM4651 4050l3 2 19-15-10-19-5 0-10 12 1 15zM4565 3706l-3 8 14 14 4-13-10-12zM5612 2328l17-35-3-2-34 4-6 11-1 15zM5746 3632l17 24 9-27-3-6-19 4zM6375 2144l6 7 19-6 3-15-19-20-15 3zM6092 2409l4 5 16 7 15-16-4-6-26 7zM4986 3043l-2-10-10-6-15 8-5 10 13 16 11-3 5-6zM5281 3115l-30-11-7 31 8 5 32-8zM5255 2785l1-24-26 7-8 17 3 9 15 0zM5747 3727l-9-23-15-2-6 16 7 15 17-1zM4968 730l-8 32 17 9 4-1 6-23zM4286 3201l21 5 3-13-7-18-4 1zM4630 4009l-10-16-2-1-7 11 11 11 4 1zM4436 2522l-1 0 0 4 24 30 23-6-7-26zM4981 1713l-27-11-25 19 27 31 26-31zM6122 1904l13 16 38 2 7-6 13-27-3-3-65 11-3 4zM5274 3202l14-8 7-15-3-13-33 2-3 3 8 28zM5181 2602l-28 13-1 1 20 16 15-17zM5910 3778l-49 6 29 31 26-13zM6190 1886l-11-36-1-2-20 4-28 30-5 15zM5512 3170l7-4 5-9-3-16-4-4-24 12-3 7zM4238 2812l-3 30 12 2 15-32zM5096 1055l38-5-1-9-27-15zM4638 2701l2 16 26 2 12-11-3-10-11-8-13 0zM6141 1281l10 17 52 4 9-28-32-16zM6227 3539l14-6 8-21-9-13-19 0-9 4 5 31zM4956 3707l-8-11-17 10 6 27 2 1zM5898 3165l-2 1-17 29 5 15 22 7 15-35zM6146 1024l-44 2-11 4 13 38 31-3 18-34zM5899 3681l25 28 1 0 25-35-5-10-6-4-31 0zM6245 3438l11 13 11-4 5-18-14-4-6-7zM4275 1911l-6-22-37-19-8 22 27 28zM5622 3573l19 5 4-8-15-19-7-1zM5637 2060l36 16 6-23-7-26-10-6-27 32 1 6zM5360 3360l-3 11 10 11 8 1 10-4 6-13 1-11zM5234 2506l19-13-2-7-10-8-12 7-5 14zM4950 3399l9-13-11-37-2 1-28 33 15 20zM4802 3127l-3-8-17-2-4 17 21-1zM6218 3677l10 4 15-4 4-3-8-25-18-2-6 7zM4544 3416l-19-25-22 19 34 20 9-5zM5121 1393l0-50-16-3-26 31 7 17zM5839 933l2-21-1-1-43 0 0 5zM5871 2274l3 0 9-24-14-6-13 3-4 11zM4680 1446l-12-11-29 20-1 4 6 5 19 8 20-18zM6166 3398l-2-14-1-1-17-1-14 7 11 32 1 1zM4930 3073l17-8-4-14-14-3-7 22zM4692 2654l3 2 8-1 18-20-1-1-10 1-16 8zM5241 3978l21-1 5-15-3-12-3-5-14 3-10 21zM5752 3208l2 0 3-1 5-13-2-12-15-4-13 6zM4082 2078l-12-23-22 0 0 30 25 10 1 0zM5999 1129l14 55 39-27-14-68-1-1zM4349 1247l24 18 33-15 0-4-6-17-52 0-1 1zM4442 4005l24 0 4-13-24-27-14 21zM6239 3649l18-11 0-4-20-26-7 0-13 16 4 23zM6314 1849l4-17-23 9 1 5 14 6zM6228 2401l24 2 3-9-17-25-22 13zM5815 2602l-11 12 0 16 15 17 13 3 10-10-12-37zM5481 2506l-2 0-17 20 18 7 10-3-1-18zM4679 2231l5 10 16-5-4-12zM5160 3207l-6-1-7 24 10 9 6-5-1-24zM5211 2249l15-4 26-43 1-2-19-5-27 47 2 6zM4822 1218l-29 17-4 8 5 10 2 1 27-2 20-16 0-5zM5117 2477l-1-6-25-17-5 9 4 17 21 4zM4740 3065l-18-9-20 6 1 21 21 10 22-11 2-5zM5668 4071l-2 0-27 18 1 4 28-5zM5861 3357l-11 1-8 6-7 20 4 3 28-13-2-13zM6292 3495l21 29 21-17-18-23zM4130 2925l-6-20-24 6-3 5 7 22 5 1 16-7zM5784 3800l17-24-15-11-25 11 18 25zM5405 1901l1-16-3-8-28 8-1 3 16 15zM5258 4080l0 22 15-1 4-25-10-3zM5744 2322l-3-12-24-9-32 14-2 10 7 21 32 14 9-8zM4373 2974l15 6 15-27-5-6-19-2zM5059 1205l-3 10 4 17 39-10-13-19zM4959 633l-11 7-19 40 38-7-1-28-6-12zM5145 2743l-17 0-8 9 16 23 10-8 5-15zM6238 2275l26 7-5-33-27 2zM4908 1413l8 0 24-12-22-26-33 0 4 22zM5351 2731l2 9 41 4 3-11-1-6-9-12-26-5zM5120 2934l17-16-11-14-11 2-18 19 2 6zM4930 2347l2 7 15 0 6-4 0-10-13-10-9 5zM5809 3153l6-2 6-29-22-3-6 8 5 22zM6203 1916l5-24-2-2-13-1-13 27zM4691 1323l-1 2 1 1 19 7 11 1 18-38-11-3zM5477 3888l-3 12 1 1 10 8 31-14 8-21-18-17zM5738 1455l-47-23-27 18-10 23 58 27 4-1zM5990 2370l8-9-10-15-22 6 4 13 8 7zM6262 1840l-5 3-9 12 15 18 7 0 9-12 0-3zM5127 2702l25 21 14-22-7-11zM4644 3926l19 8 17-36-24 2-12 22zM5396 3209l13-7 2-14-24-5-8 7 1 16 5 4zM6235 2208l-19-8-25 26 13 25 6 2 19-4zM5522 2987l-5-9-31 1 16 37 18-9 3-9zM5094 1768l-38-11-15 19 1 11 18 14 34-19zM4549 3152l11-4-4-20-12-4-14 17zM4180 2258l-19 35 12 16 42-18-34-33zM5833 1925l-27 9 22 32 12-30zM5431 3221l-1 0-7 22 9 11 17 1 1 0 5-10-10-23zM4783 2424l-25-19-16 19 10 22 31-15 0-2zM5690 1393l-51-13-15 21 40 49 27-18zM5830 3886l4-1 10-15 0-1-22-20-14 6-1 8 7 16zM5434 3777l29-11 1-2-5-15-25 6-2 21zM4215 2291l12 4 3-2-9-54-40 19zM4145 2293l-17 25 4 18 22 3 21-19-2-11-12-16zM4862 724l-23 31 0 1 6 9 17 10 20-17 12-23-4-5zM4962 3118l-12-12-16 18 5 5 20-1zM5994 1790l-16 19 37 20 15-12 0-1-27-26zM4398 3155l-4-1-16 7-2 3 3 15 23 14 8-25zM4728 2040l-9-24-44 31 8 14 5 2 34-11zM4931 3968l18-25-8-12-10-2-24 22zM5744 1614l8-16-17-23-17 21 1 10zM5116 3015l15-3 3-18-14-3-9 18-1 3zM6141 2447l6-3 8-17 0-1-11-6-19 17 10 11zM5112 3707l21 20 12-8 0-4-30-18zM4920 995l10 17 17-10-1-18-2-2-20 8zM5863 847l-12-22-20 16 21 23 11-14zM4791 2141l-3 4 0 2 52 20 9-18-17-23zM4870 1996l41 37 10-5 3-34-52 1zM5935 3219l-22 4-1 16 19 23 28-24-1-7zM5250 2388l-22 5 7 33 14 3 16-29zM4756 3020l-1-1-11 17 16 9 4-3 2-2zM6179 2515l26 1 6-26-27-14-17 19zM5468 2668l0-3-2-4-19-12-9 5-2 13 3 5 15 8zM5052 3222l12-5-1-23-3-4-23 7-5 10zM5394 2744l-41-4-9 20 4 10 4 5 25 1 17-31zM6226 1756l-5-46-20 4-7 10 4 27 9 10 12 1zM5715 3694l8 8 15-21-12-11zM5741 3414l-8 11 9 12 8 0 13-13-4-12zM5119 3596l-7 33 32 0-10-27zM5339 2527l-1 30 7 5 35-23-9-18-26 2zM4788 2707l13 11 22-9-8-27-8 2zM4285 2679l11-25-6-3-15 7-2 7 2 7zM5948 3632l7-25-8-10-3 2-21 17 6 12zM4945 3486l-4-1-20 6-6 29 10 6 19 2zM5357 2467l7-6-9-27-1-1-13-3-5 1-9 25 2 8zM5296 3091l-7-6-41 5-3 3 6 11 30 11zM5759 3935l11-8-8-25-11 1-10 12zM5627 3023l-21-11-11 5 15 17 11 0zM5465 4097l0 18 10 5 10-3 2-8-11-15zM5146 2962l10 11 5 1 11-10-3-12-23 6zM4015 3168l-24-31-3-1-5 22 26 19zM4520 1919l-36 10-2 7 3 13 16 7 28-5zM5854 3223l-18-22-7 0 2 30 13 3 8-5zM4876 3650l-29-24-13 11 25 23zM5303 1632l17-37-40 17 7 13zM4444 1878l-13-34-17-7-20 3-4 42 26 4 26-5zM5661 2602l14-13 2-24-7-8-8 2-29 20zM5926 2570l0-4-14-1-18 17 9 16 8 1zM5396 3787l1-7-5-6-26-6-7 20 9 15zM5103 2862l-17-10-4-1 2 18 14 15 1-1zM5155 2340l4-27-6-5-32 17 19 25zM5466 3642l2 24 4 2 19-1 15-19-22-16zM5077 4146l32 12 3-14-9-22-7-3-20 14zM5868 3019l-2 24 15 12 23-16-25-23zM4732 1209l-33 10 2 23 15 12 19-4 8-37zM5274 3518l-12-27-18 19 3 9zM5303 1632l-16-7-23 31 7 12 14 4 28-22 2-6zM4746 3608l2 0 4-1 21-28-18-11-20 4-1 1zM5266 1110l-12 19 6 12 12-4 9-12 0-8zM5850 3555l-4-2-14 6-6 31 25 3zM5877 3300l-30-6-2 16 8 16 2 1 24-9 2-2zM5247 3948l-16-7-5 2 0 19 11 7zM6104 982l-46-14-1 6 28 52 3 0zM6000 3230l14 10 4 0 11-11-16-16zM6253 2105l-51 34 1 26 2 2 64-13 4-3zM5889 2926l18 8 14-3-4-6-18-31zM5058 623l24 1-1-48-27 17-1 12zM6164 3663l4-1-4-33-8-3-12 6 4 26zM4927 4038l3 1 7-28-11-1-4 8zM4540 2948l-24-8-1 20 6 4 18 1 4-8zM6481 2151l2-1 4-7-3-15-12-9-18 14 4 10zM4222 3042l-8 11 12 13 5-1 7-16zM5433 4126l8-8 3-11-1-6-17 4-3 8zM5500 1295l-4 9 22 29 18-16-5-18zM4636 3355l-25 8-3 12 8 14 31 9 3-2 0-17-12-23zM6425 1979l13 2 18-20-23-12-8 28zM4983 3491l13-2 4-13-11-17-7 5-6 24zM5853 3921l5-10-24-26-4 1-12 28 23 10zM4446 2741l-12-5-4 0-7 5-4 9 3 17 30-2 0-1zM5456 2404l-5 17 14 12 11-3 4-18zM4973 3924l-18 21 15 11 2 1 19-24zM5687 999l-31 19 32 34 15-6-2-44zM6186 1578l-32-35-38-16-30 19 22 62 1 0zM5440 1861l8-6 3-9-5-14-21-15-5 2 1 31zM5475 4141l-4-2-9 3-3 7 2 9 7 4 8 1 5-6zM5283 3368l14 1 7-7 3-13-2-3-18-7-3 1-5 24zM4843 1520l-11 1-8 32 20 13 11-37zM4321 2885l5-20-7-12-25 11 1 12 15 19zM6373 2531l26-8-2-15-20-11-7 8zM5667 2735l6 10 17 10 1 0 6-13-19-23zM5559 2636l-7 24 14 11 21-16zM5601 2446l16-31-9-9-9-4-3 0-14 17 5 19zM4327 2225l-15-9-25 30 39 6zM4008 2571l7-1 8-6-15-30-12 5-4 16zM4461 2869l-9-6-9-1-6 21 8 16 12 2 5-9zM5420 968l13 14 23-10-27-27zM5654 3043l10-17-6-8-19-3-5 4 16 24zM5588 3825l14 14 2 0 5-37-25-7zM6433 2379l5 36 31-5-10-26-11-8zM6683 2301l24 3 1-4-5-40zM6005 2610l-22 17 1 11 7 8 23 5 16-12-1-14zM4249 2090l-11 16 0 6 21 3 2-18-7-8zM5903 4035l-5 23 8 11 21-13 3-19-3-4-11-7zM4488 2652l10 17 26-6-14-25-18 7zM5480 3094l-13 9-1 9 5 4 18-14-1-4-2-1zM4816 2365l-31-9 0 28 0 1 5 3 23-6zM5005 3112l-21 0-5 7-1 23 12 8 3 0zM5682 3544l-17 21 5 5 15-4 7-20zM5813 2571l-13-20-15 26 22 9zM5671 1674l1-8-30-18-10 3-1 11 28 22 1 0zM4475 2236l-18 8 0 8 18 15 1-1 0-29zM5629 2348l14-7 1-1 0-41-15-6-17 35 11 16zM5900 850l5-16-26-4-1 4 11 20zM4590 2754l-3-8-14-2-15 16 3 8 3 3 25-14zM5546 3145l-6-5-19 1 3 16 12 3 9-7zM3926 2526l7 16 25 30 3-7-9-37zM5143 4097l2 0 16-16-29-12-6 3zM4277 2629l-11 19 9 10 15-7zM6217 1449l0-2-3-4-46 13-12 19 33 25zM5651 1723l-25-17-13 16 30 24 17-8 1-2zM4495 2142l-1-15-26-19-12 5-15 40 1 2 25 11zM4957 3797l-29-16-14 13 22 27 21-13 1-7zM5715 997l11 28 16 2 4-25zM5164 2660l-25-17-1 0-24 21 9 17zM4794 3240l18 3 17-31-3-8-14-11-1 1-25 33zM4270 2934l-24 26 1 2 14 13 24-13-12-26zM5780 3274l-27-2 6 23 7 5zM6089 3974l25-11-42-36-3 2zM4926 2575l-9 32 4 3 7 1 17-37-3-3zM5213 2472l16-8-14-28-9 0-8 19 1 6 4 8zM4488 3614l-18 13 1 22 24 5 4-41zM6406 1955l-16-9-9 7 15 30 4-2 6-24zM4791 2633l12-16-4-9-13-4-5 26zM5601 981l36 2 12-17 1-36-22-25-28 28-14 7zM6513 2345l2-6-5-29-6-2-8 6-6 16 16 14zM4754 1302l-8-8-7 2-18 38 13 10 14 1 19-8zM4756 3312l0-26-22-10-13 26 3 13 2 2 21 6zM5202 1354l40-13 1-1-12-24-28 0zM4546 2622l10-38-49-8-1 3 6 33 4 4 30 7zM5004 2988l-20 1-14 22 4 16 10 6 27-15 2-6zM4754 2766l6-2 16-21-9-21-11 6-9 29 4 8zM4792 3070l25 0 18-22-10-13-20 1-15 28zM4490 3812l6-1 11-6-16-25-5 0-6 19zM5134 2799l6 39 25-13-6-26zM4683 2061l-19 28 9 16 13 4 19-10 0-1-4-17-13-18zM5663 2523l14 2 0-19-22 3zM5664 1450l-40-49-22 10 0 2 28 50 23 11 1-1zM4478 3895l1-1 0-25-21 6-2 9zM4229 1856l66-13 1-1-1-21-17-26-19-1-9 23-31 26zM6546 2176l31-9-7-10-22 2-2 3zM4735 3572l-15-40-30 25 9 23 16 1 19-8zM4410 1644l-4-41-8-5-49 33 0 3 46 26zM5609 2921l-13 1-6 3-1 7 9 4 12-7zM4838 1701l11-29-22-11-17 17zM4864 4074l8-37-6-8-6 4-11 38zM4827 3503l7 3 10-24-6-3-12 17zM4790 3616l15 20 18 0-1-27-29 0zM5324 3618l22-6-1-10-17-7-10 11zM4303 3175l8-6-17-23-13 14 10 12 8 4zM5850 3555l1 38 5 4 8-2 7-36zM6081 3438l-13 46 28-6-11-42zM6640 2318l17 21 11 1 13-16-4-19-18-8-11 7zM4645 3603l-1-4-31-12-2 41 28-4zM4549 2328l24-5 6-10 2-12-18-18-18 4 3 41zM5819 2847l-15 1-11 10-1 8 5 4 16-1zM4687 1946l5-3 9-42-1-1-36 5-11 13-2 11zM4736 2730l20-2 11-6 4-15-29-10-4 2-11 18 4 9zM4663 2774l16 5 7-7 1-4-31-18-3 7zM4842 1190l9-8 0-12-15-4-4 22zM5243 2817l-3-23-15 0-13 15 3 6zM4814 1071l1 1 32-19-11-10-28 2-4 10zM5586 2306l6-11-14-30-11 4-16 25 2 2zM4168 3161l7 19 16 9 37-16-9-34-41 6zM5855 2826l-6-29-27-6 3 42 0 1 26 0zM5929 819l22 18 44 9 5-2-6-44-35-26-11 6-15 24zM6334 1515l18-6 8-26-24-12-16 9-3 28zM5483 1724l-24-2-29 31 4 5 64 0 3-5zM4696 1640l20-23-5-20-17-10-38 43 36 11zM5912 2242l-6-12-18 7-4 13zM5470 3133l6-7-5-10-5-4-12 3-8 10 2 6zM5198 3097l22-1 2-1-29-34-2 27zM4162 2929l20 3 16-13-9-13-28-1zM4125 2780l13-5-8-19-16 2zM5700 3170l1 12 13 5 12-1 2-3-2-14-9-7-15 6zM6317 1888l1 18 7 2 15-6 1-9-20-10zM4503 3376l-27 20 24 12 3 2 22-19 0-2zM6570 2157l0-24-3-3-13 0-9 11 3 18zM4843 1231l0 5 9 11 36 4 6-8 0-34-8-6-30 13zM4849 1289l7 42 19 11 5-4 11-20 1-23-7-12-35 5zM4675 2471l5-40-17-3-5 3-1 4 12 37zM5227 1053l-9-2-15 12 1 9 33 25 3-3 3-10zM5798 2810l-16 4 6 21 8-1 6-5zM4309 3255l4 6 18 8 17-12-5-10-31-11zM5348 2586l-11 13 6 27 12 2 13-10 1-14zM6104 2542l0-2-14-16-5 5 7 13zM5524 1723l-5-24-26-2-10 27 18 29 11-4zM4380 1553l-4-2-18 9-19 39 10 32 49-33zM5128 3313l-21-11-16 4-17 18 1 8 29 14 16-5zM6040 4073l-14-51-10 3-29 42 8 24 22-8 15 5zM6234 2464l-3-11-29-6-5 8 20 29 5-3zM5043 2228l-9-23-28-6 0 35 3 3 29 6zM4805 1072l9-1-10-16-23 5 0 1zM5962 3911l-27-7 1 25zM4164 2362l7 24 12-3 6-7 1-25zM5836 3468l3 13 9 6 17-3 0-13-6-5-21 1zM5209 4178l8-19-26-15-14 8 1 12 27 15zM5518 2417l35-2 0-1 3-32-9-6-33 14zM5013 1149l11 4-1-32-6-3zM6481 2448l2-6 18-18-31-12-3 28zM4895 1100l-7 0-17 19 1 3 12 9 29-12-5-17zM5592 4080l42-1 2-16-35-20-16 30zM6316 2559l36-18-17-21-22 34zM5426 2518l19-15 1-2-28-14-2 1-3 23zM4380 3043l23-10-16-26-8 2-15 20zM5979 3678l-12 5-5 33 30-10-3-25zM5040 3760l22-11-25-29-11 10zM5382 2090l13 11 40-12 4-6-3-9-7-4-40-4-5 2-3 3zM5409 3071l-12-5-19 10 23 12 10-14zM6505 2253l10 0 7-9-9-35-27 24zM6327 1553l5-8 2-30-17-7-14 3-16 10 0 3 8 34zM4353 1865l0-20-57-3-1 1 3 17 12 14 35-3zM4724 2689l4-19-6-7-5 2-8 11zM6177 3733l-9-33-2 0-18 6-2 17zM4860 2695l-2-31-30 5-1 3 21 36 1 0 3 0zM5872 3488l11-9-9-12-9 4 0 13zM4162 2041l-31-9-5 5-1 12 27 24 10-15zM4280 1613l25-20-8-51-6-6-16 47-25 9zM4599 4013l10 5 13-4-11-11-4 0-8 9zM5592 1084l-18-15-26 9-2 21 5 8 30 12 8-4 4-7zM5625 3528l1-10-3-9-32 14 2 7 27 5zM4057 2180l6-28-15-10-27 15 3 31 20 0zM5395 999l30 5 8-22-13-14-15 1-14 23zM4423 3817l-16 6-5 5-8 11 3 15 17 5 16-12 4-19zM4866 4029l6 8 18 9 10-21-17-11-5 0-11 11-1 2zM4586 2950l17-17-9-15-14-4-3 0-8 10 0 1 1 6zM4701 2566l-2 22 15-1 4-8-9-20-1 0zM4220 1945l-6-45-20 2-17 20 6 11-2 2zM6515 2347l-2-2-7-1-18 20 0 1 2 9 5 6 20-6zM4525 1578l-31-34-24 28 17 37 6 0zM5443 2366l5-5 10-28-3-8-18-8-21 22 14 27zM6139 995l1-7-5-10-26 0-5 4-16 44 3 4 11-4zM4431 2973l-5 0-20 19 12 11 28-2-2-19zM4492 4110l-2-1-33 16 43 0zM5710 3578l32 1-4-16-12-6-17 10-2 7zM5877 2744l7-2-5-30-24-9-5 20zM4912 2342l-10 9 24 10 6-7-2-7zM4978 2146l4 12 34 3 1-1 4-13-15-21-22 1zM4432 1957l16-19 3-27-8-16-27 43 3 9 7 9 1 0zM5537 3828l22-21-19-13-19 15zM4508 3589l7-12 0-30-19-17-13 20-10 13zM4385 2760l10-9 0-29-21 3-6 9zM5769 3076l20 0 8-19-10-15-19-1-7 4 2 27zM4068 3065l21-12-2-35-10-2-22 9-9 19zM4418 2774l4-7-3-17-24 1-10 9 0 4 5 7zM6459 2310l10-5 8-13 1-9-25-15 4 42zM5837 2732l-7-8-14-3-6 10 8 7zM6178 1848l1 2 35 10 10-4-6-25-33 1zM5624 2255l8-9-39-39-14 32 5 16zM4603 3782l2-5-6-26-5-4-13-4-13 11-5 25 0 1 13 11zM5015 3421l14 9 10-5 4-7-1-28-20-2-8 6zM4249 2675l-3 17 15-4-2-9-7-6zM5154 3368l22-2 1-20-22-1-8 7zM5062 2781l-35-3-3 23 5 5 31 5 15-5-1-15zM4616 2875l-5 11 5 10 7 0 9-11zM4970 2529l4 20 7 13 27 4-1-44zM5170 3406l-6 14 2 10 7 5 24-23-6-8-2-2-14-1zM5123 1394l-15 33 11 14 27-21-3-22zM4907 3579l-10 17 15 15 18-20zM5461 3173l-10-11-14 23 3 5 16 5 8-5zM5593 3412l-6 11 42 11 5-22-2-1zM5122 3994l1 1 17-6 0-21-7-2-15 2zM4812 1505l5 1 6-15-6-13-2-2-16 0-1 16zM5584 3595l29 17 1-10-2-7-14-12-16 6z"/>
<path fill="#5575ab" d="M4065 2480l-11 14 15 48 28-7 3-1 5-22-19-32zM4570 1792l26 10 21-24-9-22-24-12-21 22zM4777 1821l5-15-32-14-14 21 39 10zM5121 1459l-5 8 0 4 18 22 20 1 12-31-2-11zM5437 3185l-20-3-6 6-2 14 9 12 12 7 1 0 9-31zM4767 2604l-11-6-11 9 4 20 8 6 15-4zM4958 4084l-2-5-23-8-17 9-5 11 38 25zM5313 1650l-28 22 22 42 29-1 4-11zM5723 3424l-5 8 8 24 1 0 15-19-9-12zM4906 3998l-23 16 17 11 2 0 5-27zM6175 3759l-26 19 0 14 37-18zM5699 4109l-6-14-16 5-11 16 3 15 27-3zM5188 3209l-16 4 0 18 15 1 3-20zM6092 3827l-28-16-13 7-3 32 7 8 20-16 18-13zM5056 2969l0-1-8-9-11 2-8 20 11 5zM5892 3553l-17-28-27-3-3 2 1 29 4 2 21 4 19-5zM5167 3387l8 14 14 1-4-28-4-1zM4435 3155l13-3 6-7-7-29-10 2-19 22zM5120 1164l-15-12-13 6-7 16 6 10 30 0zM6559 2355l26-29-30-11-12 11-3 24 6 7zM5927 1945l-34 8 7 40 33-11 2-4-6-30zM5236 3857l-28-12 13 37 10 2 3-2zM5155 3813l-13-3-23 31-1 7 1 2 26 1 24-8zM4518 4008l6 1 15-4 7-9-18-17-13 8zM5946 3295l-18 16 2 18 0 1 30-11 0-7zM4895 4055l-5-9-18-9-8 37zM5613 2731l1 6 11 4 20-10 0-4-19-23zM6205 2167l-2-2-18 4-25 36 3 14 7 7 21 0 25-26zM5780 3500l-8 7-3 7 27 19 7-3-2-16-12-13zM4359 3101l-9 14 1 15 18 2 5-5-2-19-6-6zM5921 3417l3-11-17-28-16 7-5 29 27 9zM4836 903l-9 9 1 13 31-7-1-16zM5207 4079l-9 41 32 11 11-15-18-34-8-5zM6043 3758l-26 4-2 7 23 17 12-9-4-16zM4808 3376l4 27 29-1 21-29-29-10-19 5zM6175 1028l2-2-11-33-26-5-1 7 7 29 7 7zM5452 4004l8-10-27-29-16 2-6 8 14 22zM4492 2374l-25-14-9 2-10 43 36 10 13-12 4-18zM4164 2399l7-13-7-24-3-1-37 15 13 19 24 5zM4205 1680l-12-18-14 0 3 23zM6004 3259l22 5 4-8-12-16-4 0zM4918 3383l28-33-61-11-6 26 17 13zM5825 2834l0-1-23-4-6 5 8 14 15-1 3-2zM4818 2926l-11-22-5-1-10 16 0 1 23 9zM6054 3411l-22-34-14 5-5 9 0 5 32 22zM5469 3728l-8 4-2 17 5 15 22 0 3-2 0-32zM5299 2330l2-4-3-26-2-1-30 6-15 17 2 5 10 9 17 4zM6496 2314l8-6-2-5-25-11-8 13zM5199 2461l-1-6-26 2 0 8 11 5zM5795 1518l16 8 16-45-38-12-6 24zM6162 2459l-8 7-1 4 12 25 2 0 17-19-1-11-12-8-6 0zM5240 1094l-3 3-7 12 2 6 22 14 12-19-4-9zM5405 1733l11 16 14 4 29-31-5-23-42 0zM6125 911l0-18-26-16-28 14 1 3 30 26zM6546 1972l15 20 8 3 23-45 0-10-12-2-21 6-10 12zM5274 3476l-8 4-4 7 0 4 12 27 4 2 9 1 10-38zM6055 2406l-4-1-12 10 0 1 4 17 7 1 7-1 5-5zM6310 1852l-14-6-5 8 9 14 4 0 4-2zM4402 2671l-20-5-5 8 16 14zM5802 2675l-16 21 13 10 10-1 5-25zM4396 3093l-10 14 5 11 6 2 6-9zM5229 2485l12-7-4-10-8-4-16 8 3 12zM4224 2440l-6-13-35 2-2 20 8 11 15 3zM5344 1283l0-43-39-4-7 7 15 37zM5303 3388l16 2 12-14-27-14-7 7zM5927 2986l-12 41 2 10 25 13 0-17 7-51zM4695 2656l3 23 11-3 8-11-14-10zM5787 3042l7-14-23-17-3 30zM5960 3312l0 7 6 14 14 1 19-17 1-13-3-6zM4441 3682l-8-12-22-3-13 33 17 2zM5159 2690l7 11 17 7 2-1-9-29-9-5zM4904 3567l-18 2-18 15 2 18 4 2 23-8 10-17zM4912 1711l9-39-39 7 0 16 12 14zM6325 1854l5-4 2-16-12-5-2 3-4 17zM6538 1814l-2 0-29 34-1 16 15 12 6 2 23-8zM4859 2663l-1 1 2 31 19-2 8-20zM5536 3623l8 17 24-15-3-9-6-6zM4199 2749l32 0 0-17-26-12-14 5 2 16zM5137 2151l-1-3-35-8-27 34 0 4 2 2 51-8 1 0zM5075 3510l16 3 13-22-11-17-19 31-1 2zM5347 1728l-6 48 8 6 53-15 14-18-11-16zM6057 3617l-15-3-7 10 9 14 3-2zM5776 3432l-13-8-13 13 6 13 11-1zM5182 1618l19 9 3-1 17-45-6-10-53 9 1 9zM5280 2998l-8 17 38 12 1 0-5-26zM5485 3127l8-19-4-6-18 14 5 10 7 2zM5528 2761l-3 25 10 5 20 0 1-1-16-32zM5319 3303l-19 16 10 10 10-3 1-22zM5570 3846l12 7 20-14-14-14-20 5zM6146 954l-11 24 5 10 26 5 31-25 2-17zM5959 2619l-19-11-19 9 0 2 13 8 19 0zM4575 3658l-46 7 1 3 15 21 22-7 10-20zM5779 1776l-42-10-30 73 80-19zM4759 1510l0 8 29 13 2-15-10-13zM5038 3582l34-7 14-18-15-12-35 23-5 9zM4867 4025l11-11-2-15-22-11-9 2-3 3 0 2zM4863 925l-7 19 5 10 28-1 5-15-4-9zM5065 3630l1 0 20-27-4-3-35 5-1 14 1 2zM5130 715l29-19 0-3-32-11-13 9-1 8 3 9zM4710 3351l-10 25 15 16 10-4 11-11-6-17-7-6zM4508 4090l-3 12 12 17 30-11zM6537 2180l-3 19 17 2 3-15-8-10zM4781 3058l-20 4-8 13 31 11 1-1 7-15-2-6zM5483 2798l0 24 4 5 23-5-16-29-8 2zM5020 3271l-6 1-4 12 6 15 1 1 15 0 3-20zM4821 2256l19-19-27-25-27 39 1 1zM5283 2361l16 5 7-13-7-23-19 10-1 11zM5723 3702l-8-8-22-6-10 2-4 31 38-3zM5688 2892l6 7 2 0 30-9 7-15-2-15-1 0-21 1zM4196 3031l19-5-1-23-16 2-9 18zM4477 1334l-38-30-20 42 3 4 47 13 4-1 5-22zM5809 1134l1 7 70 74 15 4 34-34-1-50-17-28-1-1-47-11-53 38zM4898 2879l6-5 9-33-3-5-8-3-7 9-10 27 2 5zM5083 2520l-6 7 11 18 28-4 6-13-10-15zM4569 2484l-7-7-31 19 1 10 18 4 20-14zM5359 4112l-21 0-13 18 6 13 32-3 3-6zM5958 3764l-6-7-39 7-3 14 6 24 2 1 35 0 8-13zM5060 1150l2-1 13-17-5-6-14 2-2 21zM4269 1699l-18-1-5 7 19 33 9 1 14-17zM5780 3550l-1 8 2 9 20 4 17-16-15-25-7 3zM5177 2584l3 3 27-19 0-8-7-9-21 17-2 6zM4518 1696l3-28-13-12-12 3-12 18zM6059 3693l-28 8 22 25 12 1 5-4zM6249 3512l29-10 6-7-3-7-26-19-16 14 1 16zM4429 2290l-3 16 11 19 11-5-1-25-2-2zM5866 4000l15-1 10-7-13-22-21 13zM6635 2438l-35 4-13 10 13 31 42-16 8-15zM5151 2527l-6-6-23 7-6 13 7 9 25-6 4-11zM5658 3501l18-18-9-18-19 2-7 4-12 17zM5110 577l-25-6-4 5 1 48 7 6 25-9zM6181 1187l-7-38-14-7-26 47zM5245 4044l14 3 8-7 7-8 0-2-4-12-11-10-24 4zM4322 2109l-1 1-2 27 1 1 26-11 8-22zM4701 3841l19 9 14-38-2-6 0-1-32 24zM6240 3499l-1-16-12-9-12-1 6 26zM4538 2431l-41-28-13 12-3 31 50-3zM4454 3853l-1-1-23-5-16 12 3 4 18 8 17-9zM5577 1348l0 9 25 54 22-10 15-21-7-50-23 0zM5620 2996l21-15 0-6-20-7-12 9 1 9zM4895 3981l-7 4-12 14 2 15 5 0 23-16-7-14zM5657 4004l-33-9-22 21 0 2 0 1 52 18 8-27zM6566 2384l6-16-13-13-13 2-2 7 6 23 5 4zM5306 1138l-25-13-9 12 21 15zM5811 1527l0-1-16-8-14 17 13 3zM4803 1110l8 22 17 3 2-16-14-15zM5745 4050l-3 8 5 8 28 8 8-27zM4084 3139l-11-11-29-7-6 37 25 14 21-32zM4649 2588l4 9 10 3 20-6-4-27-17-4-10 4zM4882 994l-2-13-20 2-3 4 18 11zM5212 2575l20 10 15-7-13-24-27 6 0 8zM4407 2571l-2-4-28-8-28 14-1 2 20 27 18 9zM5899 3681l-19 6-11 11-1 13 15 28 19 5 22-35zM4811 3692l-12 2-11 20 1 11 49-14zM4986 3784l20 18 8-7-12-30-17 15zM4382 3235l0-1 2-20-21-15-16 4-1 8 4 10zM5285 1672l-14-4-28 35 22 40 42-29zM4514 1320l-36 20-5 22 17 10 36-21zM5553 2525l-26 10 1 3 24 11 9-3 5-7zM6066 3650l-16 0-2 15 14 18 15-18-5-10zM4423 2259l-2 7 3 6 23-6 1-8-14-16zM4238 3130l24 11 6-6-3-20-10-13zM4483 2514l-8 10 7 26 8 3 14-35zM5790 1614l-7 24 24 4-15-29zM6430 1737l12-12-2-11-21 0-1 19zM5330 1592l-6-2-4 5-17 37 12 12 15-5zM5475 2927l11-17-26-10-2 1-7 29zM5300 3581l-1 18 3 5 13 1-3-31-2 0zM5272 1346l14-11 12-27-1-2-18-7-18 11-3 30zM4110 2681l28-20-1-7-13-11-28 23zM5655 2188l-8-11-43-1 0 13 40 22 9-5zM5733 2988l4-9-6-12-24-1-9 16 1 1 16 11 1 0zM5941 3553l1 18 6 8 35-10 3-22-29-11zM5520 2755l-20 4 6 27 7 1 12-1 3-25zM5939 3889l-1-12-7-4-10 1-3 7 16 15zM5017 2739l12 22 27-24-6-14-23 3zM4635 2509l6-4 5-31-8-8-12-2-14 21zM5570 2470l33-17-2-7-14-8-20 6 0 24zM5910 3305l18 6 18-16 0-7-16-17-21 9zM6155 2427l-8 17 15 15 3-2zM4722 2663l6 7 17 5 11-13-4-7-24-5zM5747 3682l6 12 10 3 3-37-3-2-9 5zM5144 745l9 15 35-2 8-12-13-4-16-26zM5204 2756l1 0 31-27-25-17-7 1-11 29 4 7zM5587 3923l19-9-2-28-10 2-22 28zM5593 3549l-3-7-29 1-6 13 0 1 19 11 16-9zM5808 3855l14-6 1-3-10-33-3 0-12 17 0 20zM5572 1347l-23 7-19 35 10 7 12-1 25-38 0-9zM5879 2712l7-6 3-21-26-6-14 9 0 2 6 13zM5890 3112l8 2 32-21 4-17-41 8-4 25zM6492 2275l2-11-28-6-13 5-1 3 1 2 25 15zM4118 2707l8 1 27-14 1-2-5-16-32 18zM4529 1951l8 26 20 0 11-10 4-35zM5949 1040l-28-32-33 0-14 26 58 17zM4562 2701l-21 9-1 12 9 13 22-12-1-13zM4616 3647l-7-17-31 3-1 1-2 24 2 4 20 12 9-1zM6473 2025l6 31 24 0 8-33-15-12zM5499 4202l-8 19 26 4 21-21-10-10zM5205 3982l22 14 14-18-4-9-11-7-17 5-5 8zM4756 3477l-31 7-12 31 7 16 45-25-2-18zM4753 1688l-10-12-15 2-25 15 7 48 20 1zM6176 898l-36 27-1 17 7 12 53-3 8-11zM5593 2783l-2 1 5 16 24 10 11-12-3-11zM4799 2608l4 9 9 1 17-19-3-8-11-6-3 2zM3989 2493l-28-10-2 0-1 3 3 37 14 2 13-14zM4579 4014l-15 10-3 11 3 2 26-4 0-2zM4086 2785l3 0 3-1 18-28-6-13-11 0-21 25zM5747 3521l-5 6 5 16 24 0-13-22zM5827 1620l-4-10-20-2-10 3-1 2 15 29 5 3zM4536 2753l-9-18-24-1 9 22 14 5zM5957 2113l-3 15 2 4 35 24 22-4 5-74-49 18zM4443 2491l-7 31 39 2 8-10-2-7zM5398 1502l12-20-28-25-19 7 6 30zM4157 2720l1 1 14 1 12-2 1-23-2-2-29-3-1 2zM5488 3209l14-14 2-6-20-13-11 14zM4694 1388l6 0 6-13-3-7-17 9zM5357 2492l0-25-28-3-3 9 2 4zM4410 2704l15 13 21-14-26-10zM4545 1315l7-21-15-10-20 30zM5225 1920l-41 2-1 0-14 63 5 6 58-4 2-3-6-62zM4176 2983l-21 17-1 5 2 18 24-3 1-35zM4159 2949l0-17-2 0-18 13-1 13 7 7zM6186 2404l11 23 13-7-2-32zM6339 1575l-18 20 18 26 45-22-2-20zM5635 1532l-32-2-25 24 14 24 40-3 10-11zM5384 2239l9 4 11 0 26-39-1-1-24-10-20 13zM4089 2785l16 31 11-4-6-24-18-4zM4343 3247l5 10 8 3 26-25-32-14zM5908 3660l31 0 9-28-19-4-22 26zM4998 640l13-4-14-21-13 13zM4774 3917l-1-10-4-4-13-1-6 19 11 8zM5301 968l-18 13-2 17 18 17 22-21zM5914 2601l7 16 19-9-2-10-5-3zM5339 2208l28 27-3-41zM4437 2821l-19 13 18 13 10-18-3-5zM4459 3796l-3-10-16-7-7 1-3 26 25 1zM5658 3936l-6 27 13 8 12 0 14-8 1-7-27-20zM5616 4133l5 0 10-3 1-25-30-3-4 13zM5839 2079l42 18 13-38-48 0-2 1zM4931 3973l-32 11 7 14 1 0 11 4 15-25zM5998 2739l-11-24-17-1-9 10 5 24 4 7 13-5 15-6zM4314 1913l-20 10-3 17 11 20 31 9 13-26 1-2zM5723 2559l-5 19 1 4 23-7 13-17-13-10zM6134 1189l26-47-9-17-29-1-12 58 22 8zM4197 2596l-4 19 9 6 25-6-10-15zM5224 1695l19 8 28-35-7-12-23-12zM5192 3484l3-12-27-3-6 13 13 7zM4948 2441l-2 6 2 22 12 14 29-7 5-18-1-5-8-10-34-3zM3958 2486l-38 26 6 14 26 2 9-5zM5448 2965l-8 5-4 11 8 12 4 1 26-11 1-1zM5032 4145l1 1 11-1 15-21-20-22-6-2zM5767 922l-2 14 13 2 9-15zM5164 2752l-13 0-5 15 27 11-1-17zM5180 1155l-22 6-4 17 10 17 26-12zM5514 734l-1 7 8 6 14-10-2-2zM5741 3414l18-2 4-13-7-8-30 8zM5328 4020l18-5 2-8-6-13-16-2-16 19zM4669 2472l-12-37-19 31 8 8 20 0zM4817 521l-47 4 18 34 25-20zM4638 3330l-24-13-2 1-15 26 14 19 25-8zM5348 2770l-40 22 16 16 24-6 4-27zM4309 3255l-22 7 4 17 8 4 6-1 8-21zM4343 3047l5 8 21 12 7 0 4-24-16-14-12 1zM5022 1196l-10-9-28 1-1 30 3 6 37 2 4-8zM4615 2285l-7 2-2 2 5 26 10 9 4-1 8-33-1 0zM4915 2300l7-1 4-25-23 1-6 7 1 3zM6287 2050l-27-14-29 11-1 0 10 44 13 13 28-18 5-9zM5239 2729l-3 0-31 27 25 12 26-7 3-5zM4672 3951l-9-17-19-8-5 13 29 16zM4712 2999l-5 9 28 30 3 1 6-3 11-17-1-11zM4892 3429l-5 0-20 34 35 2zM4502 2947l-10 3 12 12 8-3zM5447 3862l21 34 6 4 3-12-8-36-9-6-9 6zM4600 1889l5-20-20-25-27 29 1 4 25 20zM5152 3456l-10-11-17 22 3 5 19-5zM5999 3317l12 19 33 0 0-21-3-2-41-9zM5920 2284l13 2 7-20-24-13-12 12-1 6zM4131 2013l-36-12 2 20 20 15 9 1 5-5zM4636 3126l19-12-5-21-20-5-9 32 9 6zM4979 3119l-17-1-3 10 8 15 11-1zM5860 3095l4-20-28-7-1 12 18 20zM4983 885l3 10 6 6 27-10-1-4-21-17zM4449 3756l-9 23 16 7 17-16-1-15zM4606 3974l-2-7-9-3 4 17 1 0zM5240 3385l6 2 10-6 3-21-4-4-20 4zM5078 3796l1 0 32 16 19-15 0-13-22-9-22 3zM5148 2544l-25 6 4 24 25-15zM5499 4155l12-17-6-3-30 6 6 16zM5713 2224l33-2 13-16-10-32-23 0-25 35zM4189 2376l-6 7 29 18 4 0 3-2 2-20-5-5zM4442 1295l-6-25-30-19-2 39 36 8zM6401 2446l1-1 8-13-2-12-13-1-5 9zM5517 1336l-39 3 3 22 30 0zM5132 1340l11-27-37-29-13 0-12 22 24 34 16 3zM4900 1589l16 12 22-18-9-16-26 1-4 16zM5431 2022l-19-24-6 0-16 24 15 12 4 1zM5037 3557l12-18-9-8-5 1-4 4zM5114 1994l22-20-15-38-22-8-15 5-5 5-9 53 4 3zM5022 1724l10 19 17 0 11-26-11-22-1-1-12 2-1 1zM5560 3906l-6-1-17 6-6 36 3 4 16 6 21-41zM5344 2760l-21-4-24 21 2 12 7 3 40-22zM4952 1874l8-14-6-17-37-13-10 9-2 15zM4762 3971l-13 40 10 6 20-23-15-22zM6026 2316l11-16-5-13-28 23 15 9zM5516 1640l4 8 11 5 27-44-5-5-27-3zM5690 2755l-17-10-12 11 4 9zM4447 1168l-7-3-18 16 4 13 30-5zM5901 780l11-2 11-10-3-18-12 0-10-5zM5570 2537l7-8 0-18-22-10-1 1-1 23 13 14zM5743 3587l3 10 25 6 10-10-1-24-36 13zM4407 4106l-8 23 0 1 32-5-22-20zM4454 4110l-27-30-4 0-14 25 22 20 2 0 23 0zM6448 2159l-4 1-9 15 16 20 15-5 1-3-2-7zM5256 3171l-18 5-3 6-1 5 4 11 26 1zM5453 4175l1-10-17-8-3 19 2 2zM4804 1582l-2-2-23 5-4 26 13 4 18-13zM4862 1379l-4 1-17 34 1 2 18 6 2-1zM4846 3680l13-20-25-23-7 1-2 31zM4475 2000l14-12-15-26-21 7 2 14zM4738 2574l-3-23-15 8 5 15zM5711 1981l-3 40 8 14 10 9 16 3 5-4 15-25-23-53zM6146 3681l7-2 11-16-16-5-11 5zM5375 3072l0-21-13-4-21 10-3 5 0 1zM5704 3222l-2-3-26 3 2 28 26-8zM4865 1940l-30-2-3 13 17 19zM4867 3463l0 1 15 30 24-16-1-10-3-3zM5633 2833l0 4 5 3 27-9 1-2-7-10-17 0zM5960 4034l3 26 24 7 29-42-28-10-27 16zM5373 2175l6-3 4-26-23-6-7 6zM4435 2203l9 2 25-33-2-6-25-11-25 24 0 7zM4023 2954l13-17-6-18-2-1-32 5 4 30 19 2zM4097 2916l-18 5-7 20 1 2 17 8 2 0 12-13zM4511 1435l-21 15 19 39 11-6 13-28-11-17zM5212 2515l-1-5-8-8-16 3 7 31 2 0 2 0 7-7zM5078 1612l-27 25 14 21 16-4 8-22-2-20zM4789 2670l-16 7-2 30 17 0 19-23zM5660 3084l6-1 10-25-5-1-21 13 3 11zM5099 3915l38 11 2-1 11-23 0-2-34-20zM5855 1527l-1-46-27 0-16 45 0 1 4 4zM3971 2028l32-2 13-23 3-13-44-7-35 24zM5593 3549l-3 10 12 12 6-1 5-20zM4571 3986l15 0 0-21-15 3zM5023 3472l1 6 20 15 1 0-2-26zM4885 3543l11 3 12-19-21 1zM5638 2625l-6 0-12 13-5 19 14 8 23-17zM4735 2835l4-7-10-17-8-1-13 5-2 1 9 25 2 1zM5613 2849l-2 18 11 10 2 0 16-14 4-9-6-14-5-3zM5658 2710l20 8 3-4 0-19-20-12-12 6zM6049 2612l-20 13 1 14 4 4 29-1 5-18zM4270 2807l-8 5-15 32 19 10 3-1 14-24zM4757 3542l-2 26 18 11 10-2-11-43zM4623 3076l7 12 20 5 10-14-2-15zM4626 2524l9-15-23-24-9 2-9 17 12 23 8 4 1 0zM4376 3973l26 11 5-26 0-1-25 2zM4812 2846l-5-22-8-4-17 13 3 21 1 1zM6544 2364l2-7-6-7-25-3 0 27 4 2zM6104 1068l-11 23 6 17 23 16 29 1 23-36-39-24zM4486 2932l23-15-5-7-23 4-7 5 9 13zM5596 2922l6-21-33-8-2 2 23 30zM5319 2196l-24 18 4 21 4 5 28-8 6-24zM4248 3076l-17-11-5 1-6 9 14 18 2 0 14-1zM6070 2450l1 8 10 12 6 0 4-2 3-4-3-24-2-1-9 0-9 10zM4823 3772l-7 3-6 27 12 17 25-18-22-28zM6144 3682l2-1-9-18-9-1-6 9 0 13zM5043 2365l17 15 16-14-13-10zM6497 1897l-3 2-6 16 1 3 16 8 7-19-13-9zM6316 1002l9 38 6 5 28-4-7-46zM5706 3985l20 3 6-5-2-20-28 10zM4792 1201l-6 9 7 25 29-17-5-12zM5751 3903l11-1 7-6-15-29-12 5-8 9zM4827 3843l-1 25 20 20 26-8 7-7-7-30-2-1zM4934 2307l-12-8-7 1-10 16 2 3 17 1zM5927 3183l18-24-8-7-28 1-11 12 23 17zM4338 2437l21 8 28-19-40-34-11 2-5 24zM4866 2781l-9 27 2 4 26-6-4-19zM4379 1974l15 8 32-26-7-9-31 5-10 15zM4682 1403l2 5 20 2 1-17-5-5-6 0zM5117 3543l11 23 22-7-2-20-11-4zM4581 2301l-2 12 18 7 14-5-5-26zM4485 3315l-41-13-6 7 3 19 26 18 1 0 19-12 1-9zM4948 640l11-7-11-23-40 6-7 11 5 8zM5652 3200l8-16-17-11-11 9-1 6zM5930 3949l2 9 45 5-16-26-28 4zM5229 3584l-9-3-8 15 22 0 0-1zM5198 3798l29 17 4-5-15-32-17 6zM4862 724l28 6 1-37-26-13-16 8 1 4-3 8zM6141 1226l35-1 6-37-1-1-47 2-2 1zM4296 3081l23 30 1 0 6-6 6-18-17-13-18 5zM5431 3221l14 1 14-8-3-19-16-5zM5808 3970l24 8-3-25-22 13 0 2zM4915 2083l5 1 15-2 11-42-25-12-10 5-14 16zM5398 4121l-6 10 2 9 17 15 16-12zM4245 2180l-8 41 29-7-1-26zM4705 1790l-4-2-37 10 10 34 11 12 25-1 12-15 1-7zM5049 1361l-1-25-47-18-9 23 1 9 33 29zM4440 1165l-3-9-13-9-21 8 0 18 19 8zM4597 2192l-17 43 19 10 13-5 6-27zM4525 3389l0 2 19 25 20-39-12-20zM5246 4184l5-22-20-12-14 9-8 19 20 17zM5889 2528l11 11 22-2 0-17-21-6zM5437 2428l3 14 3 3 17-1 5-11-14-12zM6028 3700l-14 18 3 10 21 11 15-13-22-25zM6338 1876l5 14 26-10-22-18-6 4zM5763 2767l-3 8 7 11 50-1 1-11-3-3-33-12-7 1zM5489 3102l4 6 19 4 5-14-4-13-1-1-3 0-21 14zM4808 1045l28-2-14-33-22 7-8 5zM4773 993l1 0-1-9-6 1zM4636 3233l-1 5 2 3 23 1 3-20-10-5-6 3zM5602 3054l-24-18-8 3 4 38 31-13zM4541 3733l9-7 3-7-12-17-14 7-1 6zM5065 829l-1 20 15 9 15-10 4-17-3-3zM5563 3144l-17 1-1 8 9 9 12-11zM5420 3921l18 5 37-25-1-1-6-4-32-8-17 5zM4646 2830l-16 5 14 11 15-8zM5280 2998l-8-19-19 7-5 19 15 17 1 0 8-7zM5187 2280l6 9 16 2 11-23-9-19-2-1-5 3zM5223 4082l18 34 5 0 12-14 0-22zM4433 2013l3 6 12 9 27-14 0-14-20-17zM5558 1979l-32 3-7 18 2 5 36 6 5-8zM4597 2192l-2-4-32 2-16 18 7 27 6 3 20-3zM6070 2670l10 9 14 0 13-16-6-13-19 3-9 7zM5884 2879l-28 30 32 18 1-1 10-32-10-16zM4999 3081l10 29 4 0 3-1 12-11 1-24-12-4-6 0-7 5zM5216 3574l-18 0-2 3 8 23 8-4 8-15zM4795 2092l-3 4-1 45 41-15 2-7 0-4-10-27-7-6zM4478 3895l-6 23 1 2 7 1 26-14-10-15-17 2zM5075 715l13-32-3-7-24 5-5 29 4 4 8 5zM5543 3394l40 33 4-4 6-11 0-30-34-3-16 13zM5394 3597l-4 32 11 11 28-16-9-20-12-12zM4557 2562l5 17 22 3 3-4 1-13-9-29-11-3-4 4zM4747 3323l-24 31 7 6 24-15 1-9zM5316 3705l2-15-7-6-13 16zM4654 1292l4-15-4-12-26-7 14 37 11-2zM6415 1734l-31-11-7 21 28 13zM4410 3993l5 32 12 2 15-22-10-19zM5310 3329l-5 17 2 3 24-2 5-7 0-1-16-13zM5789 3270l-3-17-11-9-26 10 1 15 3 3 27 2zM4400 1229l2-11-20-29-3 0-13 2-17 20-1 18zM5815 3264l-2 13 14 7 4-1 6-29-7-3zM5134 3508l-9-4-22 18 4 19 10 2 20-8zM4765 3852l3-2 7-8-2-19-12-15-29-2 2 6zM5231 1316l7-14 0-2-35-15-3 28 3 3zM4868 2966l12-14-15-17-10 0-8 7-4 8 9 12zM5810 3813l-26-13-5 1-8 13 0 4 27 12zM4592 2476l-1-18-21-8-10 21 2 6 7 7zM4385 3757l-7-2-11 28-3 10 17 5 3-1 2-1 6-15zM5138 2883l25 4 15-15 0-7-37-21-7 27zM4890 3112l23 2 4-18-8-18-1-1-24 15 2 16zM5178 3876l16 9 10-4-2-40-17-3-14 5zM5863 850l-11 14-1 10 26 8 3-1 7-25zM5174 3508l11 10 17-17-1-1-25 5zM4967 3712l6-1 17-30-8-8-33 14-1 9 8 11zM6545 2141l9-11-13-14-11 0-8 26zM4494 2485l-5 3-8 19 2 7 21 4 6-2zM4066 3185l-2 8 18 19 28 3 14-10-5-16-9-8zM5830 2724l7 8 1 0 12-9 5-20-6-13-22 16zM6140 4093l8-3 0-27-3-1-11 2 0 21 3 6zM4914 3794l14-13-5-17-29-23-11 28 8 24 10 4zM5507 2942l2-3-7-36-16 7-11 17 6 10 24 6zM4497 2971l-12-2-10 6 3 8 25 21 6-7-1-13zM5818 3595l-17-24-20-4-1 2 1 24 27 13 5-2zM4528 2781l-2-20-14-5-13 15 18 19 8-2zM5590 2925l-23-30-2 1-15 20-1 14 22 15 6-2 12-11zM5799 1348l-51 35 22 56 72-44-1-3-30-42zM4333 2479l-9-27-24 14 8 32 1 1 16-10zM5874 3497l-22 13-4 12 27 3 10-18zM4830 1119l24-15-5-13-29 2-4 11zM5045 3493l-1 0 1 6 28 8 1-2-9-33zM5174 1991l-5-6-33-11-22 20 6 19 46 12zM5753 2638l-4-10-11-7-16 8 4 18 24 1zM4321 2885l-11 10 0 1 5 25 11 9 17-34zM6490 2330l6-16-27-9-10 5 23 23zM6428 1215l1-1-23-21-75-16-13 20 0 8 35 33zM4494 3966l-2 16 23 5 13-8-1-17-3-3-21-4-5 4zM5486 1104l4 43 10 6 28-18-3-23-30-16zM4197 3227l16 9 22-4-1-23-37 4-2 11zM4827 3503l-1-7-11-16-12 3-4 6 7 20zM4988 680l10 24 17 0-5-35-10 1zM5725 3209l-3 8 14 27 1 1 17-37-2 0-24 0zM4882 3494l0 2 6 11 27 13 6-29-15-13zM5087 1612l2 20 28 16 15-11-2-7zM5145 2743l7-20-25-21-3-1-10 7 14 35zM5457 4122l-16-4-8 8 1 7 19-1zM5470 1823l-2 19 16 6 4-3 1-23zM5705 3899l10 0 12-17-17-17-15 19zM5727 1673l-4-4-32 21 0 12 32 15 8-22zM4765 2535l29 11 19-7 3-2-34-33-6 1-15 20zM5696 4128l21-3 5-1-2-11-21-4zM5162 2558l-10 1 10 26 15-1 0-10zM4945 2220l-11-11-8-2-13 32 21 8 2-1zM5199 2477l4-8-4-8-16 9 2 11zM5874 2571l-19 29 22 19 6-41zM6471 1994l24 11 10-20-12-7-22 15zM5659 1684l-28-22-11 22 0 1 6 7 20-1zM6378 2254l12 4 11-17-16-15-11 4zM5167 3387l-14-5-7 6-4 10 1 1 27 7 5-5zM4578 1399l-8-14-26-1-9 12 10 18 33-5zM5420 2427l-6 19 5 6 21-10-3-14-9-4zM4504 3348l-1 28 22 13 27-32-1-11zM5315 3292l-21-5-18 13 15 19 9 0 19-16zM5600 2533l-23-4-7 8 21 21zM4871 2274l0-16-3-5-18-9-5 28 8 9zM5770 2530l-10-15-1 0-18 29 1 4 13 10 3 0zM4546 2035l8 0 5-11-30-35-12 6-7 24zM4743 2770l8-5-4-8-10-9-24 3-2 6 3 5 15 7zM5720 4059l-8 8-4 18 18 11 15-2 6-28-5-8zM4726 3317l-19 28 3 6 13 3 24-31zM6270 1917l-5 11 39 7 1-24-13-8-10 3zM4947 1002l-17 10-3 10 19 30 6 2 13-20-3-24zM5803 3341l3-1 3-9-22-29-16 5-4 14zM5646 1691l-20 1 0 14 25 17zM4619 1535l-17-63-31 2-11 18 6 41 9 10 42-6zM4908 4028l10 11 9-1-5-20zM5740 1963l-7-12-62-42-10 13 11 53 39 6 28-16zM4984 2780l10-12-9-18-19-1-6 7-3 30 1 1zM5105 3446l36-8-5-12-6-2-30 13zM6312 998l-1-6-23-40-31 11-2 53zM4407 3957l-7-15-28-3 10 20zM5552 1321l20-21-9-7-7-1-14 25zM4754 1083l20-11 7-11 0-1-5-27-26 17-14 22zM4767 985l-5 0 1 9 6-1zM4751 1425l-18 7-3 20 26 16 10-19-3-21zM5166 2258l-1 14 22 8 17-29zM4971 1943l-23-23-24 1-13 26 50 16 2-3zM5788 3944l-2-6-13-11-3 0-11 8-1 3 5 23 3 3 4-1zM4941 2201l3-18-7-8-7 1-8 4-9 14 13 13 8 2zM4370 2895l-5-9-22 10-17 34 18 2 26-36zM4708 1362l17 2 9-20-13-10-11-1zM5460 3837l12-11-4-20-6-5-20 18zM4113 2969l7 14 19-6 7-10-1-2-7-7-13-2-4 1zM6132 3389l-7-6-36 7-3 3-2 16 7 20 15 4 37-12zM5601 2600l18-23-12-9-3 0-19 22 8 12zM4240 2918l9-19-12-10-19 16-1 11zM5574 2066l-4 44 50 11 0-1 1-25-34-26z"/>
<path fill="#4265a1" d="M4621 1862l-4-34-18-6-14 18 0 4 20 25zM6434 2302l-24 7 29 21 2-1 7-14zM5522 1923l-6 3 2 17 17 1-1-17zM5887 2160l24-21-24-23-18 11-9 22zM6092 4075l1-15-2-2-19 3-10 11 3 5 17 7 1-1zM4446 2829l-10 18 2 12 5 3 9 1 9-19-9-14zM4783 2431l7 25 19 3 8-22-4-5-30-3zM5081 3439l-29-5 14 31zM5796 4034l5-33-8-4-11 3 6 36 0 1zM5474 1969l-19 7 8 21 16 7 14-16 0-3zM4005 2756l-14-5-8 16-7 8 18 9 20-20zM5265 3887l7-6 3-14-5-25-22 2-12 13-2 25 30 5zM4572 2121l-13-48-41 6-2 5 1 26 43 18 11-6zM5716 2528l9 10 8 0 0-17-7-4-7 2-3 2zM4815 2929l-23-9-9 15 14 13 17-13zM5163 800l14-6-25-32-13 23zM5320 1374l27 2 9-22-10-5-22 2-3 4zM5057 652l1 2 27 4 4-28-7-6-24-1-1 1zM5415 2382l-28-14-20 20 13 19 12 5 23-23zM5488 3098l21-14-19-9-4 22zM5920 1751l-29-4-9 3-1 19 14 19 46 0 1-24zM4220 3075l6-9-12-13-22 2-2 2 15 24zM6221 3499l-6-26-2 0-7 2 0 25 6 3zM4356 3310l8-2 13-18-21-30-8-3-17 12-3 20zM5827 3432l9-1 11-8-3-20-1-1-20 9-1 3zM4219 3139l9 34 8 4 14-2 15-18-3-16-24-11-16 3zM4883 3136l17 10 16-16 3-7-6-9-23-2zM6227 3474l6-16-13-17-4 1-3 31 2 0zM4973 2953l-1-8-3-2-39-2-1 2 1 6 38 12zM5961 3876l30 8 10-10-20-18-20 18zM4759 2888l19-5 1-1-28-27-3 1-10 9zM5320 2268l24-2 7-17-20-17-28 8 1 3zM5581 1119l-20 29 1 3 13 19 27-1 6-20-19-34zM5104 1023l-15-4-17 22 2 11 14 10 8-7 10-29zM4535 1746l3-17-16-22-30 20 1 14 28 11zM4916 1507l14 6 14-41-8-9-17-5-11 10 0 26zM5294 892l27 28 6 0 3-9-21-27zM4911 1947l-12 1-27 47 52-1zM5260 2263l20 9 24-29-1-3-4-5-39 14-1 2zM5243 2817l11 11 13-7 4-18-16-18-15 9zM5112 3381l15-7 8-23-15-10-16 5-2 29zM6261 3671l-11 3 11 26 6-17 6-5zM5382 1457l28 25 1-1 32-22 1-19-46-12-2 1zM5507 1876l-8 2-16 25 3 2 20 2 12-7 1-13zM6677 2305l6-4 20-41-29-2-15 10 0 29zM4975 3386l-16 0-9 13 21 30 3 0 15-12 0-19zM4308 2498l-8-32-13-9-26 5-5 28 18 13zM5223 3563l0-6-4-5-21 15 0 7 18 0zM5087 2570l-6 20 12 27 4 0 18-36zM5660 1738l20 62 26-54-41-12-4 2zM4642 3461l22 23 19-18-17-30-19 1zM5114 691l-26-8-13 32 8 1 30-17zM5852 1728l-34 11 22 70 41-40 1-19zM6412 1113l-4-13-20-26-37 23-2 41 35 1zM5793 2858l-11-17-25 2 17 28 18-5zM4501 1395l-36 32 9 19 16 4 21-15-9-40zM5449 3949l-16 16 27 29 8-4 10-26-1-11zM5330 2929l15 9 14-20-28-4-3 8zM4609 4018l-10-5-9 18 0 2 17 17zM5340 2701l-17 16-1 2 29 12 10-21-3-9zM5838 3836l6-12-4-12-26 0-1 1 10 33zM5698 4004l8 6 21-2-1-20-20-3zM5599 2959l17-1 3-13-16-3-6 13 1 2zM4095 2050l-20-5-5 10 12 23 18-10zM5860 4055l29-2-9-25-13-2zM5049 796l0-2-15-28 0 1-21 28 3 14zM5076 2261l33-21 1-3-5-8-19-16-43 15-5 15 3 9zM5166 948l2-1 16-22-5-13-30-17-1 0-19 17 6 32zM5851 2834l-26 0-3 11 22 24 8-3 1-28zM5155 2483l-4-2-13 4-6 17 13 19 12-26zM4619 3915l25 7 12-22-21-16-18 29zM5990 2394l11-13-11-11-12 2 1 16zM5204 2634l-2 4 13 32 8 1 1-1 1-34zM5332 3082l6-19 0-1-30-20-6 48 1 0 27-6zM6339 2069l19 7 18-11 7-11 2-28-14-13-42 30zM5894 2582l-11-4-6 41 2 3 24-24zM4575 1543l-18 38 2 8 48 28 19-7 5-19-14-54zM5451 1518l-1 2-2 10 14 29 10 3 30-13 0-6-20-25zM5107 726l7 15 14 1 2-27-14-7zM5677 3452l21 3 2-1 1-22-2-2-10 1zM5019 2405l2 8 19 5 1-29-4-2zM5008 4004l-11-39-18 0-4 21 1 1zM6178 3379l4-17-18 2-1 19 1 1zM5757 3207l20 16 20-8-8-26-27 5zM5011 636l5 2 10-16-2-8-7-11-15-5-5 17zM4574 3414l-4-34-6-3-20 39 2 9 5 2zM4916 3009l-19 6-3 27 0 2 33 0 4-27-1-2zM5304 2296l16-28-16-25-24 29 16 27 2 1zM6552 2308l7-34-24-1-7 14 2 13zM6023 2356l35 6 3-19-17-10-3 1-18 13zM5003 3329l-47 10 0 1 37 21 8 0 10-6 7-7-1-5zM5839 933l0 1 23 27 1 0 16-22-3-27-3-3-32 3zM4580 3715l11-5-3-12-15 1-3 4zM5467 3017l7-34-26 11 6 21zM5921 3357l10-23-1-4 0-1-19 0-5 9zM4635 3238l1-5-17-28-13 1-6 15 13 17zM5650 3070l21-13-17-14-4 0-10 7-1 14zM6638 2260l6-31-21-6-19 11-2 4 7 27zM5232 3764l14 17 37 1 2-28-26-19-22 11-5 13zM4455 1698l37 29 30-20 1-3-5-8-34-19-23 9zM5294 1036l5-2 0-19-18-17-6 4-6 19zM4063 2024l8-37-38 5-14-2-3 13 31 29zM4724 2690l14 9 4-2 3-22-17-5-4 19zM4768 2932l-12 16 1 15 8 7 17-2 14-9 1-11-14-13zM6413 1862l12 19 30-5 5-19-2-11-10-6-30 13zM6624 2179l6-32-24 15 12 20zM4869 1762l24-13-7-27-19 4-7 15zM5882 3154l-9-21-2 0-22 5-11 20 13 12zM6196 2431l1-4-11-23-6-2-7 2-11 21 17 9zM6438 1981l8 11 19-5 0-21-3-5-6 0zM6429 1423l4-6 7-15-3-1-30 13zM6104 2524l7-11-15-11-7 3 2 18zM4793 3609l29 0 3-5-4-21-29 1zM4653 3272l-11 3-3 15 20 24 20-22zM6131 2366l0-7-22-14-1 0-6 14 9 16zM5345 1648l7 41 27-14-12-30zM6560 2414l-5-23-5-4-23 5-7 17 38 8 1 1zM5869 2788l-20 9 6 29 33-10 4-8 8-8zM5186 3757l3-4 2-10-16-18-17 6 0 16zM5273 4101l16 14 5 0 8-22-7-17-18 0zM4498 4059l-3-14-13-1-17 18 11 11 10-1zM5252 3140l7 28 33-2 3-9-10-25-1 0zM5977 2454l-35-18-15 30 49 17 5-2zM4802 2903l5 1 11-12-2-17-30-2-7 9-1 1 2 6zM4150 3088l-5-11-12-8-14 1-4 10 9 22 21 3zM3970 2866l0 2 33 20 8-4-1-31-6-6-10 2zM5391 2306l9-9-13-19-27 11 2 5zM5807 3663l7-1 5-18-23-7-5 4-6 12zM5375 3051l8-10-23-19 2 25zM5002 3765l1-3-23-16-5 1-13 16 6 14 17 3zM4996 3249l2-12-4-7-43-9-8 14 25 34zM4373 2173l17-12-1-17-16-8-8 2-19 24 1 3 6 4zM5813 2505l0-2-43-19-8 13-2 18 10 15 21 5zM4760 1900l2-22-15-10-22 5-8 23 25 18zM5377 1532l2 0 18-11 2-8-1-11-29-8-12 15zM4247 2609l10 3 19-24-1-8-34-13-2 3zM4704 1410l11 9 1 0 13-20-9-10-15 4zM5300 3581l10-7-14-27-29 19 13 13zM4545 2429l13-34-9-14-25-4-23 8-4 18 41 28zM5536 3184l-17-18-7 4-6 17 27 4 3-1zM4446 2799l-6 0-8 11 5 11 6 3 12-17zM5084 1933l15-5 7-57-14-14-10 3-31 29zM5692 3956l8-10-13-24-22 14zM5036 2383l-31 1-1 2 15 19 18-18zM4753 3377l14 18 22-22-9-12-19 0zM6422 2230l25-5 4-6-6-17-18 4-8 12zM4596 3714l17 1 8-3-28-21-5 7 3 12zM5383 884l10-7-2-26-32-10-5 5 18 33zM5076 3085l-1-7-14-21-17 7-3 6 12 17zM6044 3336l5 8 29 1 11-17-16-18-22-1-7 6zM5365 911l-11-3-12 17 17 9 9-6zM6086 3291l5-1 10-15-31-15-4 22 1 2zM4155 3000l-16-23-19 6-4 15 38 7zM5711 2940l20-5-35-36-2 0-1 5 4 22zM4985 2338l0 1 8 8 35-18-13-22-24-2zM6226 1756l-7 6 17 35 12-1 29-37-4-17zM5420 2869l-19-1 11 34 19-20zM5378 3884l-40-29-16 15 0 13 13 11 42-8zM4896 1023l-1 0-30-2-16 32 8 10 4 0 35-17zM4085 2254l-1 0-31 14 10 44 20 3 7-7 13-34zM4458 3875l21-6 6-8-9-13-22 5-2 9zM4645 3603l-6 21 5 6 16 7 15-15 0-5zM5256 1222l17 24 25-3 7-7 3-35-46-18zM5383 1024l12-25-4-7-20-12-11 12-4 29zM4859 902l-11-25-25 5 13 21 22-1zM5602 2172l-32-11-25 14 10 25 38 6 11-17 0-13zM5380 3713l3 12 30-2 0-1-19-19zM5892 2995l23 32 12-41-9-3zM4368 2872l42 6 4-13-14-18-28 3zM4909 2774l10 17 4 1 20-8-10-30-10-8-1 0zM5410 3548l36 4 6-12-24-12zM4455 2807l-12 17 3 5 6 1 19-10 1-1-7-11zM4375 1392l-13 10 6 38 50-16 3-6-11-19zM4855 1529l-11 37 2 3 17 1 1-1 6-38zM5304 3362l27 14 3-1-3-28-24 2zM5684 2818l-18 11-1 2 4 8 22 7 11-17-6-8zM4694 3248l-18-31-13 5-3 20 9 13 13 0zM4606 2527l-27 9 9 29 26-34zM4690 3292l4 25 30-2-3-13-23-12zM5429 1910l7-17-30-8-1 16 13 12zM5574 3077l-4-38-3-1-31 18 31 31zM5882 2226l6 11 18-7-9-17zM5082 1860l10-3 1-12-28-22-19 11-3 5 1 7zM5939 2213l4 13 22 22 6 1 32-27-27-31-29-2zM5422 3099l-13-1-4 2-4 5 2 11 24-4zM4702 4017l-11 24 6 22 19-12 11-15-4-18zM5621 2920l1-11-11-11-3 2 1 21zM6515 2310l11 17 17-1-24-17zM5265 3058l25-14-19-12zM5335 3894l3 28 39-14 0-22zM4994 2730l-9 20 9 18 32 6 3-13-12-22-20-8zM6083 4083l-1 1-12 23 18-2 2-2 1-6zM4223 2131l1 10 44-18-9-8-21-3zM5860 3433l-5-8-8-2-11 8 14 16 7-2zM5284 1985l7 29 18 13 31-21-1-12-43-19zM5804 2115l-3-18-27-9-12 4 24 33zM6270 1917l12-11-8-18-16 3zM5832 2532l-19-27-22 30 2 6 7 8 17-3zM5105 4009l3-12-18-6-10 4 8 34zM5207 3367l2 9 14 13 17-4-5-25-17-8zM4919 1207l11 46 2 0 9-3 8-25-20-22zM6167 4090l0-23-7-8-12 4 0 27zM5516 3895l21 16 17-6-10-36-1-2-19 7zM4369 2832l0 12 3 6 28-3 11-15-6-24-7-1zM5825 3498l10 23 10 3 3-2 4-12-4-23-9-6zM4585 3308l-10 33 22 3 15-26zM5733 2110l-6 1-22 40 21 23 23 0 13-16zM5400 3045l7-3-7-28-10 5-2 21zM4371 2796l-18 11 16 25 29-25-10-11zM5219 3552l4 5 30-6-13-20-18 0-8 6zM5740 4036l-17-7-14 5-1 1 12 24 22-1 3-8 0-3zM5011 1029l7 25 6 0 31-25-3-15-21-12zM4836 3509l3 9 23 0 6-16-12-7zM6104 2540l4-4-4-12-13-1-1 1zM4989 1971l11-17-12-18-17 7-8 17zM4507 2240l9 17 4 3 34-25-7-27-35-8-3 1 0 1zM5425 2614l7-1 13-9-3-27-20-11-11 16 6 27zM4769 4029l-4-3-23 22 0 4 22 11 13-11zM5140 3968l11-6-14-19-4 23zM6476 2225l6 7 4 1 27-24-7-11-29 5-2 21zM4748 3433l11 35 19-8 15-17-2-25-23-6-11 7-8 10zM5385 3867l-3 14 35 10 5-29-5-11zM4053 2730l1 9 15 28 3 1 21-25-28-23-5 1zM5286 1335l35 20 3-4 1-13-17-24-10-6zM4588 1973l-5 25 28-11-10-19zM4514 4038l9 4 5 0-4-33-6-1-12 5zM5673 2654l7-2 5-18-24-32-23 23 14 23zM5852 3510l22-13-2-9-7-4-17 3zM5794 944l-11 1-12 21 17 10 17-4 2-19zM6041 3313l3 2 7-6 1-4-7-21-11-6-7 0zM5049 1176l-26-3-11 14 10 9 32-2 1-10zM5471 3325l12-6 3-3 0-3-4-7-17-5-14 19 3 3zM5546 1099l-21 13 3 23 18 2 5-30zM6197 3436l19 6 4-1 6-5 2-21-22-8-10 6zM5189 2851l-11 14 0 7 30 26 17-10 5-7-15-35zM5674 3881l-2 1-4 18 20 14 7-3 10-12-10-15zM5384 2068l5-2 16-32-15-12-12 1-9 6zM5030 915l-4-17-7-7-27 10 1 25zM6511 1983l1 0 15-12-6-16-16 0zM5647 2460l14-22 1-11-34-8 9 44 1 0zM5767 2886l-34-11-7 15 15 25 32-7 0-1zM5223 3664l5 2 7-4 7-25-1-5-24 1-8 15zM5720 3615l-4-2-14 16-2 14 17 10 3 1 13-18zM5559 3807l2 0 22-14-1-6-33-25-6 2-3 6 0 24zM4384 3214l-2 20 32-6-9-30zM4743 2801l19 1 0-1-8-35-3-1-8 5-7 17zM5776 3160l1-2-8-21-21 0-5 11 3 8 20 10zM6206 3407l22 8 2-2-1-16-17-4zM5934 3076l-4 17 4 31 3 1 3 0 20-12-18-45zM4940 2548l-41-13-5 4-9 20 41 16 16-4zM4009 2661l-7-15-19 0-7 5 16 16 7 21zM5793 2438l-37-5-7 10 22 29 23-33zM5074 3324l17-18-10-37-10-6-4 1-9 15 9 39zM4772 3534l11 43 2 1 17-26-17-25-7 0zM4954 3045l5-10-28-18-4 27 2 4 14 3zM4850 2884l-17 17 3 11 12 2 10-6-2-21zM4824 3433l23 1 5-8-11-24-29 1-6 8zM6507 2132l-20 11-4 7 22 20 2 1 2-1 9-14 3-13zM4805 3881l21-13 1-25-6-9-46 8-7 8zM5054 1194l5 11 27-2 5-19-6-10-8 0-22 10zM6082 2653l0-19-13-10-1 0-5 18 10 18zM4499 3658l-10 24 2 11 6 2 18-2 15-25-1-3-4-5zM5321 920l-26 13 4 20 3 4 29-17 0-14-4-6zM5134 3052l40 5 10-8-5-16-19-13-16 4-14 24zM4737 2748l10 9 9-29-20 2zM4621 3120l-14-1-11 10-9 40 1 0 31-7 11-36zM6135 1065l39 24 3-1-2-60-22 3zM5969 922l7 6 4 2 28-11 0-72-8-3-5 2-25 36zM6342 1314l3-30-68-17-3 3-2 21 52 45zM4319 2852l-14-25-22 2-14 24 25 11 25-11zM6147 2553l-17-8-9 15 16 6zM5116 2028l4-15-6-19-40 0 17 41 12 1zM4095 2050l3-5-8-15-16 4 1 11zM5204 1626l-3 1-12 53 13 14 22 1 17-51-9-12zM5139 1272l-6-1-27 13 37 29 16-11 1-6zM5233 2049l-1-62-58 4-8 34 1 10zM4636 2860l-1 0-23 6 4 9 16 10 5 0 2-1zM5764 3971l2-7-3-3-28-3-4 2-1 3 2 20 17 4zM5551 3111l-35 15 1 11 4 4 19-1 12-22zM4850 2882l-17-14-11 1-6 6 2 17 15 9 17-17zM4473 2271l-15 3-13 19 2 2 33 6 3-2zM5987 1051l15 1 23-42-17-26-38 16 0 39zM5808 3606l-11 13-1 18 23 7 3-1 6-19-15-20zM5520 3445l5 21 19 15 3 0 21-42-34-6zM4964 2088l3-6 1-38-16-5-6 1-11 42 15 7zM5634 3019l5-4 8-21-6-13-21 15 13 23zM4494 2127l23-17-1-26-45 6-3 18zM5066 3704l3-22-14-15-19-3-5 2 1 35 8 10zM5948 2656l-1-3-17-9-9 0-19 11 1 2 26 20 7-5zM6223 3713l5-5 3-8-3-19-10-4-10 8 11 26zM4939 3745l19 18 4 0 13-16-12-12-24 1zM5264 1907l4-44-53-5 10 62 3 2 31-10zM4866 2606l15 12 1 0 23-15-21-43-13 5zM4906 1637l-37 13-2 11 15 18 39-7 2-2zM5654 1018l-17-35-36-2-22 38 1 1 52 18zM4466 2792l17-13 0-1-28-4 2 11zM6281 2086l31 30 7-35-33-4zM4235 2842l3-30-7-10-23 17 9 20 13 5zM5485 1222l-12 23 14 7 26-16-11-11zM5833 2336l3-18-28-18-15 34 21 12zM4650 2278l-7-28-17-1-11 36 17 5zM5724 2794l7 19 24 8 11-13 1-22-7-11-16 1-14 9zM6522 2142l8-26-12-8-12 11 1 13 14 11zM4996 781l-5 22 12 8 13-2-3-14zM6345 2455l6 3 16-27-11-31-1 0-24 26zM6347 1859l5-11-16-15-4 1-2 16zM4767 3395l1 17 23 6 15-7 6-8-4-27-19-3zM5811 1350l30 42 38-42-6-32-9-10-29 3zM4726 3974l-6-4-19 7-14 18 1 6 14 16 21 1 10-8zM5951 1268l-38-26-4 73 9 6 35-39zM4478 2699l-1 3 14 32 10-2 7-23zM5853 2915l-6 39 26-8zM5302 4065l5-5-1-16-32-12-7 8zM4406 2992l-11 0-8 15 16 26 0 1 15-10 0-21zM5274 3604l15 13 6 0 7-13-3-5-21-1zM5317 875l-28-46-18 23-3 30 23 11 3-1 15-8zM5586 3726l-9 9 17 22 21-14 1-18zM5248 2701l-22-20-15 31 25 17 3 0 7-11zM4904 795l3 4 30-4 1-25-20-4-12 13zM5893 1953l-5-1-35 35 8 20 26 5 13-19zM4307 2717l-23 22 7 12 2 1 16 5 4-2 9-8 5-24-15-8zM5510 1174l-10-21-10-6-35 10 11 44 11 2 34-23zM5645 2731l6 5 16-1 11-16 0-1-20-8-13 17zM6335 2520l-3-16-13-3-16 13 4 35 6 5zM4148 2578l-13 10 22 25 5 2 19-35-8-4zM6071 757l1 5 31 27 1-3-15-27zM6064 817l30-1 2-7-38-42-8-6zM5135 3351l-8 23 19 14 7-6 1-14-7-16zM4019 2824l-8 9-7 14 6 6 24 5 5-18-9-17zM6554 2186l27 4 0-20-4-3-31 9zM6402 2445l27 5 8-6-27-12zM5275 1490l11 24 17-39-6-1zM5699 2434l-30-18-7 11-1 11 31 15 10-7zM6182 2113l2-21-4-8-36-6-12 31 14 21zM4916 1413l3 28 32-20-8-20-3 0zM5389 4002l18-26-39-20-9 11 0 2 25 35 1 1zM5365 1329l3 12 25 7 0-1 11-23zM4619 3162l30 15 14-13-27-38-6 0zM5361 3668l9-4 5-10-8-22-7-4-20 19 15 21zM5836 3201l17-13-2-18-13-12-5 1-12 29 6 13 2 0zM5352 4028l-3 18 24-3 6-21zM5055 1249l-20 7-10 13 1 13 43 27 12-3 12-22-4-15zM4389 3344l-25-36-8 2-31 35 17 5 34 27zM4689 1177l2 36 8 6 33-10-18-38-3-2-11 14-9-9zM5593 3017l-10 15 22 8 5-6-15-17zM6131 4047l-12-14-1 1-11 25 7 5 13-5zM4502 1295l-5-4-22 16 3 13 27-18zM4456 2113l12-5 3-18-8-26-10-5-33 15-1 2 9 27zM4718 3794l12 7 19-28-8-15-14-5-17 11-4 12zM4205 2720l26 12 0-1-6-32-10-2zM5847 3294l30 6 9-25-27-5-16 16zM6222 3563l30 17 14-21 0-9-25-17-14 6zM5173 2778l2 5 15 0 10-11 4-16-7-7-25 12zM4956 1428l-20 35 8 9 30 2 9-35zM5273 2509l21-26-12-27-4-1-27 31 2 7zM5557 3305l4 0 28-9 5-7-11-11-29 9zM4973 3838l-3 5-6 13 35 21 0-12-4-12zM6099 3742l-14-21-15 2-5 4 1 21 17 9zM5918 3803l6 38 20 7 2 0 23-19-16-26zM5860 4070l-3-5-33 28 2 14 36-13zM5140 2838l-6-39-5-4-2 0-25 21 11 22 9 5 17-1zM5746 3335l4 0 17-14 4-14-5-7-7-5-33 10-3 12zM4724 2519l4 4 16-6 3-28-6-2-14 5-8 18zM4133 2433l-6-19-27 1 0 1 12 28 19-7zM6381 2151l-6-7-28-3-7 3 1 1 16 22 20-7zM5626 3786l-9 15 12 14 22 3 2-7-5-14zM5807 3966l-7-18-12-4-18 19 24 12 13-7zM5007 1976l-2-20-5-2-11 17 5 15zM5800 2549l-7-8-23 24 8 12 7 0 15-26zM5321 1869l10-20-45-47-14 11-2 48zM5506 1954l-15-9-10 3-7 21 19 16 15-25zM4806 3104l18-6-7-28-25 0-7 15zM4069 3252l6 6 15 37 27-29-3-15-9-10-28 4zM5938 3192l24-2-8-30-2-1-7 0-18 24zM5653 1474l-23-11-46 3-13 14 14 11 61-2zM6380 2483l19-6 2-20-3-7-11 0-17 19zM5285 2926l-3-3-11-5-12 3-18 24 0 8 36 14 9-8 3-11zM4153 1971l-3 4-50 8-16 2 11 16 36 12 27-34zM6032 1668l26-17 4-10-5-6-67-24-19 10 0 9 20 34zM5608 3570l-6 1-4 12 14 12 9-21zM5150 3991l8-5-3-23-4-1-11 6 0 21zM4916 3663l-21-2-9 37 31-4 8-19zM5390 1289l-20-11-14 9 0 1 17 20 15 0zM6000 3230l-1 0-13 10 11 22 7-3 10-19zM5518 4136l2-1-6-33-13-2-14 9-2 8 20 18 6 3zM4149 2776l9 7 16-11-6-21-11-4-9 4zM5483 3170l2-11-18-8-16 5 0 6 10 11zM4910 3161l22 0-16-31-16 16 1 7zM5462 836l5-19 0-42-46 17zM5461 753l-2 0 1 3 14 3zM4916 4080l-13-21-8-4-31 19 36 9 11 8zM5088 2995l-6-1-3 6 0 1 19 21 10-9zM4560 2238l9 32 26-3 4-22-19-10zM5216 2845l32-6 6-11-11-11-28-2zM6125 2437l19-17-6-12-11-3-15 16 3 13 5 3zM5018 3795l20-19-2-10-29-6-4 2-1 3 12 30zM6162 2425l11-21-20-14-15 18 6 12 11 6zM5302 962l44 3 5-4-1-5-19-16-29 17zM6409 2384l12-9-4-19-17-10-23 7 0 2 23 30zM5629 3714l-1-11-38-14-6 4 2 33 30-1zM4160 2135l-42 0-17 12 22 28 44 9 7-6zM6365 1387l0-6-35-15-29 36 37 28 17-14zM5881 3938l18-17 0-1-25-16-11 3-5 4-5 10 15 20zM4531 1903l-5 1-6 15 9 32 43-19 1-1zM5402 3228l-6-19-11 1-2 24 16 3zM4915 1449l4 9 17 5 20-35-5-7-32 20zM5866 4000l-9-17-5-2-15 4-2 4 10 30 16-1zM5209 4178l-4 1-12 16 3 12 20 5 12-6 1-11zM6111 2382l9 9 23-14-12-11-20 9-1 6zM5384 4004l-36 3-2 8 6 13 27-6 2-1 4-9 0-7zM4600 2044l7-19-31-15-17 14-5 11 7 18zM4878 2377l-16-11-5 3 4 22zM4261 3213l-26-4-1 0 1 23 5 4 18-5zM5991 2156l-15 35 27 31 27-1 15-46-32-23zM5765 1019l22-7 1-2-7-12-27 1zM5381 2825l7 8 32-21-9-27-23 3zM5726 1025l-19 22 27 19 24-19-1-2-15-18zM5355 2628l16 21 18-21-1-3-20-7zM4000 2953l-4-30-6-4-31-6-21 12 20 17 22 36zM6604 2274l-5 4-3 38 32 7 12-5 8-14zM4199 2813l-14 16 13 18 3 0 16-8-9-20zM5440 3681l-10-1-8 10 2 23 18 1 8-19zM5755 4005l0 8 12 13 1 0 12-26-1 0zM5693 2514l-2-8-9-5-5 5 0 19 7 5zM5836 4025l-19-19-8 25 26-1zM5020 3535l-19 19 0 2 22 15-3-35zM5298 2428l-17-9-20 22 17 14 4 1 9-6 9-19zM4825 1721l-34 5-9 23 11 18 33 3 5-4 1-36zM5682 2463l-31-1 21 24 4 0zM6021 1962l30 44 33-12-12-63-11-3zM5674 3517l12-4-7-29-3-1-18 18 3 12zM5481 2506l8 6 29-11-8-19-21 1zM5258 1340l3-30-23-8-7 14 12 24zM6287 3598l38-20-15-22-24 17zM6039 3470l-2-15-42-13-6 17 30 24zM6070 1759l-30-8-2 22 36 22zM5229 2464l8 4 23-27-11-12-14-3-20 10zM5185 2220l-1-4-13-9-37 28 28 13zM5068 2412l-26 7-2 25 11 8 29-18zM5028 3930l-6 9 17 23 21-5 16-20-45-8zM4738 2865l10-9-13-21-18 7 5 28zM5022 3520l1-17-16 9 11 10zM4364 3164l-24-22-11 28 9 12zM5625 2741l11 26 15-15 0-16-6-5zM4990 2719l29-23 4-7 0-3-3-6-17-9-23 22 5 22zM5223 2984l13-7 4-23-35 6zM6210 2253l-6-2-18 19 4 30 25-5 3-9zM6050 3650l-6-5-26 9 14 23 16-12zM4420 2074l-25-24-6-2-21 38 29 6 22-16zM5499 3398l-13 4 4 30 2 5 3 1 7 0 9-29zM5794 3028l8-5 0-19-26-9-6 11 1 5zM5901 2505l-17-21-6 4 2 40 9 0 12-14z"/>
<path fill="#2f5597" d="M5756 3391l7 8 26-6 3-3-11-29-14-2-14 20zM5281 1117l0 8 25 13 7-3-12-33-1-2zM5180 1033l-8-2-13 29 12 7 23-6zM5638 2935l8-27-24 1-1 11 14 15zM4568 1967l-11 10 19 29 7-8 5-25zM5179 2568l-5-20-1 0-11 10 15 16zM5691 1617l21 0 7-11-1-10-37-14zM5357 1902l-36-19-12 18 13 38 16 1 21-17zM5551 2995l-12-11-17 3 1 11zM4451 1911l-3 27 34-2 2-7zM5977 3963l1 1 15-5 10-23-37-18-5 19zM5783 3889l1-5-10-24-17 2-3 5 15 29 2 0zM5658 3161l-15 11 0 1 17 11 10-2 4-11-2-3zM4632 3729l26-6 2-7-10-12-28 8zM5265 2400l-16 29 11 12 1 0 20-22-1-11-13-9zM5269 4128l1 26 24-7 10-21-10-11-5 0zM6567 2130l3 3 27 5 8-9-26-35zM5308 2534l0 22 30 1 1-30-14-7zM4107 3056l-18-3-21 12 3 17 9 9 12 3 23-14 4-10zM5006 3803l0-1-20-18-6 17 9 10zM4288 2078l1-19-14-13-10-2-2 2-9 27 2 12zM4229 2228l-50-50-5 0-7 6-14 40 27 34 1 0 40-19 8-9zM4109 2939l12 18 4-1 4-16-4-8zM5754 2655l-2 13 21 7 6-7-7-16zM5304 2091l8-33 0-2-53 0-16 8 41 43 10-1zM4187 2579l-6 1-19 35 7 9 5-1 19-8 4-19zM5524 2876l-17 23 43 17 15-20zM5762 3194l27-5 4-7-17-22-10 6-6 16zM5829 3091l-26-4-2 0 18 18zM5225 1148l26 11 9-18-6-12-22-14-10 27zM5011 3070l6 0 5-18-8-8-10 6zM4793 1978l-13-5-3 2-4 45 3 5 42-8 1-3zM6072 894l-1-3-7-3-37 41 8 23 21 8 11-12zM5517 1822l16-21-36-23-9 13 6 25zM5150 1111l-19-27-9 2-26 22 4 13 10 9 30-2zM5654 1473l-1 1-7 15-2 32 38 7 30-28zM4557 3960l-3 2-2 32 5 2 2-1 12-9 0-18zM5930 3329l-2-18-18-6-8 9 9 15zM5589 1617l1 4 22 15 27-27-8-14zM5454 1975l-18 17 10 19 17-14-8-21zM6170 2226l-12 32 28 12 18-19-13-25zM6312 2116l-8 22 36 5-5-32-1 0zM4566 3119l30 10 11-10-8-15-31-4zM5040 2444l-11 1-9 10 12 35 21-21-2-17zM5304 3220l14-2 16-22-39-17-7 15zM5150 3502l4-13-25-14-8 19 4 10 9 4zM6019 2319l-15-9-15 1 9 24 21 8zM5325 3505l-28 24 3 6 18 4 17-22zM4606 3673l-9 1-4 17 28 21 1 0 4-29zM5399 4117l-9-19-13-3-18 17 7 22 26-3 6-10zM4839 3951l2-1-16-35-17 2-9 19-1 2 9 17 5 2zM4587 3173l1-4-1 0-27-21-11 4-18 19 6 13 16 10zM5471 3696l0-1-21 0-8 19 14 15 5 3 8-4zM5367 3382l-10-11-22 4 12 27 9 3zM4206 1652l-13 10 12 18 5 2 5-3zM4973 2576l8-14-7-13-28 25 10 8zM4908 3077l-15-21-33 18 0 3 24 15zM4750 3921l6-19-14-15-20 15 17 22zM4828 1135l4 6 22-1 18-18-1-3-17-15-24 15zM5417 3473l-23 26 15 16 17-2 7-6 3-24zM5247 3397l24 17 11-6-8-20-18-7-10 6zM4701 2435l1 12 25 20 3 0 8-13zM5267 1281l2-30-23 6-13 17 8 18zM4726 3157l-8-15-31 28 15 27 10-6zM4533 2917l-16 6-4 13 3 4 24 8 1-8zM5128 2892l-2 12 11 14 1 0 25-11 0-20-25-4zM5289 2948l-3 11 21 15 26-11-11-16zM5201 3500l1 1 2 0 16-1 5-4 2-5-1-15-27-9-4 5-3 12zM5831 3231l-12 8 11 12 7 3 2-1 5-19zM5693 2904l1-5-6-7-2-1-37 15 22 18zM4583 1998l-7 8 0 4 31 15 9-3 3-28-8-7zM6422 2231l28 19 2-8-5-17-25 5zM5487 2834l18 16 13-25-3-1-5-2-23 5zM4962 3461l20 3 7-5 2-5-17-25-3 0-18 15zM5502 1549l-30 13 12 39 28-11 0-33zM5851 3105l20 28 2 0 17-21-1-3-29-14-7 5zM4239 2570l2-3 3-18-4-4-42 1 0 21 30 6zM5175 4042l25-18-12-21-11 0-16 13zM5760 3182l6-16-20-10-6 8 5 14zM5128 3472l-3-5-18-8-14 15 11 17 17 3 8-19zM4436 2925l-15 7 1 12 7 1 12-17zM4878 1453l-2 3 1 6 5 4 26 2 11-10-4-9-11-7zM4469 3266l-25 25 0 11 41 13 3-13-18-35zM6349 1658l35-13 6-19-1-21-5-6-45 22-7 21zM4176 2862l0-2-36 5-9 8 5 14 20 10 20-16zM6186 3400l-20-2-22 24 2 2 49-12zM5038 3302l8 12 21 4-9-39-5 2zM5503 1490l-21 28 20 25 14-19-2-24zM4222 2656l-2 6 16 18 13-5 3-2-1-4zM5177 794l14-2-3-34-35 2-1 2zM4482 1173l-10-15-25 10 9 21 6 5 20-8 1-4zM5156 2053l11-18-1-10-46-12-4 15 33 27zM6206 3500l0-25-6-2-13 10-2 12 6 9zM5561 3305l29 23-1-32zM5022 1196l5 22 29-3 3-10-5-11zM5255 2853l27 6 7-11 0-10-22-17-13 7-6 11zM4908 2146l13 1 14-23-12-6-24 11zM6075 2335l-14 8-3 19 3 8 14 4 12-12zM5409 3098l13 1 8-11-13-7zM4796 3142l-12 5 0 18 23 1 1-6zM5171 2207l-4-8-22-3-26 39 15 0zM5332 2303l21-21-1-5-8-11-24 2-16 28zM6073 1690l-15-39-26 17 1 47zM4566 2441l-21-12-7 2-7 12 0 15 3 5 26 8 10-21zM6499 1867l-6 11 4 19 2 1 22-22-15-12zM5780 3569l1-2-2-9-35-2-6 7 4 16 2 3zM4792 3649l-10 19 0 2 11 5 17-8-12-21zM6018 3240l12 16 20-6-21-21zM4403 3111l-6 9 3 6 10 5 6-20zM6033 2699l-1-19-1-1-23 2-7 13 0 2 16 13zM4993 926l-1-25-6-6-16 8-3 26 23 3zM6587 2326l9-10 3-38-38-5-2 1-7 34 3 7 30 11zM5392 2412l2 4 26 11 8-3-1-24-12-11zM4617 3302l-24-27-17 17 9 16 27 10 2-1zM5080 2631l1-3-29-26-14 1-2 2-1 6 4 13 11 11zM6219 2531l-3-2-35 30 3 13 29 3 17-28zM4126 2089l-2 8 37 34 16-26-26-29zM4783 1271l-31 6-6 17 8 8 39-5zM4667 1389l15 14 12-15-8-11-3-1-15 8zM4197 3213l-6-24-16-9-33 33 6 14 3 3 44-6zM4508 2709l-7 23 2 2 24 1 13-13 1-12-20-8-8 2zM4399 3261l-17-26-26 25 21 30 15-4zM4928 2611l13 5 17-17-2-17-10-8-1 0zM4871 2258l28-3 7-16-16-14-22 28zM4724 2067l7 10 12 4 8-6-10-30-13-5-6 12zM5165 3088l2 32 17 1 5-12-19-20zM4018 2794l29 8-2-23-16-10zM4458 1628l-9 13 12 45 23-9 12-18-24-35zM4841 2388l3-21-8-10-13-1-7 9-3 17 2 2zM5773 3616l-4 7 3 6 19 12 5-4 1-18zM6530 2300l-2-13-19 1-5 3-2 12 2 5 6 2 5 0 4-1zM4878 857l-5 12 13 16 18-14-5-11-9-7zM5066 3465l-17-2-6 4 2 26 20-21 2-6zM4562 2477l-2-6-26-8-4 32 1 1zM5753 3272l-3-3-28 20 4 16 33-10zM3966 2588l-4 24 19 11 4-1 14-18-9-16zM4826 3496l12-17-9-11-14 12zM4856 1216l30-13 0-4-35-17-9 8zM4984 3112l-12-21-21 11-1 4 12 12 17 1zM4872 3006l10-1 6-20-20-19-6 21zM6134 2275l24-17 12-32-7-7-58 12-3 8 22 37zM5144 1148l-24 16 1 20 2 3 31-9 4-17zM5608 3065l-3-1-31 13-7 10 0 3 7 5 32 13 17-18-3-13zM4661 2635l12 7 9-16-15-9zM5319 3660l-1 4 25 20 2-1 10-15-15-21-10 0zM5812 3237l-6 8 9 19 15-13-11-12zM5621 3265l1-27-11-9-17 4-6 16 14 12zM6681 2324l-13 16 19 38 5-11 9-36zM5738 876l-19 8 11 32 15-30zM5127 2574l-4-24-7-9-28 4-4 19 3 6 28 11 11-1zM4370 2938l-14 1 0 34 2 2 15-1 6-29zM5162 3210l1 24 9-3 0-18zM5373 2999l20-10 7-15-3-11-21-2-19 23zM5999 3198l-10-21-26 13 5 21 5 0 20-8zM4995 849l2 21 21 17 12-30-32-9zM5523 2825l17 10 17-33-2-11-20 0zM5658 2271l25-3 7-7-22-16-25 0zM6132 2109l-27-1-10 15 10 26 35-1 6-18zM4601 2175l54 3-16-36-40 3zM4810 3667l-17 8 6 19 12-2 13-23zM6371 2012l25-29-15-30-7 2-11 32 4 20zM4526 2546l-20 23 1 7 49 8 6-5-5-17zM3966 2443l-8-28-7 0-16 23-1 12 4 2zM4588 2736l17-12-4-14-31 0 1 13 0 1zM5568 2755l2 26 21 3 2-1 10-21-1-14-24-7zM4943 2431l-29-13-11 3-3 4 3 25 43-3 2-6zM5949 1805l-17 23 1 13 20 28 28-21-3-39zM5117 2870l-5 11 16 11 10-9-4-12zM4691 2625l19 10 10-1-2-18-21-7zM5315 2048l31-6 10-13-16-23-31 21zM4822 2056l-4-39-42 8-3 15 2 7 43 15zM4687 3704l-1 0-5-1-21 13-2 7 15 22 5-1zM4895 2842l-34 6 5 9 19 12zM6224 1262l50 8 3-3 6-31-7-5-52-12-4 1-5 9zM4630 1532l14-68-6-5-31 7-5 6 17 63zM4583 1313l-3 4 9 31 24-19zM5408 2666l1-8-8-11-10 6 2 13 3 2zM4072 2980l-8 12 13 24 10 2 15-11-16-23zM4824 3098l16 7 3-1 17-27 0-3-17-23-8-3-18 22zM4096 2666l28-23-3-10-5-6-42 5 10 33zM4950 2089l-15-7-15 2 3 34 12 6 10 0zM4999 1067l-39-7 21 54zM5551 1751l5-14-8-14-24 0-12 26 3 0zM4724 3629l-26 12 3 5 28 13 9-3zM4261 2462l26-5 10-21 0-9-24-22-1 1-21 38zM4745 3698l-26 14 7 13 21-13zM5338 1414l15-13 0-21-6-4-27-2-4 5 21 35zM4485 3861l-6 8 0 25 17-2 12-21-4-6zM5016 4035l11 10 29-6 3-4-5-18-41 2zM5186 859l-17 3-20 33 30 17 21-37zM5525 2864l-19-10-25 16 23 30 3-1 17-23zM5581 3433l-13 6-21 42 13 7 27-16 1-29zM4048 2700l0-4-15-20-33 16 3 10zM5906 2230l6 12 2 2 29-18-4-13-11 1zM5846 3656l-11 24 5 8 29 10 11-11-21-34-4-1zM4457 1131l-31-5-2 21 13 9zM4569 2733l4 11 14 2 1-10-17-12zM4522 2996l25 14 9-25-15-15zM4194 1902l20-2 10-8 8-22-3-14-10-13-19 15-23 19zM6446 1331l-41 46 5 10 27 14 3 1 23-52 1-16zM5308 1314l25-3 13-27-2-1-31-3-16 26 1 2zM4483 2778l5-7-8-17-28 10 0 1 1 7 2 2zM4979 3965l-7-8-2-1-26 28 2 2 29 0zM6292 1837l12-14-13-19-19 12-1 12zM4964 3856l6-13-31-13-4 22 24 9zM4446 3965l-14-12-25 5-5 26 2 5 6 4 22-7zM5554 1536l17 17 7 1 25-24-18-39-14-11-1 0-15 20-4 28zM5481 2460l-14-1-3 3-2 23 22-7zM5186 2816l15-10-11-23-15 0-11 14zM4234 3209l1 0 1-32-8-4-37 16 6 24zM5610 2986l-1-9-5-1-21 7 0 2 15 7 2 0zM6440 1757l43-5 4-7-4-7-41-13-12 12zM4599 2896l-19 18 14 4 13-11 0-4zM6488 2365l0-1-7-30-3 2-9 21zM4987 3290l1 19 11 6 17-16-6-15zM6295 1841l-3-4-21-9-9 12 17 18 12-4 5-8zM4663 1472l5 10 19 6 22-13 0-12-2-2-24-7zM6365 1381l8-5 10-45-41-17-18 22-2 5 8 25zM6231 3722l3 22 16-11 3-9zM5227 1053l16 31 28-23 0-3-16-12zM6502 2303l2-12-12-16-14 8-1 9zM4216 1965l-50 20 15 23 45-2 6-13zM4792 1471l-11-20-15-2-10 19 1 5 16 6zM5117 1648l-3 17 17 22 12 3 10-7-7-41-14-5zM6267 3447l20 8 17-9 4-7-36-10zM4548 3464l6 5 18-9 1-12-13-10-2 4zM5566 2049l8 17 13 3 49-10-1-6-25-24-43 19zM5793 2334l15-34-1-1-27-9-30 10-9 10 3 12 39 18zM4515 1184l-5-4-27 2-1 4 14 22 12 1zM5368 3711l-2-1-17 14 0 11 14 8 8-4zM4471 3146l-17-1-6 7 6 13 13 7 13-7-1-13zM4926 2366l0-5-24-10-1 0-9 24 6 8 11-1zM5113 2838l-27 14 17 10 9-1 10-18zM6291 1476l12 35 14-3 3-28-17-17zM4213 2331l14-36-12-4-42 18 2 11 24 18zM6062 3683l-14-18-16 12-6 19 2 4 3 1 28-8 3-4zM5359 3624l1 4 7 4 23-3 4-32-13-2zM4424 2900l-12-11-4 5-4 26 3 0 12-4 4-4zM4262 3141l3 16 16 3 13-14 3-10-7-7-22 6zM4663 3222l13-5 4-7-31-29-2 3 6 33zM4028 2768l-7-4-7 0-20 20 7 13 7 3 10-6 11-25zM4123 2175l-31 23 16 25 44 1 1 0 14-40zM5216 3013l-36 19-1 1 5 16 1 1 35-18 3-14-1-4zM5638 2625l23-23-28-23-4 0-8 35 0 1 11 10zM5516 2571l-6 7 2 15 20 5 20-15-7-12-17-6zM4944 982l2 2 33-8 0-1-25-25-18 10zM5998 3495l-20-17-9 28 25 10zM5642 1119l2-3-2-37-9-8-41 13 1 24zM5051 1150l-2 26 6 8 22-10-17-24-6-1zM4597 1367l-8-15-21 8 6 17zM4865 3966l0 6 23 13 7-4 0-1-19-20zM4835 3048l8 3 8-6 11-17 4-18-28-3-11 17-2 11zM5368 1341l-3-12-15-3-4 23 10 5 6-2zM6144 2078l-4-5-42 8 7 27 27 1zM4967 2719l18-4-5-22-29-8-9 14 8 15zM5020 3861l14 5 16-20 0-1-31-1zM5200 1358l0 4 38 15 4-36-40 13zM5035 2611l1-6-28-11-10 6-1 1 7 37zM5249 1464l-23-3-8 1-11 22 1 3 33 19 17-28-1-5zM5400 4051l2 1 15-12 3-5-35-23-4 9zM5430 3088l-8 11 5 13 3 2 14-17 0-4-11-6zM5556 2790l-1 1 2 11 22 22 12-11 5-13-5-16-21-3zM5259 3360l-3 21 18 7 9-20-4-4zM4417 2179l-27-18-17 12 3 20 11 10 17-5 13-12zM6465 1966l24 3 7-14-16-13-7-1-2 0-9 20zM5472 3668l-4-2-16 3-12 12 10 14 21 0zM4804 1168l-4-1-14 7 6 27 25 5 4-14zM5951 4001l0 17 10 13 27-16-18-28-3 1zM6030 3563l-15 25 21 7 13-18zM6208 1925l29 2 1-1-8-29-22-5-5 24zM5108 2661l-24-2-9 10-3 14 3 9 27 20 12-4 10-7-1-20-9-17zM5673 3453l4-1 12-21-16-11-3 2-6 17zM5248 1394l-40 2-4 16 10 12 28-7 9-6 3-10 0-3zM5308 4042l19-7 1-15-18-9-4 2zM5926 959l-44 17 6 32 33 0 20-37zM6363 1987l11-32-8-4-23 4-4 8zM6447 2225l5 17 24-17-1-1-24-5zM5817 2546l-17 3 0 2 13 20 10-6zM4769 3903l4 4 29-1-1-17-24-1zM5000 3911l-3 21 12 9 13-2 6-9-14-20zM4690 2764l-8-22-18 1-8 5 0 2 31 18zM4894 735l-12 23 24 21 12-13-15-30zM5763 1660l37 22 9-11-35-27-6 1zM4092 3094l11 19 9 0 12-11-9-22zM4477 2702l-16 12 1 6 25 16 4-2zM4580 1317l3-4-1-27-30 8-7 21 12 17zM5349 3724l17-14-1-5-17-4-7 13zM5530 2706l-19 11 2 14 10 7 7-1 6-19zM4988 1936l9-14-32-23-17 21 23 23zM4764 3972l15 22 11 2 3-2 0-26zM6113 3353l13 9 19-14-25-30-6 2zM5667 3465l9 18 3 1 14-2 5-27-21-3-4 1zM5495 2640l15 10 11-12-16-37-10 3-11 13zM4815 1476l1-18-6-6-11 7-6 12 6 5zM4395 2722l28 19 7-5-5-19-15-13-7 1zM4507 2240l2-38-37 19 3 15 1 1zM4475 1307l-20-15-13 3-2 3-1 6 38 30 1-14zM4744 2517l17 8 15-20-22-19-7 3zM4069 2542l11 49 30 0-13-56zM5740 2613l0-7-21-23-12 12 0 27 15 7 16-8zM5603 3665l-2-12-3-4-18-3-8 10 19 27zM5056 1128l-7-11-14 8 6 23 10 2 3-1zM4749 2310l5-16-22-27-14-2-10 6-2 6 5 34 7 8 19 1zM4840 573l-27-34-25 20 4 8 27 27zM5832 2532l28-4-5-30-36-1-6 6 0 2zM5567 1272l22 1 31-33-51-13-7 3-11 30zM5959 774l35 26 35-55-4-3-58 8-6 0zM4495 4045l4-4-8-22-15 0 6 25zM5200 1313l-24 1-4 29 28 15 2-4 1-38zM4069 2231l15 23 1 0 23-31-16-25-1 0-8 1-13 14zM4625 2837l-14 24 0 4 1 1 23-6zM5540 2447l11 20 16 1 0-24-14-9-12 10zM4291 2751l-29 18 16 22 1-1 14-38zM5810 3813l3 0 1-1 1-12-12-24-2 0-17 24zM5277 4076l18 0 7-11-35-25-8 7 8 26zM4462 1194l-5 23 2 3 27 2 10-14-14-22zM5733 2724l10 11 8 1 6-5 0-22-13-2-12 8zM6131 2515l1-1-6-21-12-7-18 14 0 2 15 11zM5869 1887l-4-4-35 3 7 30 19 4 23-12 1-2zM4818 2892l-11 12 11 22 10-4 8-10-3-11zM5197 1220l23 6 2-2-2-26-22-4-7 18zM5580 3646l18 3 14-27 0-5-19 2-17 12zM4255 3102l10 13 25-1 1-1-4-15-32-1zM5574 3568l3 17 5 4 16-6 4-12-12-12zM4429 2290l-6-7-28 11 12 21 19-9zM4507 3836l-11-25-6 1-13 16 2 7 28 3zM5835 2675l14 13 14-9 16-42-37 3-10 10zM4636 3269l1-28-2-3-22 0-4 26zM5442 3714l-18-1-11 9 0 1 0 11 7 7 4 2 32-14zM5504 3768l21-14-10-12-18 21zM6319 2081l6-1 14-11-10-26-22-8-20 15-1 27zM5383 3725l-3-12-12-2 3 28 7-1zM4494 3148l-15 4 1 13 8 9 14-13 0-4zM4261 2097l26 2 6-7-5-14-32 7-2 4zM5036 3664l19 3 12-17-2-20-18-9zM4574 2960l12-5 0-5-16-19-18 24zM4984 4070l-10-7-9 2-9 14 2 5 18 4zM5076 3937l20 20 14 2 24-24 3-9-38-11-15 6-5 7zM5781 3593l-10 10 2 13 24 3 11-13zM4487 2736l-5 8-2 10 8 17 11 0 13-15-9-22-2-2-10 2zM5330 2905l29-16 2-16-22-10-15 34zM5777 2641l-5 11 7 16 17-3 1-1-9-22zM5608 3486l-21-14-27 16 11 21 7 1zM4308 2134l11 3 2-27-13-15-15-3-6 7-4 18zM4879 3873l6 1 32-15-7-16-28-5-10 5zM4980 1646l-6 6 16 23 24-7 6-17zM4954 2390l-4 1-2 2-5 38 5 10 3-1 29-37 0-2-16-12zM4981 3170l-15 4-5 23 18 1 13-13zM5038 2365l-2 18 1 4 4 2 16 1 3-10-17-15zM6582 2191l-9 14 10 27 19 6 2-4-5-38zM5420 2812l-32 21 1 5 46 9 10-4zM6309 3545l1 11 15 22 2 1 30-14-5-20-17-5-23 3zM6110 2626l0 3 23 24 20-9-2-17-12-14zM4994 942l35 15 13-29-12-13-37 11-3 6zM5555 1500l15-20-31-29-27 3-12 26 3 10 11 10zM4940 2330l6-15-10-8-2 0-10 13 4 13 3 2zM4874 1422l-12-1-2 1-7 24 23 10 2-3 0-19-3-11zM6047 2455l9-6-6-15-7-1-10 14 6 6zM5580 3158l7-24-8-4-15 6-1 8 3 7zM6490 2330l-8 3-1 1 7 30 18-20zM4560 3514l1 11 24 16 6 0 24-23 1-2-46-19zM4367 4007l-17 21 5 15 4 2 15 1 13-17-16-20zM4444 3291l-16-13-35 9 21 22 24 0 6-7zM4931 1514l-1-1-14-6-34 15-2 6 14 19 29-13zM6158 2497l-26 17-1 1 3 8 31 11 14-19-12-20-2 0zM5652 3523l1 18 23-2-2-22-13-4zM3963 2861l-11-28-13-8-14 42 1 4zM4913 1119l-29 12 8 15 18-3 7-21zM6238 2369l17 25 24-7-4-24-14-7zM4894 1547l-1 9 10 12 26-1 1-4-7-29zM4976 2342l-15 10 12 17 20-11 0-11-8-8zM6387 1830l10 33 16-1 5-9-9-18-16-11zM5765 3095l9 13 3-1 16-25-4-6-20 0zM5853 3188l26 7 17-29-14-12-31 16zM5711 3279l11 10 28-20-1-15-12-9-1-1-17 5zM3963 2861l-37 10 7 49 5 5 21-12 11-45 0-2zM4571 3938l13 2 8-10 1-3-28-13-7 0 0 3zM5359 3969l-17 25 6 13 36-3zM4997 615l5-17-4-5-10 0-26 39 22-4zM4484 1929l1-42-16-12-25 3-2 3 1 14 8 16zM4274 1739l18 36 50-26-38-27-16 0zM4979 589l-16-20-18 32 3 8zM5527 2535l-3-2-18 6 10 32 12-6 0-27zM5261 1182l-3-3-30 8-8 11 2 26 34-2 6-39zM4354 2511l-33 15 0 6 22 12 23-12 0-2zM4044 2967l-21-13-4 1 5 24 15 2 6-11zM4797 2948l-1 11 22 14 13-20-17-18zM5110 3160l6-4-1-12-26 0 3 17zM6018 2549l9 25 16 3 9-34-26-14zM5112 3869l4 11 34 20 1-2-6-47-26-1zM4161 2361l-7-22-22-3-12 15 4 24 0 1zM4697 3341l10 4 19-28-2-2-30 2-8 12zM5359 3411l23 8 1-2-8-34-8-1-11 23zM4252 3043l4-30-15-5-11 17 21 18zM5876 1574l62-15 3-16-11-24-65 23 2 17zM6287 2286l-22-3-24 34 0 1 17 12 33-7 1-2zM4849 1448l-6 18 8 13 26-17-1-6-23-10zM5182 3963l14-22-6-14-26 13 2 16 12 7zM5119 3596l-6-9-3 0-23 16 16 31 9-5zM5871 3559l-7 36 13 4 13-45zM5803 1262l77-47-70-74-46 67 16 51zM6039 3372l47 21 3-3-1-31-10-14-29-1zM4774 1072l15 10 16-10-24-11zM5455 1033l5 5 47 14 3-5 0-74-29 7zM4325 2489l-16 10 12 27 33-15 0-3zM4886 3925l-23-5-14 16-5 13 5 1 38-16zM5225 781l25 3 9-19-26-7-10-3zM4527 3709l-12-16-18 2 14 27 15-7zM5444 3354l7-4 3-27-3-3-7-3-11 9-3 11 6 14zM5399 1513l46 4-34-36-1 1-12 20zM5511 1061l37 17 26-9 6-49-1-1-12-3-57 31-3 5zM5188 4003l4-11-18-13-10 7 13 17zM5097 2617l-4 0-12 11-1 3 4 28 24 2 7-38zM4800 3473l3 10 12-3 14-12 0-4-12-11-7 0zM5342 3994l17-25 0-2-42-9-8 7 17 27zM6107 2459l-3-19-13 0 3 24zM4926 3274l-3 31 27 11 13-38zM5713 1543l-23 10-3 13 48 3zM5690 1393l30-25-4-24-22-22-51-3-11 11 7 50zM4933 3403l-15-20-22-5 4 41 31-13zM5523 3330l-17 3-17 25 36 2 6-12zM6321 1883l20 10 2-3-5-14-16 3zM4759 4017l6 9 4 3 23-8-2-25-11-2zM5101 2140l-12-19-29 0-7 16 21 37zM5204 2914l4-16-30-26-15 15 0 20 4 4 23 8zM4926 2361l0 5 24 25 4-1-7-36-15 0zM5879 939l25-7 2-23-30 3zM4502 2841l-3 8 2 6 11 5 33-6-8-13zM4102 3007l-15 11 2 35 18 3 17-27-16-23zM4867 3528l7 17 11-2 2-15-6-4zM6067 1156l-15 1-39 27-2 4 17 42 36 9 41-57zM5007 4009l-39 18 16 19 12 3 20-14-3-16zM4789 1082l-15-10-20 11 4 19 3 3 22 8 10-5 1-20zM5425 3002l12-1 7-8-8-12-13 4zM4711 2757l2-6 0-1-10-15-13-1-8 8 8 22zM5591 3523l-13-13-7-1-11 15 1 19 29-1 3-12z"/>
</g>
<defs><linearGradient id="lg" x1="0" y1="0" x2="0" y2="1"><stop offset="0" stop-color="#2f5597"/><stop offset="1" stop-color="#dae3f3"/></linearGradient></defs>
<rect x="716.6" y="61.8" width="5.2" height="44.1" fill="url(#lg)"/>
<g font-family="Liberation Sans, sans-serif" fill="#595959">
<text x="542.4" y="38.5" font-size="9.6" text-anchor="middle" textLength="56" lengthAdjust="spacingAndGlyphs">Diagrammtitel</text>
<text x="714.3" y="53.7" font-size="5.8" textLength="12.4" lengthAdjust="spacingAndGlyphs">Wert</text>
<text x="724.4" y="63.9" font-size="5.6" textLength="5.6" lengthAdjust="spacingAndGlyphs">10</text>
<text x="724.6" y="108.7" font-size="5.6">1</text>
<text x="673.3" y="423.4" font-size="3.6" textLength="34.4" lengthAdjust="spacingAndGlyphs" fill="#6a6a6a">Unterstützt von Bing</text>
<text x="643.8" y="428.4" font-size="3.6" textLength="63.9" lengthAdjust="spacingAndGlyphs" fill="#6a6a6a">© GeoNames, HERE, MSFT, Wikipedia</text>
</g>
<circle cx="347.2" cy="26.5" r="2.4" fill="#fff" stroke="#7f7f7f" stroke-width="0.8"/>
<circle cx="542.5" cy="26.5" r="2.4" fill="#fff" stroke="#7f7f7f" stroke-width="0.8"/>
<circle cx="737.7" cy="26.5" r="2.4" fill="#fff" stroke="#7f7f7f" stroke-width="0.8"/>
<circle cx="347.2" cy="229.8" r="2.4" fill="#fff" stroke="#7f7f7f" stroke-width="0.8"/>
<circle cx="737.7" cy="229.8" r="2.4" fill="#fff" stroke="#7f7f7f" stroke-width="0.8"/>
<circle cx="347.2" cy="433.2" r="2.4" fill="#fff" stroke="#7f7f7f" stroke-width="0.8"/>
<circle cx="542.5" cy="433.2" r="2.4" fill="#fff" stroke="#7f7f7f" stroke-width="0.8"/>
<circle cx="737.7" cy="433.2" r="2.4" fill="#fff" stroke="#7f7f7f" stroke-width="0.8"/>
<rect x="744.7" y="25.6" width="14.5" height="14.6" fill="#fff" stroke="#c8c8c8" stroke-width="0.8"/>
<path d="M746.1 32.6H756.8M751.4 27.2V37.9" stroke="#55b97c" stroke-width="0.8" fill="none"/>
<rect x="744.7" y="45.2" width="14.5" height="14.3" fill="#fff" stroke="#c8c8c8" stroke-width="0.8"/>
<path d="M757.6 47.6L752.0 53.6" stroke="#7a7a7a" stroke-width="1.5" fill="none" stroke-linecap="round"/>
<path d="M757.5 47.7L752.6 53.0" stroke="#f2f2f2" stroke-width="0.5" fill="none"/>
<path d="M752.6 54.0c0.3 1.6-1.2 3.2-3.3 3.2c-1.4 0-2.4-0.3-3.2-0.9c1.3-0.2 1.7-0.8 2.2-1.8c0.5-1 1.5-1.9 2.8-1.8z" fill="#3a86d8"/>
</svg>
</body></html>
